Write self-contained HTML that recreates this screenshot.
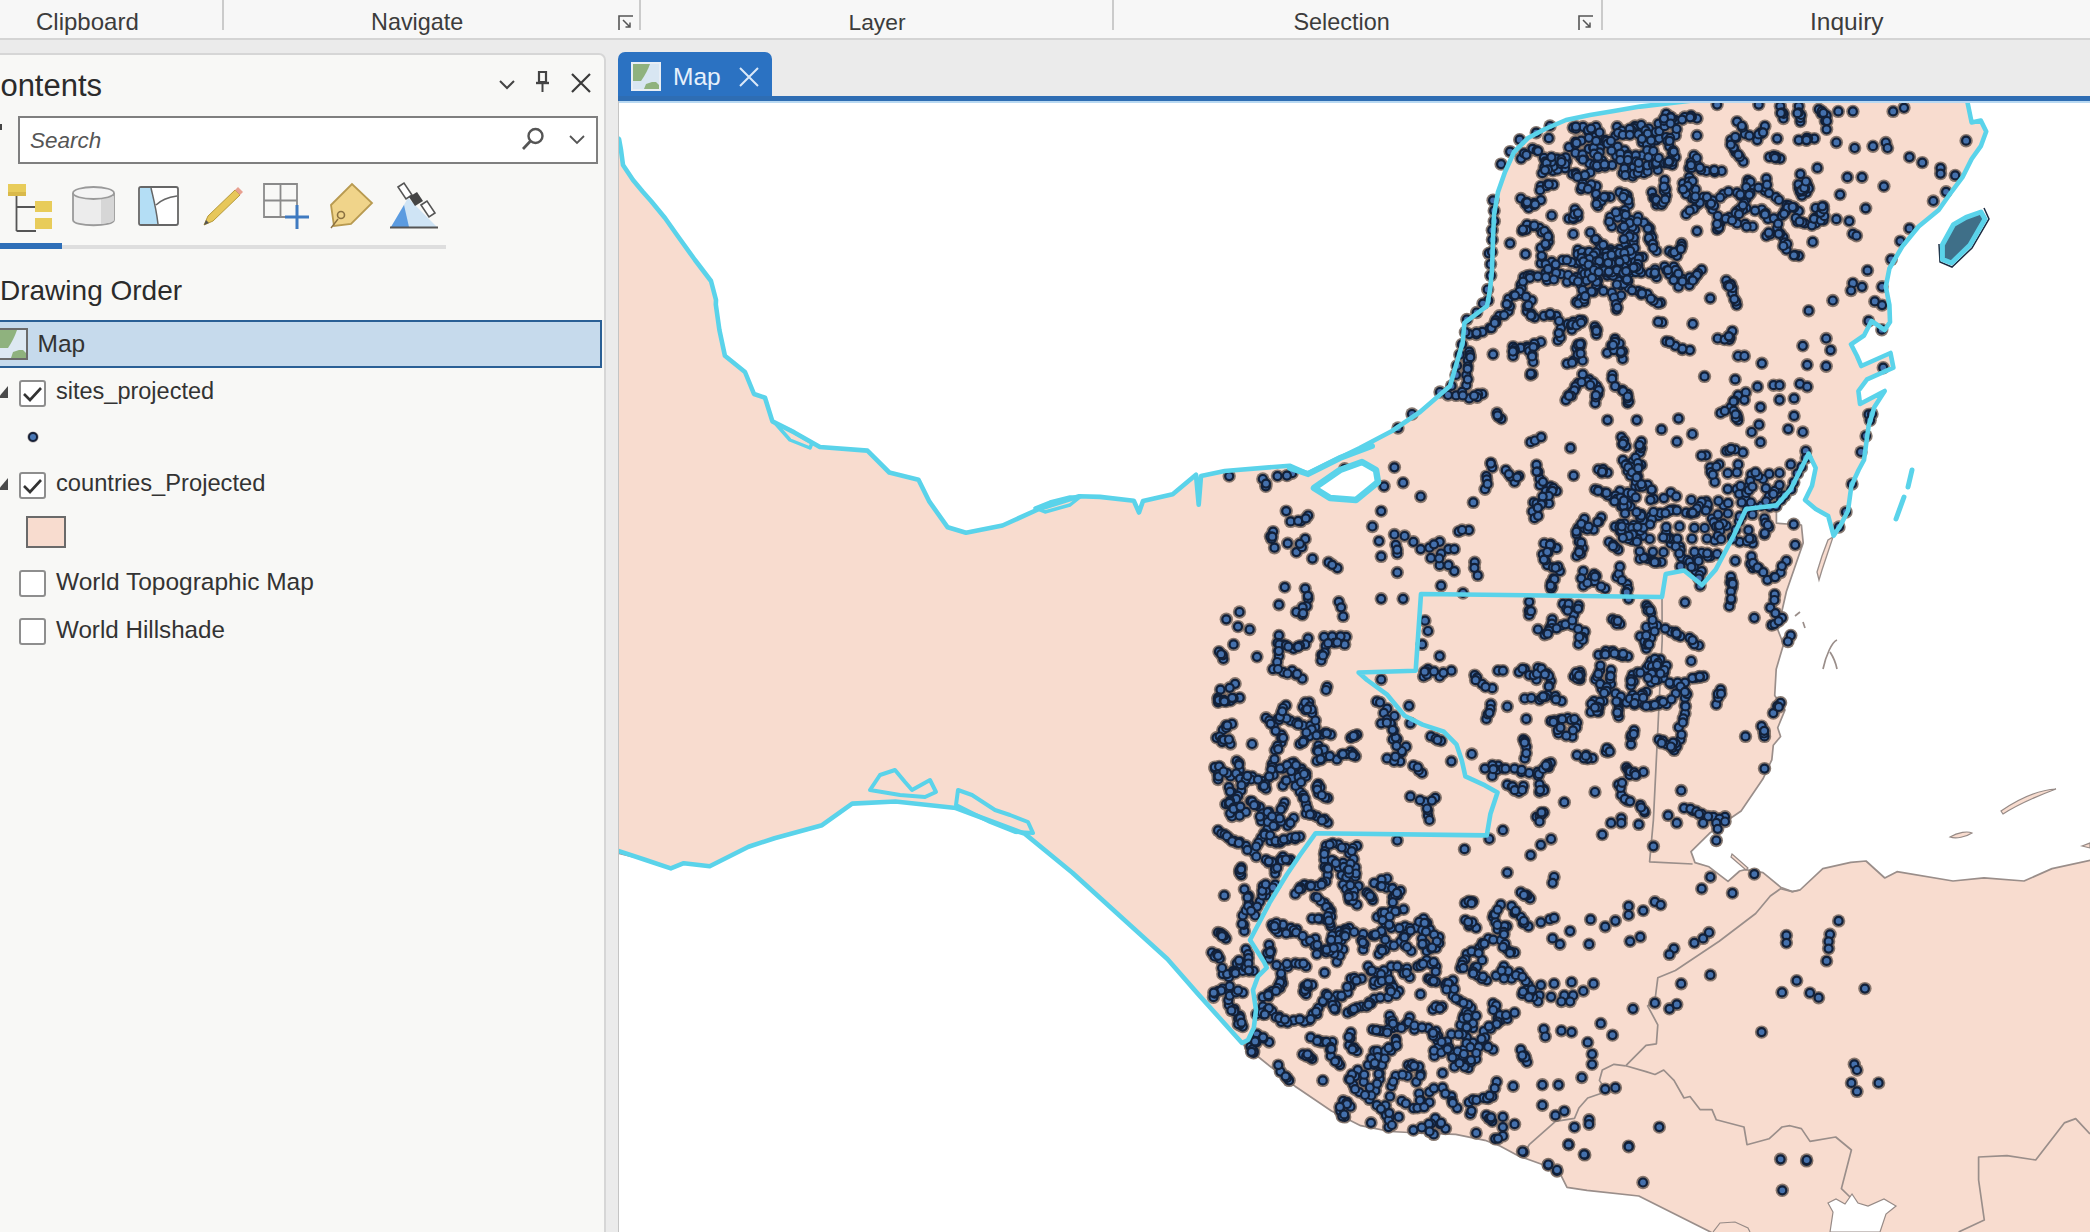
<!DOCTYPE html>
<html><head><meta charset="utf-8">
<style>
*{margin:0;padding:0;box-sizing:border-box}
html,body{width:2090px;height:1232px;overflow:hidden;background:#ebebeb;font-family:"Liberation Sans",sans-serif;color:#333}
#ribbon{position:absolute;left:0;top:0;width:2090px;height:40px;background:#f7f7f7;border-bottom:2px solid #d4d4d4}
.t{position:absolute;white-space:nowrap;line-height:1}
.rl{color:#3c3c3c}
.sep{position:absolute;top:0;width:2px;height:30px;background:#cbcbcb}
#panel{position:absolute;left:-10px;top:53px;width:616px;height:1200px;background:#f8f8f6;border:2px solid #d6d6d6;border-radius:0 7px 0 0}
#maparea{position:absolute;left:618px;top:101px;width:1472px;height:1131px;background:#fff;border-left:1px solid #c4c4c4}
.cb{position:absolute;left:19px;width:27px;height:27px;border:2px solid #8e8e8e;border-radius:3px;background:#fff}
</style></head><body>
<div id="ribbon">
  <div class="t rl" style="left:36px;top:10px;font-size:24px">Clipboard</div>
  <div class="sep" style="left:222px"></div>
  <div class="t rl" style="left:371px;top:10.5px;font-size:23.4px">Navigate</div>
  <svg style="position:absolute;left:618px;top:15px" width="17" height="16" viewBox="0 0 17 16"><path d="M1,15 V1 H15" fill="none" stroke="#555" stroke-width="1.6"/><path d="M5,5 L12,12 M7.5,12 H12 V7.5" fill="none" stroke="#555" stroke-width="1.5"/></svg>
  <div class="sep" style="left:639px"></div>
  <div class="t rl" style="left:848.5px;top:11px;font-size:22.8px">Layer</div>
  <div class="sep" style="left:1112px"></div>
  <div class="t rl" style="left:1293.5px;top:10.5px;font-size:23.4px">Selection</div>
  <svg style="position:absolute;left:1578px;top:15px" width="17" height="16" viewBox="0 0 17 16"><path d="M1,15 V1 H15" fill="none" stroke="#555" stroke-width="1.6"/><path d="M5,5 L12,12 M7.5,12 H12 V7.5" fill="none" stroke="#555" stroke-width="1.5"/></svg>
  <div class="sep" style="left:1601px"></div>
  <div class="t rl" style="left:1810px;top:10px;font-size:24.5px">Inquiry</div>
</div>
<div id="panel"></div>
<div class="t" style="left:-22px;top:70px;font-size:31px;color:#2b2b2b">Contents</div>
<!-- header icons -->
<svg style="position:absolute;left:496px;top:76px" width="22" height="16" viewBox="0 0 22 16"><path d="M4,5 L11,12 L18,5" fill="none" stroke="#444" stroke-width="2"/></svg>
<svg style="position:absolute;left:533px;top:70px" width="20" height="24" viewBox="0 0 20 24"><path d="M6,2 H13 V12 H6 Z" fill="none" stroke="#444" stroke-width="2.2"/><path d="M3,13 H16" stroke="#444" stroke-width="2.4"/><path d="M9.5,13 V22" stroke="#444" stroke-width="2"/></svg>
<svg style="position:absolute;left:569px;top:71px" width="24" height="24" viewBox="0 0 24 24"><path d="M3,3 L21,21 M21,3 L3,21" fill="none" stroke="#3a3a3a" stroke-width="2.2"/></svg>
<!-- search -->
<div style="position:absolute;left:18px;top:116px;width:580px;height:48px;border:2px solid #7f7f7f;background:#fff"></div>
<div class="t" style="left:30px;top:130px;font-size:22.5px;font-style:italic;color:#555">Search</div>
<svg style="position:absolute;left:520px;top:126px" width="28" height="28" viewBox="0 0 28 28"><circle cx="15.5" cy="10" r="7" fill="none" stroke="#555" stroke-width="2.4"/><path d="M10.5,15 L3,23" stroke="#555" stroke-width="2.8"/></svg>
<svg style="position:absolute;left:566px;top:130px" width="22" height="18" viewBox="0 0 22 18"><path d="M4,6 L11,13 L18,6" fill="none" stroke="#555" stroke-width="1.8"/></svg>
<div style="position:absolute;left:-4px;top:124px;width:6px;height:6px;background:#444"></div>
<!-- toolbar icons -->
<svg style="position:absolute;left:0px;top:178px" width="460" height="56" viewBox="0 178 460 56">
  <!-- tree icon -->
  <rect x="8" y="184" width="18" height="8" fill="#e8cc5a"/><rect x="8" y="192" width="18" height="4" fill="#d9b94a"/>
  <path d="M16.5,196 V231 M16.5,207 H36 M16.5,231 H36" fill="none" stroke="#555" stroke-width="1.8"/>
  <rect x="35" y="201" width="17" height="11" fill="#e8cc5a"/><rect x="35" y="218" width="17" height="11" fill="#e8cc5a"/>
  <!-- cylinder -->
  <path d="M73,193 V220 C73,227 114,227 114,220 V193" fill="#ececec" stroke="#9a9a9a" stroke-width="1.8"/>
  <path d="M101,199 V224 C108,223 114,222 114,220 V196 Z" fill="#d6d6d6"/>
  <ellipse cx="93.5" cy="193" rx="20.5" ry="6" fill="#f4f4f4" stroke="#9a9a9a" stroke-width="1.8"/>
  <!-- map square -->
  <rect x="139" y="187" width="39" height="38" rx="2" fill="#fff" stroke="#666" stroke-width="1.8"/>
  <path d="M140,188 H151 C153,197 156,207 158,224 H140 Z" fill="#b4def5"/>
  <path d="M151,188 C153,197 156,207 158,224 M156,205 C162,199 170,197 177,196" fill="none" stroke="#666" stroke-width="1.5"/>
  <!-- pencil -->
  <path d="M204,225 L208,216 L235,190 L240,195 L213,221 Z" fill="#e7c75a" stroke="#b59a3c" stroke-width="1"/>
  <path d="M235,190 L238,187 L243,192 L240,195 Z" fill="#e8a090"/>
  <path d="M204,225 L206,220 L209,223 Z" fill="#555"/>
  <!-- grid plus -->
  <path d="M264,184 H297 V217 H264 Z M264,200.5 H297 M280.5,184 V217" fill="none" stroke="#8a8a8a" stroke-width="1.8"/>
  <path d="M297,205 V229 M285,217 H309" fill="none" stroke="#3f7ac0" stroke-width="3"/>
  <!-- tag -->
  <path d="M331,205 L352,184 L372,203 L351,224 L334,226 Z" fill="#f0d48a" stroke="#b89a50" stroke-width="1.8"/>
  <circle cx="341" cy="215" r="3.5" fill="none" stroke="#8a7040" stroke-width="1.6"/>
  <path d="M338,219 L331,228" stroke="#8a7040" stroke-width="1.4"/>
  <!-- satellite -->
  <path d="M391,227 L408,198 L437,227 Z" fill="#cfe4f5"/>
  <path d="M391,227 L404,205 L409,227 Z" fill="#5b9be0"/>
  <path d="M390,227.5 H438" stroke="#555" stroke-width="1.8"/>
  <path d="M398,187 L404,183 L412,195 L406,199 Z" fill="#fff" stroke="#555" stroke-width="1.6"/>
  <path d="M409,197 L417,192 L423,201 L415,206 Z" fill="#444"/>
  <path d="M421,205 L427,201 L435,213 L429,217 Z" fill="#fff" stroke="#555" stroke-width="1.6"/>
</svg>
<div style="position:absolute;left:0;top:245px;width:446px;height:4px;background:#dedede"></div>
<div style="position:absolute;left:0;top:243px;width:62px;height:6px;background:#2e6fb8"></div>
<div class="t" style="left:0px;top:277px;font-size:28px;color:#2b2b2b">Drawing Order</div>
<!-- Map row -->
<div style="position:absolute;left:-4px;top:320px;width:606px;height:48px;background:#c6daec;border:2px solid #2a5f95"></div>
<svg style="position:absolute;left:-3px;top:328px" width="32" height="32" viewBox="0 0 32 32"><rect x="1" y="1" width="29" height="30" fill="#dde8f2" stroke="#6b6b6b" stroke-width="2"/><path d="M2,2 H20 C18,8 15,14 11,20 H2 Z" fill="#8fb27e"/><path d="M16,24 L22,22 L26,22 L29,25 V30 H14 Z" fill="#8fb27e"/></svg>
<div class="t" style="left:37.5px;top:331.5px;font-size:24.5px">Map</div>
<!-- sites -->
<svg style="position:absolute;left:0px;top:386px" width="9" height="12" viewBox="0 0 9 12"><path d="M8,0 V12 H-2 Z" fill="#4a4a4a"/></svg>
<div class="cb" style="top:380px"></div>
<svg style="position:absolute;left:19px;top:380px" width="27" height="27" viewBox="0 0 27 27"><path d="M5,14 L11,20 L22,8" fill="none" stroke="#333" stroke-width="2.6"/></svg>
<div class="t" style="left:56px;top:379.5px;font-size:23.5px">sites_projected</div>
<svg style="position:absolute;left:24px;top:428px" width="18" height="18" viewBox="0 0 18 18"><circle cx="9" cy="9" r="5.6" fill="#857670" fill-opacity="0.7"/><circle cx="9" cy="9" r="4" fill="#4a78b6" stroke="#15213a" stroke-width="2"/></svg>
<!-- countries -->
<svg style="position:absolute;left:0px;top:478px" width="9" height="12" viewBox="0 0 9 12"><path d="M8,0 V12 H-2 Z" fill="#4a4a4a"/></svg>
<div class="cb" style="top:472px"></div>
<svg style="position:absolute;left:19px;top:472px" width="27" height="27" viewBox="0 0 27 27"><path d="M5,14 L11,20 L22,8" fill="none" stroke="#333" stroke-width="2.6"/></svg>
<div class="t" style="left:56px;top:472px;font-size:23.7px">countries_Projected</div>
<div style="position:absolute;left:26px;top:516px;width:40px;height:32px;background:#f8dccf;border:2px solid #6a6a6a"></div>
<!-- topo -->
<div class="cb" style="top:570px"></div>
<div class="t" style="left:56px;top:570.3px;font-size:24.5px">World Topographic Map</div>
<div class="cb" style="top:618px"></div>
<div class="t" style="left:56px;top:618px;font-size:24.2px">World Hillshade</div>
<!-- tab -->
<div style="position:absolute;left:618px;top:52px;width:154px;height:46px;background:#2b72c2;border-radius:7px 7px 0 0"></div>
<div style="position:absolute;left:618px;top:96px;width:1472px;height:5px;background:#2e6db3"></div><div style="position:absolute;left:619px;top:101px;width:1471px;height:2px;background:#b9d9f2;z-index:5"></div>
<svg style="position:absolute;left:631px;top:62px" width="30" height="29" viewBox="0 0 30 29"><rect x="1" y="1" width="28" height="27" fill="#d8e6f2" stroke="#e8eef5" stroke-width="2"/><path d="M2,2 H19 C17,8 14,13 10,19 H2 Z" fill="#8fb27e"/><path d="M15,22 L21,20 L25,20 L28,23 V27 H13 Z" fill="#8fb27e"/></svg>
<div class="t" style="left:673px;top:65px;font-size:24.5px;color:#e6f0fb">Map</div>
<svg style="position:absolute;left:738px;top:66px" width="22" height="22" viewBox="0 0 22 22"><path d="M2,2 L20,20 M20,2 L2,20" fill="none" stroke="#dbe9f8" stroke-width="2"/></svg>
<div id="maparea"></div>
<svg id="map" width="1471" height="1131" viewBox="619 101 1471 1131" style="position:absolute;left:619px;top:101px">
<rect x="619" y="101" width="1471" height="1131" fill="#f8dccf"/>
<path d="M610.0,90.0 L612.0,135.0 L619.0,139.0 L621.0,150.0 L623.0,165.0 L633.0,180.0 L643.0,192.0 L651.0,201.0 L665.0,218.0 L677.0,235.0 L695.0,260.0 L711.0,281.0 L716.0,300.0 L715.8,304.5 L719.4,330.0 L724.9,355.7 L745.0,372.0 L754.0,394.0 L765.0,397.7 L772.4,421.4 L794.3,432.4 L819.9,447.0 L867.4,450.6 L889.3,472.5 L918.5,479.8 L929.4,501.7 L947.7,527.3 L966.0,532.8 L1002.5,525.5 L1039.0,509.0 L1079.2,496.3 L1100.0,496.9 L1133.8,500.8 L1139.0,512.5 L1143.0,501.0 L1172.7,494.3 L1196.0,474.8 L1198.7,504.7 L1201.0,476.0 L1224.7,471.0 L1289.6,465.7 L1307.8,473.5 L1335.0,460.0 L1359.7,448.0 L1392.0,431.0 L1420.0,412.0 L1450.0,386.0 L1462.7,342.6 L1464.4,322.8 L1487.0,306.0 L1490.0,290.0 L1492.0,270.0 L1493.0,240.0 L1494.0,215.0 L1498.0,192.0 L1505.0,172.0 L1514.0,152.0 L1528.0,138.0 L1545.0,129.0 L1566.0,120.0 L1590.0,115.0 L1614.0,111.0 L1640.0,106.6 L1697.0,100.0 L1697.0,90.0 Z" fill="#fff" stroke="#9a8e8a" stroke-width="1.7" stroke-linejoin="round"/>
<path d="M1966.0,90.0 L1971.6,122.4 L1980.8,120.6 L1986.2,131.5 L1980.8,146.2 L1971.6,159.0 L1962.5,177.2 L1951.5,191.8 L1938.7,210.0 L1918.6,226.5 L1902.2,246.6 L1889.4,268.5 L1885.8,286.8 L1889.4,305.0 L1890.0,322.0 L1884.7,330.0 L1871.5,321.0 L1864.0,335.5 L1851.0,344.3 L1857.0,356.0 L1861.3,366.0 L1890.5,353.0 L1893.4,367.7 L1867.0,379.4 L1858.4,391.0 L1860.0,404.0 L1884.7,391.0 L1874.4,407.0 L1868.6,426.0 L1864.0,460.0 L1858.6,470.0 L1851.4,485.7 L1848.0,510.7 L1840.7,525.0 L1833.6,535.7 L1828.2,516.0 L1815.7,509.0 L1805.0,500.0 L1812.0,485.7 L1815.7,467.9 L1808.6,453.6 L1790.7,489.3 L1776.4,505.4 L1776.4,523.2 L1801.4,525.0 L1803.2,542.9 L1796.6,562.0 L1786.4,591.5 L1777.7,629.5 L1783.5,644.4 L1776.2,669.2 L1774.7,695.5 L1785.0,710.0 L1777.7,727.7 L1780.6,736.5 L1773.3,745.2 L1771.8,759.8 L1763.0,778.8 L1741.1,811.0 L1728.0,820.0 L1709.5,833.3 L1691.0,851.6 L1695.0,862.6 L1709.0,866.8 L1728.0,881.4 L1739.7,871.0 L1745.5,869.7 L1763.0,872.6 L1780.6,887.2 L1792.3,891.6 L1800.0,890.0 L1822.8,868.6 L1850.7,862.4 L1866.0,861.0 L1884.8,878.0 L1897.0,871.7 L1953.0,881.0 L1984.0,877.9 L2024.0,881.0 L2052.0,868.6 L2095.0,859.3 L2100.0,859.3 L2100.0,90.0 Z" fill="#fff" stroke="#9a8e8a" stroke-width="1.7" stroke-linejoin="round"/>
<path d="M610.0,851.1 L645.0,859.8 L670.8,868.4 L683.8,863.2 L709.7,866.3 L748.5,846.8 L774.5,838.2 L822.0,825.2 L852.2,803.6 L895.4,801.5 L955.8,808.0 L1025.0,833.9 L1072.4,872.7 L1120.0,916.0 L1167.4,959.0 L1197.7,993.6 L1240.8,1041.1 L1240.8,1041.1 L1242.4,1043.8 L1258.5,1057.0 L1295.0,1086.2 L1331.5,1111.0 L1360.7,1125.7 L1390.0,1131.5 L1419.2,1133.0 L1455.7,1134.4 L1485.0,1140.3 L1500.0,1146.0 L1518.2,1155.8 L1558.4,1170.2 L1567.0,1187.4 L1587.0,1190.3 L1638.8,1196.0 L1673.2,1213.3 L1710.6,1232.0 L1720.0,1240.0 L1720.0,1245.0 L610.0,1245.0 Z" fill="#fff" stroke="#9a8e8a" stroke-width="1.7" stroke-linejoin="round"/>
<path d="M1662.0,597.0 L1662.2,640.0 L1653.4,820.0 L1649.6,861.8 L1692.6,864.0" fill="none" stroke="#9a8e8a" stroke-width="1.7" stroke-linejoin="round"/>
<path d="M1800.0,890.0 L1792.3,891.6 L1780.6,888.7 L1770.3,896.0 L1755.7,913.5 L1719.2,941.3 L1675.4,970.5 L1657.8,977.8 L1655.0,1000.0 L1647.6,1005.8 L1657.8,1024.8 L1656.4,1043.8 L1646.0,1045.3 L1628.6,1062.8 L1625.7,1065.8" fill="none" stroke="#9a8e8a" stroke-width="1.7" stroke-linejoin="round"/>
<path d="M1625.7,1065.8 L1614.0,1064.3 L1602.3,1070.0 L1599.4,1080.4 L1602.3,1084.8 L1600.8,1093.5 L1587.7,1098.0 L1578.9,1108.0 L1574.5,1118.4 L1555.5,1121.3 L1529.2,1144.7 L1523.5,1154.2" fill="none" stroke="#9a8e8a" stroke-width="1.7" stroke-linejoin="round"/>
<path d="M1625.7,1065.8 L1646.0,1071.6 L1655.0,1074.5 L1663.7,1070.0 L1674.0,1080.4 L1684.0,1098.0 L1690.0,1096.5 L1700.0,1109.6 L1712.0,1109.6 L1716.3,1119.8 L1744.0,1127.0 L1747.0,1144.7 L1769.0,1138.8 L1782.0,1127.0 L1790.0,1125.7 L1801.4,1128.6 L1810.0,1141.4 L1835.7,1137.0 L1851.4,1150.0 L1841.4,1188.6 L1850.0,1197.0" fill="none" stroke="#9a8e8a" stroke-width="1.7" stroke-linejoin="round"/>
<path d="M2090.0,1134.0 L2075.7,1118.6 L2064.3,1122.9 L2035.7,1160.0 L2007.0,1155.7 L1978.6,1157.0 L1978.6,1180.0 L1984.3,1220.0 L1958.6,1232.0" fill="none" stroke="#9a8e8a" stroke-width="1.7" stroke-linejoin="round"/>
<path d="M1830,1232 L1833,1212 L1828,1203 L1836,1199 L1845,1204 L1852,1194 L1858,1203 L1868,1206 L1884,1199 L1896,1206 L1886,1214 L1880,1232 Z" fill="#fff" stroke="#968a86" stroke-width="1.2"/>
<path d="M1713,1232 L1720,1223 L1735,1222 L1748,1228 L1750,1232" fill="#f8dccf" stroke="#968a86" stroke-width="1.2"/>
<path d="M2001,811 C2020,798 2040,790 2056,789 C2040,795 2020,803 2003,814 Z" fill="#f8dccf" stroke="#968a86" stroke-width="1.2"/>
<path d="M1950,837 C1958,832 1968,831 1972,833 C1966,837 1956,839 1950,837 Z" fill="#f8dccf" stroke="#968a86" stroke-width="1.2"/>
<path d="M2082,846 L2090,843 L2090,848 Z" fill="#f8dccf" stroke="#968a86" stroke-width="1.2"/>
<path d="M1795,616 L1800,612 M1805,628 L1803,622 M1837,640 C1832,642 1826,655 1823,669 M1830,652 C1834,658 1836,664 1837,669" fill="none" stroke="#9a8e8a" stroke-width="1.7"/>
<path d="M1833,537 L1828,552 L1822,570 L1819,580 L1817,572 L1822,556 L1828,540 Z" fill="#f8dccf" stroke="#9a8e8a" stroke-width="1.3"/>
<path d="M1732,854 L1748,868 L1746,870 L1731,857 Z" fill="#f8dccf" stroke="#968a86" stroke-width="1.2"/>
<path d="M1984,208 L1989,219 L1972,248 L1952,267 L1940,262 L1939,244" fill="none" stroke="#1a2a40" stroke-width="1.5"/>
<path d="M1955,238 L1968,230 L1960,252 Z" fill="#1e2f48"/>
</svg>
<svg width="1471" height="1131" viewBox="619 101 1471 1131" style="position:absolute;left:619px;top:101px"><g fill="#7a6a62" fill-opacity="0.9"><circle cx="1488.8" cy="253.4" r="6.7"/><circle cx="1732.3" cy="293.2" r="6.7"/><circle cx="1660.7" cy="302.7" r="6.7"/><circle cx="1710.3" cy="298.3" r="6.7"/><circle cx="1736.7" cy="304.8" r="6.7"/><circle cx="1488.2" cy="300.5" r="6.7"/><circle cx="1662.1" cy="322.4" r="6.7"/><circle cx="1692.8" cy="323.8" r="6.7"/><circle cx="1489.7" cy="328.2" r="6.7"/><circle cx="1482.4" cy="331.9" r="6.7"/><circle cx="1469.2" cy="334.1" r="6.7"/><circle cx="1469.2" cy="351.6" r="6.7"/><circle cx="1467.8" cy="360.4" r="6.7"/><circle cx="1666.5" cy="341.4" r="6.7"/><circle cx="1675.3" cy="345.8" r="6.7"/><circle cx="1689.9" cy="350.1" r="6.7"/><circle cx="1717.7" cy="338.5" r="6.7"/><circle cx="1729.3" cy="339.9" r="6.7"/><circle cx="1732.3" cy="331.1" r="6.7"/><circle cx="1530.6" cy="375.0" r="6.7"/><circle cx="1612.4" cy="375.0" r="6.7"/><circle cx="1589.1" cy="379.4" r="6.7"/><circle cx="1704.5" cy="376.4" r="6.7"/><circle cx="1735.2" cy="379.4" r="6.7"/><circle cx="1466.3" cy="375.0" r="6.7"/><circle cx="1738.1" cy="356.0" r="6.7"/><circle cx="1466.3" cy="385.2" r="6.7"/><circle cx="1456.1" cy="395.4" r="6.7"/><circle cx="1469.2" cy="398.4" r="6.7"/><circle cx="1482.4" cy="394.0" r="6.7"/><circle cx="1720.6" cy="413.0" r="6.7"/><circle cx="1730.8" cy="407.1" r="6.7"/><circle cx="1736.7" cy="414.4" r="6.7"/><circle cx="1738.1" cy="395.4" r="6.7"/><circle cx="1497.0" cy="413.0" r="6.7"/><circle cx="1501.4" cy="418.8" r="6.7"/><circle cx="1530.6" cy="442.2" r="6.7"/><circle cx="1706.0" cy="455.4" r="6.7"/><circle cx="1726.4" cy="451.0" r="6.7"/><circle cx="1735.2" cy="449.5" r="6.7"/><circle cx="1738.1" cy="420.3" r="6.7"/><circle cx="1736.0" cy="301.6" r="6.7"/><circle cx="1734.3" cy="299.1" r="6.7"/><circle cx="1476.4" cy="334.5" r="6.7"/><circle cx="1476.5" cy="332.8" r="6.7"/><circle cx="1470.0" cy="354.7" r="6.7"/><circle cx="1470.3" cy="357.2" r="6.7"/><circle cx="1467.7" cy="366.3" r="6.7"/><circle cx="1669.7" cy="341.9" r="6.7"/><circle cx="1669.8" cy="342.4" r="6.7"/><circle cx="1682.3" cy="349.5" r="6.7"/><circle cx="1682.4" cy="348.7" r="6.7"/><circle cx="1724.6" cy="339.6" r="6.7"/><circle cx="1730.4" cy="337.7" r="6.7"/><circle cx="1728.8" cy="336.3" r="6.7"/><circle cx="1728.9" cy="336.3" r="6.7"/><circle cx="1582.7" cy="374.3" r="6.7"/><circle cx="1532.3" cy="374.1" r="6.7"/><circle cx="1530.8" cy="373.6" r="6.7"/><circle cx="1612.2" cy="378.7" r="6.7"/><circle cx="1467.6" cy="368.8" r="6.7"/><circle cx="1467.8" cy="379.3" r="6.7"/><circle cx="1462.1" cy="391.9" r="6.7"/><circle cx="1462.8" cy="395.4" r="6.7"/><circle cx="1478.1" cy="394.2" r="6.7"/><circle cx="1477.2" cy="397.2" r="6.7"/><circle cx="1474.1" cy="395.7" r="6.7"/><circle cx="1724.8" cy="410.9" r="6.7"/><circle cx="1733.6" cy="410.6" r="6.7"/><circle cx="1737.8" cy="417.0" r="6.7"/><circle cx="1734.6" cy="400.6" r="6.7"/><circle cx="1733.5" cy="401.4" r="6.7"/><circle cx="1498.5" cy="416.8" r="6.7"/><circle cx="1497.5" cy="415.3" r="6.7"/><circle cx="1534.9" cy="440.5" r="6.7"/><circle cx="1731.1" cy="449.0" r="6.7"/><circle cx="1729.2" cy="450.7" r="6.7"/><circle cx="1731.1" cy="448.8" r="6.7"/><circle cx="1735.9" cy="418.1" r="6.7"/><circle cx="1735.6" cy="414.4" r="6.7"/><circle cx="1808.7" cy="310.7" r="6.7"/><circle cx="1868.6" cy="320.9" r="6.7"/><circle cx="1826.2" cy="338.5" r="6.7"/><circle cx="1830.6" cy="350.1" r="6.7"/><circle cx="1802.8" cy="345.8" r="6.7"/><circle cx="1807.2" cy="364.8" r="6.7"/><circle cx="1826.2" cy="366.2" r="6.7"/><circle cx="1744.4" cy="356.0" r="6.7"/><circle cx="1761.9" cy="363.3" r="6.7"/><circle cx="1757.5" cy="386.7" r="6.7"/><circle cx="1773.6" cy="385.2" r="6.7"/><circle cx="1779.5" cy="385.2" r="6.7"/><circle cx="1799.9" cy="383.8" r="6.7"/><circle cx="1807.2" cy="386.7" r="6.7"/><circle cx="1745.8" cy="392.5" r="6.7"/><circle cx="1744.4" cy="399.8" r="6.7"/><circle cx="1760.5" cy="407.1" r="6.7"/><circle cx="1779.5" cy="399.8" r="6.7"/><circle cx="1794.1" cy="398.4" r="6.7"/><circle cx="1794.1" cy="415.9" r="6.7"/><circle cx="1788.2" cy="429.1" r="6.7"/><circle cx="1802.8" cy="432.0" r="6.7"/><circle cx="1751.7" cy="432.0" r="6.7"/><circle cx="1759.0" cy="424.7" r="6.7"/><circle cx="1760.5" cy="442.2" r="6.7"/><circle cx="1742.9" cy="452.4" r="6.7"/><circle cx="1805.8" cy="451.0" r="6.7"/><circle cx="1883.2" cy="367.7" r="6.7"/><circle cx="1881.8" cy="329.7" r="6.7"/><circle cx="1868.6" cy="414.4" r="6.7"/><circle cx="1870.1" cy="420.3" r="6.7"/><circle cx="1229.2" cy="476.1" r="6.7"/><circle cx="1262.8" cy="479.0" r="6.7"/><circle cx="1265.8" cy="486.3" r="6.7"/><circle cx="1277.5" cy="476.1" r="6.7"/><circle cx="1292.1" cy="473.2" r="6.7"/><circle cx="1286.2" cy="511.1" r="6.7"/><circle cx="1290.6" cy="521.4" r="6.7"/><circle cx="1300.8" cy="521.4" r="6.7"/><circle cx="1308.1" cy="515.5" r="6.7"/><circle cx="1344.7" cy="468.8" r="6.7"/><circle cx="1354.9" cy="479.0" r="6.7"/><circle cx="1394.4" cy="467.3" r="6.7"/><circle cx="1403.1" cy="482.7" r="6.7"/><circle cx="1384.1" cy="486.3" r="6.7"/><circle cx="1420.7" cy="496.5" r="6.7"/><circle cx="1381.2" cy="511.1" r="6.7"/><circle cx="1473.3" cy="502.4" r="6.7"/><circle cx="1485.0" cy="489.2" r="6.7"/><circle cx="1486.4" cy="476.1" r="6.7"/><circle cx="1492.3" cy="467.3" r="6.7"/><circle cx="1490.8" cy="462.9" r="6.7"/><circle cx="1273.1" cy="531.6" r="6.7"/><circle cx="1271.6" cy="538.9" r="6.7"/><circle cx="1274.5" cy="547.7" r="6.7"/><circle cx="1287.7" cy="543.3" r="6.7"/><circle cx="1305.2" cy="538.9" r="6.7"/><circle cx="1296.4" cy="552.1" r="6.7"/><circle cx="1312.5" cy="558.6" r="6.7"/><circle cx="1328.6" cy="562.3" r="6.7"/><circle cx="1337.4" cy="568.1" r="6.7"/><circle cx="1372.4" cy="526.5" r="6.7"/><circle cx="1379.0" cy="541.1" r="6.7"/><circle cx="1381.2" cy="556.4" r="6.7"/><circle cx="1394.4" cy="534.5" r="6.7"/><circle cx="1404.6" cy="536.0" r="6.7"/><circle cx="1395.8" cy="544.8" r="6.7"/><circle cx="1397.3" cy="553.5" r="6.7"/><circle cx="1413.4" cy="541.8" r="6.7"/><circle cx="1420.7" cy="549.1" r="6.7"/><circle cx="1429.4" cy="547.7" r="6.7"/><circle cx="1430.9" cy="557.9" r="6.7"/><circle cx="1439.7" cy="541.8" r="6.7"/><circle cx="1441.1" cy="553.5" r="6.7"/><circle cx="1448.4" cy="549.1" r="6.7"/><circle cx="1454.3" cy="549.1" r="6.7"/><circle cx="1439.7" cy="565.2" r="6.7"/><circle cx="1448.4" cy="565.2" r="6.7"/><circle cx="1454.3" cy="571.1" r="6.7"/><circle cx="1458.7" cy="531.6" r="6.7"/><circle cx="1468.9" cy="530.1" r="6.7"/><circle cx="1474.7" cy="562.3" r="6.7"/><circle cx="1477.7" cy="575.4" r="6.7"/><circle cx="1397.3" cy="572.5" r="6.7"/><circle cx="1441.1" cy="585.7" r="6.7"/><circle cx="1463.0" cy="593.0" r="6.7"/><circle cx="1284.8" cy="587.1" r="6.7"/><circle cx="1305.2" cy="588.6" r="6.7"/><circle cx="1308.1" cy="598.8" r="6.7"/><circle cx="1306.7" cy="606.1" r="6.7"/><circle cx="1296.4" cy="612.0" r="6.7"/><circle cx="1302.3" cy="614.9" r="6.7"/><circle cx="1278.9" cy="604.7" r="6.7"/><circle cx="1338.8" cy="601.8" r="6.7"/><circle cx="1343.2" cy="616.4" r="6.7"/><circle cx="1381.2" cy="598.8" r="6.7"/><circle cx="1403.1" cy="598.8" r="6.7"/><circle cx="1239.5" cy="612.0" r="6.7"/><circle cx="1226.3" cy="619.3" r="6.7"/><circle cx="1238.0" cy="626.6" r="6.7"/><circle cx="1249.7" cy="629.5" r="6.7"/><circle cx="1278.9" cy="635.4" r="6.7"/><circle cx="1308.1" cy="638.3" r="6.7"/><circle cx="1324.2" cy="636.8" r="6.7"/><circle cx="1337.4" cy="638.3" r="6.7"/><circle cx="1346.1" cy="636.8" r="6.7"/><circle cx="1425.0" cy="620.7" r="6.7"/><circle cx="1428.0" cy="631.0" r="6.7"/><circle cx="1266.0" cy="483.6" r="6.7"/><circle cx="1286.9" cy="475.6" r="6.7"/><circle cx="1298.2" cy="520.9" r="6.7"/><circle cx="1305.8" cy="518.4" r="6.7"/><circle cx="1486.7" cy="479.3" r="6.7"/><circle cx="1487.5" cy="483.9" r="6.7"/><circle cx="1490.9" cy="463.6" r="6.7"/><circle cx="1270.4" cy="536.4" r="6.7"/><circle cx="1272.3" cy="536.7" r="6.7"/><circle cx="1301.9" cy="547.2" r="6.7"/><circle cx="1299.9" cy="543.8" r="6.7"/><circle cx="1332.2" cy="564.8" r="6.7"/><circle cx="1397.2" cy="549.7" r="6.7"/><circle cx="1434.0" cy="544.3" r="6.7"/><circle cx="1439.2" cy="558.3" r="6.7"/><circle cx="1462.1" cy="530.0" r="6.7"/><circle cx="1474.4" cy="567.8" r="6.7"/><circle cx="1307.9" cy="595.8" r="6.7"/><circle cx="1302.7" cy="607.3" r="6.7"/><circle cx="1303.1" cy="613.2" r="6.7"/><circle cx="1341.1" cy="607.3" r="6.7"/><circle cx="1332.2" cy="636.4" r="6.7"/><circle cx="1340.6" cy="636.3" r="6.7"/><circle cx="1505.8" cy="470.2" r="6.7"/><circle cx="1519.0" cy="476.1" r="6.7"/><circle cx="1514.6" cy="481.9" r="6.7"/><circle cx="1710.4" cy="467.3" r="6.7"/><circle cx="1719.2" cy="464.4" r="6.7"/><circle cx="1738.2" cy="464.4" r="6.7"/><circle cx="1714.8" cy="481.9" r="6.7"/><circle cx="1790.8" cy="464.4" r="6.7"/><circle cx="1751.4" cy="474.6" r="6.7"/><circle cx="1763.0" cy="479.0" r="6.7"/><circle cx="1736.7" cy="489.2" r="6.7"/><circle cx="1748.4" cy="486.3" r="6.7"/><circle cx="1533.6" cy="502.4" r="6.7"/><circle cx="1723.6" cy="505.3" r="6.7"/><circle cx="1745.5" cy="498.0" r="6.7"/><circle cx="1768.9" cy="496.5" r="6.7"/><circle cx="1777.7" cy="489.2" r="6.7"/><circle cx="1707.5" cy="508.2" r="6.7"/><circle cx="1711.9" cy="518.5" r="6.7"/><circle cx="1716.3" cy="524.3" r="6.7"/><circle cx="1719.2" cy="531.6" r="6.7"/><circle cx="1726.5" cy="525.8" r="6.7"/><circle cx="1714.8" cy="540.4" r="6.7"/><circle cx="1764.5" cy="518.5" r="6.7"/><circle cx="1768.9" cy="527.2" r="6.7"/><circle cx="1764.5" cy="534.5" r="6.7"/><circle cx="1748.4" cy="530.1" r="6.7"/><circle cx="1793.7" cy="524.3" r="6.7"/><circle cx="1795.2" cy="544.8" r="6.7"/><circle cx="1739.7" cy="541.8" r="6.7"/><circle cx="1752.8" cy="543.3" r="6.7"/><circle cx="1559.9" cy="571.1" r="6.7"/><circle cx="1710.4" cy="556.4" r="6.7"/><circle cx="1735.3" cy="560.8" r="6.7"/><circle cx="1751.4" cy="556.4" r="6.7"/><circle cx="1752.8" cy="568.1" r="6.7"/><circle cx="1758.7" cy="568.1" r="6.7"/><circle cx="1786.4" cy="560.8" r="6.7"/><circle cx="1780.6" cy="572.5" r="6.7"/><circle cx="1730.9" cy="576.9" r="6.7"/><circle cx="1767.4" cy="579.8" r="6.7"/><circle cx="1695.8" cy="571.1" r="6.7"/><circle cx="1701.7" cy="571.1" r="6.7"/><circle cx="1583.3" cy="571.1" r="6.7"/><circle cx="1592.1" cy="576.9" r="6.7"/><circle cx="1616.9" cy="576.9" r="6.7"/><circle cx="1551.1" cy="582.8" r="6.7"/><circle cx="1551.1" cy="588.6" r="6.7"/><circle cx="1583.3" cy="585.7" r="6.7"/><circle cx="1593.5" cy="581.3" r="6.7"/><circle cx="1605.2" cy="588.6" r="6.7"/><circle cx="1627.1" cy="584.2" r="6.7"/><circle cx="1732.4" cy="587.1" r="6.7"/><circle cx="1730.9" cy="591.5" r="6.7"/><circle cx="1774.7" cy="594.4" r="6.7"/><circle cx="1729.4" cy="606.1" r="6.7"/><circle cx="1770.3" cy="607.6" r="6.7"/><circle cx="1529.2" cy="601.8" r="6.7"/><circle cx="1628.6" cy="598.8" r="6.7"/><circle cx="1700.2" cy="585.7" r="6.7"/><circle cx="1529.2" cy="614.9" r="6.7"/><circle cx="1538.0" cy="629.5" r="6.7"/><circle cx="1754.3" cy="617.8" r="6.7"/><circle cx="1771.8" cy="625.1" r="6.7"/><circle cx="1782.0" cy="617.8" r="6.7"/><circle cx="1790.8" cy="635.4" r="6.7"/><circle cx="1510.7" cy="476.6" r="6.7"/><circle cx="1517.1" cy="477.3" r="6.7"/><circle cx="1508.9" cy="474.1" r="6.7"/><circle cx="1712.4" cy="474.5" r="6.7"/><circle cx="1710.7" cy="472.1" r="6.7"/><circle cx="1716.4" cy="466.6" r="6.7"/><circle cx="1712.8" cy="474.7" r="6.7"/><circle cx="1750.1" cy="480.8" r="6.7"/><circle cx="1758.2" cy="476.2" r="6.7"/><circle cx="1739.2" cy="493.8" r="6.7"/><circle cx="1746.2" cy="493.1" r="6.7"/><circle cx="1532.5" cy="511.5" r="6.7"/><circle cx="1534.5" cy="518.2" r="6.7"/><circle cx="1706.3" cy="501.4" r="6.7"/><circle cx="1748.8" cy="490.2" r="6.7"/><circle cx="1773.0" cy="493.4" r="6.7"/><circle cx="1774.8" cy="490.8" r="6.7"/><circle cx="1773.3" cy="494.0" r="6.7"/><circle cx="1705.2" cy="510.1" r="6.7"/><circle cx="1707.8" cy="504.3" r="6.7"/><circle cx="1714.7" cy="524.0" r="6.7"/><circle cx="1723.0" cy="523.3" r="6.7"/><circle cx="1713.7" cy="522.2" r="6.7"/><circle cx="1716.0" cy="526.6" r="6.7"/><circle cx="1718.5" cy="526.8" r="6.7"/><circle cx="1720.3" cy="530.5" r="6.7"/><circle cx="1717.8" cy="535.8" r="6.7"/><circle cx="1765.4" cy="522.7" r="6.7"/><circle cx="1767.8" cy="525.0" r="6.7"/><circle cx="1764.8" cy="533.1" r="6.7"/><circle cx="1751.8" cy="538.8" r="6.7"/><circle cx="1747.0" cy="541.4" r="6.7"/><circle cx="1749.4" cy="538.6" r="6.7"/><circle cx="1553.5" cy="578.4" r="6.7"/><circle cx="1708.6" cy="554.3" r="6.7"/><circle cx="1707.8" cy="556.6" r="6.7"/><circle cx="1750.5" cy="563.8" r="6.7"/><circle cx="1755.5" cy="566.9" r="6.7"/><circle cx="1753.1" cy="562.9" r="6.7"/><circle cx="1757.6" cy="567.4" r="6.7"/><circle cx="1781.9" cy="566.1" r="6.7"/><circle cx="1774.2" cy="577.0" r="6.7"/><circle cx="1775.1" cy="577.1" r="6.7"/><circle cx="1730.4" cy="582.4" r="6.7"/><circle cx="1763.2" cy="572.2" r="6.7"/><circle cx="1698.7" cy="577.6" r="6.7"/><circle cx="1699.4" cy="575.0" r="6.7"/><circle cx="1581.3" cy="578.3" r="6.7"/><circle cx="1594.0" cy="574.2" r="6.7"/><circle cx="1596.2" cy="575.9" r="6.7"/><circle cx="1594.6" cy="581.2" r="6.7"/><circle cx="1618.7" cy="574.0" r="6.7"/><circle cx="1621.9" cy="580.2" r="6.7"/><circle cx="1554.4" cy="579.2" r="6.7"/><circle cx="1552.1" cy="586.9" r="6.7"/><circle cx="1550.6" cy="585.7" r="6.7"/><circle cx="1587.4" cy="582.9" r="6.7"/><circle cx="1595.0" cy="576.7" r="6.7"/><circle cx="1601.1" cy="586.5" r="6.7"/><circle cx="1628.0" cy="588.8" r="6.7"/><circle cx="1732.2" cy="582.1" r="6.7"/><circle cx="1731.0" cy="600.1" r="6.7"/><circle cx="1732.7" cy="583.7" r="6.7"/><circle cx="1774.4" cy="600.0" r="6.7"/><circle cx="1731.1" cy="598.7" r="6.7"/><circle cx="1775.4" cy="613.1" r="6.7"/><circle cx="1528.9" cy="610.7" r="6.7"/><circle cx="1626.2" cy="591.9" r="6.7"/><circle cx="1626.7" cy="592.4" r="6.7"/><circle cx="1698.8" cy="578.5" r="6.7"/><circle cx="1531.0" cy="611.2" r="6.7"/><circle cx="1774.4" cy="624.1" r="6.7"/><circle cx="1778.6" cy="621.1" r="6.7"/><circle cx="1233.6" cy="644.4" r="6.7"/><circle cx="1219.0" cy="651.7" r="6.7"/><circle cx="1223.4" cy="659.0" r="6.7"/><circle cx="1257.0" cy="656.8" r="6.7"/><circle cx="1277.5" cy="642.9" r="6.7"/><circle cx="1283.3" cy="644.4" r="6.7"/><circle cx="1293.5" cy="648.8" r="6.7"/><circle cx="1305.2" cy="644.4" r="6.7"/><circle cx="1325.7" cy="645.8" r="6.7"/><circle cx="1334.4" cy="642.9" r="6.7"/><circle cx="1344.7" cy="644.4" r="6.7"/><circle cx="1278.9" cy="656.1" r="6.7"/><circle cx="1273.1" cy="669.2" r="6.7"/><circle cx="1283.3" cy="672.1" r="6.7"/><circle cx="1292.1" cy="670.7" r="6.7"/><circle cx="1302.3" cy="678.7" r="6.7"/><circle cx="1321.3" cy="660.5" r="6.7"/><circle cx="1327.1" cy="686.8" r="6.7"/><circle cx="1235.1" cy="683.8" r="6.7"/><circle cx="1220.5" cy="689.7" r="6.7"/><circle cx="1422.1" cy="644.4" r="6.7"/><circle cx="1439.7" cy="656.1" r="6.7"/><circle cx="1428.0" cy="669.2" r="6.7"/><circle cx="1423.6" cy="676.5" r="6.7"/><circle cx="1439.7" cy="676.5" r="6.7"/><circle cx="1451.4" cy="670.7" r="6.7"/><circle cx="1474.7" cy="675.1" r="6.7"/><circle cx="1482.0" cy="683.8" r="6.7"/><circle cx="1492.3" cy="688.2" r="6.7"/><circle cx="1490.8" cy="704.3" r="6.7"/><circle cx="1486.4" cy="718.9" r="6.7"/><circle cx="1498.1" cy="670.7" r="6.7"/><circle cx="1381.2" cy="679.5" r="6.7"/><circle cx="1376.8" cy="701.4" r="6.7"/><circle cx="1387.1" cy="708.7" r="6.7"/><circle cx="1394.4" cy="716.0" r="6.7"/><circle cx="1381.2" cy="723.3" r="6.7"/><circle cx="1391.4" cy="724.8" r="6.7"/><circle cx="1409.0" cy="705.8" r="6.7"/><circle cx="1410.4" cy="723.3" r="6.7"/><circle cx="1397.3" cy="739.4" r="6.7"/><circle cx="1392.9" cy="739.4" r="6.7"/><circle cx="1406.0" cy="746.7" r="6.7"/><circle cx="1401.7" cy="752.5" r="6.7"/><circle cx="1400.2" cy="761.3" r="6.7"/><circle cx="1387.1" cy="758.4" r="6.7"/><circle cx="1413.4" cy="765.7" r="6.7"/><circle cx="1422.1" cy="773.0" r="6.7"/><circle cx="1430.9" cy="736.4" r="6.7"/><circle cx="1441.1" cy="740.8" r="6.7"/><circle cx="1471.8" cy="754.0" r="6.7"/><circle cx="1451.4" cy="761.3" r="6.7"/><circle cx="1485.0" cy="768.6" r="6.7"/><circle cx="1492.3" cy="775.9" r="6.7"/><circle cx="1498.1" cy="765.7" r="6.7"/><circle cx="1410.4" cy="796.4" r="6.7"/><circle cx="1425.0" cy="802.2" r="6.7"/><circle cx="1435.3" cy="797.8" r="6.7"/><circle cx="1428.0" cy="815.4" r="6.7"/><circle cx="1222.8" cy="655.3" r="6.7"/><circle cx="1221.1" cy="654.2" r="6.7"/><circle cx="1278.3" cy="650.8" r="6.7"/><circle cx="1279.3" cy="644.4" r="6.7"/><circle cx="1278.8" cy="651.0" r="6.7"/><circle cx="1285.9" cy="645.1" r="6.7"/><circle cx="1300.0" cy="645.6" r="6.7"/><circle cx="1288.3" cy="646.7" r="6.7"/><circle cx="1297.3" cy="646.9" r="6.7"/><circle cx="1298.2" cy="646.9" r="6.7"/><circle cx="1324.7" cy="652.3" r="6.7"/><circle cx="1328.1" cy="643.2" r="6.7"/><circle cx="1337.3" cy="642.5" r="6.7"/><circle cx="1277.2" cy="662.0" r="6.7"/><circle cx="1278.0" cy="669.0" r="6.7"/><circle cx="1287.5" cy="673.5" r="6.7"/><circle cx="1296.3" cy="674.7" r="6.7"/><circle cx="1297.1" cy="673.9" r="6.7"/><circle cx="1321.5" cy="654.9" r="6.7"/><circle cx="1323.0" cy="655.4" r="6.7"/><circle cx="1229.7" cy="687.8" r="6.7"/><circle cx="1426.6" cy="671.3" r="6.7"/><circle cx="1426.9" cy="674.7" r="6.7"/><circle cx="1424.6" cy="671.7" r="6.7"/><circle cx="1434.0" cy="671.4" r="6.7"/><circle cx="1443.4" cy="672.8" r="6.7"/><circle cx="1477.0" cy="677.7" r="6.7"/><circle cx="1475.6" cy="680.2" r="6.7"/><circle cx="1485.5" cy="686.8" r="6.7"/><circle cx="1487.7" cy="714.3" r="6.7"/><circle cx="1490.5" cy="709.0" r="6.7"/><circle cx="1489.4" cy="712.8" r="6.7"/><circle cx="1380.0" cy="702.5" r="6.7"/><circle cx="1383.9" cy="712.9" r="6.7"/><circle cx="1390.6" cy="723.2" r="6.7"/><circle cx="1387.1" cy="719.3" r="6.7"/><circle cx="1386.8" cy="722.7" r="6.7"/><circle cx="1395.7" cy="737.6" r="6.7"/><circle cx="1393.8" cy="730.8" r="6.7"/><circle cx="1392.6" cy="729.8" r="6.7"/><circle cx="1401.9" cy="751.0" r="6.7"/><circle cx="1396.5" cy="745.8" r="6.7"/><circle cx="1394.1" cy="761.2" r="6.7"/><circle cx="1395.4" cy="756.7" r="6.7"/><circle cx="1418.8" cy="770.5" r="6.7"/><circle cx="1417.7" cy="767.3" r="6.7"/><circle cx="1435.6" cy="738.5" r="6.7"/><circle cx="1437.5" cy="740.0" r="6.7"/><circle cx="1492.4" cy="765.2" r="6.7"/><circle cx="1497.1" cy="770.0" r="6.7"/><circle cx="1493.3" cy="769.2" r="6.7"/><circle cx="1420.0" cy="800.2" r="6.7"/><circle cx="1427.9" cy="810.4" r="6.7"/><circle cx="1431.9" cy="800.6" r="6.7"/><circle cx="1427.1" cy="808.5" r="6.7"/><circle cx="1787.9" cy="641.5" r="6.7"/><circle cx="1502.9" cy="670.7" r="6.7"/><circle cx="1519.0" cy="672.1" r="6.7"/><circle cx="1524.8" cy="669.2" r="6.7"/><circle cx="1538.0" cy="667.8" r="6.7"/><circle cx="1536.5" cy="679.5" r="6.7"/><circle cx="1720.7" cy="689.7" r="6.7"/><circle cx="1716.3" cy="704.3" r="6.7"/><circle cx="1524.8" cy="698.5" r="6.7"/><circle cx="1539.5" cy="699.9" r="6.7"/><circle cx="1507.3" cy="706.5" r="6.7"/><circle cx="1526.3" cy="718.9" r="6.7"/><circle cx="1780.6" cy="702.8" r="6.7"/><circle cx="1773.3" cy="713.1" r="6.7"/><circle cx="1761.6" cy="726.2" r="6.7"/><circle cx="1745.5" cy="736.4" r="6.7"/><circle cx="1764.5" cy="736.4" r="6.7"/><circle cx="1764.5" cy="768.6" r="6.7"/><circle cx="1523.4" cy="739.4" r="6.7"/><circle cx="1526.3" cy="746.7" r="6.7"/><circle cx="1524.8" cy="758.4" r="6.7"/><circle cx="1529.2" cy="773.0" r="6.7"/><circle cx="1514.6" cy="768.6" r="6.7"/><circle cx="1502.9" cy="768.6" r="6.7"/><circle cx="1507.3" cy="784.7" r="6.7"/><circle cx="1519.0" cy="792.0" r="6.7"/><circle cx="1523.4" cy="786.1" r="6.7"/><circle cx="1538.0" cy="775.9" r="6.7"/><circle cx="1539.5" cy="792.0" r="6.7"/><circle cx="1543.8" cy="789.1" r="6.7"/><circle cx="1618.4" cy="784.7" r="6.7"/><circle cx="1621.3" cy="794.9" r="6.7"/><circle cx="1627.1" cy="800.7" r="6.7"/><circle cx="1640.3" cy="805.1" r="6.7"/><circle cx="1644.7" cy="812.4" r="6.7"/><circle cx="1595.0" cy="792.0" r="6.7"/><circle cx="1564.3" cy="802.2" r="6.7"/><circle cx="1543.8" cy="812.4" r="6.7"/><circle cx="1536.5" cy="816.8" r="6.7"/><circle cx="1681.2" cy="790.5" r="6.7"/><circle cx="1668.1" cy="815.4" r="6.7"/><circle cx="1684.1" cy="808.1" r="6.7"/><circle cx="1692.9" cy="811.0" r="6.7"/><circle cx="1701.7" cy="813.9" r="6.7"/><circle cx="1713.4" cy="816.8" r="6.7"/><circle cx="1725.0" cy="816.8" r="6.7"/><circle cx="1621.3" cy="818.3" r="6.7"/><circle cx="1522.5" cy="668.8" r="6.7"/><circle cx="1529.3" cy="675.0" r="6.7"/><circle cx="1533.7" cy="675.3" r="6.7"/><circle cx="1537.0" cy="673.7" r="6.7"/><circle cx="1718.2" cy="697.7" r="6.7"/><circle cx="1717.9" cy="693.9" r="6.7"/><circle cx="1721.0" cy="693.7" r="6.7"/><circle cx="1531.3" cy="698.0" r="6.7"/><circle cx="1777.2" cy="706.2" r="6.7"/><circle cx="1778.8" cy="706.9" r="6.7"/><circle cx="1764.0" cy="731.7" r="6.7"/><circle cx="1764.1" cy="733.5" r="6.7"/><circle cx="1764.2" cy="730.8" r="6.7"/><circle cx="1524.9" cy="740.8" r="6.7"/><circle cx="1524.6" cy="742.6" r="6.7"/><circle cx="1526.3" cy="753.1" r="6.7"/><circle cx="1537.6" cy="771.9" r="6.7"/><circle cx="1521.4" cy="772.2" r="6.7"/><circle cx="1521.6" cy="769.9" r="6.7"/><circle cx="1505.5" cy="768.7" r="6.7"/><circle cx="1511.8" cy="786.7" r="6.7"/><circle cx="1513.7" cy="788.0" r="6.7"/><circle cx="1512.5" cy="786.3" r="6.7"/><circle cx="1514.7" cy="790.2" r="6.7"/><circle cx="1522.3" cy="790.0" r="6.7"/><circle cx="1538.9" cy="774.2" r="6.7"/><circle cx="1543.9" cy="790.4" r="6.7"/><circle cx="1539.5" cy="784.3" r="6.7"/><circle cx="1540.1" cy="790.0" r="6.7"/><circle cx="1620.7" cy="787.9" r="6.7"/><circle cx="1622.1" cy="782.8" r="6.7"/><circle cx="1624.8" cy="798.9" r="6.7"/><circle cx="1630.0" cy="801.3" r="6.7"/><circle cx="1644.2" cy="810.8" r="6.7"/><circle cx="1641.1" cy="807.5" r="6.7"/><circle cx="1539.6" cy="816.3" r="6.7"/><circle cx="1541.8" cy="814.6" r="6.7"/><circle cx="1541.5" cy="812.4" r="6.7"/><circle cx="1690.4" cy="808.8" r="6.7"/><circle cx="1696.3" cy="811.3" r="6.7"/><circle cx="1699.1" cy="814.0" r="6.7"/><circle cx="1708.1" cy="816.5" r="6.7"/><circle cx="1719.5" cy="818.7" r="6.7"/><circle cx="1397.3" cy="840.5" r="6.7"/><circle cx="1464.5" cy="849.2" r="6.7"/><circle cx="1489.3" cy="839.0" r="6.7"/><circle cx="1429.4" cy="820.0" r="6.7"/><circle cx="1387.1" cy="878.5" r="6.7"/><circle cx="1381.6" cy="879.6" r="6.7"/><circle cx="1539.5" cy="821.5" r="6.7"/><circle cx="1611.1" cy="822.9" r="6.7"/><circle cx="1621.3" cy="822.9" r="6.7"/><circle cx="1638.8" cy="824.4" r="6.7"/><circle cx="1602.3" cy="834.6" r="6.7"/><circle cx="1551.1" cy="839.0" r="6.7"/><circle cx="1540.9" cy="844.8" r="6.7"/><circle cx="1530.7" cy="855.1" r="6.7"/><circle cx="1502.9" cy="830.2" r="6.7"/><circle cx="1653.4" cy="846.3" r="6.7"/><circle cx="1676.8" cy="822.9" r="6.7"/><circle cx="1703.1" cy="822.9" r="6.7"/><circle cx="1716.3" cy="822.9" r="6.7"/><circle cx="1725.0" cy="821.5" r="6.7"/><circle cx="1717.7" cy="828.8" r="6.7"/><circle cx="1716.3" cy="840.5" r="6.7"/><circle cx="1507.3" cy="872.6" r="6.7"/><circle cx="1554.1" cy="877.0" r="6.7"/><circle cx="1552.6" cy="882.8" r="6.7"/><circle cx="1710.4" cy="877.0" r="6.7"/><circle cx="1701.7" cy="888.7" r="6.7"/><circle cx="1732.4" cy="893.1" r="6.7"/><circle cx="1754.3" cy="874.1" r="6.7"/><circle cx="1540.9" cy="922.3" r="6.7"/><circle cx="1549.7" cy="919.4" r="6.7"/><circle cx="1554.1" cy="917.9" r="6.7"/><circle cx="1570.1" cy="931.1" r="6.7"/><circle cx="1552.6" cy="938.4" r="6.7"/><circle cx="1559.9" cy="944.2" r="6.7"/><circle cx="1590.6" cy="919.4" r="6.7"/><circle cx="1605.2" cy="926.7" r="6.7"/><circle cx="1615.4" cy="920.8" r="6.7"/><circle cx="1628.6" cy="906.2" r="6.7"/><circle cx="1628.6" cy="915.0" r="6.7"/><circle cx="1643.2" cy="910.6" r="6.7"/><circle cx="1654.9" cy="901.8" r="6.7"/><circle cx="1660.7" cy="904.8" r="6.7"/><circle cx="1589.1" cy="944.2" r="6.7"/><circle cx="1630.1" cy="941.3" r="6.7"/><circle cx="1640.3" cy="936.9" r="6.7"/><circle cx="1673.9" cy="948.6" r="6.7"/><circle cx="1669.5" cy="954.4" r="6.7"/><circle cx="1694.4" cy="942.8" r="6.7"/><circle cx="1703.1" cy="938.4" r="6.7"/><circle cx="1709.0" cy="932.5" r="6.7"/><circle cx="1786.4" cy="935.4" r="6.7"/><circle cx="1786.4" cy="942.8" r="6.7"/><circle cx="1540.9" cy="985.1" r="6.7"/><circle cx="1554.1" cy="983.7" r="6.7"/><circle cx="1571.6" cy="982.2" r="6.7"/><circle cx="1593.5" cy="983.7" r="6.7"/><circle cx="1583.3" cy="991.0" r="6.7"/><circle cx="1539.5" cy="995.4" r="6.7"/><circle cx="1551.1" cy="996.8" r="6.7"/><circle cx="1564.3" cy="995.4" r="6.7"/><circle cx="1573.1" cy="995.4" r="6.7"/><circle cx="1710.4" cy="974.9" r="6.7"/><circle cx="1681.2" cy="983.7" r="6.7"/><circle cx="1796.7" cy="980.7" r="6.7"/><circle cx="1782.0" cy="992.4" r="6.7"/><circle cx="1280.4" cy="1071.6" r="6.7"/><circle cx="1289.1" cy="1080.4" r="6.7"/><circle cx="1322.8" cy="1080.4" r="6.7"/><circle cx="1357.8" cy="1070.1" r="6.7"/><circle cx="1349.1" cy="1078.9" r="6.7"/><circle cx="1363.7" cy="1081.8" r="6.7"/><circle cx="1379.7" cy="1078.9" r="6.7"/><circle cx="1353.4" cy="1084.8" r="6.7"/><circle cx="1359.3" cy="1092.1" r="6.7"/><circle cx="1375.4" cy="1090.6" r="6.7"/><circle cx="1391.4" cy="1086.2" r="6.7"/><circle cx="1395.8" cy="1076.0" r="6.7"/><circle cx="1407.5" cy="1076.0" r="6.7"/><circle cx="1416.3" cy="1081.8" r="6.7"/><circle cx="1419.2" cy="1093.5" r="6.7"/><circle cx="1429.4" cy="1092.1" r="6.7"/><circle cx="1442.6" cy="1073.1" r="6.7"/><circle cx="1442.6" cy="1087.7" r="6.7"/><circle cx="1390.0" cy="1096.4" r="6.7"/><circle cx="1401.7" cy="1100.8" r="6.7"/><circle cx="1369.5" cy="1099.4" r="6.7"/><circle cx="1376.8" cy="1105.2" r="6.7"/><circle cx="1343.2" cy="1100.8" r="6.7"/><circle cx="1350.5" cy="1106.7" r="6.7"/><circle cx="1340.3" cy="1111.1" r="6.7"/><circle cx="1344.7" cy="1116.9" r="6.7"/><circle cx="1384.1" cy="1111.1" r="6.7"/><circle cx="1390.0" cy="1116.9" r="6.7"/><circle cx="1398.7" cy="1116.9" r="6.7"/><circle cx="1388.5" cy="1127.1" r="6.7"/><circle cx="1371.0" cy="1122.8" r="6.7"/><circle cx="1413.4" cy="1108.1" r="6.7"/><circle cx="1422.1" cy="1106.7" r="6.7"/><circle cx="1429.4" cy="1102.3" r="6.7"/><circle cx="1435.3" cy="1118.4" r="6.7"/><circle cx="1426.5" cy="1127.1" r="6.7"/><circle cx="1413.4" cy="1130.1" r="6.7"/><circle cx="1433.8" cy="1134.4" r="6.7"/><circle cx="1445.5" cy="1128.6" r="6.7"/><circle cx="1451.4" cy="1096.4" r="6.7"/><circle cx="1457.2" cy="1108.1" r="6.7"/><circle cx="1468.9" cy="1102.3" r="6.7"/><circle cx="1470.3" cy="1114.0" r="6.7"/><circle cx="1483.5" cy="1097.9" r="6.7"/><circle cx="1492.3" cy="1096.4" r="6.7"/><circle cx="1496.7" cy="1081.8" r="6.7"/><circle cx="1486.4" cy="1115.4" r="6.7"/><circle cx="1492.3" cy="1121.3" r="6.7"/><circle cx="1476.2" cy="1133.0" r="6.7"/><circle cx="1495.2" cy="1138.8" r="6.7"/><circle cx="1287.1" cy="1077.9" r="6.7"/><circle cx="1285.6" cy="1076.3" r="6.7"/><circle cx="1355.2" cy="1076.3" r="6.7"/><circle cx="1364.2" cy="1074.7" r="6.7"/><circle cx="1379.6" cy="1073.3" r="6.7"/><circle cx="1352.0" cy="1074.4" r="6.7"/><circle cx="1369.8" cy="1087.5" r="6.7"/><circle cx="1378.6" cy="1074.0" r="6.7"/><circle cx="1377.1" cy="1083.7" r="6.7"/><circle cx="1350.0" cy="1079.8" r="6.7"/><circle cx="1355.1" cy="1089.2" r="6.7"/><circle cx="1371.4" cy="1095.5" r="6.7"/><circle cx="1393.2" cy="1081.6" r="6.7"/><circle cx="1402.5" cy="1074.7" r="6.7"/><circle cx="1420.7" cy="1073.6" r="6.7"/><circle cx="1420.4" cy="1075.8" r="6.7"/><circle cx="1421.2" cy="1100.3" r="6.7"/><circle cx="1433.9" cy="1088.3" r="6.7"/><circle cx="1445.4" cy="1093.6" r="6.7"/><circle cx="1385.5" cy="1105.4" r="6.7"/><circle cx="1405.9" cy="1103.5" r="6.7"/><circle cx="1365.0" cy="1095.0" r="6.7"/><circle cx="1380.9" cy="1108.8" r="6.7"/><circle cx="1346.1" cy="1103.0" r="6.7"/><circle cx="1347.2" cy="1102.2" r="6.7"/><circle cx="1346.9" cy="1104.1" r="6.7"/><circle cx="1339.9" cy="1106.9" r="6.7"/><circle cx="1342.3" cy="1116.3" r="6.7"/><circle cx="1344.2" cy="1114.4" r="6.7"/><circle cx="1386.0" cy="1115.3" r="6.7"/><circle cx="1388.6" cy="1120.1" r="6.7"/><circle cx="1389.2" cy="1113.1" r="6.7"/><circle cx="1391.9" cy="1125.0" r="6.7"/><circle cx="1417.4" cy="1107.8" r="6.7"/><circle cx="1419.9" cy="1100.3" r="6.7"/><circle cx="1424.2" cy="1107.1" r="6.7"/><circle cx="1431.4" cy="1123.5" r="6.7"/><circle cx="1440.1" cy="1124.1" r="6.7"/><circle cx="1429.0" cy="1123.9" r="6.7"/><circle cx="1421.8" cy="1127.5" r="6.7"/><circle cx="1429.6" cy="1131.4" r="6.7"/><circle cx="1441.0" cy="1122.9" r="6.7"/><circle cx="1452.2" cy="1101.1" r="6.7"/><circle cx="1452.8" cy="1102.9" r="6.7"/><circle cx="1473.0" cy="1099.6" r="6.7"/><circle cx="1476.4" cy="1100.0" r="6.7"/><circle cx="1471.5" cy="1110.8" r="6.7"/><circle cx="1488.3" cy="1098.5" r="6.7"/><circle cx="1487.0" cy="1098.3" r="6.7"/><circle cx="1489.7" cy="1095.7" r="6.7"/><circle cx="1494.7" cy="1088.2" r="6.7"/><circle cx="1488.8" cy="1118.4" r="6.7"/><circle cx="1490.7" cy="1119.3" r="6.7"/><circle cx="1491.0" cy="1117.3" r="6.7"/><circle cx="1538.0" cy="1001.5" r="6.7"/><circle cx="1561.4" cy="1001.5" r="6.7"/><circle cx="1570.1" cy="1001.5" r="6.7"/><circle cx="1633.0" cy="1008.8" r="6.7"/><circle cx="1654.9" cy="1002.9" r="6.7"/><circle cx="1669.5" cy="1008.8" r="6.7"/><circle cx="1676.8" cy="1004.4" r="6.7"/><circle cx="1600.8" cy="1023.4" r="6.7"/><circle cx="1612.5" cy="1035.1" r="6.7"/><circle cx="1543.8" cy="1029.2" r="6.7"/><circle cx="1545.3" cy="1036.5" r="6.7"/><circle cx="1561.4" cy="1030.7" r="6.7"/><circle cx="1571.6" cy="1032.1" r="6.7"/><circle cx="1587.7" cy="1042.4" r="6.7"/><circle cx="1592.1" cy="1054.1" r="6.7"/><circle cx="1592.1" cy="1064.3" r="6.7"/><circle cx="1581.8" cy="1077.5" r="6.7"/><circle cx="1513.2" cy="1086.2" r="6.7"/><circle cx="1542.4" cy="1084.8" r="6.7"/><circle cx="1558.5" cy="1084.8" r="6.7"/><circle cx="1605.2" cy="1089.1" r="6.7"/><circle cx="1615.4" cy="1087.7" r="6.7"/><circle cx="1542.4" cy="1105.2" r="6.7"/><circle cx="1555.5" cy="1115.4" r="6.7"/><circle cx="1564.3" cy="1111.1" r="6.7"/><circle cx="1502.9" cy="1116.9" r="6.7"/><circle cx="1502.9" cy="1127.1" r="6.7"/><circle cx="1514.6" cy="1124.2" r="6.7"/><circle cx="1502.9" cy="1135.9" r="6.7"/><circle cx="1574.5" cy="1127.1" r="6.7"/><circle cx="1589.1" cy="1119.8" r="6.7"/><circle cx="1589.1" cy="1124.2" r="6.7"/><circle cx="1568.7" cy="1144.7" r="6.7"/><circle cx="1584.8" cy="1154.9" r="6.7"/><circle cx="1523.4" cy="1152.0" r="6.7"/><circle cx="1628.6" cy="1146.1" r="6.7"/><circle cx="1659.3" cy="1127.1" r="6.7"/><circle cx="1761.6" cy="1032.1" r="6.7"/><circle cx="1780.6" cy="1159.3" r="6.7"/><circle cx="1548.2" cy="1165.1" r="6.7"/><circle cx="1557.0" cy="1171.0" r="6.7"/><circle cx="1568.5" cy="1144.4" r="6.7"/><circle cx="1584.2" cy="1154.4" r="6.7"/><circle cx="1628.7" cy="1146.7" r="6.7"/><circle cx="1643.0" cy="1182.5" r="6.7"/><circle cx="1522.5" cy="1151.5" r="6.7"/><circle cx="1548.3" cy="1164.5" r="6.7"/><circle cx="1557.0" cy="1170.0" r="6.7"/><circle cx="1498.0" cy="1138.6" r="6.7"/><circle cx="1782.3" cy="1190.3" r="6.7"/><circle cx="1838.6" cy="920.9" r="6.7"/><circle cx="1830.0" cy="934.3" r="6.7"/><circle cx="1828.6" cy="941.4" r="6.7"/><circle cx="1828.6" cy="948.6" r="6.7"/><circle cx="1826.6" cy="960.9" r="6.7"/><circle cx="1864.9" cy="988.6" r="6.7"/><circle cx="1854.3" cy="1064.3" r="6.7"/><circle cx="1857.0" cy="1070.0" r="6.7"/><circle cx="1851.4" cy="1082.9" r="6.7"/><circle cx="1857.0" cy="1091.4" r="6.7"/><circle cx="1878.6" cy="1082.9" r="6.7"/><circle cx="1806.6" cy="1160.9" r="6.7"/><circle cx="1810.0" cy="992.9" r="6.7"/><circle cx="1818.6" cy="997.7" r="6.7"/><circle cx="1806.7" cy="1160.0" r="6.7"/><circle cx="1218.1" cy="697.7" r="6.7"/><circle cx="1218.1" cy="702.3" r="6.7"/><circle cx="1230.5" cy="700.8" r="6.7"/><circle cx="1239.7" cy="697.7" r="6.7"/><circle cx="1326.1" cy="690.0" r="6.7"/><circle cx="1232.0" cy="723.9" r="6.7"/><circle cx="1222.8" cy="730.1" r="6.7"/><circle cx="1216.6" cy="737.8" r="6.7"/><circle cx="1230.5" cy="744.0" r="6.7"/><circle cx="1252.1" cy="744.0" r="6.7"/><circle cx="1266.0" cy="717.8" r="6.7"/><circle cx="1273.7" cy="725.5" r="6.7"/><circle cx="1281.4" cy="713.1" r="6.7"/><circle cx="1286.0" cy="705.4" r="6.7"/><circle cx="1290.6" cy="720.9" r="6.7"/><circle cx="1281.4" cy="734.7" r="6.7"/><circle cx="1281.4" cy="742.5" r="6.7"/><circle cx="1275.2" cy="750.2" r="6.7"/><circle cx="1303.0" cy="707.0" r="6.7"/><circle cx="1309.2" cy="702.3" r="6.7"/><circle cx="1312.2" cy="713.1" r="6.7"/><circle cx="1303.0" cy="725.5" r="6.7"/><circle cx="1315.3" cy="727.0" r="6.7"/><circle cx="1309.2" cy="736.3" r="6.7"/><circle cx="1321.5" cy="734.7" r="6.7"/><circle cx="1330.8" cy="734.7" r="6.7"/><circle cx="1299.9" cy="744.0" r="6.7"/><circle cx="1318.4" cy="745.5" r="6.7"/><circle cx="1326.1" cy="756.3" r="6.7"/><circle cx="1316.9" cy="761.0" r="6.7"/><circle cx="1336.9" cy="759.4" r="6.7"/><circle cx="1350.8" cy="737.8" r="6.7"/><circle cx="1357.0" cy="734.7" r="6.7"/><circle cx="1350.8" cy="751.7" r="6.7"/><circle cx="1355.4" cy="756.3" r="6.7"/><circle cx="1215.1" cy="768.7" r="6.7"/><circle cx="1219.7" cy="767.1" r="6.7"/><circle cx="1236.7" cy="761.0" r="6.7"/><circle cx="1239.7" cy="770.2" r="6.7"/><circle cx="1218.1" cy="779.5" r="6.7"/><circle cx="1230.5" cy="776.4" r="6.7"/><circle cx="1228.9" cy="787.2" r="6.7"/><circle cx="1244.4" cy="782.6" r="6.7"/><circle cx="1241.3" cy="790.3" r="6.7"/><circle cx="1252.1" cy="776.4" r="6.7"/><circle cx="1262.9" cy="781.0" r="6.7"/><circle cx="1266.0" cy="788.7" r="6.7"/><circle cx="1272.1" cy="764.1" r="6.7"/><circle cx="1273.7" cy="774.9" r="6.7"/><circle cx="1282.9" cy="768.7" r="6.7"/><circle cx="1293.7" cy="762.5" r="6.7"/><circle cx="1301.4" cy="768.7" r="6.7"/><circle cx="1306.1" cy="773.3" r="6.7"/><circle cx="1282.9" cy="785.6" r="6.7"/><circle cx="1292.2" cy="777.9" r="6.7"/><circle cx="1303.0" cy="777.9" r="6.7"/><circle cx="1299.9" cy="791.8" r="6.7"/><circle cx="1318.4" cy="784.1" r="6.7"/><circle cx="1318.4" cy="793.4" r="6.7"/><circle cx="1327.7" cy="798.0" r="6.7"/><circle cx="1235.1" cy="796.4" r="6.7"/><circle cx="1225.9" cy="804.2" r="6.7"/><circle cx="1235.1" cy="801.1" r="6.7"/><circle cx="1232.0" cy="816.5" r="6.7"/><circle cx="1245.9" cy="811.9" r="6.7"/><circle cx="1250.5" cy="801.1" r="6.7"/><circle cx="1259.8" cy="807.2" r="6.7"/><circle cx="1261.3" cy="821.1" r="6.7"/><circle cx="1269.1" cy="811.9" r="6.7"/><circle cx="1276.8" cy="816.5" r="6.7"/><circle cx="1284.5" cy="802.6" r="6.7"/><circle cx="1287.6" cy="825.8" r="6.7"/><circle cx="1293.7" cy="818.0" r="6.7"/><circle cx="1306.1" cy="804.2" r="6.7"/><circle cx="1306.1" cy="813.4" r="6.7"/><circle cx="1316.9" cy="816.5" r="6.7"/><circle cx="1327.7" cy="822.7" r="6.7"/><circle cx="1275.2" cy="825.8" r="6.7"/><circle cx="1267.5" cy="828.8" r="6.7"/><circle cx="1218.1" cy="830.4" r="6.7"/><circle cx="1228.9" cy="838.1" r="6.7"/><circle cx="1236.7" cy="842.7" r="6.7"/><circle cx="1245.9" cy="845.8" r="6.7"/><circle cx="1253.6" cy="852.0" r="6.7"/><circle cx="1261.3" cy="838.1" r="6.7"/><circle cx="1270.6" cy="841.2" r="6.7"/><circle cx="1279.9" cy="842.7" r="6.7"/><circle cx="1287.6" cy="839.6" r="6.7"/><circle cx="1299.9" cy="836.6" r="6.7"/><circle cx="1266.0" cy="859.7" r="6.7"/><circle cx="1275.2" cy="862.8" r="6.7"/><circle cx="1282.9" cy="856.6" r="6.7"/><circle cx="1290.6" cy="859.7" r="6.7"/><circle cx="1275.2" cy="873.6" r="6.7"/><circle cx="1241.3" cy="867.4" r="6.7"/><circle cx="1241.3" cy="875.1" r="6.7"/><circle cx="1326.1" cy="845.8" r="6.7"/><circle cx="1338.5" cy="844.3" r="6.7"/><circle cx="1357.0" cy="845.8" r="6.7"/><circle cx="1349.3" cy="853.5" r="6.7"/><circle cx="1324.6" cy="859.7" r="6.7"/><circle cx="1333.8" cy="861.2" r="6.7"/><circle cx="1343.1" cy="862.8" r="6.7"/><circle cx="1355.4" cy="867.4" r="6.7"/><circle cx="1355.4" cy="876.7" r="6.7"/><circle cx="1327.7" cy="875.1" r="6.7"/><circle cx="1341.6" cy="875.1" r="6.7"/><circle cx="1219.4" cy="701.0" r="6.7"/><circle cx="1217.9" cy="698.8" r="6.7"/><circle cx="1226.0" cy="701.6" r="6.7"/><circle cx="1218.7" cy="700.1" r="6.7"/><circle cx="1223.7" cy="699.8" r="6.7"/><circle cx="1224.3" cy="701.3" r="6.7"/><circle cx="1233.7" cy="698.3" r="6.7"/><circle cx="1232.2" cy="697.8" r="6.7"/><circle cx="1226.1" cy="725.5" r="6.7"/><circle cx="1226.2" cy="728.0" r="6.7"/><circle cx="1219.7" cy="736.5" r="6.7"/><circle cx="1227.3" cy="725.4" r="6.7"/><circle cx="1221.8" cy="739.6" r="6.7"/><circle cx="1222.3" cy="742.1" r="6.7"/><circle cx="1223.7" cy="739.8" r="6.7"/><circle cx="1228.9" cy="739.5" r="6.7"/><circle cx="1269.3" cy="720.4" r="6.7"/><circle cx="1270.7" cy="723.6" r="6.7"/><circle cx="1277.5" cy="719.2" r="6.7"/><circle cx="1279.2" cy="719.8" r="6.7"/><circle cx="1286.6" cy="718.5" r="6.7"/><circle cx="1279.9" cy="717.1" r="6.7"/><circle cx="1283.1" cy="708.0" r="6.7"/><circle cx="1282.3" cy="711.3" r="6.7"/><circle cx="1297.5" cy="722.3" r="6.7"/><circle cx="1296.2" cy="723.1" r="6.7"/><circle cx="1275.7" cy="730.8" r="6.7"/><circle cx="1281.3" cy="738.0" r="6.7"/><circle cx="1283.1" cy="737.8" r="6.7"/><circle cx="1277.5" cy="745.8" r="6.7"/><circle cx="1274.5" cy="759.2" r="6.7"/><circle cx="1278.2" cy="749.1" r="6.7"/><circle cx="1307.1" cy="708.9" r="6.7"/><circle cx="1305.3" cy="702.5" r="6.7"/><circle cx="1309.5" cy="706.3" r="6.7"/><circle cx="1311.7" cy="709.5" r="6.7"/><circle cx="1305.5" cy="710.2" r="6.7"/><circle cx="1307.1" cy="709.2" r="6.7"/><circle cx="1310.4" cy="725.5" r="6.7"/><circle cx="1298.3" cy="724.4" r="6.7"/><circle cx="1315.4" cy="720.5" r="6.7"/><circle cx="1311.7" cy="729.4" r="6.7"/><circle cx="1306.4" cy="732.5" r="6.7"/><circle cx="1304.1" cy="740.3" r="6.7"/><circle cx="1326.7" cy="733.2" r="6.7"/><circle cx="1316.5" cy="735.3" r="6.7"/><circle cx="1324.9" cy="732.9" r="6.7"/><circle cx="1326.7" cy="733.3" r="6.7"/><circle cx="1302.7" cy="742.4" r="6.7"/><circle cx="1303.2" cy="741.7" r="6.7"/><circle cx="1320.4" cy="749.0" r="6.7"/><circle cx="1317.0" cy="750.3" r="6.7"/><circle cx="1323.7" cy="749.6" r="6.7"/><circle cx="1321.0" cy="759.8" r="6.7"/><circle cx="1318.1" cy="751.5" r="6.7"/><circle cx="1320.6" cy="759.1" r="6.7"/><circle cx="1346.6" cy="754.2" r="6.7"/><circle cx="1329.8" cy="756.2" r="6.7"/><circle cx="1354.5" cy="736.5" r="6.7"/><circle cx="1352.9" cy="736.5" r="6.7"/><circle cx="1354.9" cy="735.8" r="6.7"/><circle cx="1353.6" cy="736.0" r="6.7"/><circle cx="1341.8" cy="754.6" r="6.7"/><circle cx="1342.9" cy="754.1" r="6.7"/><circle cx="1353.2" cy="753.6" r="6.7"/><circle cx="1352.6" cy="755.3" r="6.7"/><circle cx="1218.0" cy="775.3" r="6.7"/><circle cx="1214.8" cy="767.1" r="6.7"/><circle cx="1219.1" cy="766.4" r="6.7"/><circle cx="1227.3" cy="773.1" r="6.7"/><circle cx="1239.1" cy="763.1" r="6.7"/><circle cx="1238.9" cy="765.0" r="6.7"/><circle cx="1240.5" cy="776.7" r="6.7"/><circle cx="1236.2" cy="773.5" r="6.7"/><circle cx="1218.3" cy="774.2" r="6.7"/><circle cx="1218.6" cy="776.4" r="6.7"/><circle cx="1240.1" cy="778.6" r="6.7"/><circle cx="1223.5" cy="771.5" r="6.7"/><circle cx="1232.1" cy="792.4" r="6.7"/><circle cx="1233.1" cy="796.1" r="6.7"/><circle cx="1251.1" cy="779.5" r="6.7"/><circle cx="1245.7" cy="779.6" r="6.7"/><circle cx="1238.1" cy="795.9" r="6.7"/><circle cx="1241.5" cy="785.2" r="6.7"/><circle cx="1247.4" cy="775.9" r="6.7"/><circle cx="1258.0" cy="779.6" r="6.7"/><circle cx="1268.9" cy="777.4" r="6.7"/><circle cx="1262.7" cy="786.4" r="6.7"/><circle cx="1265.4" cy="784.0" r="6.7"/><circle cx="1264.1" cy="785.9" r="6.7"/><circle cx="1272.1" cy="767.2" r="6.7"/><circle cx="1280.1" cy="768.3" r="6.7"/><circle cx="1271.3" cy="769.6" r="6.7"/><circle cx="1269.3" cy="776.4" r="6.7"/><circle cx="1291.6" cy="763.1" r="6.7"/><circle cx="1287.1" cy="765.2" r="6.7"/><circle cx="1295.0" cy="767.1" r="6.7"/><circle cx="1291.2" cy="771.1" r="6.7"/><circle cx="1301.4" cy="775.6" r="6.7"/><circle cx="1296.0" cy="765.1" r="6.7"/><circle cx="1302.6" cy="771.7" r="6.7"/><circle cx="1304.9" cy="774.9" r="6.7"/><circle cx="1285.7" cy="780.5" r="6.7"/><circle cx="1286.4" cy="780.6" r="6.7"/><circle cx="1295.6" cy="785.9" r="6.7"/><circle cx="1298.6" cy="776.9" r="6.7"/><circle cx="1306.1" cy="776.4" r="6.7"/><circle cx="1304.1" cy="774.0" r="6.7"/><circle cx="1301.0" cy="782.2" r="6.7"/><circle cx="1303.1" cy="795.0" r="6.7"/><circle cx="1320.4" cy="787.4" r="6.7"/><circle cx="1316.7" cy="787.3" r="6.7"/><circle cx="1317.3" cy="785.7" r="6.7"/><circle cx="1317.3" cy="789.6" r="6.7"/><circle cx="1325.2" cy="797.5" r="6.7"/><circle cx="1321.8" cy="795.2" r="6.7"/><circle cx="1230.1" cy="791.6" r="6.7"/><circle cx="1236.1" cy="798.9" r="6.7"/><circle cx="1230.0" cy="800.9" r="6.7"/><circle cx="1228.7" cy="804.2" r="6.7"/><circle cx="1229.5" cy="802.8" r="6.7"/><circle cx="1233.4" cy="807.6" r="6.7"/><circle cx="1230.2" cy="813.3" r="6.7"/><circle cx="1233.5" cy="808.9" r="6.7"/><circle cx="1239.6" cy="815.7" r="6.7"/><circle cx="1240.4" cy="806.6" r="6.7"/><circle cx="1252.1" cy="801.4" r="6.7"/><circle cx="1256.2" cy="805.3" r="6.7"/><circle cx="1262.4" cy="813.3" r="6.7"/><circle cx="1254.1" cy="805.2" r="6.7"/><circle cx="1267.2" cy="816.6" r="6.7"/><circle cx="1260.0" cy="816.6" r="6.7"/><circle cx="1267.6" cy="812.1" r="6.7"/><circle cx="1272.0" cy="821.2" r="6.7"/><circle cx="1270.1" cy="821.6" r="6.7"/><circle cx="1275.1" cy="822.3" r="6.7"/><circle cx="1282.7" cy="806.7" r="6.7"/><circle cx="1280.9" cy="809.3" r="6.7"/><circle cx="1281.1" cy="821.7" r="6.7"/><circle cx="1279.7" cy="818.4" r="6.7"/><circle cx="1289.7" cy="822.4" r="6.7"/><circle cx="1290.4" cy="823.1" r="6.7"/><circle cx="1303.2" cy="797.9" r="6.7"/><circle cx="1304.8" cy="798.4" r="6.7"/><circle cx="1307.5" cy="808.5" r="6.7"/><circle cx="1312.3" cy="814.6" r="6.7"/><circle cx="1310.0" cy="814.4" r="6.7"/><circle cx="1324.5" cy="819.2" r="6.7"/><circle cx="1321.7" cy="819.7" r="6.7"/><circle cx="1322.0" cy="820.5" r="6.7"/><circle cx="1267.8" cy="821.9" r="6.7"/><circle cx="1272.0" cy="816.4" r="6.7"/><circle cx="1264.3" cy="833.3" r="6.7"/><circle cx="1273.4" cy="825.9" r="6.7"/><circle cx="1221.3" cy="833.4" r="6.7"/><circle cx="1224.5" cy="834.4" r="6.7"/><circle cx="1234.1" cy="840.8" r="6.7"/><circle cx="1226.9" cy="836.2" r="6.7"/><circle cx="1232.2" cy="841.1" r="6.7"/><circle cx="1239.8" cy="842.2" r="6.7"/><circle cx="1238.8" cy="843.0" r="6.7"/><circle cx="1247.4" cy="849.9" r="6.7"/><circle cx="1258.5" cy="842.7" r="6.7"/><circle cx="1256.2" cy="846.5" r="6.7"/><circle cx="1265.1" cy="834.2" r="6.7"/><circle cx="1264.6" cy="834.7" r="6.7"/><circle cx="1276.2" cy="842.7" r="6.7"/><circle cx="1270.2" cy="835.4" r="6.7"/><circle cx="1275.5" cy="840.9" r="6.7"/><circle cx="1282.0" cy="841.0" r="6.7"/><circle cx="1283.9" cy="839.3" r="6.7"/><circle cx="1291.1" cy="837.5" r="6.7"/><circle cx="1295.1" cy="839.1" r="6.7"/><circle cx="1295.6" cy="836.9" r="6.7"/><circle cx="1268.8" cy="862.4" r="6.7"/><circle cx="1256.3" cy="856.5" r="6.7"/><circle cx="1272.2" cy="862.2" r="6.7"/><circle cx="1268.8" cy="861.3" r="6.7"/><circle cx="1280.3" cy="859.7" r="6.7"/><circle cx="1288.2" cy="860.1" r="6.7"/><circle cx="1281.8" cy="860.5" r="6.7"/><circle cx="1285.9" cy="859.3" r="6.7"/><circle cx="1274.9" cy="869.0" r="6.7"/><circle cx="1277.2" cy="867.8" r="6.7"/><circle cx="1239.5" cy="871.7" r="6.7"/><circle cx="1239.9" cy="873.0" r="6.7"/><circle cx="1239.6" cy="870.0" r="6.7"/><circle cx="1241.2" cy="869.3" r="6.7"/><circle cx="1332.7" cy="843.4" r="6.7"/><circle cx="1324.9" cy="851.1" r="6.7"/><circle cx="1345.5" cy="847.8" r="6.7"/><circle cx="1329.7" cy="844.6" r="6.7"/><circle cx="1353.0" cy="848.0" r="6.7"/><circle cx="1351.7" cy="851.1" r="6.7"/><circle cx="1341.8" cy="847.5" r="6.7"/><circle cx="1353.6" cy="859.0" r="6.7"/><circle cx="1324.3" cy="853.9" r="6.7"/><circle cx="1324.6" cy="866.8" r="6.7"/><circle cx="1338.5" cy="867.2" r="6.7"/><circle cx="1331.8" cy="860.1" r="6.7"/><circle cx="1344.0" cy="866.9" r="6.7"/><circle cx="1335.8" cy="863.1" r="6.7"/><circle cx="1350.5" cy="863.6" r="6.7"/><circle cx="1347.5" cy="870.3" r="6.7"/><circle cx="1355.9" cy="873.5" r="6.7"/><circle cx="1346.3" cy="877.3" r="6.7"/><circle cx="1326.5" cy="868.4" r="6.7"/><circle cx="1328.1" cy="868.5" r="6.7"/><circle cx="1349.0" cy="873.5" r="6.7"/><circle cx="1348.8" cy="869.7" r="6.7"/><circle cx="1224.3" cy="895.4" r="6.7"/><circle cx="1244.4" cy="889.3" r="6.7"/><circle cx="1262.9" cy="886.2" r="6.7"/><circle cx="1266.0" cy="895.4" r="6.7"/><circle cx="1249.0" cy="903.1" r="6.7"/><circle cx="1259.8" cy="901.6" r="6.7"/><circle cx="1242.8" cy="915.5" r="6.7"/><circle cx="1255.2" cy="915.5" r="6.7"/><circle cx="1275.2" cy="884.6" r="6.7"/><circle cx="1295.3" cy="893.9" r="6.7"/><circle cx="1304.5" cy="884.6" r="6.7"/><circle cx="1316.9" cy="886.2" r="6.7"/><circle cx="1326.1" cy="881.5" r="6.7"/><circle cx="1315.3" cy="897.0" r="6.7"/><circle cx="1324.6" cy="903.1" r="6.7"/><circle cx="1330.8" cy="910.9" r="6.7"/><circle cx="1343.1" cy="884.6" r="6.7"/><circle cx="1350.8" cy="892.3" r="6.7"/><circle cx="1358.5" cy="886.2" r="6.7"/><circle cx="1357.0" cy="904.7" r="6.7"/><circle cx="1349.3" cy="900.1" r="6.7"/><circle cx="1312.2" cy="918.6" r="6.7"/><circle cx="1326.1" cy="920.1" r="6.7"/><circle cx="1330.8" cy="926.3" r="6.7"/><circle cx="1332.3" cy="935.5" r="6.7"/><circle cx="1343.1" cy="932.5" r="6.7"/><circle cx="1349.3" cy="927.8" r="6.7"/><circle cx="1341.6" cy="940.2" r="6.7"/><circle cx="1343.1" cy="949.4" r="6.7"/><circle cx="1336.9" cy="961.8" r="6.7"/><circle cx="1363.2" cy="934.0" r="6.7"/><circle cx="1363.2" cy="949.4" r="6.7"/><circle cx="1244.4" cy="930.9" r="6.7"/><circle cx="1245.9" cy="949.4" r="6.7"/><circle cx="1218.1" cy="932.5" r="6.7"/><circle cx="1225.9" cy="938.6" r="6.7"/><circle cx="1212.0" cy="952.5" r="6.7"/><circle cx="1219.7" cy="958.7" r="6.7"/><circle cx="1269.1" cy="944.8" r="6.7"/><circle cx="1269.1" cy="958.7" r="6.7"/><circle cx="1272.1" cy="924.7" r="6.7"/><circle cx="1282.9" cy="924.7" r="6.7"/><circle cx="1278.3" cy="932.5" r="6.7"/><circle cx="1290.6" cy="932.5" r="6.7"/><circle cx="1296.8" cy="929.4" r="6.7"/><circle cx="1306.1" cy="941.7" r="6.7"/><circle cx="1315.3" cy="938.6" r="6.7"/><circle cx="1316.9" cy="954.1" r="6.7"/><circle cx="1326.1" cy="952.5" r="6.7"/><circle cx="1330.8" cy="947.9" r="6.7"/><circle cx="1236.7" cy="963.3" r="6.7"/><circle cx="1247.5" cy="960.2" r="6.7"/><circle cx="1242.8" cy="971.0" r="6.7"/><circle cx="1222.8" cy="974.1" r="6.7"/><circle cx="1228.9" cy="977.2" r="6.7"/><circle cx="1253.6" cy="971.0" r="6.7"/><circle cx="1281.4" cy="967.9" r="6.7"/><circle cx="1295.3" cy="963.3" r="6.7"/><circle cx="1306.1" cy="966.4" r="6.7"/><circle cx="1281.4" cy="978.7" r="6.7"/><circle cx="1279.9" cy="988.0" r="6.7"/><circle cx="1272.1" cy="991.1" r="6.7"/><circle cx="1262.9" cy="997.2" r="6.7"/><circle cx="1262.9" cy="1006.5" r="6.7"/><circle cx="1324.6" cy="972.6" r="6.7"/><circle cx="1304.5" cy="986.4" r="6.7"/><circle cx="1306.1" cy="994.2" r="6.7"/><circle cx="1312.2" cy="984.9" r="6.7"/><circle cx="1326.1" cy="994.2" r="6.7"/><circle cx="1336.9" cy="995.7" r="6.7"/><circle cx="1347.7" cy="992.6" r="6.7"/><circle cx="1350.8" cy="978.7" r="6.7"/><circle cx="1361.6" cy="978.7" r="6.7"/><circle cx="1361.6" cy="1006.5" r="6.7"/><circle cx="1347.7" cy="1012.7" r="6.7"/><circle cx="1335.4" cy="1009.6" r="6.7"/><circle cx="1318.4" cy="1008.0" r="6.7"/><circle cx="1333.8" cy="1001.9" r="6.7"/><circle cx="1218.1" cy="991.1" r="6.7"/><circle cx="1227.4" cy="989.5" r="6.7"/><circle cx="1213.5" cy="997.2" r="6.7"/><circle cx="1228.9" cy="1005.0" r="6.7"/><circle cx="1242.8" cy="992.6" r="6.7"/><circle cx="1239.7" cy="1015.8" r="6.7"/><circle cx="1242.8" cy="1026.6" r="6.7"/><circle cx="1238.2" cy="1018.8" r="6.7"/><circle cx="1256.7" cy="1014.2" r="6.7"/><circle cx="1258.3" cy="1035.8" r="6.7"/><circle cx="1269.1" cy="1042.0" r="6.7"/><circle cx="1250.5" cy="1046.6" r="6.7"/><circle cx="1253.6" cy="1052.8" r="6.7"/><circle cx="1272.1" cy="1011.1" r="6.7"/><circle cx="1281.4" cy="1021.9" r="6.7"/><circle cx="1293.7" cy="1020.4" r="6.7"/><circle cx="1309.2" cy="1020.4" r="6.7"/><circle cx="1316.9" cy="1014.2" r="6.7"/><circle cx="1350.8" cy="1032.7" r="6.7"/><circle cx="1310.7" cy="1037.4" r="6.7"/><circle cx="1323.0" cy="1042.0" r="6.7"/><circle cx="1332.3" cy="1042.0" r="6.7"/><circle cx="1349.3" cy="1045.1" r="6.7"/><circle cx="1357.0" cy="1051.2" r="6.7"/><circle cx="1303.0" cy="1054.3" r="6.7"/><circle cx="1312.2" cy="1059.0" r="6.7"/><circle cx="1330.8" cy="1055.9" r="6.7"/><circle cx="1340.0" cy="1065.1" r="6.7"/><circle cx="1278.3" cy="1065.1" r="6.7"/><circle cx="1256.7" cy="1034.3" r="6.7"/><circle cx="1248.6" cy="895.8" r="6.7"/><circle cx="1248.6" cy="897.8" r="6.7"/><circle cx="1263.5" cy="889.8" r="6.7"/><circle cx="1263.3" cy="891.9" r="6.7"/><circle cx="1268.8" cy="888.4" r="6.7"/><circle cx="1266.2" cy="890.5" r="6.7"/><circle cx="1247.6" cy="897.4" r="6.7"/><circle cx="1247.4" cy="909.1" r="6.7"/><circle cx="1262.3" cy="895.4" r="6.7"/><circle cx="1262.4" cy="890.8" r="6.7"/><circle cx="1245.8" cy="910.5" r="6.7"/><circle cx="1248.2" cy="906.1" r="6.7"/><circle cx="1257.1" cy="906.6" r="6.7"/><circle cx="1251.1" cy="910.8" r="6.7"/><circle cx="1265.7" cy="884.3" r="6.7"/><circle cx="1273.1" cy="887.5" r="6.7"/><circle cx="1300.5" cy="887.1" r="6.7"/><circle cx="1301.3" cy="889.0" r="6.7"/><circle cx="1299.0" cy="889.3" r="6.7"/><circle cx="1311.0" cy="885.5" r="6.7"/><circle cx="1309.4" cy="885.6" r="6.7"/><circle cx="1310.9" cy="885.8" r="6.7"/><circle cx="1322.7" cy="882.7" r="6.7"/><circle cx="1321.5" cy="884.7" r="6.7"/><circle cx="1320.7" cy="901.2" r="6.7"/><circle cx="1317.4" cy="897.5" r="6.7"/><circle cx="1328.2" cy="907.0" r="6.7"/><circle cx="1326.2" cy="906.9" r="6.7"/><circle cx="1329.6" cy="912.4" r="6.7"/><circle cx="1331.2" cy="916.7" r="6.7"/><circle cx="1351.3" cy="886.1" r="6.7"/><circle cx="1346.1" cy="889.0" r="6.7"/><circle cx="1350.1" cy="898.9" r="6.7"/><circle cx="1349.7" cy="893.2" r="6.7"/><circle cx="1354.2" cy="890.9" r="6.7"/><circle cx="1350.3" cy="885.2" r="6.7"/><circle cx="1352.8" cy="900.8" r="6.7"/><circle cx="1353.6" cy="896.1" r="6.7"/><circle cx="1348.3" cy="894.5" r="6.7"/><circle cx="1348.7" cy="896.9" r="6.7"/><circle cx="1320.1" cy="918.9" r="6.7"/><circle cx="1318.2" cy="918.6" r="6.7"/><circle cx="1330.0" cy="923.6" r="6.7"/><circle cx="1327.9" cy="916.2" r="6.7"/><circle cx="1339.3" cy="931.2" r="6.7"/><circle cx="1329.0" cy="920.7" r="6.7"/><circle cx="1331.3" cy="941.6" r="6.7"/><circle cx="1340.0" cy="934.7" r="6.7"/><circle cx="1344.9" cy="929.4" r="6.7"/><circle cx="1346.2" cy="929.7" r="6.7"/><circle cx="1346.1" cy="932.2" r="6.7"/><circle cx="1343.7" cy="935.4" r="6.7"/><circle cx="1338.0" cy="939.9" r="6.7"/><circle cx="1345.2" cy="936.2" r="6.7"/><circle cx="1338.3" cy="947.1" r="6.7"/><circle cx="1339.9" cy="955.6" r="6.7"/><circle cx="1333.1" cy="951.9" r="6.7"/><circle cx="1334.3" cy="953.7" r="6.7"/><circle cx="1354.2" cy="932.0" r="6.7"/><circle cx="1361.6" cy="940.1" r="6.7"/><circle cx="1364.4" cy="944.0" r="6.7"/><circle cx="1362.8" cy="942.3" r="6.7"/><circle cx="1243.8" cy="924.8" r="6.7"/><circle cx="1242.1" cy="923.9" r="6.7"/><circle cx="1248.1" cy="954.2" r="6.7"/><circle cx="1248.5" cy="958.1" r="6.7"/><circle cx="1220.5" cy="933.1" r="6.7"/><circle cx="1224.1" cy="935.8" r="6.7"/><circle cx="1221.9" cy="934.1" r="6.7"/><circle cx="1222.0" cy="936.2" r="6.7"/><circle cx="1216.0" cy="954.4" r="6.7"/><circle cx="1214.6" cy="956.5" r="6.7"/><circle cx="1217.1" cy="954.4" r="6.7"/><circle cx="1218.1" cy="955.8" r="6.7"/><circle cx="1269.9" cy="953.8" r="6.7"/><circle cx="1267.3" cy="953.2" r="6.7"/><circle cx="1271.0" cy="950.8" r="6.7"/><circle cx="1270.0" cy="952.2" r="6.7"/><circle cx="1273.2" cy="927.1" r="6.7"/><circle cx="1276.6" cy="928.9" r="6.7"/><circle cx="1290.8" cy="927.9" r="6.7"/><circle cx="1276.3" cy="923.0" r="6.7"/><circle cx="1275.4" cy="929.7" r="6.7"/><circle cx="1274.6" cy="926.2" r="6.7"/><circle cx="1293.2" cy="931.1" r="6.7"/><circle cx="1286.2" cy="933.3" r="6.7"/><circle cx="1293.7" cy="930.0" r="6.7"/><circle cx="1296.1" cy="932.3" r="6.7"/><circle cx="1302.7" cy="936.0" r="6.7"/><circle cx="1310.0" cy="940.6" r="6.7"/><circle cx="1315.3" cy="945.9" r="6.7"/><circle cx="1314.7" cy="945.5" r="6.7"/><circle cx="1317.3" cy="944.8" r="6.7"/><circle cx="1324.9" cy="949.6" r="6.7"/><circle cx="1329.9" cy="951.3" r="6.7"/><circle cx="1326.7" cy="949.7" r="6.7"/><circle cx="1333.8" cy="948.1" r="6.7"/><circle cx="1331.2" cy="939.8" r="6.7"/><circle cx="1240.3" cy="964.3" r="6.7"/><circle cx="1232.9" cy="971.0" r="6.7"/><circle cx="1239.1" cy="960.6" r="6.7"/><circle cx="1245.1" cy="967.3" r="6.7"/><circle cx="1249.2" cy="971.0" r="6.7"/><circle cx="1246.1" cy="967.1" r="6.7"/><circle cx="1227.1" cy="974.1" r="6.7"/><circle cx="1222.1" cy="968.0" r="6.7"/><circle cx="1233.7" cy="972.7" r="6.7"/><circle cx="1235.4" cy="973.1" r="6.7"/><circle cx="1248.4" cy="963.5" r="6.7"/><circle cx="1248.7" cy="970.3" r="6.7"/><circle cx="1281.1" cy="973.5" r="6.7"/><circle cx="1276.5" cy="965.1" r="6.7"/><circle cx="1287.8" cy="967.0" r="6.7"/><circle cx="1286.9" cy="963.8" r="6.7"/><circle cx="1299.1" cy="964.0" r="6.7"/><circle cx="1303.4" cy="963.6" r="6.7"/><circle cx="1278.7" cy="985.3" r="6.7"/><circle cx="1282.4" cy="983.2" r="6.7"/><circle cx="1280.1" cy="982.5" r="6.7"/><circle cx="1277.5" cy="988.0" r="6.7"/><circle cx="1268.4" cy="993.7" r="6.7"/><circle cx="1276.0" cy="990.9" r="6.7"/><circle cx="1268.5" cy="996.5" r="6.7"/><circle cx="1268.3" cy="995.2" r="6.7"/><circle cx="1267.0" cy="1009.9" r="6.7"/><circle cx="1268.9" cy="1008.2" r="6.7"/><circle cx="1303.7" cy="991.6" r="6.7"/><circle cx="1305.5" cy="987.6" r="6.7"/><circle cx="1307.8" cy="988.2" r="6.7"/><circle cx="1305.1" cy="989.9" r="6.7"/><circle cx="1307.5" cy="986.3" r="6.7"/><circle cx="1307.7" cy="984.1" r="6.7"/><circle cx="1331.4" cy="999.0" r="6.7"/><circle cx="1322.9" cy="1002.1" r="6.7"/><circle cx="1341.8" cy="996.4" r="6.7"/><circle cx="1341.4" cy="995.7" r="6.7"/><circle cx="1350.7" cy="985.8" r="6.7"/><circle cx="1349.8" cy="986.2" r="6.7"/><circle cx="1355.7" cy="980.6" r="6.7"/><circle cx="1347.2" cy="986.9" r="6.7"/><circle cx="1354.3" cy="977.8" r="6.7"/><circle cx="1356.5" cy="980.4" r="6.7"/><circle cx="1351.7" cy="1010.9" r="6.7"/><circle cx="1352.4" cy="1010.1" r="6.7"/><circle cx="1356.8" cy="1007.6" r="6.7"/><circle cx="1353.9" cy="1009.0" r="6.7"/><circle cx="1335.9" cy="1005.0" r="6.7"/><circle cx="1332.5" cy="1004.9" r="6.7"/><circle cx="1312.7" cy="1014.2" r="6.7"/><circle cx="1322.9" cy="1001.1" r="6.7"/><circle cx="1334.3" cy="1008.7" r="6.7"/><circle cx="1327.8" cy="995.6" r="6.7"/><circle cx="1222.8" cy="988.5" r="6.7"/><circle cx="1221.2" cy="990.5" r="6.7"/><circle cx="1228.3" cy="1000.2" r="6.7"/><circle cx="1229.7" cy="986.2" r="6.7"/><circle cx="1214.7" cy="993.7" r="6.7"/><circle cx="1213.7" cy="992.7" r="6.7"/><circle cx="1234.4" cy="1009.1" r="6.7"/><circle cx="1229.7" cy="995.7" r="6.7"/><circle cx="1236.0" cy="992.4" r="6.7"/><circle cx="1238.0" cy="990.5" r="6.7"/><circle cx="1234.3" cy="1011.4" r="6.7"/><circle cx="1231.4" cy="1010.4" r="6.7"/><circle cx="1239.8" cy="1025.0" r="6.7"/><circle cx="1238.2" cy="1024.0" r="6.7"/><circle cx="1240.1" cy="1018.2" r="6.7"/><circle cx="1241.5" cy="1022.7" r="6.7"/><circle cx="1263.7" cy="1014.6" r="6.7"/><circle cx="1261.8" cy="1012.5" r="6.7"/><circle cx="1256.2" cy="1041.1" r="6.7"/><circle cx="1256.4" cy="1042.5" r="6.7"/><circle cx="1263.5" cy="1038.6" r="6.7"/><circle cx="1262.5" cy="1038.0" r="6.7"/><circle cx="1253.8" cy="1051.1" r="6.7"/><circle cx="1253.4" cy="1040.7" r="6.7"/><circle cx="1252.0" cy="1049.5" r="6.7"/><circle cx="1251.5" cy="1051.8" r="6.7"/><circle cx="1279.1" cy="1016.5" r="6.7"/><circle cx="1264.8" cy="1014.4" r="6.7"/><circle cx="1275.9" cy="1016.9" r="6.7"/><circle cx="1279.2" cy="1018.1" r="6.7"/><circle cx="1287.5" cy="1022.6" r="6.7"/><circle cx="1284.9" cy="1019.6" r="6.7"/><circle cx="1304.2" cy="1021.6" r="6.7"/><circle cx="1299.7" cy="1019.4" r="6.7"/><circle cx="1316.1" cy="1011.7" r="6.7"/><circle cx="1310.6" cy="1019.0" r="6.7"/><circle cx="1350.2" cy="1038.0" r="6.7"/><circle cx="1350.4" cy="1038.1" r="6.7"/><circle cx="1320.1" cy="1041.7" r="6.7"/><circle cx="1317.7" cy="1040.1" r="6.7"/><circle cx="1317.1" cy="1040.9" r="6.7"/><circle cx="1326.4" cy="1041.9" r="6.7"/><circle cx="1330.1" cy="1049.5" r="6.7"/><circle cx="1330.7" cy="1046.8" r="6.7"/><circle cx="1348.7" cy="1036.8" r="6.7"/><circle cx="1353.5" cy="1047.3" r="6.7"/><circle cx="1354.3" cy="1048.2" r="6.7"/><circle cx="1352.4" cy="1049.3" r="6.7"/><circle cx="1310.2" cy="1057.5" r="6.7"/><circle cx="1309.2" cy="1056.3" r="6.7"/><circle cx="1306.2" cy="1056.1" r="6.7"/><circle cx="1307.5" cy="1054.3" r="6.7"/><circle cx="1337.2" cy="1060.5" r="6.7"/><circle cx="1331.3" cy="1048.9" r="6.7"/><circle cx="1338.2" cy="1062.8" r="6.7"/><circle cx="1335.1" cy="1061.3" r="6.7"/><circle cx="1263.1" cy="1037.3" r="6.7"/><circle cx="1255.1" cy="1041.4" r="6.7"/><circle cx="1374.3" cy="883.1" r="6.7"/><circle cx="1386.6" cy="887.7" r="6.7"/><circle cx="1400.5" cy="890.8" r="6.7"/><circle cx="1392.8" cy="897.0" r="6.7"/><circle cx="1372.7" cy="900.1" r="6.7"/><circle cx="1366.5" cy="892.3" r="6.7"/><circle cx="1391.2" cy="910.9" r="6.7"/><circle cx="1403.6" cy="909.3" r="6.7"/><circle cx="1377.3" cy="917.0" r="6.7"/><circle cx="1385.1" cy="923.2" r="6.7"/><circle cx="1391.2" cy="927.8" r="6.7"/><circle cx="1405.1" cy="926.3" r="6.7"/><circle cx="1406.7" cy="934.0" r="6.7"/><circle cx="1415.9" cy="927.8" r="6.7"/><circle cx="1423.6" cy="918.6" r="6.7"/><circle cx="1429.8" cy="929.4" r="6.7"/><circle cx="1439.1" cy="937.1" r="6.7"/><circle cx="1422.1" cy="938.6" r="6.7"/><circle cx="1372.7" cy="935.5" r="6.7"/><circle cx="1382.0" cy="934.0" r="6.7"/><circle cx="1389.7" cy="944.8" r="6.7"/><circle cx="1400.5" cy="941.7" r="6.7"/><circle cx="1378.9" cy="954.1" r="6.7"/><circle cx="1411.3" cy="951.0" r="6.7"/><circle cx="1426.7" cy="951.0" r="6.7"/><circle cx="1436.0" cy="947.9" r="6.7"/><circle cx="1426.7" cy="960.2" r="6.7"/><circle cx="1436.0" cy="966.4" r="6.7"/><circle cx="1417.5" cy="966.4" r="6.7"/><circle cx="1402.0" cy="969.5" r="6.7"/><circle cx="1409.7" cy="977.2" r="6.7"/><circle cx="1391.2" cy="966.4" r="6.7"/><circle cx="1368.1" cy="966.4" r="6.7"/><circle cx="1377.3" cy="972.6" r="6.7"/><circle cx="1385.1" cy="978.7" r="6.7"/><circle cx="1374.3" cy="984.9" r="6.7"/><circle cx="1391.2" cy="983.4" r="6.7"/><circle cx="1398.9" cy="991.1" r="6.7"/><circle cx="1388.1" cy="997.2" r="6.7"/><circle cx="1374.3" cy="998.8" r="6.7"/><circle cx="1366.5" cy="1006.5" r="6.7"/><circle cx="1428.3" cy="978.7" r="6.7"/><circle cx="1436.0" cy="981.8" r="6.7"/><circle cx="1445.2" cy="984.9" r="6.7"/><circle cx="1452.9" cy="980.3" r="6.7"/><circle cx="1420.5" cy="994.2" r="6.7"/><circle cx="1452.9" cy="995.7" r="6.7"/><circle cx="1459.1" cy="1000.3" r="6.7"/><circle cx="1432.9" cy="1009.6" r="6.7"/><circle cx="1442.1" cy="1006.5" r="6.7"/><circle cx="1465.3" cy="903.1" r="6.7"/><circle cx="1473.0" cy="901.6" r="6.7"/><circle cx="1465.3" cy="920.1" r="6.7"/><circle cx="1476.1" cy="927.8" r="6.7"/><circle cx="1493.0" cy="917.0" r="6.7"/><circle cx="1497.7" cy="929.4" r="6.7"/><circle cx="1506.9" cy="926.3" r="6.7"/><circle cx="1488.4" cy="938.6" r="6.7"/><circle cx="1500.8" cy="940.2" r="6.7"/><circle cx="1506.9" cy="949.4" r="6.7"/><circle cx="1514.6" cy="952.5" r="6.7"/><circle cx="1479.2" cy="947.9" r="6.7"/><circle cx="1466.8" cy="954.1" r="6.7"/><circle cx="1460.6" cy="967.9" r="6.7"/><circle cx="1473.0" cy="971.0" r="6.7"/><circle cx="1482.2" cy="960.2" r="6.7"/><circle cx="1486.9" cy="980.3" r="6.7"/><circle cx="1477.6" cy="975.6" r="6.7"/><circle cx="1496.1" cy="975.6" r="6.7"/><circle cx="1503.8" cy="966.4" r="6.7"/><circle cx="1511.6" cy="978.7" r="6.7"/><circle cx="1519.3" cy="972.6" r="6.7"/><circle cx="1500.8" cy="904.7" r="6.7"/><circle cx="1511.6" cy="906.2" r="6.7"/><circle cx="1520.8" cy="892.3" r="6.7"/><circle cx="1530.1" cy="898.5" r="6.7"/><circle cx="1520.8" cy="917.0" r="6.7"/><circle cx="1528.5" cy="926.3" r="6.7"/><circle cx="1528.5" cy="984.9" r="6.7"/><circle cx="1522.4" cy="994.2" r="6.7"/><circle cx="1533.2" cy="997.2" r="6.7"/><circle cx="1493.0" cy="1003.4" r="6.7"/><circle cx="1496.1" cy="1011.1" r="6.7"/><circle cx="1514.6" cy="1012.7" r="6.7"/><circle cx="1500.8" cy="1020.4" r="6.7"/><circle cx="1491.5" cy="1026.6" r="6.7"/><circle cx="1483.8" cy="1031.2" r="6.7"/><circle cx="1471.4" cy="1008.0" r="6.7"/><circle cx="1463.7" cy="1015.8" r="6.7"/><circle cx="1476.1" cy="1015.8" r="6.7"/><circle cx="1460.6" cy="1025.0" r="6.7"/><circle cx="1473.0" cy="1028.1" r="6.7"/><circle cx="1466.8" cy="1037.4" r="6.7"/><circle cx="1451.4" cy="1034.3" r="6.7"/><circle cx="1436.0" cy="1031.2" r="6.7"/><circle cx="1428.3" cy="1028.1" r="6.7"/><circle cx="1437.5" cy="1040.4" r="6.7"/><circle cx="1446.8" cy="1046.6" r="6.7"/><circle cx="1434.4" cy="1055.9" r="6.7"/><circle cx="1451.4" cy="1052.8" r="6.7"/><circle cx="1463.7" cy="1049.7" r="6.7"/><circle cx="1474.5" cy="1048.2" r="6.7"/><circle cx="1482.2" cy="1043.5" r="6.7"/><circle cx="1493.0" cy="1049.7" r="6.7"/><circle cx="1476.1" cy="1059.0" r="6.7"/><circle cx="1463.7" cy="1062.0" r="6.7"/><circle cx="1468.4" cy="1068.2" r="6.7"/><circle cx="1454.5" cy="1066.7" r="6.7"/><circle cx="1520.8" cy="1049.7" r="6.7"/><circle cx="1527.0" cy="1062.0" r="6.7"/><circle cx="1389.7" cy="1015.8" r="6.7"/><circle cx="1409.7" cy="1017.3" r="6.7"/><circle cx="1405.1" cy="1025.0" r="6.7"/><circle cx="1414.4" cy="1029.6" r="6.7"/><circle cx="1392.8" cy="1028.1" r="6.7"/><circle cx="1372.7" cy="1029.6" r="6.7"/><circle cx="1382.0" cy="1031.2" r="6.7"/><circle cx="1395.9" cy="1038.9" r="6.7"/><circle cx="1394.3" cy="1046.6" r="6.7"/><circle cx="1385.1" cy="1051.2" r="6.7"/><circle cx="1374.3" cy="1051.2" r="6.7"/><circle cx="1368.1" cy="1065.1" r="6.7"/><circle cx="1382.0" cy="1065.1" r="6.7"/><circle cx="1408.2" cy="1065.1" r="6.7"/><circle cx="1419.0" cy="1066.7" r="6.7"/><circle cx="1380.3" cy="886.1" r="6.7"/><circle cx="1381.6" cy="886.1" r="6.7"/><circle cx="1392.3" cy="888.0" r="6.7"/><circle cx="1392.4" cy="888.5" r="6.7"/><circle cx="1397.9" cy="895.1" r="6.7"/><circle cx="1395.0" cy="895.3" r="6.7"/><circle cx="1397.0" cy="892.7" r="6.7"/><circle cx="1396.9" cy="893.0" r="6.7"/><circle cx="1369.7" cy="895.0" r="6.7"/><circle cx="1371.6" cy="897.3" r="6.7"/><circle cx="1368.4" cy="893.6" r="6.7"/><circle cx="1370.1" cy="896.1" r="6.7"/><circle cx="1381.6" cy="914.3" r="6.7"/><circle cx="1392.8" cy="902.2" r="6.7"/><circle cx="1396.6" cy="911.2" r="6.7"/><circle cx="1395.3" cy="911.4" r="6.7"/><circle cx="1381.9" cy="912.7" r="6.7"/><circle cx="1384.5" cy="912.6" r="6.7"/><circle cx="1389.6" cy="916.5" r="6.7"/><circle cx="1382.6" cy="920.1" r="6.7"/><circle cx="1389.3" cy="924.8" r="6.7"/><circle cx="1389.2" cy="924.7" r="6.7"/><circle cx="1399.4" cy="928.2" r="6.7"/><circle cx="1409.8" cy="928.0" r="6.7"/><circle cx="1410.6" cy="930.6" r="6.7"/><circle cx="1403.5" cy="936.6" r="6.7"/><circle cx="1422.2" cy="930.0" r="6.7"/><circle cx="1419.2" cy="921.8" r="6.7"/><circle cx="1427.2" cy="923.0" r="6.7"/><circle cx="1425.9" cy="923.3" r="6.7"/><circle cx="1434.1" cy="934.6" r="6.7"/><circle cx="1424.6" cy="922.9" r="6.7"/><circle cx="1439.2" cy="943.1" r="6.7"/><circle cx="1436.8" cy="941.4" r="6.7"/><circle cx="1426.0" cy="931.6" r="6.7"/><circle cx="1425.5" cy="943.6" r="6.7"/><circle cx="1374.8" cy="935.7" r="6.7"/><circle cx="1380.5" cy="933.8" r="6.7"/><circle cx="1381.5" cy="931.1" r="6.7"/><circle cx="1375.5" cy="934.5" r="6.7"/><circle cx="1385.3" cy="939.7" r="6.7"/><circle cx="1384.8" cy="949.9" r="6.7"/><circle cx="1404.5" cy="937.2" r="6.7"/><circle cx="1393.9" cy="945.5" r="6.7"/><circle cx="1381.2" cy="949.1" r="6.7"/><circle cx="1382.2" cy="950.6" r="6.7"/><circle cx="1404.6" cy="945.1" r="6.7"/><circle cx="1407.1" cy="947.0" r="6.7"/><circle cx="1422.6" cy="944.8" r="6.7"/><circle cx="1422.5" cy="943.9" r="6.7"/><circle cx="1431.2" cy="948.6" r="6.7"/><circle cx="1432.1" cy="947.5" r="6.7"/><circle cx="1421.5" cy="963.9" r="6.7"/><circle cx="1433.2" cy="963.4" r="6.7"/><circle cx="1431.0" cy="964.1" r="6.7"/><circle cx="1433.6" cy="962.1" r="6.7"/><circle cx="1420.4" cy="965.9" r="6.7"/><circle cx="1423.1" cy="963.9" r="6.7"/><circle cx="1397.3" cy="966.4" r="6.7"/><circle cx="1407.1" cy="968.5" r="6.7"/><circle cx="1403.8" cy="973.5" r="6.7"/><circle cx="1406.6" cy="972.8" r="6.7"/><circle cx="1387.2" cy="973.3" r="6.7"/><circle cx="1384.0" cy="970.4" r="6.7"/><circle cx="1370.7" cy="971.0" r="6.7"/><circle cx="1371.8" cy="970.6" r="6.7"/><circle cx="1374.2" cy="981.1" r="6.7"/><circle cx="1381.1" cy="974.1" r="6.7"/><circle cx="1381.8" cy="981.2" r="6.7"/><circle cx="1389.1" cy="981.4" r="6.7"/><circle cx="1378.6" cy="983.2" r="6.7"/><circle cx="1381.8" cy="980.9" r="6.7"/><circle cx="1393.3" cy="987.1" r="6.7"/><circle cx="1389.3" cy="979.4" r="6.7"/><circle cx="1394.5" cy="993.4" r="6.7"/><circle cx="1396.1" cy="994.4" r="6.7"/><circle cx="1389.9" cy="989.1" r="6.7"/><circle cx="1390.9" cy="991.4" r="6.7"/><circle cx="1371.1" cy="1003.3" r="6.7"/><circle cx="1380.2" cy="997.6" r="6.7"/><circle cx="1369.3" cy="1002.3" r="6.7"/><circle cx="1368.6" cy="1004.6" r="6.7"/><circle cx="1429.9" cy="979.1" r="6.7"/><circle cx="1431.9" cy="981.5" r="6.7"/><circle cx="1435.7" cy="971.6" r="6.7"/><circle cx="1433.6" cy="980.8" r="6.7"/><circle cx="1449.1" cy="984.9" r="6.7"/><circle cx="1446.6" cy="983.0" r="6.7"/><circle cx="1449.4" cy="984.1" r="6.7"/><circle cx="1448.3" cy="983.3" r="6.7"/><circle cx="1446.6" cy="989.5" r="6.7"/><circle cx="1454.3" cy="989.0" r="6.7"/><circle cx="1468.2" cy="1004.6" r="6.7"/><circle cx="1455.8" cy="998.5" r="6.7"/><circle cx="1439.8" cy="1008.3" r="6.7"/><circle cx="1436.7" cy="1006.3" r="6.7"/><circle cx="1435.6" cy="1006.5" r="6.7"/><circle cx="1439.7" cy="1008.3" r="6.7"/><circle cx="1469.4" cy="901.4" r="6.7"/><circle cx="1471.3" cy="901.4" r="6.7"/><circle cx="1468.5" cy="901.3" r="6.7"/><circle cx="1471.5" cy="903.2" r="6.7"/><circle cx="1469.2" cy="925.9" r="6.7"/><circle cx="1469.8" cy="924.4" r="6.7"/><circle cx="1472.4" cy="922.3" r="6.7"/><circle cx="1468.2" cy="922.0" r="6.7"/><circle cx="1493.9" cy="914.5" r="6.7"/><circle cx="1495.4" cy="922.2" r="6.7"/><circle cx="1504.5" cy="926.1" r="6.7"/><circle cx="1497.3" cy="925.0" r="6.7"/><circle cx="1503.6" cy="931.9" r="6.7"/><circle cx="1504.0" cy="934.3" r="6.7"/><circle cx="1482.5" cy="943.0" r="6.7"/><circle cx="1482.1" cy="944.5" r="6.7"/><circle cx="1493.2" cy="939.7" r="6.7"/><circle cx="1505.1" cy="943.8" r="6.7"/><circle cx="1510.9" cy="951.9" r="6.7"/><circle cx="1503.1" cy="946.9" r="6.7"/><circle cx="1510.7" cy="951.8" r="6.7"/><circle cx="1510.0" cy="952.9" r="6.7"/><circle cx="1473.9" cy="951.5" r="6.7"/><circle cx="1484.4" cy="943.6" r="6.7"/><circle cx="1465.4" cy="959.3" r="6.7"/><circle cx="1471.6" cy="951.3" r="6.7"/><circle cx="1462.9" cy="961.5" r="6.7"/><circle cx="1462.0" cy="964.6" r="6.7"/><circle cx="1474.6" cy="967.4" r="6.7"/><circle cx="1463.5" cy="967.9" r="6.7"/><circle cx="1477.0" cy="966.8" r="6.7"/><circle cx="1478.6" cy="953.1" r="6.7"/><circle cx="1481.9" cy="979.0" r="6.7"/><circle cx="1483.0" cy="976.6" r="6.7"/><circle cx="1473.3" cy="971.5" r="6.7"/><circle cx="1473.2" cy="973.4" r="6.7"/><circle cx="1504.8" cy="976.3" r="6.7"/><circle cx="1502.5" cy="970.9" r="6.7"/><circle cx="1508.3" cy="971.1" r="6.7"/><circle cx="1501.6" cy="970.6" r="6.7"/><circle cx="1516.0" cy="975.2" r="6.7"/><circle cx="1504.0" cy="978.5" r="6.7"/><circle cx="1525.8" cy="981.2" r="6.7"/><circle cx="1522.4" cy="976.8" r="6.7"/><circle cx="1495.0" cy="914.4" r="6.7"/><circle cx="1497.6" cy="909.7" r="6.7"/><circle cx="1514.5" cy="912.9" r="6.7"/><circle cx="1515.5" cy="912.1" r="6.7"/><circle cx="1527.5" cy="895.7" r="6.7"/><circle cx="1525.8" cy="894.7" r="6.7"/><circle cx="1525.2" cy="895.4" r="6.7"/><circle cx="1523.9" cy="895.0" r="6.7"/><circle cx="1515.7" cy="910.9" r="6.7"/><circle cx="1523.0" cy="922.9" r="6.7"/><circle cx="1524.3" cy="923.3" r="6.7"/><circle cx="1523.7" cy="920.8" r="6.7"/><circle cx="1530.1" cy="993.7" r="6.7"/><circle cx="1526.3" cy="990.5" r="6.7"/><circle cx="1526.3" cy="989.9" r="6.7"/><circle cx="1523.1" cy="991.7" r="6.7"/><circle cx="1531.9" cy="989.4" r="6.7"/><circle cx="1529.0" cy="997.1" r="6.7"/><circle cx="1496.1" cy="1005.4" r="6.7"/><circle cx="1493.2" cy="1010.0" r="6.7"/><circle cx="1497.6" cy="1018.2" r="6.7"/><circle cx="1499.9" cy="1015.1" r="6.7"/><circle cx="1507.4" cy="1019.0" r="6.7"/><circle cx="1506.0" cy="1015.2" r="6.7"/><circle cx="1497.8" cy="1022.5" r="6.7"/><circle cx="1497.6" cy="1021.7" r="6.7"/><circle cx="1496.6" cy="1024.1" r="6.7"/><circle cx="1490.7" cy="1028.7" r="6.7"/><circle cx="1488.9" cy="1026.4" r="6.7"/><circle cx="1485.2" cy="1037.3" r="6.7"/><circle cx="1466.0" cy="1011.7" r="6.7"/><circle cx="1463.4" cy="1002.8" r="6.7"/><circle cx="1468.0" cy="1014.1" r="6.7"/><circle cx="1463.0" cy="1018.6" r="6.7"/><circle cx="1473.0" cy="1023.3" r="6.7"/><circle cx="1467.5" cy="1017.5" r="6.7"/><circle cx="1467.3" cy="1028.2" r="6.7"/><circle cx="1462.6" cy="1034.3" r="6.7"/><circle cx="1466.6" cy="1027.1" r="6.7"/><circle cx="1466.7" cy="1027.3" r="6.7"/><circle cx="1472.9" cy="1042.7" r="6.7"/><circle cx="1466.5" cy="1043.2" r="6.7"/><circle cx="1458.7" cy="1034.4" r="6.7"/><circle cx="1447.2" cy="1041.4" r="6.7"/><circle cx="1438.2" cy="1036.1" r="6.7"/><circle cx="1436.0" cy="1036.8" r="6.7"/><circle cx="1432.4" cy="1032.7" r="6.7"/><circle cx="1433.2" cy="1035.9" r="6.7"/><circle cx="1433.1" cy="1032.9" r="6.7"/><circle cx="1438.0" cy="1047.7" r="6.7"/><circle cx="1449.1" cy="1047.4" r="6.7"/><circle cx="1441.6" cy="1041.9" r="6.7"/><circle cx="1434.0" cy="1050.7" r="6.7"/><circle cx="1441.3" cy="1052.5" r="6.7"/><circle cx="1457.9" cy="1054.9" r="6.7"/><circle cx="1447.6" cy="1049.1" r="6.7"/><circle cx="1462.7" cy="1055.9" r="6.7"/><circle cx="1457.6" cy="1051.3" r="6.7"/><circle cx="1470.4" cy="1047.2" r="6.7"/><circle cx="1480.1" cy="1044.8" r="6.7"/><circle cx="1481.5" cy="1038.9" r="6.7"/><circle cx="1478.8" cy="1047.1" r="6.7"/><circle cx="1487.2" cy="1046.0" r="6.7"/><circle cx="1488.2" cy="1047.0" r="6.7"/><circle cx="1471.1" cy="1062.4" r="6.7"/><circle cx="1476.3" cy="1053.0" r="6.7"/><circle cx="1463.9" cy="1054.0" r="6.7"/><circle cx="1470.9" cy="1060.2" r="6.7"/><circle cx="1465.1" cy="1065.0" r="6.7"/><circle cx="1464.6" cy="1066.8" r="6.7"/><circle cx="1452.5" cy="1057.4" r="6.7"/><circle cx="1459.5" cy="1063.2" r="6.7"/><circle cx="1524.6" cy="1055.4" r="6.7"/><circle cx="1523.2" cy="1057.6" r="6.7"/><circle cx="1525.6" cy="1057.4" r="6.7"/><circle cx="1522.3" cy="1055.5" r="6.7"/><circle cx="1390.2" cy="1021.3" r="6.7"/><circle cx="1392.4" cy="1020.5" r="6.7"/><circle cx="1407.7" cy="1022.0" r="6.7"/><circle cx="1408.5" cy="1022.3" r="6.7"/><circle cx="1397.7" cy="1027.1" r="6.7"/><circle cx="1401.3" cy="1027.9" r="6.7"/><circle cx="1414.4" cy="1025.5" r="6.7"/><circle cx="1422.0" cy="1027.3" r="6.7"/><circle cx="1388.0" cy="1029.4" r="6.7"/><circle cx="1393.0" cy="1023.6" r="6.7"/><circle cx="1379.4" cy="1030.8" r="6.7"/><circle cx="1376.6" cy="1030.3" r="6.7"/><circle cx="1376.3" cy="1030.2" r="6.7"/><circle cx="1387.2" cy="1032.5" r="6.7"/><circle cx="1395.2" cy="1044.7" r="6.7"/><circle cx="1395.9" cy="1040.7" r="6.7"/><circle cx="1396.6" cy="1045.5" r="6.7"/><circle cx="1391.1" cy="1050.6" r="6.7"/><circle cx="1389.3" cy="1047.4" r="6.7"/><circle cx="1388.6" cy="1048.0" r="6.7"/><circle cx="1377.3" cy="1051.0" r="6.7"/><circle cx="1377.7" cy="1057.1" r="6.7"/><circle cx="1374.3" cy="1065.0" r="6.7"/><circle cx="1371.3" cy="1058.3" r="6.7"/><circle cx="1374.7" cy="1063.1" r="6.7"/><circle cx="1384.7" cy="1058.5" r="6.7"/><circle cx="1410.5" cy="1067.0" r="6.7"/><circle cx="1411.9" cy="1064.1" r="6.7"/><circle cx="1414.5" cy="1066.0" r="6.7"/><circle cx="1414.1" cy="1065.8" r="6.7"/><circle cx="1578.2" cy="383.1" r="6.7"/><circle cx="1572.0" cy="392.3" r="6.7"/><circle cx="1565.9" cy="400.1" r="6.7"/><circle cx="1587.5" cy="381.5" r="6.7"/><circle cx="1596.7" cy="386.2" r="6.7"/><circle cx="1598.3" cy="393.9" r="6.7"/><circle cx="1595.2" cy="403.1" r="6.7"/><circle cx="1615.2" cy="386.2" r="6.7"/><circle cx="1627.6" cy="393.9" r="6.7"/><circle cx="1627.6" cy="403.1" r="6.7"/><circle cx="1607.5" cy="420.1" r="6.7"/><circle cx="1636.8" cy="420.1" r="6.7"/><circle cx="1661.5" cy="429.4" r="6.7"/><circle cx="1678.5" cy="418.6" r="6.7"/><circle cx="1692.4" cy="434.0" r="6.7"/><circle cx="1676.9" cy="441.7" r="6.7"/><circle cx="1701.6" cy="455.6" r="6.7"/><circle cx="1541.2" cy="437.1" r="6.7"/><circle cx="1570.5" cy="447.9" r="6.7"/><circle cx="1536.5" cy="464.9" r="6.7"/><circle cx="1539.6" cy="478.7" r="6.7"/><circle cx="1573.6" cy="475.6" r="6.7"/><circle cx="1598.3" cy="469.5" r="6.7"/><circle cx="1607.5" cy="472.6" r="6.7"/><circle cx="1621.4" cy="437.1" r="6.7"/><circle cx="1626.0" cy="446.3" r="6.7"/><circle cx="1641.4" cy="441.7" r="6.7"/><circle cx="1639.9" cy="452.5" r="6.7"/><circle cx="1622.9" cy="460.2" r="6.7"/><circle cx="1632.2" cy="461.8" r="6.7"/><circle cx="1641.4" cy="464.9" r="6.7"/><circle cx="1627.6" cy="471.0" r="6.7"/><circle cx="1636.8" cy="471.0" r="6.7"/><circle cx="1636.8" cy="477.2" r="6.7"/><circle cx="1635.3" cy="486.4" r="6.7"/><circle cx="1647.6" cy="484.9" r="6.7"/><circle cx="1550.4" cy="486.4" r="6.7"/><circle cx="1556.6" cy="491.1" r="6.7"/><circle cx="1545.8" cy="491.1" r="6.7"/><circle cx="1548.9" cy="503.4" r="6.7"/><circle cx="1536.5" cy="503.4" r="6.7"/><circle cx="1538.1" cy="515.8" r="6.7"/><circle cx="1595.2" cy="489.5" r="6.7"/><circle cx="1604.4" cy="492.6" r="6.7"/><circle cx="1612.1" cy="497.2" r="6.7"/><circle cx="1619.9" cy="491.1" r="6.7"/><circle cx="1630.6" cy="497.2" r="6.7"/><circle cx="1621.4" cy="506.5" r="6.7"/><circle cx="1630.6" cy="506.5" r="6.7"/><circle cx="1641.4" cy="514.2" r="6.7"/><circle cx="1653.8" cy="498.8" r="6.7"/><circle cx="1670.8" cy="492.6" r="6.7"/><circle cx="1656.9" cy="515.8" r="6.7"/><circle cx="1666.1" cy="512.7" r="6.7"/><circle cx="1673.8" cy="509.6" r="6.7"/><circle cx="1686.2" cy="512.7" r="6.7"/><circle cx="1695.4" cy="512.7" r="6.7"/><circle cx="1701.6" cy="501.9" r="6.7"/><circle cx="1615.2" cy="526.6" r="6.7"/><circle cx="1624.5" cy="523.5" r="6.7"/><circle cx="1633.7" cy="525.0" r="6.7"/><circle cx="1643.0" cy="520.4" r="6.7"/><circle cx="1626.0" cy="532.7" r="6.7"/><circle cx="1643.0" cy="535.8" r="6.7"/><circle cx="1632.2" cy="540.4" r="6.7"/><circle cx="1609.1" cy="542.0" r="6.7"/><circle cx="1618.3" cy="549.7" r="6.7"/><circle cx="1584.4" cy="518.8" r="6.7"/><circle cx="1601.3" cy="517.3" r="6.7"/><circle cx="1578.2" cy="528.1" r="6.7"/><circle cx="1576.7" cy="534.3" r="6.7"/><circle cx="1593.6" cy="529.6" r="6.7"/><circle cx="1666.1" cy="532.7" r="6.7"/><circle cx="1670.8" cy="543.5" r="6.7"/><circle cx="1680.0" cy="546.6" r="6.7"/><circle cx="1681.6" cy="557.4" r="6.7"/><circle cx="1701.6" cy="552.8" r="6.7"/><circle cx="1544.3" cy="543.5" r="6.7"/><circle cx="1556.6" cy="548.2" r="6.7"/><circle cx="1542.7" cy="554.3" r="6.7"/><circle cx="1582.8" cy="548.2" r="6.7"/><circle cx="1576.7" cy="555.9" r="6.7"/><circle cx="1639.9" cy="559.0" r="6.7"/><circle cx="1647.6" cy="559.0" r="6.7"/><circle cx="1661.5" cy="562.0" r="6.7"/><circle cx="1547.3" cy="565.1" r="6.7"/><circle cx="1558.1" cy="566.7" r="6.7"/><circle cx="1619.9" cy="566.7" r="6.7"/><circle cx="1693.9" cy="566.7" r="6.7"/><circle cx="1575.9" cy="387.1" r="6.7"/><circle cx="1575.4" cy="386.3" r="6.7"/><circle cx="1568.4" cy="395.3" r="6.7"/><circle cx="1574.4" cy="390.3" r="6.7"/><circle cx="1571.5" cy="395.9" r="6.7"/><circle cx="1569.1" cy="395.9" r="6.7"/><circle cx="1581.5" cy="382.2" r="6.7"/><circle cx="1590.5" cy="384.8" r="6.7"/><circle cx="1593.2" cy="382.5" r="6.7"/><circle cx="1590.3" cy="385.0" r="6.7"/><circle cx="1598.8" cy="390.1" r="6.7"/><circle cx="1596.3" cy="396.9" r="6.7"/><circle cx="1595.9" cy="397.5" r="6.7"/><circle cx="1595.9" cy="395.2" r="6.7"/><circle cx="1622.2" cy="390.0" r="6.7"/><circle cx="1623.1" cy="391.1" r="6.7"/><circle cx="1627.9" cy="397.0" r="6.7"/><circle cx="1628.9" cy="401.4" r="6.7"/><circle cx="1627.5" cy="398.4" r="6.7"/><circle cx="1627.7" cy="396.5" r="6.7"/><circle cx="1537.8" cy="471.7" r="6.7"/><circle cx="1538.3" cy="472.1" r="6.7"/><circle cx="1540.0" cy="485.1" r="6.7"/><circle cx="1536.7" cy="471.6" r="6.7"/><circle cx="1603.1" cy="469.2" r="6.7"/><circle cx="1601.9" cy="472.7" r="6.7"/><circle cx="1602.8" cy="471.9" r="6.7"/><circle cx="1602.2" cy="471.7" r="6.7"/><circle cx="1624.1" cy="440.6" r="6.7"/><circle cx="1622.5" cy="444.3" r="6.7"/><circle cx="1622.6" cy="443.6" r="6.7"/><circle cx="1623.0" cy="443.6" r="6.7"/><circle cx="1641.2" cy="448.3" r="6.7"/><circle cx="1639.8" cy="446.4" r="6.7"/><circle cx="1635.6" cy="457.6" r="6.7"/><circle cx="1639.5" cy="445.1" r="6.7"/><circle cx="1626.4" cy="464.0" r="6.7"/><circle cx="1625.5" cy="464.7" r="6.7"/><circle cx="1631.1" cy="466.6" r="6.7"/><circle cx="1628.3" cy="467.4" r="6.7"/><circle cx="1638.9" cy="466.0" r="6.7"/><circle cx="1637.8" cy="463.0" r="6.7"/><circle cx="1632.4" cy="473.3" r="6.7"/><circle cx="1630.5" cy="475.7" r="6.7"/><circle cx="1635.9" cy="481.5" r="6.7"/><circle cx="1632.1" cy="472.3" r="6.7"/><circle cx="1638.2" cy="468.2" r="6.7"/><circle cx="1637.8" cy="476.6" r="6.7"/><circle cx="1636.6" cy="477.4" r="6.7"/><circle cx="1639.3" cy="486.8" r="6.7"/><circle cx="1642.5" cy="486.7" r="6.7"/><circle cx="1641.4" cy="484.2" r="6.7"/><circle cx="1542.9" cy="481.8" r="6.7"/><circle cx="1553.2" cy="487.8" r="6.7"/><circle cx="1550.6" cy="491.6" r="6.7"/><circle cx="1551.6" cy="490.5" r="6.7"/><circle cx="1552.4" cy="490.8" r="6.7"/><circle cx="1548.8" cy="495.9" r="6.7"/><circle cx="1542.0" cy="501.8" r="6.7"/><circle cx="1542.6" cy="503.0" r="6.7"/><circle cx="1542.7" cy="496.6" r="6.7"/><circle cx="1541.4" cy="504.3" r="6.7"/><circle cx="1537.9" cy="507.9" r="6.7"/><circle cx="1537.8" cy="507.8" r="6.7"/><circle cx="1598.3" cy="490.3" r="6.7"/><circle cx="1598.1" cy="490.9" r="6.7"/><circle cx="1607.9" cy="495.5" r="6.7"/><circle cx="1606.5" cy="492.9" r="6.7"/><circle cx="1615.5" cy="495.6" r="6.7"/><circle cx="1617.0" cy="498.7" r="6.7"/><circle cx="1620.5" cy="497.7" r="6.7"/><circle cx="1627.6" cy="492.8" r="6.7"/><circle cx="1631.8" cy="493.4" r="6.7"/><circle cx="1627.6" cy="502.5" r="6.7"/><circle cx="1614.5" cy="501.3" r="6.7"/><circle cx="1623.3" cy="504.8" r="6.7"/><circle cx="1627.4" cy="504.8" r="6.7"/><circle cx="1623.6" cy="506.1" r="6.7"/><circle cx="1650.6" cy="516.4" r="6.7"/><circle cx="1640.2" cy="517.8" r="6.7"/><circle cx="1651.6" cy="490.2" r="6.7"/><circle cx="1651.7" cy="489.6" r="6.7"/><circle cx="1659.0" cy="513.4" r="6.7"/><circle cx="1658.9" cy="515.9" r="6.7"/><circle cx="1671.2" cy="509.9" r="6.7"/><circle cx="1660.5" cy="513.2" r="6.7"/><circle cx="1669.0" cy="511.1" r="6.7"/><circle cx="1669.9" cy="510.5" r="6.7"/><circle cx="1692.6" cy="512.7" r="6.7"/><circle cx="1690.8" cy="513.7" r="6.7"/><circle cx="1692.6" cy="512.2" r="6.7"/><circle cx="1691.9" cy="513.5" r="6.7"/><circle cx="1699.1" cy="506.0" r="6.7"/><circle cx="1696.9" cy="508.4" r="6.7"/><circle cx="1620.6" cy="524.2" r="6.7"/><circle cx="1620.1" cy="531.5" r="6.7"/><circle cx="1627.2" cy="528.0" r="6.7"/><circle cx="1619.5" cy="526.9" r="6.7"/><circle cx="1640.4" cy="531.0" r="6.7"/><circle cx="1632.2" cy="527.9" r="6.7"/><circle cx="1651.9" cy="519.2" r="6.7"/><circle cx="1641.2" cy="515.7" r="6.7"/><circle cx="1628.1" cy="539.0" r="6.7"/><circle cx="1621.4" cy="530.6" r="6.7"/><circle cx="1637.4" cy="538.8" r="6.7"/><circle cx="1643.3" cy="527.8" r="6.7"/><circle cx="1632.7" cy="534.4" r="6.7"/><circle cx="1628.7" cy="535.9" r="6.7"/><circle cx="1614.1" cy="546.1" r="6.7"/><circle cx="1615.6" cy="547.3" r="6.7"/><circle cx="1613.1" cy="544.6" r="6.7"/><circle cx="1613.0" cy="546.2" r="6.7"/><circle cx="1583.2" cy="525.2" r="6.7"/><circle cx="1581.6" cy="525.6" r="6.7"/><circle cx="1598.9" cy="521.7" r="6.7"/><circle cx="1597.6" cy="522.1" r="6.7"/><circle cx="1584.5" cy="528.4" r="6.7"/><circle cx="1581.3" cy="523.8" r="6.7"/><circle cx="1578.8" cy="541.7" r="6.7"/><circle cx="1576.4" cy="531.6" r="6.7"/><circle cx="1587.4" cy="529.5" r="6.7"/><circle cx="1588.6" cy="526.6" r="6.7"/><circle cx="1669.9" cy="538.1" r="6.7"/><circle cx="1671.0" cy="538.9" r="6.7"/><circle cx="1668.7" cy="538.3" r="6.7"/><circle cx="1666.2" cy="537.8" r="6.7"/><circle cx="1680.6" cy="550.1" r="6.7"/><circle cx="1675.8" cy="546.5" r="6.7"/><circle cx="1687.4" cy="560.2" r="6.7"/><circle cx="1689.6" cy="562.0" r="6.7"/><circle cx="1697.4" cy="558.0" r="6.7"/><circle cx="1696.5" cy="558.7" r="6.7"/><circle cx="1550.2" cy="544.1" r="6.7"/><circle cx="1551.1" cy="546.0" r="6.7"/><circle cx="1550.9" cy="544.2" r="6.7"/><circle cx="1550.0" cy="544.7" r="6.7"/><circle cx="1548.4" cy="552.3" r="6.7"/><circle cx="1547.2" cy="552.0" r="6.7"/><circle cx="1581.2" cy="542.7" r="6.7"/><circle cx="1579.6" cy="550.2" r="6.7"/><circle cx="1580.9" cy="553.8" r="6.7"/><circle cx="1579.1" cy="552.2" r="6.7"/><circle cx="1644.7" cy="557.4" r="6.7"/><circle cx="1643.7" cy="557.6" r="6.7"/><circle cx="1652.8" cy="560.7" r="6.7"/><circle cx="1653.7" cy="561.3" r="6.7"/><circle cx="1656.5" cy="562.4" r="6.7"/><circle cx="1654.7" cy="562.2" r="6.7"/><circle cx="1545.7" cy="560.5" r="6.7"/><circle cx="1543.9" cy="559.6" r="6.7"/><circle cx="1552.9" cy="567.4" r="6.7"/><circle cx="1555.5" cy="567.8" r="6.7"/><circle cx="1697.6" cy="558.2" r="6.7"/><circle cx="1698.6" cy="561.0" r="6.7"/><circle cx="1563.1" cy="603.9" r="6.7"/><circle cx="1578.6" cy="605.4" r="6.7"/><circle cx="1573.9" cy="614.7" r="6.7"/><circle cx="1552.3" cy="619.3" r="6.7"/><circle cx="1561.6" cy="625.5" r="6.7"/><circle cx="1572.4" cy="625.5" r="6.7"/><circle cx="1549.3" cy="628.6" r="6.7"/><circle cx="1544.6" cy="634.7" r="6.7"/><circle cx="1584.7" cy="631.7" r="6.7"/><circle cx="1578.6" cy="644.0" r="6.7"/><circle cx="1612.5" cy="619.3" r="6.7"/><circle cx="1620.2" cy="623.9" r="6.7"/><circle cx="1646.4" cy="605.4" r="6.7"/><circle cx="1651.1" cy="613.1" r="6.7"/><circle cx="1646.4" cy="627.0" r="6.7"/><circle cx="1657.2" cy="625.5" r="6.7"/><circle cx="1640.3" cy="636.3" r="6.7"/><circle cx="1651.1" cy="637.8" r="6.7"/><circle cx="1646.4" cy="648.6" r="6.7"/><circle cx="1671.1" cy="631.7" r="6.7"/><circle cx="1680.4" cy="636.3" r="6.7"/><circle cx="1689.6" cy="637.8" r="6.7"/><circle cx="1698.9" cy="645.5" r="6.7"/><circle cx="1685.0" cy="602.3" r="6.7"/><circle cx="1691.2" cy="661.0" r="6.7"/><circle cx="1598.6" cy="654.8" r="6.7"/><circle cx="1611.0" cy="651.7" r="6.7"/><circle cx="1618.7" cy="654.8" r="6.7"/><circle cx="1627.9" cy="656.3" r="6.7"/><circle cx="1651.1" cy="661.0" r="6.7"/><circle cx="1660.3" cy="659.4" r="6.7"/><circle cx="1646.4" cy="668.7" r="6.7"/><circle cx="1658.8" cy="667.1" r="6.7"/><circle cx="1666.5" cy="665.6" r="6.7"/><circle cx="1655.7" cy="676.4" r="6.7"/><circle cx="1663.4" cy="677.9" r="6.7"/><circle cx="1651.1" cy="682.6" r="6.7"/><circle cx="1646.4" cy="691.8" r="6.7"/><circle cx="1671.1" cy="684.1" r="6.7"/><circle cx="1685.0" cy="682.6" r="6.7"/><circle cx="1695.8" cy="677.9" r="6.7"/><circle cx="1703.5" cy="676.4" r="6.7"/><circle cx="1675.8" cy="693.4" r="6.7"/><circle cx="1685.0" cy="698.0" r="6.7"/><circle cx="1666.5" cy="704.2" r="6.7"/><circle cx="1651.1" cy="705.7" r="6.7"/><circle cx="1660.3" cy="701.1" r="6.7"/><circle cx="1685.0" cy="713.4" r="6.7"/><circle cx="1678.8" cy="727.3" r="6.7"/><circle cx="1680.4" cy="739.6" r="6.7"/><circle cx="1658.8" cy="739.6" r="6.7"/><circle cx="1666.5" cy="744.3" r="6.7"/><circle cx="1674.2" cy="750.4" r="6.7"/><circle cx="1632.6" cy="674.9" r="6.7"/><circle cx="1631.0" cy="685.6" r="6.7"/><circle cx="1632.6" cy="694.9" r="6.7"/><circle cx="1640.3" cy="702.6" r="6.7"/><circle cx="1626.4" cy="702.6" r="6.7"/><circle cx="1618.7" cy="707.2" r="6.7"/><circle cx="1618.7" cy="716.5" r="6.7"/><circle cx="1600.2" cy="670.2" r="6.7"/><circle cx="1611.0" cy="670.2" r="6.7"/><circle cx="1595.5" cy="679.5" r="6.7"/><circle cx="1601.7" cy="688.7" r="6.7"/><circle cx="1611.0" cy="684.1" r="6.7"/><circle cx="1615.6" cy="693.4" r="6.7"/><circle cx="1594.0" cy="701.1" r="6.7"/><circle cx="1603.3" cy="701.1" r="6.7"/><circle cx="1590.9" cy="711.9" r="6.7"/><circle cx="1598.6" cy="711.9" r="6.7"/><circle cx="1573.9" cy="676.4" r="6.7"/><circle cx="1580.1" cy="671.8" r="6.7"/><circle cx="1580.1" cy="679.5" r="6.7"/><circle cx="1550.8" cy="681.0" r="6.7"/><circle cx="1541.5" cy="668.7" r="6.7"/><circle cx="1547.7" cy="694.9" r="6.7"/><circle cx="1561.6" cy="701.1" r="6.7"/><circle cx="1541.5" cy="698.0" r="6.7"/><circle cx="1550.8" cy="721.1" r="6.7"/><circle cx="1560.1" cy="719.6" r="6.7"/><circle cx="1567.8" cy="718.0" r="6.7"/><circle cx="1577.0" cy="722.7" r="6.7"/><circle cx="1558.5" cy="733.5" r="6.7"/><circle cx="1572.4" cy="736.6" r="6.7"/><circle cx="1634.1" cy="730.4" r="6.7"/><circle cx="1631.0" cy="744.3" r="6.7"/><circle cx="1577.0" cy="755.1" r="6.7"/><circle cx="1592.5" cy="758.2" r="6.7"/><circle cx="1607.9" cy="752.0" r="6.7"/><circle cx="1607.9" cy="748.9" r="6.7"/><circle cx="1550.8" cy="762.8" r="6.7"/><circle cx="1543.1" cy="769.0" r="6.7"/><circle cx="1626.4" cy="767.4" r="6.7"/><circle cx="1629.5" cy="775.1" r="6.7"/><circle cx="1643.4" cy="772.0" r="6.7"/><circle cx="1566.2" cy="608.6" r="6.7"/><circle cx="1568.4" cy="608.3" r="6.7"/><circle cx="1568.7" cy="603.9" r="6.7"/><circle cx="1577.3" cy="609.0" r="6.7"/><circle cx="1567.8" cy="610.6" r="6.7"/><circle cx="1578.1" cy="608.6" r="6.7"/><circle cx="1551.0" cy="626.1" r="6.7"/><circle cx="1551.8" cy="623.6" r="6.7"/><circle cx="1565.4" cy="624.3" r="6.7"/><circle cx="1552.0" cy="628.0" r="6.7"/><circle cx="1578.2" cy="628.9" r="6.7"/><circle cx="1572.3" cy="620.4" r="6.7"/><circle cx="1547.0" cy="632.5" r="6.7"/><circle cx="1556.6" cy="628.3" r="6.7"/><circle cx="1548.9" cy="630.6" r="6.7"/><circle cx="1547.7" cy="633.7" r="6.7"/><circle cx="1582.9" cy="637.0" r="6.7"/><circle cx="1581.0" cy="636.7" r="6.7"/><circle cx="1582.8" cy="639.9" r="6.7"/><circle cx="1579.3" cy="637.0" r="6.7"/><circle cx="1616.6" cy="624.0" r="6.7"/><circle cx="1617.1" cy="620.8" r="6.7"/><circle cx="1615.3" cy="620.7" r="6.7"/><circle cx="1617.7" cy="620.9" r="6.7"/><circle cx="1650.0" cy="609.8" r="6.7"/><circle cx="1648.0" cy="607.3" r="6.7"/><circle cx="1647.6" cy="610.5" r="6.7"/><circle cx="1650.1" cy="610.4" r="6.7"/><circle cx="1652.7" cy="625.0" r="6.7"/><circle cx="1653.0" cy="625.1" r="6.7"/><circle cx="1654.6" cy="631.3" r="6.7"/><circle cx="1652.5" cy="620.0" r="6.7"/><circle cx="1645.4" cy="644.7" r="6.7"/><circle cx="1644.4" cy="641.4" r="6.7"/><circle cx="1648.1" cy="644.7" r="6.7"/><circle cx="1646.2" cy="635.4" r="6.7"/><circle cx="1647.7" cy="643.4" r="6.7"/><circle cx="1649.1" cy="644.3" r="6.7"/><circle cx="1665.2" cy="628.6" r="6.7"/><circle cx="1675.4" cy="631.9" r="6.7"/><circle cx="1676.7" cy="634.9" r="6.7"/><circle cx="1676.5" cy="633.5" r="6.7"/><circle cx="1693.3" cy="642.3" r="6.7"/><circle cx="1692.8" cy="642.5" r="6.7"/><circle cx="1694.3" cy="644.3" r="6.7"/><circle cx="1692.5" cy="640.1" r="6.7"/><circle cx="1605.8" cy="651.2" r="6.7"/><circle cx="1604.3" cy="653.9" r="6.7"/><circle cx="1605.4" cy="654.4" r="6.7"/><circle cx="1612.9" cy="651.4" r="6.7"/><circle cx="1614.5" cy="653.4" r="6.7"/><circle cx="1622.4" cy="655.9" r="6.7"/><circle cx="1622.8" cy="656.1" r="6.7"/><circle cx="1623.1" cy="653.8" r="6.7"/><circle cx="1648.8" cy="665.4" r="6.7"/><circle cx="1656.3" cy="659.9" r="6.7"/><circle cx="1654.8" cy="658.9" r="6.7"/><circle cx="1658.1" cy="662.8" r="6.7"/><circle cx="1637.6" cy="672.5" r="6.7"/><circle cx="1651.8" cy="666.5" r="6.7"/><circle cx="1657.7" cy="671.9" r="6.7"/><circle cx="1657.0" cy="665.0" r="6.7"/><circle cx="1664.1" cy="672.6" r="6.7"/><circle cx="1664.4" cy="670.0" r="6.7"/><circle cx="1652.9" cy="672.3" r="6.7"/><circle cx="1651.8" cy="673.6" r="6.7"/><circle cx="1657.6" cy="679.9" r="6.7"/><circle cx="1660.4" cy="673.5" r="6.7"/><circle cx="1655.2" cy="680.2" r="6.7"/><circle cx="1648.1" cy="677.8" r="6.7"/><circle cx="1642.8" cy="693.6" r="6.7"/><circle cx="1641.3" cy="695.0" r="6.7"/><circle cx="1669.5" cy="682.7" r="6.7"/><circle cx="1677.6" cy="682.7" r="6.7"/><circle cx="1687.0" cy="694.1" r="6.7"/><circle cx="1685.0" cy="691.5" r="6.7"/><circle cx="1699.5" cy="676.5" r="6.7"/><circle cx="1692.4" cy="678.1" r="6.7"/><circle cx="1699.8" cy="677.4" r="6.7"/><circle cx="1699.7" cy="676.6" r="6.7"/><circle cx="1680.6" cy="687.4" r="6.7"/><circle cx="1680.5" cy="686.5" r="6.7"/><circle cx="1685.0" cy="705.6" r="6.7"/><circle cx="1684.9" cy="691.9" r="6.7"/><circle cx="1671.4" cy="699.3" r="6.7"/><circle cx="1658.6" cy="704.3" r="6.7"/><circle cx="1644.5" cy="705.0" r="6.7"/><circle cx="1646.3" cy="705.9" r="6.7"/><circle cx="1654.8" cy="704.8" r="6.7"/><circle cx="1663.2" cy="701.8" r="6.7"/><circle cx="1683.3" cy="718.3" r="6.7"/><circle cx="1685.5" cy="706.4" r="6.7"/><circle cx="1681.5" cy="734.7" r="6.7"/><circle cx="1682.8" cy="722.4" r="6.7"/><circle cx="1676.8" cy="746.3" r="6.7"/><circle cx="1675.8" cy="743.3" r="6.7"/><circle cx="1662.9" cy="740.6" r="6.7"/><circle cx="1661.6" cy="742.9" r="6.7"/><circle cx="1671.4" cy="746.5" r="6.7"/><circle cx="1673.1" cy="742.6" r="6.7"/><circle cx="1672.3" cy="748.1" r="6.7"/><circle cx="1670.9" cy="746.5" r="6.7"/><circle cx="1633.7" cy="681.3" r="6.7"/><circle cx="1640.3" cy="672.7" r="6.7"/><circle cx="1630.9" cy="679.1" r="6.7"/><circle cx="1631.2" cy="681.3" r="6.7"/><circle cx="1629.9" cy="698.7" r="6.7"/><circle cx="1635.9" cy="697.6" r="6.7"/><circle cx="1634.5" cy="704.6" r="6.7"/><circle cx="1643.2" cy="697.7" r="6.7"/><circle cx="1620.8" cy="696.6" r="6.7"/><circle cx="1634.5" cy="703.1" r="6.7"/><circle cx="1618.1" cy="713.2" r="6.7"/><circle cx="1617.8" cy="701.9" r="6.7"/><circle cx="1618.5" cy="710.2" r="6.7"/><circle cx="1617.3" cy="712.5" r="6.7"/><circle cx="1597.1" cy="676.7" r="6.7"/><circle cx="1600.4" cy="665.6" r="6.7"/><circle cx="1610.3" cy="675.7" r="6.7"/><circle cx="1610.1" cy="678.9" r="6.7"/><circle cx="1598.4" cy="673.9" r="6.7"/><circle cx="1601.0" cy="684.3" r="6.7"/><circle cx="1600.1" cy="683.9" r="6.7"/><circle cx="1605.1" cy="691.9" r="6.7"/><circle cx="1606.8" cy="687.2" r="6.7"/><circle cx="1610.5" cy="676.2" r="6.7"/><circle cx="1616.4" cy="701.5" r="6.7"/><circle cx="1606.6" cy="690.8" r="6.7"/><circle cx="1600.0" cy="701.6" r="6.7"/><circle cx="1597.4" cy="706.5" r="6.7"/><circle cx="1599.3" cy="707.6" r="6.7"/><circle cx="1604.2" cy="693.0" r="6.7"/><circle cx="1591.4" cy="703.8" r="6.7"/><circle cx="1597.1" cy="711.6" r="6.7"/><circle cx="1597.7" cy="707.4" r="6.7"/><circle cx="1594.9" cy="707.6" r="6.7"/><circle cx="1578.5" cy="679.1" r="6.7"/><circle cx="1576.8" cy="678.4" r="6.7"/><circle cx="1578.3" cy="676.2" r="6.7"/><circle cx="1576.1" cy="672.8" r="6.7"/><circle cx="1580.7" cy="674.6" r="6.7"/><circle cx="1578.9" cy="675.7" r="6.7"/><circle cx="1546.8" cy="673.3" r="6.7"/><circle cx="1549.3" cy="685.7" r="6.7"/><circle cx="1549.0" cy="675.9" r="6.7"/><circle cx="1544.9" cy="674.3" r="6.7"/><circle cx="1548.8" cy="686.4" r="6.7"/><circle cx="1554.6" cy="697.5" r="6.7"/><circle cx="1555.4" cy="696.1" r="6.7"/><circle cx="1556.0" cy="699.4" r="6.7"/><circle cx="1545.6" cy="697.0" r="6.7"/><circle cx="1543.2" cy="696.4" r="6.7"/><circle cx="1553.5" cy="721.6" r="6.7"/><circle cx="1554.6" cy="720.5" r="6.7"/><circle cx="1553.4" cy="722.0" r="6.7"/><circle cx="1559.5" cy="728.5" r="6.7"/><circle cx="1570.9" cy="720.0" r="6.7"/><circle cx="1562.2" cy="719.2" r="6.7"/><circle cx="1576.2" cy="727.6" r="6.7"/><circle cx="1574.4" cy="719.0" r="6.7"/><circle cx="1557.7" cy="730.2" r="6.7"/><circle cx="1560.4" cy="727.7" r="6.7"/><circle cx="1566.3" cy="735.7" r="6.7"/><circle cx="1573.0" cy="730.3" r="6.7"/><circle cx="1631.9" cy="735.6" r="6.7"/><circle cx="1631.1" cy="737.2" r="6.7"/><circle cx="1631.4" cy="735.1" r="6.7"/><circle cx="1633.7" cy="734.0" r="6.7"/><circle cx="1587.6" cy="758.8" r="6.7"/><circle cx="1583.9" cy="758.3" r="6.7"/><circle cx="1586.2" cy="755.1" r="6.7"/><circle cx="1585.8" cy="755.9" r="6.7"/><circle cx="1608.0" cy="751.3" r="6.7"/><circle cx="1605.9" cy="751.5" r="6.7"/><circle cx="1606.8" cy="748.4" r="6.7"/><circle cx="1609.7" cy="751.4" r="6.7"/><circle cx="1548.5" cy="767.4" r="6.7"/><circle cx="1547.0" cy="766.4" r="6.7"/><circle cx="1547.5" cy="763.9" r="6.7"/><circle cx="1545.9" cy="765.5" r="6.7"/><circle cx="1627.8" cy="769.3" r="6.7"/><circle cx="1628.6" cy="770.6" r="6.7"/><circle cx="1630.0" cy="771.5" r="6.7"/><circle cx="1634.2" cy="772.4" r="6.7"/><circle cx="1636.3" cy="775.0" r="6.7"/><circle cx="1635.4" cy="774.9" r="6.7"/><circle cx="1540.9" cy="186.2" r="6.7"/><circle cx="1553.3" cy="184.6" r="6.7"/><circle cx="1520.9" cy="198.5" r="6.7"/><circle cx="1540.9" cy="200.1" r="6.7"/><circle cx="1528.6" cy="207.8" r="6.7"/><circle cx="1551.7" cy="215.5" r="6.7"/><circle cx="1568.7" cy="218.6" r="6.7"/><circle cx="1577.9" cy="217.0" r="6.7"/><circle cx="1574.9" cy="209.3" r="6.7"/><circle cx="1522.4" cy="230.9" r="6.7"/><circle cx="1527.0" cy="224.7" r="6.7"/><circle cx="1539.4" cy="227.8" r="6.7"/><circle cx="1547.1" cy="234.0" r="6.7"/><circle cx="1548.6" cy="241.7" r="6.7"/><circle cx="1540.9" cy="247.9" r="6.7"/><circle cx="1573.3" cy="234.0" r="6.7"/><circle cx="1510.1" cy="243.3" r="6.7"/><circle cx="1525.5" cy="254.1" r="6.7"/><circle cx="1581.0" cy="189.3" r="6.7"/><circle cx="1582.6" cy="183.1" r="6.7"/><circle cx="1596.4" cy="186.2" r="6.7"/><circle cx="1598.0" cy="198.5" r="6.7"/><circle cx="1598.0" cy="206.2" r="6.7"/><circle cx="1610.3" cy="197.0" r="6.7"/><circle cx="1619.6" cy="192.3" r="6.7"/><circle cx="1627.3" cy="195.4" r="6.7"/><circle cx="1628.8" cy="204.7" r="6.7"/><circle cx="1621.1" cy="212.4" r="6.7"/><circle cx="1638.1" cy="217.0" r="6.7"/><circle cx="1610.3" cy="217.0" r="6.7"/><circle cx="1611.9" cy="226.3" r="6.7"/><circle cx="1625.8" cy="220.1" r="6.7"/><circle cx="1635.0" cy="229.4" r="6.7"/><circle cx="1647.4" cy="226.3" r="6.7"/><circle cx="1652.0" cy="192.3" r="6.7"/><circle cx="1656.6" cy="204.7" r="6.7"/><circle cx="1650.4" cy="234.0" r="6.7"/><circle cx="1625.8" cy="230.9" r="6.7"/><circle cx="1590.3" cy="232.5" r="6.7"/><circle cx="1598.0" cy="241.7" r="6.7"/><circle cx="1633.5" cy="241.7" r="6.7"/><circle cx="1650.4" cy="241.7" r="6.7"/><circle cx="1585.6" cy="252.5" r="6.7"/><circle cx="1598.0" cy="251.0" r="6.7"/><circle cx="1610.3" cy="249.4" r="6.7"/><circle cx="1621.1" cy="254.1" r="6.7"/><circle cx="1631.9" cy="252.5" r="6.7"/><circle cx="1642.7" cy="257.1" r="6.7"/><circle cx="1656.6" cy="251.0" r="6.7"/><circle cx="1540.9" cy="263.3" r="6.7"/><circle cx="1551.7" cy="261.8" r="6.7"/><circle cx="1562.5" cy="260.2" r="6.7"/><circle cx="1545.5" cy="272.6" r="6.7"/><circle cx="1561.0" cy="274.1" r="6.7"/><circle cx="1523.9" cy="277.2" r="6.7"/><circle cx="1531.7" cy="275.6" r="6.7"/><circle cx="1520.9" cy="284.9" r="6.7"/><circle cx="1547.1" cy="280.3" r="6.7"/><circle cx="1567.1" cy="281.8" r="6.7"/><circle cx="1576.4" cy="263.3" r="6.7"/><circle cx="1582.6" cy="272.6" r="6.7"/><circle cx="1591.8" cy="266.4" r="6.7"/><circle cx="1576.4" cy="277.2" r="6.7"/><circle cx="1585.6" cy="278.7" r="6.7"/><circle cx="1581.0" cy="284.9" r="6.7"/><circle cx="1598.0" cy="280.3" r="6.7"/><circle cx="1598.0" cy="286.4" r="6.7"/><circle cx="1607.2" cy="275.6" r="6.7"/><circle cx="1613.4" cy="269.5" r="6.7"/><circle cx="1622.7" cy="266.4" r="6.7"/><circle cx="1631.9" cy="269.5" r="6.7"/><circle cx="1641.2" cy="272.6" r="6.7"/><circle cx="1655.1" cy="269.5" r="6.7"/><circle cx="1656.6" cy="277.2" r="6.7"/><circle cx="1618.0" cy="280.3" r="6.7"/><circle cx="1628.8" cy="288.0" r="6.7"/><circle cx="1638.1" cy="291.1" r="6.7"/><circle cx="1647.4" cy="294.2" r="6.7"/><circle cx="1611.9" cy="292.6" r="6.7"/><circle cx="1618.0" cy="298.8" r="6.7"/><circle cx="1587.2" cy="292.6" r="6.7"/><circle cx="1576.4" cy="301.9" r="6.7"/><circle cx="1584.1" cy="301.9" r="6.7"/><circle cx="1616.5" cy="309.6" r="6.7"/><circle cx="1658.2" cy="303.4" r="6.7"/><circle cx="1520.9" cy="294.2" r="6.7"/><circle cx="1531.7" cy="300.3" r="6.7"/><circle cx="1508.5" cy="298.8" r="6.7"/><circle cx="1508.5" cy="311.1" r="6.7"/><circle cx="1499.3" cy="315.8" r="6.7"/><circle cx="1527.0" cy="311.1" r="6.7"/><circle cx="1534.7" cy="317.3" r="6.7"/><circle cx="1544.0" cy="315.8" r="6.7"/><circle cx="1556.3" cy="315.8" r="6.7"/><circle cx="1561.0" cy="328.1" r="6.7"/><circle cx="1571.8" cy="329.6" r="6.7"/><circle cx="1573.3" cy="321.9" r="6.7"/><circle cx="1582.6" cy="320.4" r="6.7"/><circle cx="1594.9" cy="326.6" r="6.7"/><circle cx="1596.4" cy="334.3" r="6.7"/><circle cx="1491.5" cy="328.1" r="6.7"/><circle cx="1615.0" cy="338.9" r="6.7"/><circle cx="1619.6" cy="343.5" r="6.7"/><circle cx="1607.2" cy="352.8" r="6.7"/><circle cx="1622.7" cy="359.0" r="6.7"/><circle cx="1581.0" cy="343.5" r="6.7"/><circle cx="1576.4" cy="348.2" r="6.7"/><circle cx="1557.9" cy="340.4" r="6.7"/><circle cx="1540.9" cy="342.0" r="6.7"/><circle cx="1527.0" cy="346.6" r="6.7"/><circle cx="1530.1" cy="351.2" r="6.7"/><circle cx="1513.1" cy="346.6" r="6.7"/><circle cx="1513.1" cy="355.9" r="6.7"/><circle cx="1533.2" cy="362.0" r="6.7"/><circle cx="1567.1" cy="363.6" r="6.7"/><circle cx="1582.6" cy="360.5" r="6.7"/><circle cx="1493.1" cy="354.3" r="6.7"/><circle cx="1658.2" cy="321.9" r="6.7"/><circle cx="1624.9" cy="246.1" r="6.7"/><circle cx="1577.9" cy="249.9" r="6.7"/><circle cx="1582.1" cy="252.7" r="6.7"/><circle cx="1590.5" cy="253.5" r="6.7"/><circle cx="1598.3" cy="250.8" r="6.7"/><circle cx="1602.1" cy="252.4" r="6.7"/><circle cx="1608.7" cy="251.6" r="6.7"/><circle cx="1616.4" cy="251.1" r="6.7"/><circle cx="1625.1" cy="252.3" r="6.7"/><circle cx="1631.8" cy="249.4" r="6.7"/><circle cx="1584.0" cy="260.4" r="6.7"/><circle cx="1591.3" cy="259.2" r="6.7"/><circle cx="1594.6" cy="256.1" r="6.7"/><circle cx="1604.9" cy="260.2" r="6.7"/><circle cx="1610.1" cy="257.0" r="6.7"/><circle cx="1617.2" cy="260.2" r="6.7"/><circle cx="1625.6" cy="256.6" r="6.7"/><circle cx="1629.7" cy="257.0" r="6.7"/><circle cx="1639.2" cy="257.2" r="6.7"/><circle cx="1588.3" cy="267.2" r="6.7"/><circle cx="1594.5" cy="264.9" r="6.7"/><circle cx="1603.2" cy="263.0" r="6.7"/><circle cx="1609.2" cy="267.8" r="6.7"/><circle cx="1619.3" cy="264.9" r="6.7"/><circle cx="1626.2" cy="267.4" r="6.7"/><circle cx="1633.0" cy="266.5" r="6.7"/><circle cx="1638.3" cy="265.4" r="6.7"/><circle cx="1585.6" cy="270.6" r="6.7"/><circle cx="1592.1" cy="273.5" r="6.7"/><circle cx="1596.6" cy="273.9" r="6.7"/><circle cx="1602.7" cy="271.6" r="6.7"/><circle cx="1611.0" cy="274.5" r="6.7"/><circle cx="1616.2" cy="273.9" r="6.7"/><circle cx="1625.1" cy="274.3" r="6.7"/><circle cx="1630.2" cy="273.0" r="6.7"/><circle cx="1547.4" cy="184.3" r="6.7"/><circle cx="1540.1" cy="190.2" r="6.7"/><circle cx="1546.8" cy="186.2" r="6.7"/><circle cx="1548.8" cy="184.3" r="6.7"/><circle cx="1525.7" cy="204.1" r="6.7"/><circle cx="1525.9" cy="202.2" r="6.7"/><circle cx="1534.2" cy="203.1" r="6.7"/><circle cx="1534.0" cy="205.2" r="6.7"/><circle cx="1535.1" cy="204.3" r="6.7"/><circle cx="1527.1" cy="202.3" r="6.7"/><circle cx="1573.8" cy="218.8" r="6.7"/><circle cx="1574.1" cy="216.3" r="6.7"/><circle cx="1572.9" cy="218.6" r="6.7"/><circle cx="1572.9" cy="217.8" r="6.7"/><circle cx="1574.3" cy="214.3" r="6.7"/><circle cx="1577.9" cy="213.1" r="6.7"/><circle cx="1526.4" cy="229.8" r="6.7"/><circle cx="1522.9" cy="229.9" r="6.7"/><circle cx="1523.0" cy="229.5" r="6.7"/><circle cx="1533.5" cy="226.1" r="6.7"/><circle cx="1541.8" cy="232.4" r="6.7"/><circle cx="1534.3" cy="225.5" r="6.7"/><circle cx="1548.4" cy="236.9" r="6.7"/><circle cx="1544.4" cy="230.8" r="6.7"/><circle cx="1548.0" cy="236.5" r="6.7"/><circle cx="1546.3" cy="245.6" r="6.7"/><circle cx="1545.4" cy="243.8" r="6.7"/><circle cx="1542.1" cy="257.1" r="6.7"/><circle cx="1582.7" cy="187.0" r="6.7"/><circle cx="1590.7" cy="187.5" r="6.7"/><circle cx="1582.0" cy="186.6" r="6.7"/><circle cx="1591.3" cy="184.3" r="6.7"/><circle cx="1596.1" cy="193.9" r="6.7"/><circle cx="1588.0" cy="188.9" r="6.7"/><circle cx="1599.2" cy="202.7" r="6.7"/><circle cx="1600.7" cy="199.4" r="6.7"/><circle cx="1601.5" cy="201.1" r="6.7"/><circle cx="1596.5" cy="204.0" r="6.7"/><circle cx="1605.8" cy="196.9" r="6.7"/><circle cx="1604.2" cy="196.8" r="6.7"/><circle cx="1624.6" cy="193.8" r="6.7"/><circle cx="1625.4" cy="199.1" r="6.7"/><circle cx="1627.9" cy="199.3" r="6.7"/><circle cx="1628.3" cy="200.4" r="6.7"/><circle cx="1624.9" cy="210.2" r="6.7"/><circle cx="1623.2" cy="197.0" r="6.7"/><circle cx="1623.6" cy="214.0" r="6.7"/><circle cx="1624.3" cy="217.5" r="6.7"/><circle cx="1643.9" cy="222.7" r="6.7"/><circle cx="1630.9" cy="220.1" r="6.7"/><circle cx="1617.8" cy="217.6" r="6.7"/><circle cx="1615.9" cy="212.4" r="6.7"/><circle cx="1609.3" cy="221.7" r="6.7"/><circle cx="1621.6" cy="228.7" r="6.7"/><circle cx="1625.7" cy="214.9" r="6.7"/><circle cx="1632.4" cy="227.0" r="6.7"/><circle cx="1629.7" cy="222.8" r="6.7"/><circle cx="1637.3" cy="221.5" r="6.7"/><circle cx="1649.7" cy="228.4" r="6.7"/><circle cx="1648.0" cy="228.6" r="6.7"/><circle cx="1653.5" cy="197.8" r="6.7"/><circle cx="1656.6" cy="201.6" r="6.7"/><circle cx="1654.9" cy="198.6" r="6.7"/><circle cx="1656.4" cy="199.8" r="6.7"/><circle cx="1652.0" cy="237.3" r="6.7"/><circle cx="1648.9" cy="239.0" r="6.7"/><circle cx="1623.9" cy="226.7" r="6.7"/><circle cx="1630.8" cy="234.6" r="6.7"/><circle cx="1595.2" cy="239.0" r="6.7"/><circle cx="1595.6" cy="239.1" r="6.7"/><circle cx="1605.8" cy="249.9" r="6.7"/><circle cx="1600.4" cy="247.5" r="6.7"/><circle cx="1633.9" cy="237.6" r="6.7"/><circle cx="1629.4" cy="236.5" r="6.7"/><circle cx="1653.2" cy="244.2" r="6.7"/><circle cx="1648.9" cy="238.0" r="6.7"/><circle cx="1586.5" cy="258.3" r="6.7"/><circle cx="1586.7" cy="257.4" r="6.7"/><circle cx="1598.8" cy="257.4" r="6.7"/><circle cx="1597.7" cy="253.6" r="6.7"/><circle cx="1611.8" cy="252.0" r="6.7"/><circle cx="1606.8" cy="254.9" r="6.7"/><circle cx="1627.4" cy="250.2" r="6.7"/><circle cx="1619.9" cy="258.0" r="6.7"/><circle cx="1634.6" cy="248.0" r="6.7"/><circle cx="1627.7" cy="254.2" r="6.7"/><circle cx="1635.4" cy="264.2" r="6.7"/><circle cx="1636.9" cy="256.5" r="6.7"/><circle cx="1652.7" cy="243.8" r="6.7"/><circle cx="1653.3" cy="247.8" r="6.7"/><circle cx="1545.7" cy="264.1" r="6.7"/><circle cx="1541.6" cy="255.8" r="6.7"/><circle cx="1554.9" cy="266.2" r="6.7"/><circle cx="1555.7" cy="264.3" r="6.7"/><circle cx="1571.6" cy="262.2" r="6.7"/><circle cx="1566.9" cy="260.2" r="6.7"/><circle cx="1548.0" cy="269.4" r="6.7"/><circle cx="1548.1" cy="268.9" r="6.7"/><circle cx="1568.2" cy="275.0" r="6.7"/><circle cx="1556.1" cy="273.0" r="6.7"/><circle cx="1527.5" cy="275.6" r="6.7"/><circle cx="1530.0" cy="275.3" r="6.7"/><circle cx="1537.8" cy="276.3" r="6.7"/><circle cx="1529.8" cy="277.8" r="6.7"/><circle cx="1521.6" cy="288.5" r="6.7"/><circle cx="1523.0" cy="281.6" r="6.7"/><circle cx="1545.9" cy="277.2" r="6.7"/><circle cx="1553.9" cy="279.5" r="6.7"/><circle cx="1573.9" cy="280.6" r="6.7"/><circle cx="1573.4" cy="279.3" r="6.7"/><circle cx="1579.8" cy="261.6" r="6.7"/><circle cx="1585.6" cy="266.1" r="6.7"/><circle cx="1585.5" cy="269.7" r="6.7"/><circle cx="1585.7" cy="269.8" r="6.7"/><circle cx="1591.1" cy="261.8" r="6.7"/><circle cx="1591.4" cy="259.0" r="6.7"/><circle cx="1581.2" cy="276.4" r="6.7"/><circle cx="1582.5" cy="271.0" r="6.7"/><circle cx="1583.7" cy="281.8" r="6.7"/><circle cx="1584.5" cy="273.7" r="6.7"/><circle cx="1586.7" cy="280.4" r="6.7"/><circle cx="1578.0" cy="281.5" r="6.7"/><circle cx="1595.9" cy="276.4" r="6.7"/><circle cx="1596.1" cy="285.3" r="6.7"/><circle cx="1593.4" cy="291.9" r="6.7"/><circle cx="1596.6" cy="281.9" r="6.7"/><circle cx="1610.4" cy="274.0" r="6.7"/><circle cx="1611.6" cy="273.8" r="6.7"/><circle cx="1606.2" cy="272.3" r="6.7"/><circle cx="1606.9" cy="265.0" r="6.7"/><circle cx="1628.5" cy="271.2" r="6.7"/><circle cx="1624.1" cy="264.3" r="6.7"/><circle cx="1629.7" cy="260.8" r="6.7"/><circle cx="1628.9" cy="260.6" r="6.7"/><circle cx="1635.7" cy="272.1" r="6.7"/><circle cx="1639.1" cy="269.8" r="6.7"/><circle cx="1654.6" cy="272.7" r="6.7"/><circle cx="1650.1" cy="272.9" r="6.7"/><circle cx="1654.4" cy="274.1" r="6.7"/><circle cx="1654.9" cy="272.7" r="6.7"/><circle cx="1625.7" cy="275.7" r="6.7"/><circle cx="1620.7" cy="285.3" r="6.7"/><circle cx="1623.7" cy="283.9" r="6.7"/><circle cx="1626.3" cy="279.7" r="6.7"/><circle cx="1641.7" cy="292.4" r="6.7"/><circle cx="1632.1" cy="290.3" r="6.7"/><circle cx="1641.3" cy="294.3" r="6.7"/><circle cx="1642.0" cy="293.4" r="6.7"/><circle cx="1603.3" cy="290.9" r="6.7"/><circle cx="1616.9" cy="284.5" r="6.7"/><circle cx="1621.2" cy="295.3" r="6.7"/><circle cx="1614.0" cy="297.5" r="6.7"/><circle cx="1591.6" cy="291.5" r="6.7"/><circle cx="1582.5" cy="290.0" r="6.7"/><circle cx="1581.0" cy="298.3" r="6.7"/><circle cx="1578.4" cy="303.3" r="6.7"/><circle cx="1584.2" cy="299.5" r="6.7"/><circle cx="1585.2" cy="296.2" r="6.7"/><circle cx="1616.0" cy="304.2" r="6.7"/><circle cx="1617.4" cy="307.6" r="6.7"/><circle cx="1653.6" cy="300.8" r="6.7"/><circle cx="1650.9" cy="298.7" r="6.7"/><circle cx="1519.5" cy="291.4" r="6.7"/><circle cx="1513.6" cy="295.5" r="6.7"/><circle cx="1526.0" cy="296.7" r="6.7"/><circle cx="1527.1" cy="306.4" r="6.7"/><circle cx="1509.9" cy="306.3" r="6.7"/><circle cx="1515.0" cy="295.3" r="6.7"/><circle cx="1507.4" cy="304.5" r="6.7"/><circle cx="1506.7" cy="304.1" r="6.7"/><circle cx="1504.1" cy="315.1" r="6.7"/><circle cx="1495.8" cy="320.1" r="6.7"/><circle cx="1531.4" cy="313.6" r="6.7"/><circle cx="1528.4" cy="305.2" r="6.7"/><circle cx="1531.6" cy="315.7" r="6.7"/><circle cx="1531.0" cy="315.5" r="6.7"/><circle cx="1550.9" cy="315.2" r="6.7"/><circle cx="1549.5" cy="315.0" r="6.7"/><circle cx="1559.1" cy="321.0" r="6.7"/><circle cx="1550.1" cy="313.8" r="6.7"/><circle cx="1559.5" cy="333.3" r="6.7"/><circle cx="1567.9" cy="323.9" r="6.7"/><circle cx="1570.8" cy="325.1" r="6.7"/><circle cx="1577.9" cy="323.9" r="6.7"/><circle cx="1579.6" cy="320.1" r="6.7"/><circle cx="1572.2" cy="324.4" r="6.7"/><circle cx="1576.4" cy="325.4" r="6.7"/><circle cx="1581.1" cy="322.6" r="6.7"/><circle cx="1595.8" cy="329.7" r="6.7"/><circle cx="1596.7" cy="330.9" r="6.7"/><circle cx="1596.9" cy="329.5" r="6.7"/><circle cx="1596.4" cy="330.9" r="6.7"/><circle cx="1496.0" cy="322.4" r="6.7"/><circle cx="1494.7" cy="322.9" r="6.7"/><circle cx="1615.1" cy="341.6" r="6.7"/><circle cx="1615.1" cy="342.0" r="6.7"/><circle cx="1622.9" cy="351.3" r="6.7"/><circle cx="1613.9" cy="350.1" r="6.7"/><circle cx="1611.5" cy="345.4" r="6.7"/><circle cx="1613.1" cy="345.0" r="6.7"/><circle cx="1620.8" cy="353.4" r="6.7"/><circle cx="1620.9" cy="351.8" r="6.7"/><circle cx="1580.4" cy="346.4" r="6.7"/><circle cx="1578.9" cy="346.3" r="6.7"/><circle cx="1577.9" cy="344.4" r="6.7"/><circle cx="1580.1" cy="344.2" r="6.7"/><circle cx="1560.6" cy="337.4" r="6.7"/><circle cx="1558.8" cy="333.1" r="6.7"/><circle cx="1535.2" cy="345.5" r="6.7"/><circle cx="1534.3" cy="343.7" r="6.7"/><circle cx="1520.6" cy="347.9" r="6.7"/><circle cx="1528.3" cy="348.2" r="6.7"/><circle cx="1529.2" cy="351.0" r="6.7"/><circle cx="1533.3" cy="347.1" r="6.7"/><circle cx="1514.6" cy="348.5" r="6.7"/><circle cx="1514.9" cy="350.7" r="6.7"/><circle cx="1513.3" cy="351.4" r="6.7"/><circle cx="1512.9" cy="351.5" r="6.7"/><circle cx="1532.4" cy="354.7" r="6.7"/><circle cx="1532.1" cy="356.4" r="6.7"/><circle cx="1573.5" cy="360.6" r="6.7"/><circle cx="1572.1" cy="362.7" r="6.7"/><circle cx="1577.6" cy="354.6" r="6.7"/><circle cx="1580.6" cy="353.4" r="6.7"/><circle cx="1623.8" cy="239.1" r="6.7"/><circle cx="1619.3" cy="249.2" r="6.7"/><circle cx="1577.6" cy="254.2" r="6.7"/><circle cx="1582.0" cy="252.0" r="6.7"/><circle cx="1586.8" cy="255.6" r="6.7"/><circle cx="1586.2" cy="261.9" r="6.7"/><circle cx="1586.2" cy="257.1" r="6.7"/><circle cx="1589.1" cy="251.8" r="6.7"/><circle cx="1603.8" cy="252.3" r="6.7"/><circle cx="1596.0" cy="252.3" r="6.7"/><circle cx="1609.3" cy="251.6" r="6.7"/><circle cx="1603.5" cy="257.5" r="6.7"/><circle cx="1603.2" cy="244.8" r="6.7"/><circle cx="1606.2" cy="252.6" r="6.7"/><circle cx="1611.8" cy="253.4" r="6.7"/><circle cx="1619.9" cy="253.3" r="6.7"/><circle cx="1632.0" cy="255.1" r="6.7"/><circle cx="1615.9" cy="251.9" r="6.7"/><circle cx="1628.1" cy="251.3" r="6.7"/><circle cx="1630.2" cy="250.9" r="6.7"/><circle cx="1585.2" cy="265.3" r="6.7"/><circle cx="1581.4" cy="257.8" r="6.7"/><circle cx="1588.6" cy="261.2" r="6.7"/><circle cx="1593.5" cy="255.4" r="6.7"/><circle cx="1603.8" cy="257.1" r="6.7"/><circle cx="1594.8" cy="262.3" r="6.7"/><circle cx="1601.2" cy="258.7" r="6.7"/><circle cx="1606.6" cy="256.7" r="6.7"/><circle cx="1611.6" cy="263.6" r="6.7"/><circle cx="1611.5" cy="254.9" r="6.7"/><circle cx="1608.2" cy="262.9" r="6.7"/><circle cx="1619.5" cy="262.7" r="6.7"/><circle cx="1621.2" cy="256.5" r="6.7"/><circle cx="1619.4" cy="252.8" r="6.7"/><circle cx="1624.3" cy="253.0" r="6.7"/><circle cx="1625.2" cy="259.2" r="6.7"/><circle cx="1634.9" cy="261.8" r="6.7"/><circle cx="1638.7" cy="258.5" r="6.7"/><circle cx="1589.4" cy="259.0" r="6.7"/><circle cx="1583.4" cy="261.3" r="6.7"/><circle cx="1595.2" cy="265.8" r="6.7"/><circle cx="1596.6" cy="261.2" r="6.7"/><circle cx="1603.0" cy="269.2" r="6.7"/><circle cx="1599.1" cy="261.2" r="6.7"/><circle cx="1604.2" cy="270.5" r="6.7"/><circle cx="1613.1" cy="275.8" r="6.7"/><circle cx="1619.5" cy="261.8" r="6.7"/><circle cx="1615.8" cy="269.6" r="6.7"/><circle cx="1621.3" cy="271.8" r="6.7"/><circle cx="1619.0" cy="269.6" r="6.7"/><circle cx="1637.8" cy="263.8" r="6.7"/><circle cx="1635.1" cy="267.0" r="6.7"/><circle cx="1636.5" cy="267.2" r="6.7"/><circle cx="1633.5" cy="267.9" r="6.7"/><circle cx="1588.7" cy="273.4" r="6.7"/><circle cx="1588.6" cy="264.7" r="6.7"/><circle cx="1595.7" cy="275.3" r="6.7"/><circle cx="1595.1" cy="271.5" r="6.7"/><circle cx="1592.0" cy="277.8" r="6.7"/><circle cx="1595.6" cy="267.9" r="6.7"/><circle cx="1593.9" cy="270.0" r="6.7"/><circle cx="1598.7" cy="272.1" r="6.7"/><circle cx="1612.2" cy="272.5" r="6.7"/><circle cx="1608.8" cy="271.6" r="6.7"/><circle cx="1617.1" cy="270.2" r="6.7"/><circle cx="1623.3" cy="272.8" r="6.7"/><circle cx="1628.2" cy="280.9" r="6.7"/><circle cx="1627.0" cy="279.4" r="6.7"/><circle cx="1633.6" cy="267.6" r="6.7"/><circle cx="1626.1" cy="271.1" r="6.7"/><circle cx="1583.0" cy="126.8" r="6.7"/><circle cx="1617.1" cy="126.8" r="6.7"/><circle cx="1635.0" cy="126.0" r="6.7"/><circle cx="1648.9" cy="128.5" r="6.7"/><circle cx="1581.3" cy="140.7" r="6.7"/><circle cx="1569.1" cy="147.2" r="6.7"/><circle cx="1595.2" cy="136.6" r="6.7"/><circle cx="1604.9" cy="139.9" r="6.7"/><circle cx="1610.6" cy="144.7" r="6.7"/><circle cx="1624.5" cy="150.4" r="6.7"/><circle cx="1642.3" cy="142.3" r="6.7"/><circle cx="1650.5" cy="144.7" r="6.7"/><circle cx="1580.5" cy="156.9" r="6.7"/><circle cx="1566.7" cy="161.0" r="6.7"/><circle cx="1548.8" cy="164.3" r="6.7"/><circle cx="1552.9" cy="170.8" r="6.7"/><circle cx="1565.1" cy="168.3" r="6.7"/><circle cx="1572.4" cy="174.0" r="6.7"/><circle cx="1590.3" cy="172.4" r="6.7"/><circle cx="1596.8" cy="153.7" r="6.7"/><circle cx="1604.9" cy="166.7" r="6.7"/><circle cx="1616.3" cy="156.1" r="6.7"/><circle cx="1631.8" cy="158.6" r="6.7"/><circle cx="1633.4" cy="167.5" r="6.7"/><circle cx="1622.8" cy="173.2" r="6.7"/><circle cx="1632.6" cy="176.5" r="6.7"/><circle cx="1644.0" cy="173.2" r="6.7"/><circle cx="1648.9" cy="163.4" r="6.7"/><circle cx="1657.8" cy="170.0" r="6.7"/><circle cx="1658.6" cy="123.6" r="6.7"/><circle cx="1596.0" cy="126.8" r="6.7"/><circle cx="1588.7" cy="148.8" r="6.7"/><circle cx="1600.0" cy="145.6" r="6.7"/><circle cx="1615.5" cy="135.8" r="6.7"/><circle cx="1626.9" cy="134.2" r="6.7"/><circle cx="1638.3" cy="134.2" r="6.7"/><circle cx="1656.2" cy="137.4" r="6.7"/><circle cx="1589.5" cy="163.4" r="6.7"/><circle cx="1597.6" cy="160.2" r="6.7"/><circle cx="1624.5" cy="162.6" r="6.7"/><circle cx="1612.2" cy="165.1" r="6.7"/><circle cx="1642.3" cy="155.3" r="6.7"/><circle cx="1556.9" cy="158.6" r="6.7"/><circle cx="1543.9" cy="157.8" r="6.7"/><circle cx="1542.3" cy="173.2" r="6.7"/><circle cx="1582.2" cy="176.5" r="6.7"/><circle cx="1652.9" cy="155.3" r="6.7"/><circle cx="1573.2" cy="127.7" r="6.7"/><circle cx="1548.8" cy="138.2" r="6.7"/><circle cx="1532.5" cy="148.8" r="6.7"/><circle cx="1521.1" cy="158.6" r="6.7"/><circle cx="1587.8" cy="130.6" r="6.7"/><circle cx="1588.7" cy="132.1" r="6.7"/><circle cx="1621.7" cy="130.7" r="6.7"/><circle cx="1618.0" cy="132.8" r="6.7"/><circle cx="1641.2" cy="125.0" r="6.7"/><circle cx="1633.4" cy="127.8" r="6.7"/><circle cx="1645.5" cy="130.4" r="6.7"/><circle cx="1645.8" cy="136.8" r="6.7"/><circle cx="1575.5" cy="144.5" r="6.7"/><circle cx="1575.4" cy="141.8" r="6.7"/><circle cx="1575.5" cy="152.9" r="6.7"/><circle cx="1576.5" cy="143.0" r="6.7"/><circle cx="1588.1" cy="130.2" r="6.7"/><circle cx="1588.9" cy="137.8" r="6.7"/><circle cx="1609.1" cy="141.3" r="6.7"/><circle cx="1606.5" cy="140.9" r="6.7"/><circle cx="1617.7" cy="146.7" r="6.7"/><circle cx="1607.5" cy="143.7" r="6.7"/><circle cx="1624.9" cy="156.1" r="6.7"/><circle cx="1628.0" cy="154.7" r="6.7"/><circle cx="1646.9" cy="144.5" r="6.7"/><circle cx="1647.7" cy="133.6" r="6.7"/><circle cx="1651.7" cy="150.3" r="6.7"/><circle cx="1647.2" cy="150.2" r="6.7"/><circle cx="1656.2" cy="140.3" r="6.7"/><circle cx="1659.1" cy="138.5" r="6.7"/><circle cx="1584.2" cy="158.6" r="6.7"/><circle cx="1582.5" cy="154.4" r="6.7"/><circle cx="1565.8" cy="157.4" r="6.7"/><circle cx="1561.4" cy="159.3" r="6.7"/><circle cx="1545.3" cy="161.3" r="6.7"/><circle cx="1544.3" cy="167.3" r="6.7"/><circle cx="1557.6" cy="169.7" r="6.7"/><circle cx="1553.5" cy="166.5" r="6.7"/><circle cx="1561.0" cy="164.1" r="6.7"/><circle cx="1565.3" cy="164.0" r="6.7"/><circle cx="1575.7" cy="173.2" r="6.7"/><circle cx="1575.9" cy="174.3" r="6.7"/><circle cx="1585.1" cy="175.8" r="6.7"/><circle cx="1594.3" cy="164.8" r="6.7"/><circle cx="1602.0" cy="160.4" r="6.7"/><circle cx="1600.0" cy="148.1" r="6.7"/><circle cx="1598.2" cy="167.5" r="6.7"/><circle cx="1599.0" cy="161.5" r="6.7"/><circle cx="1620.3" cy="153.7" r="6.7"/><circle cx="1611.5" cy="150.7" r="6.7"/><circle cx="1628.0" cy="156.0" r="6.7"/><circle cx="1635.8" cy="155.3" r="6.7"/><circle cx="1636.3" cy="161.3" r="6.7"/><circle cx="1626.7" cy="170.8" r="6.7"/><circle cx="1624.4" cy="168.3" r="6.7"/><circle cx="1625.3" cy="175.2" r="6.7"/><circle cx="1633.7" cy="173.9" r="6.7"/><circle cx="1637.7" cy="172.8" r="6.7"/><circle cx="1639.1" cy="168.2" r="6.7"/><circle cx="1647.6" cy="171.5" r="6.7"/><circle cx="1647.3" cy="165.5" r="6.7"/><circle cx="1653.0" cy="164.5" r="6.7"/><circle cx="1655.5" cy="164.3" r="6.7"/><circle cx="1656.2" cy="162.8" r="6.7"/><circle cx="1655.7" cy="132.0" r="6.7"/><circle cx="1659.3" cy="131.2" r="6.7"/><circle cx="1591.1" cy="128.6" r="6.7"/><circle cx="1599.5" cy="132.5" r="6.7"/><circle cx="1593.1" cy="147.8" r="6.7"/><circle cx="1593.7" cy="148.0" r="6.7"/><circle cx="1596.1" cy="140.9" r="6.7"/><circle cx="1599.7" cy="152.3" r="6.7"/><circle cx="1622.8" cy="134.8" r="6.7"/><circle cx="1610.9" cy="140.9" r="6.7"/><circle cx="1631.5" cy="129.9" r="6.7"/><circle cx="1629.7" cy="128.9" r="6.7"/><circle cx="1641.9" cy="138.8" r="6.7"/><circle cx="1629.8" cy="134.8" r="6.7"/><circle cx="1651.1" cy="140.5" r="6.7"/><circle cx="1582.9" cy="159.7" r="6.7"/><circle cx="1596.9" cy="165.6" r="6.7"/><circle cx="1594.1" cy="153.6" r="6.7"/><circle cx="1597.9" cy="156.7" r="6.7"/><circle cx="1627.8" cy="160.0" r="6.7"/><circle cx="1620.2" cy="160.0" r="6.7"/><circle cx="1604.9" cy="164.5" r="6.7"/><circle cx="1604.5" cy="164.4" r="6.7"/><circle cx="1638.7" cy="162.9" r="6.7"/><circle cx="1648.4" cy="157.1" r="6.7"/><circle cx="1561.4" cy="162.0" r="6.7"/><circle cx="1551.7" cy="162.0" r="6.7"/><circle cx="1546.6" cy="162.9" r="6.7"/><circle cx="1551.4" cy="157.1" r="6.7"/><circle cx="1548.0" cy="169.4" r="6.7"/><circle cx="1545.0" cy="170.1" r="6.7"/><circle cx="1584.9" cy="175.2" r="6.7"/><circle cx="1577.4" cy="176.9" r="6.7"/><circle cx="1653.3" cy="151.0" r="6.7"/><circle cx="1658.7" cy="158.0" r="6.7"/><circle cx="1576.0" cy="128.7" r="6.7"/><circle cx="1575.9" cy="126.7" r="6.7"/><circle cx="1536.6" cy="150.4" r="6.7"/><circle cx="1538.0" cy="151.1" r="6.7"/><circle cx="1524.0" cy="153.4" r="6.7"/><circle cx="1526.4" cy="154.8" r="6.7"/><circle cx="1666.2" cy="113.9" r="6.7"/><circle cx="1675.4" cy="120.1" r="6.7"/><circle cx="1684.7" cy="117.0" r="6.7"/><circle cx="1697.0" cy="118.5" r="6.7"/><circle cx="1664.6" cy="126.2" r="6.7"/><circle cx="1675.4" cy="135.5" r="6.7"/><circle cx="1666.2" cy="137.0" r="6.7"/><circle cx="1669.3" cy="146.3" r="6.7"/><circle cx="1697.0" cy="135.5" r="6.7"/><circle cx="1717.1" cy="104.6" r="6.7"/><circle cx="1758.7" cy="104.6" r="6.7"/><circle cx="1780.3" cy="106.2" r="6.7"/><circle cx="1798.8" cy="106.2" r="6.7"/><circle cx="1818.9" cy="109.3" r="6.7"/><circle cx="1826.6" cy="115.4" r="6.7"/><circle cx="1783.4" cy="118.5" r="6.7"/><circle cx="1800.4" cy="121.6" r="6.7"/><circle cx="1826.6" cy="129.3" r="6.7"/><circle cx="1737.1" cy="121.6" r="6.7"/><circle cx="1744.9" cy="133.9" r="6.7"/><circle cx="1731.0" cy="140.1" r="6.7"/><circle cx="1757.2" cy="140.1" r="6.7"/><circle cx="1764.9" cy="126.2" r="6.7"/><circle cx="1777.2" cy="138.6" r="6.7"/><circle cx="1798.8" cy="140.1" r="6.7"/><circle cx="1814.3" cy="138.6" r="6.7"/><circle cx="1735.6" cy="152.5" r="6.7"/><circle cx="1743.3" cy="161.7" r="6.7"/><circle cx="1769.5" cy="157.1" r="6.7"/><circle cx="1780.3" cy="158.6" r="6.7"/><circle cx="1817.4" cy="167.9" r="6.7"/><circle cx="1675.4" cy="157.1" r="6.7"/><circle cx="1672.3" cy="164.8" r="6.7"/><circle cx="1664.6" cy="163.3" r="6.7"/><circle cx="1693.9" cy="155.5" r="6.7"/><circle cx="1689.3" cy="167.9" r="6.7"/><circle cx="1697.0" cy="164.8" r="6.7"/><circle cx="1706.3" cy="171.0" r="6.7"/><circle cx="1721.7" cy="171.0" r="6.7"/><circle cx="1664.6" cy="180.2" r="6.7"/><circle cx="1683.1" cy="183.3" r="6.7"/><circle cx="1689.3" cy="177.1" r="6.7"/><circle cx="1695.5" cy="189.5" r="6.7"/><circle cx="1686.2" cy="194.1" r="6.7"/><circle cx="1703.2" cy="197.2" r="6.7"/><circle cx="1712.5" cy="200.3" r="6.7"/><circle cx="1723.3" cy="194.1" r="6.7"/><circle cx="1697.0" cy="204.9" r="6.7"/><circle cx="1712.5" cy="209.5" r="6.7"/><circle cx="1666.2" cy="195.6" r="6.7"/><circle cx="1661.5" cy="204.9" r="6.7"/><circle cx="1686.2" cy="214.2" r="6.7"/><circle cx="1697.0" cy="231.1" r="6.7"/><circle cx="1747.9" cy="180.2" r="6.7"/><circle cx="1751.0" cy="186.4" r="6.7"/><circle cx="1737.1" cy="192.6" r="6.7"/><circle cx="1746.4" cy="198.7" r="6.7"/><circle cx="1746.4" cy="208.0" r="6.7"/><circle cx="1737.1" cy="211.1" r="6.7"/><circle cx="1729.4" cy="217.2" r="6.7"/><circle cx="1720.2" cy="223.4" r="6.7"/><circle cx="1737.1" cy="223.4" r="6.7"/><circle cx="1752.6" cy="226.5" r="6.7"/><circle cx="1717.1" cy="229.6" r="6.7"/><circle cx="1766.4" cy="178.7" r="6.7"/><circle cx="1764.9" cy="191.0" r="6.7"/><circle cx="1775.7" cy="197.2" r="6.7"/><circle cx="1786.5" cy="204.9" r="6.7"/><circle cx="1761.8" cy="209.5" r="6.7"/><circle cx="1768.0" cy="218.8" r="6.7"/><circle cx="1781.9" cy="215.7" r="6.7"/><circle cx="1789.6" cy="208.0" r="6.7"/><circle cx="1798.8" cy="211.1" r="6.7"/><circle cx="1797.3" cy="221.9" r="6.7"/><circle cx="1805.0" cy="223.4" r="6.7"/><circle cx="1815.8" cy="223.4" r="6.7"/><circle cx="1823.5" cy="220.3" r="6.7"/><circle cx="1815.8" cy="208.0" r="6.7"/><circle cx="1823.5" cy="206.4" r="6.7"/><circle cx="1800.4" cy="174.1" r="6.7"/><circle cx="1798.8" cy="187.9" r="6.7"/><circle cx="1806.6" cy="192.6" r="6.7"/><circle cx="1801.9" cy="195.6" r="6.7"/><circle cx="1808.1" cy="186.4" r="6.7"/><circle cx="1766.4" cy="235.8" r="6.7"/><circle cx="1777.2" cy="228.0" r="6.7"/><circle cx="1783.4" cy="237.3" r="6.7"/><circle cx="1786.5" cy="249.6" r="6.7"/><circle cx="1798.8" cy="255.8" r="6.7"/><circle cx="1812.7" cy="241.9" r="6.7"/><circle cx="1681.6" cy="243.5" r="6.7"/><circle cx="1669.3" cy="251.2" r="6.7"/><circle cx="1677.0" cy="255.8" r="6.7"/><circle cx="1664.6" cy="266.6" r="6.7"/><circle cx="1673.9" cy="266.6" r="6.7"/><circle cx="1669.3" cy="274.3" r="6.7"/><circle cx="1683.1" cy="279.0" r="6.7"/><circle cx="1693.9" cy="279.0" r="6.7"/><circle cx="1701.7" cy="269.7" r="6.7"/><circle cx="1689.3" cy="285.1" r="6.7"/><circle cx="1678.5" cy="286.7" r="6.7"/><circle cx="1726.3" cy="280.5" r="6.7"/><circle cx="1732.5" cy="288.2" r="6.7"/><circle cx="1664.0" cy="121.0" r="6.7"/><circle cx="1670.6" cy="116.9" r="6.7"/><circle cx="1672.3" cy="119.0" r="6.7"/><circle cx="1670.8" cy="117.3" r="6.7"/><circle cx="1691.9" cy="116.9" r="6.7"/><circle cx="1682.1" cy="119.6" r="6.7"/><circle cx="1691.0" cy="115.7" r="6.7"/><circle cx="1690.2" cy="117.3" r="6.7"/><circle cx="1664.0" cy="118.6" r="6.7"/><circle cx="1670.5" cy="123.5" r="6.7"/><circle cx="1670.1" cy="137.8" r="6.7"/><circle cx="1676.6" cy="129.0" r="6.7"/><circle cx="1667.3" cy="141.0" r="6.7"/><circle cx="1669.5" cy="140.9" r="6.7"/><circle cx="1672.2" cy="153.0" r="6.7"/><circle cx="1672.9" cy="150.4" r="6.7"/><circle cx="1783.7" cy="114.0" r="6.7"/><circle cx="1782.7" cy="112.5" r="6.7"/><circle cx="1800.3" cy="118.1" r="6.7"/><circle cx="1801.0" cy="115.0" r="6.7"/><circle cx="1822.2" cy="113.1" r="6.7"/><circle cx="1821.6" cy="113.5" r="6.7"/><circle cx="1821.7" cy="111.1" r="6.7"/><circle cx="1823.4" cy="112.9" r="6.7"/><circle cx="1781.1" cy="112.5" r="6.7"/><circle cx="1780.8" cy="113.0" r="6.7"/><circle cx="1798.9" cy="112.4" r="6.7"/><circle cx="1797.5" cy="113.2" r="6.7"/><circle cx="1825.2" cy="120.9" r="6.7"/><circle cx="1826.9" cy="121.0" r="6.7"/><circle cx="1742.5" cy="127.7" r="6.7"/><circle cx="1741.8" cy="125.9" r="6.7"/><circle cx="1736.1" cy="137.9" r="6.7"/><circle cx="1749.4" cy="135.7" r="6.7"/><circle cx="1735.3" cy="137.0" r="6.7"/><circle cx="1734.0" cy="149.1" r="6.7"/><circle cx="1760.8" cy="132.3" r="6.7"/><circle cx="1761.5" cy="134.0" r="6.7"/><circle cx="1758.5" cy="134.4" r="6.7"/><circle cx="1763.0" cy="132.4" r="6.7"/><circle cx="1808.1" cy="138.4" r="6.7"/><circle cx="1806.7" cy="137.8" r="6.7"/><circle cx="1806.5" cy="140.3" r="6.7"/><circle cx="1806.5" cy="140.0" r="6.7"/><circle cx="1733.7" cy="147.5" r="6.7"/><circle cx="1730.8" cy="144.6" r="6.7"/><circle cx="1739.9" cy="157.1" r="6.7"/><circle cx="1738.3" cy="154.7" r="6.7"/><circle cx="1776.3" cy="156.5" r="6.7"/><circle cx="1773.7" cy="155.8" r="6.7"/><circle cx="1776.2" cy="158.3" r="6.7"/><circle cx="1774.9" cy="157.8" r="6.7"/><circle cx="1672.5" cy="162.0" r="6.7"/><circle cx="1673.7" cy="151.6" r="6.7"/><circle cx="1667.2" cy="163.0" r="6.7"/><circle cx="1668.1" cy="163.6" r="6.7"/><circle cx="1669.9" cy="160.6" r="6.7"/><circle cx="1668.8" cy="161.6" r="6.7"/><circle cx="1696.7" cy="158.0" r="6.7"/><circle cx="1690.8" cy="162.5" r="6.7"/><circle cx="1693.2" cy="167.2" r="6.7"/><circle cx="1691.6" cy="167.9" r="6.7"/><circle cx="1691.0" cy="165.2" r="6.7"/><circle cx="1701.1" cy="169.9" r="6.7"/><circle cx="1699.9" cy="167.6" r="6.7"/><circle cx="1714.8" cy="172.1" r="6.7"/><circle cx="1713.4" cy="170.7" r="6.7"/><circle cx="1714.3" cy="170.2" r="6.7"/><circle cx="1664.9" cy="187.3" r="6.7"/><circle cx="1663.9" cy="191.0" r="6.7"/><circle cx="1689.2" cy="186.0" r="6.7"/><circle cx="1683.4" cy="188.9" r="6.7"/><circle cx="1690.1" cy="181.5" r="6.7"/><circle cx="1688.8" cy="181.5" r="6.7"/><circle cx="1692.5" cy="181.1" r="6.7"/><circle cx="1687.7" cy="185.8" r="6.7"/><circle cx="1683.1" cy="189.3" r="6.7"/><circle cx="1692.2" cy="198.4" r="6.7"/><circle cx="1699.8" cy="202.7" r="6.7"/><circle cx="1709.7" cy="204.6" r="6.7"/><circle cx="1714.1" cy="205.6" r="6.7"/><circle cx="1707.0" cy="197.2" r="6.7"/><circle cx="1728.5" cy="191.6" r="6.7"/><circle cx="1720.1" cy="197.5" r="6.7"/><circle cx="1694.5" cy="198.8" r="6.7"/><circle cx="1695.4" cy="196.5" r="6.7"/><circle cx="1711.1" cy="203.6" r="6.7"/><circle cx="1717.8" cy="216.0" r="6.7"/><circle cx="1665.9" cy="189.4" r="6.7"/><circle cx="1663.9" cy="186.7" r="6.7"/><circle cx="1663.0" cy="202.7" r="6.7"/><circle cx="1665.2" cy="199.4" r="6.7"/><circle cx="1693.7" cy="209.0" r="6.7"/><circle cx="1689.7" cy="210.7" r="6.7"/><circle cx="1747.6" cy="182.6" r="6.7"/><circle cx="1750.5" cy="181.8" r="6.7"/><circle cx="1746.2" cy="187.2" r="6.7"/><circle cx="1750.5" cy="192.9" r="6.7"/><circle cx="1740.6" cy="195.9" r="6.7"/><circle cx="1740.3" cy="194.5" r="6.7"/><circle cx="1749.3" cy="194.8" r="6.7"/><circle cx="1744.4" cy="203.0" r="6.7"/><circle cx="1743.0" cy="209.8" r="6.7"/><circle cx="1755.1" cy="210.6" r="6.7"/><circle cx="1739.8" cy="209.0" r="6.7"/><circle cx="1742.9" cy="205.3" r="6.7"/><circle cx="1735.6" cy="212.9" r="6.7"/><circle cx="1725.8" cy="218.7" r="6.7"/><circle cx="1718.8" cy="224.6" r="6.7"/><circle cx="1718.8" cy="228.1" r="6.7"/><circle cx="1732.1" cy="220.4" r="6.7"/><circle cx="1739.0" cy="214.2" r="6.7"/><circle cx="1745.1" cy="223.9" r="6.7"/><circle cx="1746.6" cy="226.6" r="6.7"/><circle cx="1719.0" cy="227.6" r="6.7"/><circle cx="1717.1" cy="224.0" r="6.7"/><circle cx="1764.3" cy="187.5" r="6.7"/><circle cx="1765.7" cy="188.0" r="6.7"/><circle cx="1758.5" cy="187.7" r="6.7"/><circle cx="1767.0" cy="184.7" r="6.7"/><circle cx="1769.0" cy="193.1" r="6.7"/><circle cx="1778.9" cy="200.0" r="6.7"/><circle cx="1788.8" cy="205.3" r="6.7"/><circle cx="1794.0" cy="207.9" r="6.7"/><circle cx="1765.6" cy="213.1" r="6.7"/><circle cx="1764.2" cy="214.0" r="6.7"/><circle cx="1765.0" cy="214.4" r="6.7"/><circle cx="1773.8" cy="218.3" r="6.7"/><circle cx="1784.8" cy="211.2" r="6.7"/><circle cx="1785.8" cy="211.7" r="6.7"/><circle cx="1787.5" cy="207.7" r="6.7"/><circle cx="1784.1" cy="213.8" r="6.7"/><circle cx="1794.0" cy="207.3" r="6.7"/><circle cx="1792.6" cy="207.0" r="6.7"/><circle cx="1802.5" cy="222.4" r="6.7"/><circle cx="1795.8" cy="217.9" r="6.7"/><circle cx="1811.9" cy="225.3" r="6.7"/><circle cx="1799.6" cy="221.4" r="6.7"/><circle cx="1815.4" cy="217.3" r="6.7"/><circle cx="1814.0" cy="218.8" r="6.7"/><circle cx="1820.9" cy="220.4" r="6.7"/><circle cx="1824.3" cy="216.2" r="6.7"/><circle cx="1820.6" cy="212.8" r="6.7"/><circle cx="1821.7" cy="208.1" r="6.7"/><circle cx="1823.6" cy="209.4" r="6.7"/><circle cx="1822.3" cy="206.3" r="6.7"/><circle cx="1806.8" cy="183.1" r="6.7"/><circle cx="1798.5" cy="184.3" r="6.7"/><circle cx="1803.2" cy="191.5" r="6.7"/><circle cx="1803.1" cy="189.1" r="6.7"/><circle cx="1808.8" cy="188.4" r="6.7"/><circle cx="1805.2" cy="188.4" r="6.7"/><circle cx="1800.0" cy="191.8" r="6.7"/><circle cx="1801.3" cy="190.3" r="6.7"/><circle cx="1804.2" cy="188.0" r="6.7"/><circle cx="1805.9" cy="181.5" r="6.7"/><circle cx="1770.2" cy="234.4" r="6.7"/><circle cx="1768.8" cy="232.7" r="6.7"/><circle cx="1780.4" cy="233.6" r="6.7"/><circle cx="1778.1" cy="223.7" r="6.7"/><circle cx="1778.8" cy="233.8" r="6.7"/><circle cx="1784.6" cy="242.3" r="6.7"/><circle cx="1787.1" cy="244.0" r="6.7"/><circle cx="1783.4" cy="246.0" r="6.7"/><circle cx="1795.2" cy="255.1" r="6.7"/><circle cx="1793.9" cy="255.3" r="6.7"/><circle cx="1679.4" cy="249.8" r="6.7"/><circle cx="1679.6" cy="248.9" r="6.7"/><circle cx="1672.3" cy="253.2" r="6.7"/><circle cx="1674.3" cy="252.2" r="6.7"/><circle cx="1681.7" cy="246.2" r="6.7"/><circle cx="1680.8" cy="248.9" r="6.7"/><circle cx="1666.5" cy="270.3" r="6.7"/><circle cx="1667.9" cy="270.2" r="6.7"/><circle cx="1676.8" cy="271.1" r="6.7"/><circle cx="1675.7" cy="269.9" r="6.7"/><circle cx="1674.5" cy="278.0" r="6.7"/><circle cx="1674.4" cy="279.2" r="6.7"/><circle cx="1678.3" cy="273.7" r="6.7"/><circle cx="1688.3" cy="279.6" r="6.7"/><circle cx="1689.8" cy="277.3" r="6.7"/><circle cx="1695.6" cy="276.3" r="6.7"/><circle cx="1698.2" cy="273.0" r="6.7"/><circle cx="1696.9" cy="274.9" r="6.7"/><circle cx="1692.3" cy="280.0" r="6.7"/><circle cx="1692.8" cy="280.5" r="6.7"/><circle cx="1673.6" cy="280.1" r="6.7"/><circle cx="1682.4" cy="281.4" r="6.7"/><circle cx="1727.7" cy="285.3" r="6.7"/><circle cx="1730.9" cy="284.2" r="6.7"/><circle cx="1730.7" cy="284.9" r="6.7"/><circle cx="1729.3" cy="286.5" r="6.7"/><circle cx="1838.3" cy="111.4" r="6.7"/><circle cx="1852.9" cy="111.4" r="6.7"/><circle cx="1893.1" cy="111.4" r="6.7"/><circle cx="1904.0" cy="107.8" r="6.7"/><circle cx="1836.4" cy="142.5" r="6.7"/><circle cx="1854.7" cy="148.0" r="6.7"/><circle cx="1873.0" cy="146.2" r="6.7"/><circle cx="1885.8" cy="142.5" r="6.7"/><circle cx="1887.6" cy="148.0" r="6.7"/><circle cx="1909.5" cy="157.1" r="6.7"/><circle cx="1922.3" cy="162.6" r="6.7"/><circle cx="1940.6" cy="168.1" r="6.7"/><circle cx="1940.6" cy="173.6" r="6.7"/><circle cx="1847.4" cy="177.2" r="6.7"/><circle cx="1862.0" cy="177.2" r="6.7"/><circle cx="1883.9" cy="186.3" r="6.7"/><circle cx="1840.1" cy="194.6" r="6.7"/><circle cx="1865.7" cy="208.3" r="6.7"/><circle cx="1933.3" cy="201.0" r="6.7"/><circle cx="1836.4" cy="219.2" r="6.7"/><circle cx="1849.2" cy="221.1" r="6.7"/><circle cx="1852.9" cy="233.8" r="6.7"/><circle cx="1856.5" cy="235.7" r="6.7"/><circle cx="1867.5" cy="270.4" r="6.7"/><circle cx="1852.9" cy="283.2" r="6.7"/><circle cx="1862.0" cy="286.8" r="6.7"/><circle cx="1851.1" cy="290.5" r="6.7"/><circle cx="1832.8" cy="300.5" r="6.7"/><circle cx="1874.8" cy="301.4" r="6.7"/><circle cx="1966.1" cy="140.7" r="6.7"/><circle cx="1955.2" cy="175.4" r="6.7"/><circle cx="1946.1" cy="191.8" r="6.7"/><circle cx="1909.5" cy="228.4" r="6.7"/><circle cx="1900.4" cy="241.1" r="6.7"/><circle cx="1891.2" cy="259.4" r="6.7"/><circle cx="1882.1" cy="286.8" r="6.7"/><circle cx="1882.1" cy="305.1" r="6.7"/><circle cx="1731.9" cy="537.2" r="6.7"/><circle cx="1735.7" cy="529.8" r="6.7"/><circle cx="1739.0" cy="521.3" r="6.7"/><circle cx="1741.8" cy="516.2" r="6.7"/><circle cx="1747.2" cy="509.2" r="6.7"/><circle cx="1753.8" cy="507.2" r="6.7"/><circle cx="1761.5" cy="505.8" r="6.7"/><circle cx="1769.4" cy="506.8" r="6.7"/><circle cx="1776.0" cy="506.1" r="6.7"/><circle cx="1781.1" cy="499.8" r="6.7"/><circle cx="1784.9" cy="495.5" r="6.7"/><circle cx="1791.2" cy="489.5" r="6.7"/><circle cx="1793.8" cy="482.4" r="6.7"/><circle cx="1797.5" cy="473.3" r="6.7"/><circle cx="1801.5" cy="466.9" r="6.7"/><circle cx="1806.0" cy="458.0" r="6.7"/><circle cx="1872.0" cy="414.0" r="6.7"/><circle cx="1866.0" cy="436.0" r="6.7"/><circle cx="1861.0" cy="452.0" r="6.7"/><circle cx="1852.0" cy="484.0" r="6.7"/><circle cx="1846.0" cy="512.0" r="6.7"/><circle cx="1839.0" cy="527.0" r="6.7"/><circle cx="1440.0" cy="392.0" r="6.7"/><circle cx="1412.0" cy="414.0" r="6.7"/><circle cx="1398.0" cy="428.0" r="6.7"/><circle cx="1623.9" cy="500.4" r="6.7"/><circle cx="1635.7" cy="497.3" r="6.7"/><circle cx="1650.6" cy="499.8" r="6.7"/><circle cx="1663.9" cy="498.1" r="6.7"/><circle cx="1676.2" cy="496.3" r="6.7"/><circle cx="1691.3" cy="500.0" r="6.7"/><circle cx="1718.5" cy="501.0" r="6.7"/><circle cx="1625.1" cy="513.4" r="6.7"/><circle cx="1636.5" cy="512.2" r="6.7"/><circle cx="1653.5" cy="512.0" r="6.7"/><circle cx="1665.5" cy="513.1" r="6.7"/><circle cx="1676.9" cy="510.4" r="6.7"/><circle cx="1692.7" cy="512.6" r="6.7"/><circle cx="1706.0" cy="510.4" r="6.7"/><circle cx="1718.0" cy="514.6" r="6.7"/><circle cx="1621.8" cy="526.5" r="6.7"/><circle cx="1637.5" cy="526.8" r="6.7"/><circle cx="1650.1" cy="524.3" r="6.7"/><circle cx="1666.2" cy="527.2" r="6.7"/><circle cx="1679.5" cy="526.4" r="6.7"/><circle cx="1694.4" cy="527.8" r="6.7"/><circle cx="1704.7" cy="528.0" r="6.7"/><circle cx="1719.2" cy="525.5" r="6.7"/><circle cx="1622.9" cy="537.8" r="6.7"/><circle cx="1636.9" cy="541.7" r="6.7"/><circle cx="1649.8" cy="539.0" r="6.7"/><circle cx="1663.3" cy="537.4" r="6.7"/><circle cx="1677.3" cy="538.7" r="6.7"/><circle cx="1692.0" cy="538.7" r="6.7"/><circle cx="1707.1" cy="538.5" r="6.7"/><circle cx="1721.1" cy="539.2" r="6.7"/><circle cx="1733.0" cy="538.8" r="6.7"/><circle cx="1639.7" cy="551.3" r="6.7"/><circle cx="1652.9" cy="551.8" r="6.7"/><circle cx="1663.5" cy="552.2" r="6.7"/><circle cx="1679.3" cy="553.4" r="6.7"/><circle cx="1694.5" cy="551.9" r="6.7"/><circle cx="1707.2" cy="553.3" r="6.7"/><circle cx="1717.1" cy="554.0" r="6.7"/><circle cx="1680.5" cy="566.4" r="6.7"/><circle cx="1691.4" cy="566.9" r="6.7"/><circle cx="1727.8" cy="473.2" r="6.7"/><circle cx="1736.9" cy="472.4" r="6.7"/><circle cx="1755.5" cy="472.4" r="6.7"/><circle cx="1769.2" cy="473.9" r="6.7"/><circle cx="1779.5" cy="473.0" r="6.7"/><circle cx="1727.8" cy="489.1" r="6.7"/><circle cx="1740.6" cy="486.0" r="6.7"/><circle cx="1752.4" cy="486.6" r="6.7"/><circle cx="1765.9" cy="488.2" r="6.7"/><circle cx="1779.5" cy="485.1" r="6.7"/><circle cx="1728.1" cy="503.2" r="6.7"/><circle cx="1741.7" cy="502.4" r="6.7"/><circle cx="1750.8" cy="502.5" r="6.7"/><circle cx="1766.1" cy="501.3" r="6.7"/><circle cx="1727.9" cy="513.5" r="6.7"/><circle cx="1739.8" cy="516.4" r="6.7"/><circle cx="1752.5" cy="514.4" r="6.7"/><circle cx="1493.1" cy="200.3" r="6.7"/><circle cx="1494.2" cy="210.7" r="6.7"/><circle cx="1494.3" cy="221.2" r="6.7"/><circle cx="1492.3" cy="230.2" r="6.7"/><circle cx="1492.4" cy="239.8" r="6.7"/><circle cx="1491.9" cy="252.0" r="6.7"/><circle cx="1490.6" cy="264.2" r="6.7"/><circle cx="1490.8" cy="275.6" r="6.7"/><circle cx="1487.7" cy="289.5" r="6.7"/><circle cx="1483.0" cy="303.6" r="6.7"/><circle cx="1476.7" cy="312.5" r="6.7"/><circle cx="1466.9" cy="319.5" r="6.7"/><circle cx="1465.4" cy="332.2" r="6.7"/><circle cx="1462.0" cy="344.4" r="6.7"/><circle cx="1459.8" cy="354.7" r="6.7"/><circle cx="1457.0" cy="365.7" r="6.7"/><circle cx="1455.9" cy="374.9" r="6.7"/><circle cx="1451.5" cy="385.9" r="6.7"/><circle cx="1448.0" cy="395.0" r="6.7"/><circle cx="1501.1" cy="164.1" r="6.7"/><circle cx="1510.1" cy="151.6" r="6.7"/><circle cx="1519.7" cy="139.7" r="6.7"/><circle cx="1536.2" cy="132.7" r="6.7"/><circle cx="1550.0" cy="126.0" r="6.7"/></g><g fill="#4470ac" stroke="#122038" stroke-width="2.2"><circle cx="1488.8" cy="253.4" r="4"/><circle cx="1732.3" cy="293.2" r="4"/><circle cx="1660.7" cy="302.7" r="4"/><circle cx="1710.3" cy="298.3" r="4"/><circle cx="1736.7" cy="304.8" r="4"/><circle cx="1488.2" cy="300.5" r="4"/><circle cx="1662.1" cy="322.4" r="4"/><circle cx="1692.8" cy="323.8" r="4"/><circle cx="1489.7" cy="328.2" r="4"/><circle cx="1482.4" cy="331.9" r="4"/><circle cx="1469.2" cy="334.1" r="4"/><circle cx="1469.2" cy="351.6" r="4"/><circle cx="1467.8" cy="360.4" r="4"/><circle cx="1666.5" cy="341.4" r="4"/><circle cx="1675.3" cy="345.8" r="4"/><circle cx="1689.9" cy="350.1" r="4"/><circle cx="1717.7" cy="338.5" r="4"/><circle cx="1729.3" cy="339.9" r="4"/><circle cx="1732.3" cy="331.1" r="4"/><circle cx="1530.6" cy="375.0" r="4"/><circle cx="1612.4" cy="375.0" r="4"/><circle cx="1589.1" cy="379.4" r="4"/><circle cx="1704.5" cy="376.4" r="4"/><circle cx="1735.2" cy="379.4" r="4"/><circle cx="1466.3" cy="375.0" r="4"/><circle cx="1738.1" cy="356.0" r="4"/><circle cx="1466.3" cy="385.2" r="4"/><circle cx="1456.1" cy="395.4" r="4"/><circle cx="1469.2" cy="398.4" r="4"/><circle cx="1482.4" cy="394.0" r="4"/><circle cx="1720.6" cy="413.0" r="4"/><circle cx="1730.8" cy="407.1" r="4"/><circle cx="1736.7" cy="414.4" r="4"/><circle cx="1738.1" cy="395.4" r="4"/><circle cx="1497.0" cy="413.0" r="4"/><circle cx="1501.4" cy="418.8" r="4"/><circle cx="1530.6" cy="442.2" r="4"/><circle cx="1706.0" cy="455.4" r="4"/><circle cx="1726.4" cy="451.0" r="4"/><circle cx="1735.2" cy="449.5" r="4"/><circle cx="1738.1" cy="420.3" r="4"/><circle cx="1736.0" cy="301.6" r="4"/><circle cx="1734.3" cy="299.1" r="4"/><circle cx="1476.4" cy="334.5" r="4"/><circle cx="1476.5" cy="332.8" r="4"/><circle cx="1470.0" cy="354.7" r="4"/><circle cx="1470.3" cy="357.2" r="4"/><circle cx="1467.7" cy="366.3" r="4"/><circle cx="1669.7" cy="341.9" r="4"/><circle cx="1669.8" cy="342.4" r="4"/><circle cx="1682.3" cy="349.5" r="4"/><circle cx="1682.4" cy="348.7" r="4"/><circle cx="1724.6" cy="339.6" r="4"/><circle cx="1730.4" cy="337.7" r="4"/><circle cx="1728.8" cy="336.3" r="4"/><circle cx="1728.9" cy="336.3" r="4"/><circle cx="1582.7" cy="374.3" r="4"/><circle cx="1532.3" cy="374.1" r="4"/><circle cx="1530.8" cy="373.6" r="4"/><circle cx="1612.2" cy="378.7" r="4"/><circle cx="1467.6" cy="368.8" r="4"/><circle cx="1467.8" cy="379.3" r="4"/><circle cx="1462.1" cy="391.9" r="4"/><circle cx="1462.8" cy="395.4" r="4"/><circle cx="1478.1" cy="394.2" r="4"/><circle cx="1477.2" cy="397.2" r="4"/><circle cx="1474.1" cy="395.7" r="4"/><circle cx="1724.8" cy="410.9" r="4"/><circle cx="1733.6" cy="410.6" r="4"/><circle cx="1737.8" cy="417.0" r="4"/><circle cx="1734.6" cy="400.6" r="4"/><circle cx="1733.5" cy="401.4" r="4"/><circle cx="1498.5" cy="416.8" r="4"/><circle cx="1497.5" cy="415.3" r="4"/><circle cx="1534.9" cy="440.5" r="4"/><circle cx="1731.1" cy="449.0" r="4"/><circle cx="1729.2" cy="450.7" r="4"/><circle cx="1731.1" cy="448.8" r="4"/><circle cx="1735.9" cy="418.1" r="4"/><circle cx="1735.6" cy="414.4" r="4"/><circle cx="1808.7" cy="310.7" r="4"/><circle cx="1868.6" cy="320.9" r="4"/><circle cx="1826.2" cy="338.5" r="4"/><circle cx="1830.6" cy="350.1" r="4"/><circle cx="1802.8" cy="345.8" r="4"/><circle cx="1807.2" cy="364.8" r="4"/><circle cx="1826.2" cy="366.2" r="4"/><circle cx="1744.4" cy="356.0" r="4"/><circle cx="1761.9" cy="363.3" r="4"/><circle cx="1757.5" cy="386.7" r="4"/><circle cx="1773.6" cy="385.2" r="4"/><circle cx="1779.5" cy="385.2" r="4"/><circle cx="1799.9" cy="383.8" r="4"/><circle cx="1807.2" cy="386.7" r="4"/><circle cx="1745.8" cy="392.5" r="4"/><circle cx="1744.4" cy="399.8" r="4"/><circle cx="1760.5" cy="407.1" r="4"/><circle cx="1779.5" cy="399.8" r="4"/><circle cx="1794.1" cy="398.4" r="4"/><circle cx="1794.1" cy="415.9" r="4"/><circle cx="1788.2" cy="429.1" r="4"/><circle cx="1802.8" cy="432.0" r="4"/><circle cx="1751.7" cy="432.0" r="4"/><circle cx="1759.0" cy="424.7" r="4"/><circle cx="1760.5" cy="442.2" r="4"/><circle cx="1742.9" cy="452.4" r="4"/><circle cx="1805.8" cy="451.0" r="4"/><circle cx="1883.2" cy="367.7" r="4"/><circle cx="1881.8" cy="329.7" r="4"/><circle cx="1868.6" cy="414.4" r="4"/><circle cx="1870.1" cy="420.3" r="4"/><circle cx="1229.2" cy="476.1" r="4"/><circle cx="1262.8" cy="479.0" r="4"/><circle cx="1265.8" cy="486.3" r="4"/><circle cx="1277.5" cy="476.1" r="4"/><circle cx="1292.1" cy="473.2" r="4"/><circle cx="1286.2" cy="511.1" r="4"/><circle cx="1290.6" cy="521.4" r="4"/><circle cx="1300.8" cy="521.4" r="4"/><circle cx="1308.1" cy="515.5" r="4"/><circle cx="1344.7" cy="468.8" r="4"/><circle cx="1354.9" cy="479.0" r="4"/><circle cx="1394.4" cy="467.3" r="4"/><circle cx="1403.1" cy="482.7" r="4"/><circle cx="1384.1" cy="486.3" r="4"/><circle cx="1420.7" cy="496.5" r="4"/><circle cx="1381.2" cy="511.1" r="4"/><circle cx="1473.3" cy="502.4" r="4"/><circle cx="1485.0" cy="489.2" r="4"/><circle cx="1486.4" cy="476.1" r="4"/><circle cx="1492.3" cy="467.3" r="4"/><circle cx="1490.8" cy="462.9" r="4"/><circle cx="1273.1" cy="531.6" r="4"/><circle cx="1271.6" cy="538.9" r="4"/><circle cx="1274.5" cy="547.7" r="4"/><circle cx="1287.7" cy="543.3" r="4"/><circle cx="1305.2" cy="538.9" r="4"/><circle cx="1296.4" cy="552.1" r="4"/><circle cx="1312.5" cy="558.6" r="4"/><circle cx="1328.6" cy="562.3" r="4"/><circle cx="1337.4" cy="568.1" r="4"/><circle cx="1372.4" cy="526.5" r="4"/><circle cx="1379.0" cy="541.1" r="4"/><circle cx="1381.2" cy="556.4" r="4"/><circle cx="1394.4" cy="534.5" r="4"/><circle cx="1404.6" cy="536.0" r="4"/><circle cx="1395.8" cy="544.8" r="4"/><circle cx="1397.3" cy="553.5" r="4"/><circle cx="1413.4" cy="541.8" r="4"/><circle cx="1420.7" cy="549.1" r="4"/><circle cx="1429.4" cy="547.7" r="4"/><circle cx="1430.9" cy="557.9" r="4"/><circle cx="1439.7" cy="541.8" r="4"/><circle cx="1441.1" cy="553.5" r="4"/><circle cx="1448.4" cy="549.1" r="4"/><circle cx="1454.3" cy="549.1" r="4"/><circle cx="1439.7" cy="565.2" r="4"/><circle cx="1448.4" cy="565.2" r="4"/><circle cx="1454.3" cy="571.1" r="4"/><circle cx="1458.7" cy="531.6" r="4"/><circle cx="1468.9" cy="530.1" r="4"/><circle cx="1474.7" cy="562.3" r="4"/><circle cx="1477.7" cy="575.4" r="4"/><circle cx="1397.3" cy="572.5" r="4"/><circle cx="1441.1" cy="585.7" r="4"/><circle cx="1463.0" cy="593.0" r="4"/><circle cx="1284.8" cy="587.1" r="4"/><circle cx="1305.2" cy="588.6" r="4"/><circle cx="1308.1" cy="598.8" r="4"/><circle cx="1306.7" cy="606.1" r="4"/><circle cx="1296.4" cy="612.0" r="4"/><circle cx="1302.3" cy="614.9" r="4"/><circle cx="1278.9" cy="604.7" r="4"/><circle cx="1338.8" cy="601.8" r="4"/><circle cx="1343.2" cy="616.4" r="4"/><circle cx="1381.2" cy="598.8" r="4"/><circle cx="1403.1" cy="598.8" r="4"/><circle cx="1239.5" cy="612.0" r="4"/><circle cx="1226.3" cy="619.3" r="4"/><circle cx="1238.0" cy="626.6" r="4"/><circle cx="1249.7" cy="629.5" r="4"/><circle cx="1278.9" cy="635.4" r="4"/><circle cx="1308.1" cy="638.3" r="4"/><circle cx="1324.2" cy="636.8" r="4"/><circle cx="1337.4" cy="638.3" r="4"/><circle cx="1346.1" cy="636.8" r="4"/><circle cx="1425.0" cy="620.7" r="4"/><circle cx="1428.0" cy="631.0" r="4"/><circle cx="1266.0" cy="483.6" r="4"/><circle cx="1286.9" cy="475.6" r="4"/><circle cx="1298.2" cy="520.9" r="4"/><circle cx="1305.8" cy="518.4" r="4"/><circle cx="1486.7" cy="479.3" r="4"/><circle cx="1487.5" cy="483.9" r="4"/><circle cx="1490.9" cy="463.6" r="4"/><circle cx="1270.4" cy="536.4" r="4"/><circle cx="1272.3" cy="536.7" r="4"/><circle cx="1301.9" cy="547.2" r="4"/><circle cx="1299.9" cy="543.8" r="4"/><circle cx="1332.2" cy="564.8" r="4"/><circle cx="1397.2" cy="549.7" r="4"/><circle cx="1434.0" cy="544.3" r="4"/><circle cx="1439.2" cy="558.3" r="4"/><circle cx="1462.1" cy="530.0" r="4"/><circle cx="1474.4" cy="567.8" r="4"/><circle cx="1307.9" cy="595.8" r="4"/><circle cx="1302.7" cy="607.3" r="4"/><circle cx="1303.1" cy="613.2" r="4"/><circle cx="1341.1" cy="607.3" r="4"/><circle cx="1332.2" cy="636.4" r="4"/><circle cx="1340.6" cy="636.3" r="4"/><circle cx="1505.8" cy="470.2" r="4"/><circle cx="1519.0" cy="476.1" r="4"/><circle cx="1514.6" cy="481.9" r="4"/><circle cx="1710.4" cy="467.3" r="4"/><circle cx="1719.2" cy="464.4" r="4"/><circle cx="1738.2" cy="464.4" r="4"/><circle cx="1714.8" cy="481.9" r="4"/><circle cx="1790.8" cy="464.4" r="4"/><circle cx="1751.4" cy="474.6" r="4"/><circle cx="1763.0" cy="479.0" r="4"/><circle cx="1736.7" cy="489.2" r="4"/><circle cx="1748.4" cy="486.3" r="4"/><circle cx="1533.6" cy="502.4" r="4"/><circle cx="1723.6" cy="505.3" r="4"/><circle cx="1745.5" cy="498.0" r="4"/><circle cx="1768.9" cy="496.5" r="4"/><circle cx="1777.7" cy="489.2" r="4"/><circle cx="1707.5" cy="508.2" r="4"/><circle cx="1711.9" cy="518.5" r="4"/><circle cx="1716.3" cy="524.3" r="4"/><circle cx="1719.2" cy="531.6" r="4"/><circle cx="1726.5" cy="525.8" r="4"/><circle cx="1714.8" cy="540.4" r="4"/><circle cx="1764.5" cy="518.5" r="4"/><circle cx="1768.9" cy="527.2" r="4"/><circle cx="1764.5" cy="534.5" r="4"/><circle cx="1748.4" cy="530.1" r="4"/><circle cx="1793.7" cy="524.3" r="4"/><circle cx="1795.2" cy="544.8" r="4"/><circle cx="1739.7" cy="541.8" r="4"/><circle cx="1752.8" cy="543.3" r="4"/><circle cx="1559.9" cy="571.1" r="4"/><circle cx="1710.4" cy="556.4" r="4"/><circle cx="1735.3" cy="560.8" r="4"/><circle cx="1751.4" cy="556.4" r="4"/><circle cx="1752.8" cy="568.1" r="4"/><circle cx="1758.7" cy="568.1" r="4"/><circle cx="1786.4" cy="560.8" r="4"/><circle cx="1780.6" cy="572.5" r="4"/><circle cx="1730.9" cy="576.9" r="4"/><circle cx="1767.4" cy="579.8" r="4"/><circle cx="1695.8" cy="571.1" r="4"/><circle cx="1701.7" cy="571.1" r="4"/><circle cx="1583.3" cy="571.1" r="4"/><circle cx="1592.1" cy="576.9" r="4"/><circle cx="1616.9" cy="576.9" r="4"/><circle cx="1551.1" cy="582.8" r="4"/><circle cx="1551.1" cy="588.6" r="4"/><circle cx="1583.3" cy="585.7" r="4"/><circle cx="1593.5" cy="581.3" r="4"/><circle cx="1605.2" cy="588.6" r="4"/><circle cx="1627.1" cy="584.2" r="4"/><circle cx="1732.4" cy="587.1" r="4"/><circle cx="1730.9" cy="591.5" r="4"/><circle cx="1774.7" cy="594.4" r="4"/><circle cx="1729.4" cy="606.1" r="4"/><circle cx="1770.3" cy="607.6" r="4"/><circle cx="1529.2" cy="601.8" r="4"/><circle cx="1628.6" cy="598.8" r="4"/><circle cx="1700.2" cy="585.7" r="4"/><circle cx="1529.2" cy="614.9" r="4"/><circle cx="1538.0" cy="629.5" r="4"/><circle cx="1754.3" cy="617.8" r="4"/><circle cx="1771.8" cy="625.1" r="4"/><circle cx="1782.0" cy="617.8" r="4"/><circle cx="1790.8" cy="635.4" r="4"/><circle cx="1510.7" cy="476.6" r="4"/><circle cx="1517.1" cy="477.3" r="4"/><circle cx="1508.9" cy="474.1" r="4"/><circle cx="1712.4" cy="474.5" r="4"/><circle cx="1710.7" cy="472.1" r="4"/><circle cx="1716.4" cy="466.6" r="4"/><circle cx="1712.8" cy="474.7" r="4"/><circle cx="1750.1" cy="480.8" r="4"/><circle cx="1758.2" cy="476.2" r="4"/><circle cx="1739.2" cy="493.8" r="4"/><circle cx="1746.2" cy="493.1" r="4"/><circle cx="1532.5" cy="511.5" r="4"/><circle cx="1534.5" cy="518.2" r="4"/><circle cx="1706.3" cy="501.4" r="4"/><circle cx="1748.8" cy="490.2" r="4"/><circle cx="1773.0" cy="493.4" r="4"/><circle cx="1774.8" cy="490.8" r="4"/><circle cx="1773.3" cy="494.0" r="4"/><circle cx="1705.2" cy="510.1" r="4"/><circle cx="1707.8" cy="504.3" r="4"/><circle cx="1714.7" cy="524.0" r="4"/><circle cx="1723.0" cy="523.3" r="4"/><circle cx="1713.7" cy="522.2" r="4"/><circle cx="1716.0" cy="526.6" r="4"/><circle cx="1718.5" cy="526.8" r="4"/><circle cx="1720.3" cy="530.5" r="4"/><circle cx="1717.8" cy="535.8" r="4"/><circle cx="1765.4" cy="522.7" r="4"/><circle cx="1767.8" cy="525.0" r="4"/><circle cx="1764.8" cy="533.1" r="4"/><circle cx="1751.8" cy="538.8" r="4"/><circle cx="1747.0" cy="541.4" r="4"/><circle cx="1749.4" cy="538.6" r="4"/><circle cx="1553.5" cy="578.4" r="4"/><circle cx="1708.6" cy="554.3" r="4"/><circle cx="1707.8" cy="556.6" r="4"/><circle cx="1750.5" cy="563.8" r="4"/><circle cx="1755.5" cy="566.9" r="4"/><circle cx="1753.1" cy="562.9" r="4"/><circle cx="1757.6" cy="567.4" r="4"/><circle cx="1781.9" cy="566.1" r="4"/><circle cx="1774.2" cy="577.0" r="4"/><circle cx="1775.1" cy="577.1" r="4"/><circle cx="1730.4" cy="582.4" r="4"/><circle cx="1763.2" cy="572.2" r="4"/><circle cx="1698.7" cy="577.6" r="4"/><circle cx="1699.4" cy="575.0" r="4"/><circle cx="1581.3" cy="578.3" r="4"/><circle cx="1594.0" cy="574.2" r="4"/><circle cx="1596.2" cy="575.9" r="4"/><circle cx="1594.6" cy="581.2" r="4"/><circle cx="1618.7" cy="574.0" r="4"/><circle cx="1621.9" cy="580.2" r="4"/><circle cx="1554.4" cy="579.2" r="4"/><circle cx="1552.1" cy="586.9" r="4"/><circle cx="1550.6" cy="585.7" r="4"/><circle cx="1587.4" cy="582.9" r="4"/><circle cx="1595.0" cy="576.7" r="4"/><circle cx="1601.1" cy="586.5" r="4"/><circle cx="1628.0" cy="588.8" r="4"/><circle cx="1732.2" cy="582.1" r="4"/><circle cx="1731.0" cy="600.1" r="4"/><circle cx="1732.7" cy="583.7" r="4"/><circle cx="1774.4" cy="600.0" r="4"/><circle cx="1731.1" cy="598.7" r="4"/><circle cx="1775.4" cy="613.1" r="4"/><circle cx="1528.9" cy="610.7" r="4"/><circle cx="1626.2" cy="591.9" r="4"/><circle cx="1626.7" cy="592.4" r="4"/><circle cx="1698.8" cy="578.5" r="4"/><circle cx="1531.0" cy="611.2" r="4"/><circle cx="1774.4" cy="624.1" r="4"/><circle cx="1778.6" cy="621.1" r="4"/><circle cx="1233.6" cy="644.4" r="4"/><circle cx="1219.0" cy="651.7" r="4"/><circle cx="1223.4" cy="659.0" r="4"/><circle cx="1257.0" cy="656.8" r="4"/><circle cx="1277.5" cy="642.9" r="4"/><circle cx="1283.3" cy="644.4" r="4"/><circle cx="1293.5" cy="648.8" r="4"/><circle cx="1305.2" cy="644.4" r="4"/><circle cx="1325.7" cy="645.8" r="4"/><circle cx="1334.4" cy="642.9" r="4"/><circle cx="1344.7" cy="644.4" r="4"/><circle cx="1278.9" cy="656.1" r="4"/><circle cx="1273.1" cy="669.2" r="4"/><circle cx="1283.3" cy="672.1" r="4"/><circle cx="1292.1" cy="670.7" r="4"/><circle cx="1302.3" cy="678.7" r="4"/><circle cx="1321.3" cy="660.5" r="4"/><circle cx="1327.1" cy="686.8" r="4"/><circle cx="1235.1" cy="683.8" r="4"/><circle cx="1220.5" cy="689.7" r="4"/><circle cx="1422.1" cy="644.4" r="4"/><circle cx="1439.7" cy="656.1" r="4"/><circle cx="1428.0" cy="669.2" r="4"/><circle cx="1423.6" cy="676.5" r="4"/><circle cx="1439.7" cy="676.5" r="4"/><circle cx="1451.4" cy="670.7" r="4"/><circle cx="1474.7" cy="675.1" r="4"/><circle cx="1482.0" cy="683.8" r="4"/><circle cx="1492.3" cy="688.2" r="4"/><circle cx="1490.8" cy="704.3" r="4"/><circle cx="1486.4" cy="718.9" r="4"/><circle cx="1498.1" cy="670.7" r="4"/><circle cx="1381.2" cy="679.5" r="4"/><circle cx="1376.8" cy="701.4" r="4"/><circle cx="1387.1" cy="708.7" r="4"/><circle cx="1394.4" cy="716.0" r="4"/><circle cx="1381.2" cy="723.3" r="4"/><circle cx="1391.4" cy="724.8" r="4"/><circle cx="1409.0" cy="705.8" r="4"/><circle cx="1410.4" cy="723.3" r="4"/><circle cx="1397.3" cy="739.4" r="4"/><circle cx="1392.9" cy="739.4" r="4"/><circle cx="1406.0" cy="746.7" r="4"/><circle cx="1401.7" cy="752.5" r="4"/><circle cx="1400.2" cy="761.3" r="4"/><circle cx="1387.1" cy="758.4" r="4"/><circle cx="1413.4" cy="765.7" r="4"/><circle cx="1422.1" cy="773.0" r="4"/><circle cx="1430.9" cy="736.4" r="4"/><circle cx="1441.1" cy="740.8" r="4"/><circle cx="1471.8" cy="754.0" r="4"/><circle cx="1451.4" cy="761.3" r="4"/><circle cx="1485.0" cy="768.6" r="4"/><circle cx="1492.3" cy="775.9" r="4"/><circle cx="1498.1" cy="765.7" r="4"/><circle cx="1410.4" cy="796.4" r="4"/><circle cx="1425.0" cy="802.2" r="4"/><circle cx="1435.3" cy="797.8" r="4"/><circle cx="1428.0" cy="815.4" r="4"/><circle cx="1222.8" cy="655.3" r="4"/><circle cx="1221.1" cy="654.2" r="4"/><circle cx="1278.3" cy="650.8" r="4"/><circle cx="1279.3" cy="644.4" r="4"/><circle cx="1278.8" cy="651.0" r="4"/><circle cx="1285.9" cy="645.1" r="4"/><circle cx="1300.0" cy="645.6" r="4"/><circle cx="1288.3" cy="646.7" r="4"/><circle cx="1297.3" cy="646.9" r="4"/><circle cx="1298.2" cy="646.9" r="4"/><circle cx="1324.7" cy="652.3" r="4"/><circle cx="1328.1" cy="643.2" r="4"/><circle cx="1337.3" cy="642.5" r="4"/><circle cx="1277.2" cy="662.0" r="4"/><circle cx="1278.0" cy="669.0" r="4"/><circle cx="1287.5" cy="673.5" r="4"/><circle cx="1296.3" cy="674.7" r="4"/><circle cx="1297.1" cy="673.9" r="4"/><circle cx="1321.5" cy="654.9" r="4"/><circle cx="1323.0" cy="655.4" r="4"/><circle cx="1229.7" cy="687.8" r="4"/><circle cx="1426.6" cy="671.3" r="4"/><circle cx="1426.9" cy="674.7" r="4"/><circle cx="1424.6" cy="671.7" r="4"/><circle cx="1434.0" cy="671.4" r="4"/><circle cx="1443.4" cy="672.8" r="4"/><circle cx="1477.0" cy="677.7" r="4"/><circle cx="1475.6" cy="680.2" r="4"/><circle cx="1485.5" cy="686.8" r="4"/><circle cx="1487.7" cy="714.3" r="4"/><circle cx="1490.5" cy="709.0" r="4"/><circle cx="1489.4" cy="712.8" r="4"/><circle cx="1380.0" cy="702.5" r="4"/><circle cx="1383.9" cy="712.9" r="4"/><circle cx="1390.6" cy="723.2" r="4"/><circle cx="1387.1" cy="719.3" r="4"/><circle cx="1386.8" cy="722.7" r="4"/><circle cx="1395.7" cy="737.6" r="4"/><circle cx="1393.8" cy="730.8" r="4"/><circle cx="1392.6" cy="729.8" r="4"/><circle cx="1401.9" cy="751.0" r="4"/><circle cx="1396.5" cy="745.8" r="4"/><circle cx="1394.1" cy="761.2" r="4"/><circle cx="1395.4" cy="756.7" r="4"/><circle cx="1418.8" cy="770.5" r="4"/><circle cx="1417.7" cy="767.3" r="4"/><circle cx="1435.6" cy="738.5" r="4"/><circle cx="1437.5" cy="740.0" r="4"/><circle cx="1492.4" cy="765.2" r="4"/><circle cx="1497.1" cy="770.0" r="4"/><circle cx="1493.3" cy="769.2" r="4"/><circle cx="1420.0" cy="800.2" r="4"/><circle cx="1427.9" cy="810.4" r="4"/><circle cx="1431.9" cy="800.6" r="4"/><circle cx="1427.1" cy="808.5" r="4"/><circle cx="1787.9" cy="641.5" r="4"/><circle cx="1502.9" cy="670.7" r="4"/><circle cx="1519.0" cy="672.1" r="4"/><circle cx="1524.8" cy="669.2" r="4"/><circle cx="1538.0" cy="667.8" r="4"/><circle cx="1536.5" cy="679.5" r="4"/><circle cx="1720.7" cy="689.7" r="4"/><circle cx="1716.3" cy="704.3" r="4"/><circle cx="1524.8" cy="698.5" r="4"/><circle cx="1539.5" cy="699.9" r="4"/><circle cx="1507.3" cy="706.5" r="4"/><circle cx="1526.3" cy="718.9" r="4"/><circle cx="1780.6" cy="702.8" r="4"/><circle cx="1773.3" cy="713.1" r="4"/><circle cx="1761.6" cy="726.2" r="4"/><circle cx="1745.5" cy="736.4" r="4"/><circle cx="1764.5" cy="736.4" r="4"/><circle cx="1764.5" cy="768.6" r="4"/><circle cx="1523.4" cy="739.4" r="4"/><circle cx="1526.3" cy="746.7" r="4"/><circle cx="1524.8" cy="758.4" r="4"/><circle cx="1529.2" cy="773.0" r="4"/><circle cx="1514.6" cy="768.6" r="4"/><circle cx="1502.9" cy="768.6" r="4"/><circle cx="1507.3" cy="784.7" r="4"/><circle cx="1519.0" cy="792.0" r="4"/><circle cx="1523.4" cy="786.1" r="4"/><circle cx="1538.0" cy="775.9" r="4"/><circle cx="1539.5" cy="792.0" r="4"/><circle cx="1543.8" cy="789.1" r="4"/><circle cx="1618.4" cy="784.7" r="4"/><circle cx="1621.3" cy="794.9" r="4"/><circle cx="1627.1" cy="800.7" r="4"/><circle cx="1640.3" cy="805.1" r="4"/><circle cx="1644.7" cy="812.4" r="4"/><circle cx="1595.0" cy="792.0" r="4"/><circle cx="1564.3" cy="802.2" r="4"/><circle cx="1543.8" cy="812.4" r="4"/><circle cx="1536.5" cy="816.8" r="4"/><circle cx="1681.2" cy="790.5" r="4"/><circle cx="1668.1" cy="815.4" r="4"/><circle cx="1684.1" cy="808.1" r="4"/><circle cx="1692.9" cy="811.0" r="4"/><circle cx="1701.7" cy="813.9" r="4"/><circle cx="1713.4" cy="816.8" r="4"/><circle cx="1725.0" cy="816.8" r="4"/><circle cx="1621.3" cy="818.3" r="4"/><circle cx="1522.5" cy="668.8" r="4"/><circle cx="1529.3" cy="675.0" r="4"/><circle cx="1533.7" cy="675.3" r="4"/><circle cx="1537.0" cy="673.7" r="4"/><circle cx="1718.2" cy="697.7" r="4"/><circle cx="1717.9" cy="693.9" r="4"/><circle cx="1721.0" cy="693.7" r="4"/><circle cx="1531.3" cy="698.0" r="4"/><circle cx="1777.2" cy="706.2" r="4"/><circle cx="1778.8" cy="706.9" r="4"/><circle cx="1764.0" cy="731.7" r="4"/><circle cx="1764.1" cy="733.5" r="4"/><circle cx="1764.2" cy="730.8" r="4"/><circle cx="1524.9" cy="740.8" r="4"/><circle cx="1524.6" cy="742.6" r="4"/><circle cx="1526.3" cy="753.1" r="4"/><circle cx="1537.6" cy="771.9" r="4"/><circle cx="1521.4" cy="772.2" r="4"/><circle cx="1521.6" cy="769.9" r="4"/><circle cx="1505.5" cy="768.7" r="4"/><circle cx="1511.8" cy="786.7" r="4"/><circle cx="1513.7" cy="788.0" r="4"/><circle cx="1512.5" cy="786.3" r="4"/><circle cx="1514.7" cy="790.2" r="4"/><circle cx="1522.3" cy="790.0" r="4"/><circle cx="1538.9" cy="774.2" r="4"/><circle cx="1543.9" cy="790.4" r="4"/><circle cx="1539.5" cy="784.3" r="4"/><circle cx="1540.1" cy="790.0" r="4"/><circle cx="1620.7" cy="787.9" r="4"/><circle cx="1622.1" cy="782.8" r="4"/><circle cx="1624.8" cy="798.9" r="4"/><circle cx="1630.0" cy="801.3" r="4"/><circle cx="1644.2" cy="810.8" r="4"/><circle cx="1641.1" cy="807.5" r="4"/><circle cx="1539.6" cy="816.3" r="4"/><circle cx="1541.8" cy="814.6" r="4"/><circle cx="1541.5" cy="812.4" r="4"/><circle cx="1690.4" cy="808.8" r="4"/><circle cx="1696.3" cy="811.3" r="4"/><circle cx="1699.1" cy="814.0" r="4"/><circle cx="1708.1" cy="816.5" r="4"/><circle cx="1719.5" cy="818.7" r="4"/><circle cx="1397.3" cy="840.5" r="4"/><circle cx="1464.5" cy="849.2" r="4"/><circle cx="1489.3" cy="839.0" r="4"/><circle cx="1429.4" cy="820.0" r="4"/><circle cx="1387.1" cy="878.5" r="4"/><circle cx="1381.6" cy="879.6" r="4"/><circle cx="1539.5" cy="821.5" r="4"/><circle cx="1611.1" cy="822.9" r="4"/><circle cx="1621.3" cy="822.9" r="4"/><circle cx="1638.8" cy="824.4" r="4"/><circle cx="1602.3" cy="834.6" r="4"/><circle cx="1551.1" cy="839.0" r="4"/><circle cx="1540.9" cy="844.8" r="4"/><circle cx="1530.7" cy="855.1" r="4"/><circle cx="1502.9" cy="830.2" r="4"/><circle cx="1653.4" cy="846.3" r="4"/><circle cx="1676.8" cy="822.9" r="4"/><circle cx="1703.1" cy="822.9" r="4"/><circle cx="1716.3" cy="822.9" r="4"/><circle cx="1725.0" cy="821.5" r="4"/><circle cx="1717.7" cy="828.8" r="4"/><circle cx="1716.3" cy="840.5" r="4"/><circle cx="1507.3" cy="872.6" r="4"/><circle cx="1554.1" cy="877.0" r="4"/><circle cx="1552.6" cy="882.8" r="4"/><circle cx="1710.4" cy="877.0" r="4"/><circle cx="1701.7" cy="888.7" r="4"/><circle cx="1732.4" cy="893.1" r="4"/><circle cx="1754.3" cy="874.1" r="4"/><circle cx="1540.9" cy="922.3" r="4"/><circle cx="1549.7" cy="919.4" r="4"/><circle cx="1554.1" cy="917.9" r="4"/><circle cx="1570.1" cy="931.1" r="4"/><circle cx="1552.6" cy="938.4" r="4"/><circle cx="1559.9" cy="944.2" r="4"/><circle cx="1590.6" cy="919.4" r="4"/><circle cx="1605.2" cy="926.7" r="4"/><circle cx="1615.4" cy="920.8" r="4"/><circle cx="1628.6" cy="906.2" r="4"/><circle cx="1628.6" cy="915.0" r="4"/><circle cx="1643.2" cy="910.6" r="4"/><circle cx="1654.9" cy="901.8" r="4"/><circle cx="1660.7" cy="904.8" r="4"/><circle cx="1589.1" cy="944.2" r="4"/><circle cx="1630.1" cy="941.3" r="4"/><circle cx="1640.3" cy="936.9" r="4"/><circle cx="1673.9" cy="948.6" r="4"/><circle cx="1669.5" cy="954.4" r="4"/><circle cx="1694.4" cy="942.8" r="4"/><circle cx="1703.1" cy="938.4" r="4"/><circle cx="1709.0" cy="932.5" r="4"/><circle cx="1786.4" cy="935.4" r="4"/><circle cx="1786.4" cy="942.8" r="4"/><circle cx="1540.9" cy="985.1" r="4"/><circle cx="1554.1" cy="983.7" r="4"/><circle cx="1571.6" cy="982.2" r="4"/><circle cx="1593.5" cy="983.7" r="4"/><circle cx="1583.3" cy="991.0" r="4"/><circle cx="1539.5" cy="995.4" r="4"/><circle cx="1551.1" cy="996.8" r="4"/><circle cx="1564.3" cy="995.4" r="4"/><circle cx="1573.1" cy="995.4" r="4"/><circle cx="1710.4" cy="974.9" r="4"/><circle cx="1681.2" cy="983.7" r="4"/><circle cx="1796.7" cy="980.7" r="4"/><circle cx="1782.0" cy="992.4" r="4"/><circle cx="1280.4" cy="1071.6" r="4"/><circle cx="1289.1" cy="1080.4" r="4"/><circle cx="1322.8" cy="1080.4" r="4"/><circle cx="1357.8" cy="1070.1" r="4"/><circle cx="1349.1" cy="1078.9" r="4"/><circle cx="1363.7" cy="1081.8" r="4"/><circle cx="1379.7" cy="1078.9" r="4"/><circle cx="1353.4" cy="1084.8" r="4"/><circle cx="1359.3" cy="1092.1" r="4"/><circle cx="1375.4" cy="1090.6" r="4"/><circle cx="1391.4" cy="1086.2" r="4"/><circle cx="1395.8" cy="1076.0" r="4"/><circle cx="1407.5" cy="1076.0" r="4"/><circle cx="1416.3" cy="1081.8" r="4"/><circle cx="1419.2" cy="1093.5" r="4"/><circle cx="1429.4" cy="1092.1" r="4"/><circle cx="1442.6" cy="1073.1" r="4"/><circle cx="1442.6" cy="1087.7" r="4"/><circle cx="1390.0" cy="1096.4" r="4"/><circle cx="1401.7" cy="1100.8" r="4"/><circle cx="1369.5" cy="1099.4" r="4"/><circle cx="1376.8" cy="1105.2" r="4"/><circle cx="1343.2" cy="1100.8" r="4"/><circle cx="1350.5" cy="1106.7" r="4"/><circle cx="1340.3" cy="1111.1" r="4"/><circle cx="1344.7" cy="1116.9" r="4"/><circle cx="1384.1" cy="1111.1" r="4"/><circle cx="1390.0" cy="1116.9" r="4"/><circle cx="1398.7" cy="1116.9" r="4"/><circle cx="1388.5" cy="1127.1" r="4"/><circle cx="1371.0" cy="1122.8" r="4"/><circle cx="1413.4" cy="1108.1" r="4"/><circle cx="1422.1" cy="1106.7" r="4"/><circle cx="1429.4" cy="1102.3" r="4"/><circle cx="1435.3" cy="1118.4" r="4"/><circle cx="1426.5" cy="1127.1" r="4"/><circle cx="1413.4" cy="1130.1" r="4"/><circle cx="1433.8" cy="1134.4" r="4"/><circle cx="1445.5" cy="1128.6" r="4"/><circle cx="1451.4" cy="1096.4" r="4"/><circle cx="1457.2" cy="1108.1" r="4"/><circle cx="1468.9" cy="1102.3" r="4"/><circle cx="1470.3" cy="1114.0" r="4"/><circle cx="1483.5" cy="1097.9" r="4"/><circle cx="1492.3" cy="1096.4" r="4"/><circle cx="1496.7" cy="1081.8" r="4"/><circle cx="1486.4" cy="1115.4" r="4"/><circle cx="1492.3" cy="1121.3" r="4"/><circle cx="1476.2" cy="1133.0" r="4"/><circle cx="1495.2" cy="1138.8" r="4"/><circle cx="1287.1" cy="1077.9" r="4"/><circle cx="1285.6" cy="1076.3" r="4"/><circle cx="1355.2" cy="1076.3" r="4"/><circle cx="1364.2" cy="1074.7" r="4"/><circle cx="1379.6" cy="1073.3" r="4"/><circle cx="1352.0" cy="1074.4" r="4"/><circle cx="1369.8" cy="1087.5" r="4"/><circle cx="1378.6" cy="1074.0" r="4"/><circle cx="1377.1" cy="1083.7" r="4"/><circle cx="1350.0" cy="1079.8" r="4"/><circle cx="1355.1" cy="1089.2" r="4"/><circle cx="1371.4" cy="1095.5" r="4"/><circle cx="1393.2" cy="1081.6" r="4"/><circle cx="1402.5" cy="1074.7" r="4"/><circle cx="1420.7" cy="1073.6" r="4"/><circle cx="1420.4" cy="1075.8" r="4"/><circle cx="1421.2" cy="1100.3" r="4"/><circle cx="1433.9" cy="1088.3" r="4"/><circle cx="1445.4" cy="1093.6" r="4"/><circle cx="1385.5" cy="1105.4" r="4"/><circle cx="1405.9" cy="1103.5" r="4"/><circle cx="1365.0" cy="1095.0" r="4"/><circle cx="1380.9" cy="1108.8" r="4"/><circle cx="1346.1" cy="1103.0" r="4"/><circle cx="1347.2" cy="1102.2" r="4"/><circle cx="1346.9" cy="1104.1" r="4"/><circle cx="1339.9" cy="1106.9" r="4"/><circle cx="1342.3" cy="1116.3" r="4"/><circle cx="1344.2" cy="1114.4" r="4"/><circle cx="1386.0" cy="1115.3" r="4"/><circle cx="1388.6" cy="1120.1" r="4"/><circle cx="1389.2" cy="1113.1" r="4"/><circle cx="1391.9" cy="1125.0" r="4"/><circle cx="1417.4" cy="1107.8" r="4"/><circle cx="1419.9" cy="1100.3" r="4"/><circle cx="1424.2" cy="1107.1" r="4"/><circle cx="1431.4" cy="1123.5" r="4"/><circle cx="1440.1" cy="1124.1" r="4"/><circle cx="1429.0" cy="1123.9" r="4"/><circle cx="1421.8" cy="1127.5" r="4"/><circle cx="1429.6" cy="1131.4" r="4"/><circle cx="1441.0" cy="1122.9" r="4"/><circle cx="1452.2" cy="1101.1" r="4"/><circle cx="1452.8" cy="1102.9" r="4"/><circle cx="1473.0" cy="1099.6" r="4"/><circle cx="1476.4" cy="1100.0" r="4"/><circle cx="1471.5" cy="1110.8" r="4"/><circle cx="1488.3" cy="1098.5" r="4"/><circle cx="1487.0" cy="1098.3" r="4"/><circle cx="1489.7" cy="1095.7" r="4"/><circle cx="1494.7" cy="1088.2" r="4"/><circle cx="1488.8" cy="1118.4" r="4"/><circle cx="1490.7" cy="1119.3" r="4"/><circle cx="1491.0" cy="1117.3" r="4"/><circle cx="1538.0" cy="1001.5" r="4"/><circle cx="1561.4" cy="1001.5" r="4"/><circle cx="1570.1" cy="1001.5" r="4"/><circle cx="1633.0" cy="1008.8" r="4"/><circle cx="1654.9" cy="1002.9" r="4"/><circle cx="1669.5" cy="1008.8" r="4"/><circle cx="1676.8" cy="1004.4" r="4"/><circle cx="1600.8" cy="1023.4" r="4"/><circle cx="1612.5" cy="1035.1" r="4"/><circle cx="1543.8" cy="1029.2" r="4"/><circle cx="1545.3" cy="1036.5" r="4"/><circle cx="1561.4" cy="1030.7" r="4"/><circle cx="1571.6" cy="1032.1" r="4"/><circle cx="1587.7" cy="1042.4" r="4"/><circle cx="1592.1" cy="1054.1" r="4"/><circle cx="1592.1" cy="1064.3" r="4"/><circle cx="1581.8" cy="1077.5" r="4"/><circle cx="1513.2" cy="1086.2" r="4"/><circle cx="1542.4" cy="1084.8" r="4"/><circle cx="1558.5" cy="1084.8" r="4"/><circle cx="1605.2" cy="1089.1" r="4"/><circle cx="1615.4" cy="1087.7" r="4"/><circle cx="1542.4" cy="1105.2" r="4"/><circle cx="1555.5" cy="1115.4" r="4"/><circle cx="1564.3" cy="1111.1" r="4"/><circle cx="1502.9" cy="1116.9" r="4"/><circle cx="1502.9" cy="1127.1" r="4"/><circle cx="1514.6" cy="1124.2" r="4"/><circle cx="1502.9" cy="1135.9" r="4"/><circle cx="1574.5" cy="1127.1" r="4"/><circle cx="1589.1" cy="1119.8" r="4"/><circle cx="1589.1" cy="1124.2" r="4"/><circle cx="1568.7" cy="1144.7" r="4"/><circle cx="1584.8" cy="1154.9" r="4"/><circle cx="1523.4" cy="1152.0" r="4"/><circle cx="1628.6" cy="1146.1" r="4"/><circle cx="1659.3" cy="1127.1" r="4"/><circle cx="1761.6" cy="1032.1" r="4"/><circle cx="1780.6" cy="1159.3" r="4"/><circle cx="1548.2" cy="1165.1" r="4"/><circle cx="1557.0" cy="1171.0" r="4"/><circle cx="1568.5" cy="1144.4" r="4"/><circle cx="1584.2" cy="1154.4" r="4"/><circle cx="1628.7" cy="1146.7" r="4"/><circle cx="1643.0" cy="1182.5" r="4"/><circle cx="1522.5" cy="1151.5" r="4"/><circle cx="1548.3" cy="1164.5" r="4"/><circle cx="1557.0" cy="1170.0" r="4"/><circle cx="1498.0" cy="1138.6" r="4"/><circle cx="1782.3" cy="1190.3" r="4"/><circle cx="1838.6" cy="920.9" r="4"/><circle cx="1830.0" cy="934.3" r="4"/><circle cx="1828.6" cy="941.4" r="4"/><circle cx="1828.6" cy="948.6" r="4"/><circle cx="1826.6" cy="960.9" r="4"/><circle cx="1864.9" cy="988.6" r="4"/><circle cx="1854.3" cy="1064.3" r="4"/><circle cx="1857.0" cy="1070.0" r="4"/><circle cx="1851.4" cy="1082.9" r="4"/><circle cx="1857.0" cy="1091.4" r="4"/><circle cx="1878.6" cy="1082.9" r="4"/><circle cx="1806.6" cy="1160.9" r="4"/><circle cx="1810.0" cy="992.9" r="4"/><circle cx="1818.6" cy="997.7" r="4"/><circle cx="1806.7" cy="1160.0" r="4"/><circle cx="1218.1" cy="697.7" r="4"/><circle cx="1218.1" cy="702.3" r="4"/><circle cx="1230.5" cy="700.8" r="4"/><circle cx="1239.7" cy="697.7" r="4"/><circle cx="1326.1" cy="690.0" r="4"/><circle cx="1232.0" cy="723.9" r="4"/><circle cx="1222.8" cy="730.1" r="4"/><circle cx="1216.6" cy="737.8" r="4"/><circle cx="1230.5" cy="744.0" r="4"/><circle cx="1252.1" cy="744.0" r="4"/><circle cx="1266.0" cy="717.8" r="4"/><circle cx="1273.7" cy="725.5" r="4"/><circle cx="1281.4" cy="713.1" r="4"/><circle cx="1286.0" cy="705.4" r="4"/><circle cx="1290.6" cy="720.9" r="4"/><circle cx="1281.4" cy="734.7" r="4"/><circle cx="1281.4" cy="742.5" r="4"/><circle cx="1275.2" cy="750.2" r="4"/><circle cx="1303.0" cy="707.0" r="4"/><circle cx="1309.2" cy="702.3" r="4"/><circle cx="1312.2" cy="713.1" r="4"/><circle cx="1303.0" cy="725.5" r="4"/><circle cx="1315.3" cy="727.0" r="4"/><circle cx="1309.2" cy="736.3" r="4"/><circle cx="1321.5" cy="734.7" r="4"/><circle cx="1330.8" cy="734.7" r="4"/><circle cx="1299.9" cy="744.0" r="4"/><circle cx="1318.4" cy="745.5" r="4"/><circle cx="1326.1" cy="756.3" r="4"/><circle cx="1316.9" cy="761.0" r="4"/><circle cx="1336.9" cy="759.4" r="4"/><circle cx="1350.8" cy="737.8" r="4"/><circle cx="1357.0" cy="734.7" r="4"/><circle cx="1350.8" cy="751.7" r="4"/><circle cx="1355.4" cy="756.3" r="4"/><circle cx="1215.1" cy="768.7" r="4"/><circle cx="1219.7" cy="767.1" r="4"/><circle cx="1236.7" cy="761.0" r="4"/><circle cx="1239.7" cy="770.2" r="4"/><circle cx="1218.1" cy="779.5" r="4"/><circle cx="1230.5" cy="776.4" r="4"/><circle cx="1228.9" cy="787.2" r="4"/><circle cx="1244.4" cy="782.6" r="4"/><circle cx="1241.3" cy="790.3" r="4"/><circle cx="1252.1" cy="776.4" r="4"/><circle cx="1262.9" cy="781.0" r="4"/><circle cx="1266.0" cy="788.7" r="4"/><circle cx="1272.1" cy="764.1" r="4"/><circle cx="1273.7" cy="774.9" r="4"/><circle cx="1282.9" cy="768.7" r="4"/><circle cx="1293.7" cy="762.5" r="4"/><circle cx="1301.4" cy="768.7" r="4"/><circle cx="1306.1" cy="773.3" r="4"/><circle cx="1282.9" cy="785.6" r="4"/><circle cx="1292.2" cy="777.9" r="4"/><circle cx="1303.0" cy="777.9" r="4"/><circle cx="1299.9" cy="791.8" r="4"/><circle cx="1318.4" cy="784.1" r="4"/><circle cx="1318.4" cy="793.4" r="4"/><circle cx="1327.7" cy="798.0" r="4"/><circle cx="1235.1" cy="796.4" r="4"/><circle cx="1225.9" cy="804.2" r="4"/><circle cx="1235.1" cy="801.1" r="4"/><circle cx="1232.0" cy="816.5" r="4"/><circle cx="1245.9" cy="811.9" r="4"/><circle cx="1250.5" cy="801.1" r="4"/><circle cx="1259.8" cy="807.2" r="4"/><circle cx="1261.3" cy="821.1" r="4"/><circle cx="1269.1" cy="811.9" r="4"/><circle cx="1276.8" cy="816.5" r="4"/><circle cx="1284.5" cy="802.6" r="4"/><circle cx="1287.6" cy="825.8" r="4"/><circle cx="1293.7" cy="818.0" r="4"/><circle cx="1306.1" cy="804.2" r="4"/><circle cx="1306.1" cy="813.4" r="4"/><circle cx="1316.9" cy="816.5" r="4"/><circle cx="1327.7" cy="822.7" r="4"/><circle cx="1275.2" cy="825.8" r="4"/><circle cx="1267.5" cy="828.8" r="4"/><circle cx="1218.1" cy="830.4" r="4"/><circle cx="1228.9" cy="838.1" r="4"/><circle cx="1236.7" cy="842.7" r="4"/><circle cx="1245.9" cy="845.8" r="4"/><circle cx="1253.6" cy="852.0" r="4"/><circle cx="1261.3" cy="838.1" r="4"/><circle cx="1270.6" cy="841.2" r="4"/><circle cx="1279.9" cy="842.7" r="4"/><circle cx="1287.6" cy="839.6" r="4"/><circle cx="1299.9" cy="836.6" r="4"/><circle cx="1266.0" cy="859.7" r="4"/><circle cx="1275.2" cy="862.8" r="4"/><circle cx="1282.9" cy="856.6" r="4"/><circle cx="1290.6" cy="859.7" r="4"/><circle cx="1275.2" cy="873.6" r="4"/><circle cx="1241.3" cy="867.4" r="4"/><circle cx="1241.3" cy="875.1" r="4"/><circle cx="1326.1" cy="845.8" r="4"/><circle cx="1338.5" cy="844.3" r="4"/><circle cx="1357.0" cy="845.8" r="4"/><circle cx="1349.3" cy="853.5" r="4"/><circle cx="1324.6" cy="859.7" r="4"/><circle cx="1333.8" cy="861.2" r="4"/><circle cx="1343.1" cy="862.8" r="4"/><circle cx="1355.4" cy="867.4" r="4"/><circle cx="1355.4" cy="876.7" r="4"/><circle cx="1327.7" cy="875.1" r="4"/><circle cx="1341.6" cy="875.1" r="4"/><circle cx="1219.4" cy="701.0" r="4"/><circle cx="1217.9" cy="698.8" r="4"/><circle cx="1226.0" cy="701.6" r="4"/><circle cx="1218.7" cy="700.1" r="4"/><circle cx="1223.7" cy="699.8" r="4"/><circle cx="1224.3" cy="701.3" r="4"/><circle cx="1233.7" cy="698.3" r="4"/><circle cx="1232.2" cy="697.8" r="4"/><circle cx="1226.1" cy="725.5" r="4"/><circle cx="1226.2" cy="728.0" r="4"/><circle cx="1219.7" cy="736.5" r="4"/><circle cx="1227.3" cy="725.4" r="4"/><circle cx="1221.8" cy="739.6" r="4"/><circle cx="1222.3" cy="742.1" r="4"/><circle cx="1223.7" cy="739.8" r="4"/><circle cx="1228.9" cy="739.5" r="4"/><circle cx="1269.3" cy="720.4" r="4"/><circle cx="1270.7" cy="723.6" r="4"/><circle cx="1277.5" cy="719.2" r="4"/><circle cx="1279.2" cy="719.8" r="4"/><circle cx="1286.6" cy="718.5" r="4"/><circle cx="1279.9" cy="717.1" r="4"/><circle cx="1283.1" cy="708.0" r="4"/><circle cx="1282.3" cy="711.3" r="4"/><circle cx="1297.5" cy="722.3" r="4"/><circle cx="1296.2" cy="723.1" r="4"/><circle cx="1275.7" cy="730.8" r="4"/><circle cx="1281.3" cy="738.0" r="4"/><circle cx="1283.1" cy="737.8" r="4"/><circle cx="1277.5" cy="745.8" r="4"/><circle cx="1274.5" cy="759.2" r="4"/><circle cx="1278.2" cy="749.1" r="4"/><circle cx="1307.1" cy="708.9" r="4"/><circle cx="1305.3" cy="702.5" r="4"/><circle cx="1309.5" cy="706.3" r="4"/><circle cx="1311.7" cy="709.5" r="4"/><circle cx="1305.5" cy="710.2" r="4"/><circle cx="1307.1" cy="709.2" r="4"/><circle cx="1310.4" cy="725.5" r="4"/><circle cx="1298.3" cy="724.4" r="4"/><circle cx="1315.4" cy="720.5" r="4"/><circle cx="1311.7" cy="729.4" r="4"/><circle cx="1306.4" cy="732.5" r="4"/><circle cx="1304.1" cy="740.3" r="4"/><circle cx="1326.7" cy="733.2" r="4"/><circle cx="1316.5" cy="735.3" r="4"/><circle cx="1324.9" cy="732.9" r="4"/><circle cx="1326.7" cy="733.3" r="4"/><circle cx="1302.7" cy="742.4" r="4"/><circle cx="1303.2" cy="741.7" r="4"/><circle cx="1320.4" cy="749.0" r="4"/><circle cx="1317.0" cy="750.3" r="4"/><circle cx="1323.7" cy="749.6" r="4"/><circle cx="1321.0" cy="759.8" r="4"/><circle cx="1318.1" cy="751.5" r="4"/><circle cx="1320.6" cy="759.1" r="4"/><circle cx="1346.6" cy="754.2" r="4"/><circle cx="1329.8" cy="756.2" r="4"/><circle cx="1354.5" cy="736.5" r="4"/><circle cx="1352.9" cy="736.5" r="4"/><circle cx="1354.9" cy="735.8" r="4"/><circle cx="1353.6" cy="736.0" r="4"/><circle cx="1341.8" cy="754.6" r="4"/><circle cx="1342.9" cy="754.1" r="4"/><circle cx="1353.2" cy="753.6" r="4"/><circle cx="1352.6" cy="755.3" r="4"/><circle cx="1218.0" cy="775.3" r="4"/><circle cx="1214.8" cy="767.1" r="4"/><circle cx="1219.1" cy="766.4" r="4"/><circle cx="1227.3" cy="773.1" r="4"/><circle cx="1239.1" cy="763.1" r="4"/><circle cx="1238.9" cy="765.0" r="4"/><circle cx="1240.5" cy="776.7" r="4"/><circle cx="1236.2" cy="773.5" r="4"/><circle cx="1218.3" cy="774.2" r="4"/><circle cx="1218.6" cy="776.4" r="4"/><circle cx="1240.1" cy="778.6" r="4"/><circle cx="1223.5" cy="771.5" r="4"/><circle cx="1232.1" cy="792.4" r="4"/><circle cx="1233.1" cy="796.1" r="4"/><circle cx="1251.1" cy="779.5" r="4"/><circle cx="1245.7" cy="779.6" r="4"/><circle cx="1238.1" cy="795.9" r="4"/><circle cx="1241.5" cy="785.2" r="4"/><circle cx="1247.4" cy="775.9" r="4"/><circle cx="1258.0" cy="779.6" r="4"/><circle cx="1268.9" cy="777.4" r="4"/><circle cx="1262.7" cy="786.4" r="4"/><circle cx="1265.4" cy="784.0" r="4"/><circle cx="1264.1" cy="785.9" r="4"/><circle cx="1272.1" cy="767.2" r="4"/><circle cx="1280.1" cy="768.3" r="4"/><circle cx="1271.3" cy="769.6" r="4"/><circle cx="1269.3" cy="776.4" r="4"/><circle cx="1291.6" cy="763.1" r="4"/><circle cx="1287.1" cy="765.2" r="4"/><circle cx="1295.0" cy="767.1" r="4"/><circle cx="1291.2" cy="771.1" r="4"/><circle cx="1301.4" cy="775.6" r="4"/><circle cx="1296.0" cy="765.1" r="4"/><circle cx="1302.6" cy="771.7" r="4"/><circle cx="1304.9" cy="774.9" r="4"/><circle cx="1285.7" cy="780.5" r="4"/><circle cx="1286.4" cy="780.6" r="4"/><circle cx="1295.6" cy="785.9" r="4"/><circle cx="1298.6" cy="776.9" r="4"/><circle cx="1306.1" cy="776.4" r="4"/><circle cx="1304.1" cy="774.0" r="4"/><circle cx="1301.0" cy="782.2" r="4"/><circle cx="1303.1" cy="795.0" r="4"/><circle cx="1320.4" cy="787.4" r="4"/><circle cx="1316.7" cy="787.3" r="4"/><circle cx="1317.3" cy="785.7" r="4"/><circle cx="1317.3" cy="789.6" r="4"/><circle cx="1325.2" cy="797.5" r="4"/><circle cx="1321.8" cy="795.2" r="4"/><circle cx="1230.1" cy="791.6" r="4"/><circle cx="1236.1" cy="798.9" r="4"/><circle cx="1230.0" cy="800.9" r="4"/><circle cx="1228.7" cy="804.2" r="4"/><circle cx="1229.5" cy="802.8" r="4"/><circle cx="1233.4" cy="807.6" r="4"/><circle cx="1230.2" cy="813.3" r="4"/><circle cx="1233.5" cy="808.9" r="4"/><circle cx="1239.6" cy="815.7" r="4"/><circle cx="1240.4" cy="806.6" r="4"/><circle cx="1252.1" cy="801.4" r="4"/><circle cx="1256.2" cy="805.3" r="4"/><circle cx="1262.4" cy="813.3" r="4"/><circle cx="1254.1" cy="805.2" r="4"/><circle cx="1267.2" cy="816.6" r="4"/><circle cx="1260.0" cy="816.6" r="4"/><circle cx="1267.6" cy="812.1" r="4"/><circle cx="1272.0" cy="821.2" r="4"/><circle cx="1270.1" cy="821.6" r="4"/><circle cx="1275.1" cy="822.3" r="4"/><circle cx="1282.7" cy="806.7" r="4"/><circle cx="1280.9" cy="809.3" r="4"/><circle cx="1281.1" cy="821.7" r="4"/><circle cx="1279.7" cy="818.4" r="4"/><circle cx="1289.7" cy="822.4" r="4"/><circle cx="1290.4" cy="823.1" r="4"/><circle cx="1303.2" cy="797.9" r="4"/><circle cx="1304.8" cy="798.4" r="4"/><circle cx="1307.5" cy="808.5" r="4"/><circle cx="1312.3" cy="814.6" r="4"/><circle cx="1310.0" cy="814.4" r="4"/><circle cx="1324.5" cy="819.2" r="4"/><circle cx="1321.7" cy="819.7" r="4"/><circle cx="1322.0" cy="820.5" r="4"/><circle cx="1267.8" cy="821.9" r="4"/><circle cx="1272.0" cy="816.4" r="4"/><circle cx="1264.3" cy="833.3" r="4"/><circle cx="1273.4" cy="825.9" r="4"/><circle cx="1221.3" cy="833.4" r="4"/><circle cx="1224.5" cy="834.4" r="4"/><circle cx="1234.1" cy="840.8" r="4"/><circle cx="1226.9" cy="836.2" r="4"/><circle cx="1232.2" cy="841.1" r="4"/><circle cx="1239.8" cy="842.2" r="4"/><circle cx="1238.8" cy="843.0" r="4"/><circle cx="1247.4" cy="849.9" r="4"/><circle cx="1258.5" cy="842.7" r="4"/><circle cx="1256.2" cy="846.5" r="4"/><circle cx="1265.1" cy="834.2" r="4"/><circle cx="1264.6" cy="834.7" r="4"/><circle cx="1276.2" cy="842.7" r="4"/><circle cx="1270.2" cy="835.4" r="4"/><circle cx="1275.5" cy="840.9" r="4"/><circle cx="1282.0" cy="841.0" r="4"/><circle cx="1283.9" cy="839.3" r="4"/><circle cx="1291.1" cy="837.5" r="4"/><circle cx="1295.1" cy="839.1" r="4"/><circle cx="1295.6" cy="836.9" r="4"/><circle cx="1268.8" cy="862.4" r="4"/><circle cx="1256.3" cy="856.5" r="4"/><circle cx="1272.2" cy="862.2" r="4"/><circle cx="1268.8" cy="861.3" r="4"/><circle cx="1280.3" cy="859.7" r="4"/><circle cx="1288.2" cy="860.1" r="4"/><circle cx="1281.8" cy="860.5" r="4"/><circle cx="1285.9" cy="859.3" r="4"/><circle cx="1274.9" cy="869.0" r="4"/><circle cx="1277.2" cy="867.8" r="4"/><circle cx="1239.5" cy="871.7" r="4"/><circle cx="1239.9" cy="873.0" r="4"/><circle cx="1239.6" cy="870.0" r="4"/><circle cx="1241.2" cy="869.3" r="4"/><circle cx="1332.7" cy="843.4" r="4"/><circle cx="1324.9" cy="851.1" r="4"/><circle cx="1345.5" cy="847.8" r="4"/><circle cx="1329.7" cy="844.6" r="4"/><circle cx="1353.0" cy="848.0" r="4"/><circle cx="1351.7" cy="851.1" r="4"/><circle cx="1341.8" cy="847.5" r="4"/><circle cx="1353.6" cy="859.0" r="4"/><circle cx="1324.3" cy="853.9" r="4"/><circle cx="1324.6" cy="866.8" r="4"/><circle cx="1338.5" cy="867.2" r="4"/><circle cx="1331.8" cy="860.1" r="4"/><circle cx="1344.0" cy="866.9" r="4"/><circle cx="1335.8" cy="863.1" r="4"/><circle cx="1350.5" cy="863.6" r="4"/><circle cx="1347.5" cy="870.3" r="4"/><circle cx="1355.9" cy="873.5" r="4"/><circle cx="1346.3" cy="877.3" r="4"/><circle cx="1326.5" cy="868.4" r="4"/><circle cx="1328.1" cy="868.5" r="4"/><circle cx="1349.0" cy="873.5" r="4"/><circle cx="1348.8" cy="869.7" r="4"/><circle cx="1224.3" cy="895.4" r="4"/><circle cx="1244.4" cy="889.3" r="4"/><circle cx="1262.9" cy="886.2" r="4"/><circle cx="1266.0" cy="895.4" r="4"/><circle cx="1249.0" cy="903.1" r="4"/><circle cx="1259.8" cy="901.6" r="4"/><circle cx="1242.8" cy="915.5" r="4"/><circle cx="1255.2" cy="915.5" r="4"/><circle cx="1275.2" cy="884.6" r="4"/><circle cx="1295.3" cy="893.9" r="4"/><circle cx="1304.5" cy="884.6" r="4"/><circle cx="1316.9" cy="886.2" r="4"/><circle cx="1326.1" cy="881.5" r="4"/><circle cx="1315.3" cy="897.0" r="4"/><circle cx="1324.6" cy="903.1" r="4"/><circle cx="1330.8" cy="910.9" r="4"/><circle cx="1343.1" cy="884.6" r="4"/><circle cx="1350.8" cy="892.3" r="4"/><circle cx="1358.5" cy="886.2" r="4"/><circle cx="1357.0" cy="904.7" r="4"/><circle cx="1349.3" cy="900.1" r="4"/><circle cx="1312.2" cy="918.6" r="4"/><circle cx="1326.1" cy="920.1" r="4"/><circle cx="1330.8" cy="926.3" r="4"/><circle cx="1332.3" cy="935.5" r="4"/><circle cx="1343.1" cy="932.5" r="4"/><circle cx="1349.3" cy="927.8" r="4"/><circle cx="1341.6" cy="940.2" r="4"/><circle cx="1343.1" cy="949.4" r="4"/><circle cx="1336.9" cy="961.8" r="4"/><circle cx="1363.2" cy="934.0" r="4"/><circle cx="1363.2" cy="949.4" r="4"/><circle cx="1244.4" cy="930.9" r="4"/><circle cx="1245.9" cy="949.4" r="4"/><circle cx="1218.1" cy="932.5" r="4"/><circle cx="1225.9" cy="938.6" r="4"/><circle cx="1212.0" cy="952.5" r="4"/><circle cx="1219.7" cy="958.7" r="4"/><circle cx="1269.1" cy="944.8" r="4"/><circle cx="1269.1" cy="958.7" r="4"/><circle cx="1272.1" cy="924.7" r="4"/><circle cx="1282.9" cy="924.7" r="4"/><circle cx="1278.3" cy="932.5" r="4"/><circle cx="1290.6" cy="932.5" r="4"/><circle cx="1296.8" cy="929.4" r="4"/><circle cx="1306.1" cy="941.7" r="4"/><circle cx="1315.3" cy="938.6" r="4"/><circle cx="1316.9" cy="954.1" r="4"/><circle cx="1326.1" cy="952.5" r="4"/><circle cx="1330.8" cy="947.9" r="4"/><circle cx="1236.7" cy="963.3" r="4"/><circle cx="1247.5" cy="960.2" r="4"/><circle cx="1242.8" cy="971.0" r="4"/><circle cx="1222.8" cy="974.1" r="4"/><circle cx="1228.9" cy="977.2" r="4"/><circle cx="1253.6" cy="971.0" r="4"/><circle cx="1281.4" cy="967.9" r="4"/><circle cx="1295.3" cy="963.3" r="4"/><circle cx="1306.1" cy="966.4" r="4"/><circle cx="1281.4" cy="978.7" r="4"/><circle cx="1279.9" cy="988.0" r="4"/><circle cx="1272.1" cy="991.1" r="4"/><circle cx="1262.9" cy="997.2" r="4"/><circle cx="1262.9" cy="1006.5" r="4"/><circle cx="1324.6" cy="972.6" r="4"/><circle cx="1304.5" cy="986.4" r="4"/><circle cx="1306.1" cy="994.2" r="4"/><circle cx="1312.2" cy="984.9" r="4"/><circle cx="1326.1" cy="994.2" r="4"/><circle cx="1336.9" cy="995.7" r="4"/><circle cx="1347.7" cy="992.6" r="4"/><circle cx="1350.8" cy="978.7" r="4"/><circle cx="1361.6" cy="978.7" r="4"/><circle cx="1361.6" cy="1006.5" r="4"/><circle cx="1347.7" cy="1012.7" r="4"/><circle cx="1335.4" cy="1009.6" r="4"/><circle cx="1318.4" cy="1008.0" r="4"/><circle cx="1333.8" cy="1001.9" r="4"/><circle cx="1218.1" cy="991.1" r="4"/><circle cx="1227.4" cy="989.5" r="4"/><circle cx="1213.5" cy="997.2" r="4"/><circle cx="1228.9" cy="1005.0" r="4"/><circle cx="1242.8" cy="992.6" r="4"/><circle cx="1239.7" cy="1015.8" r="4"/><circle cx="1242.8" cy="1026.6" r="4"/><circle cx="1238.2" cy="1018.8" r="4"/><circle cx="1256.7" cy="1014.2" r="4"/><circle cx="1258.3" cy="1035.8" r="4"/><circle cx="1269.1" cy="1042.0" r="4"/><circle cx="1250.5" cy="1046.6" r="4"/><circle cx="1253.6" cy="1052.8" r="4"/><circle cx="1272.1" cy="1011.1" r="4"/><circle cx="1281.4" cy="1021.9" r="4"/><circle cx="1293.7" cy="1020.4" r="4"/><circle cx="1309.2" cy="1020.4" r="4"/><circle cx="1316.9" cy="1014.2" r="4"/><circle cx="1350.8" cy="1032.7" r="4"/><circle cx="1310.7" cy="1037.4" r="4"/><circle cx="1323.0" cy="1042.0" r="4"/><circle cx="1332.3" cy="1042.0" r="4"/><circle cx="1349.3" cy="1045.1" r="4"/><circle cx="1357.0" cy="1051.2" r="4"/><circle cx="1303.0" cy="1054.3" r="4"/><circle cx="1312.2" cy="1059.0" r="4"/><circle cx="1330.8" cy="1055.9" r="4"/><circle cx="1340.0" cy="1065.1" r="4"/><circle cx="1278.3" cy="1065.1" r="4"/><circle cx="1256.7" cy="1034.3" r="4"/><circle cx="1248.6" cy="895.8" r="4"/><circle cx="1248.6" cy="897.8" r="4"/><circle cx="1263.5" cy="889.8" r="4"/><circle cx="1263.3" cy="891.9" r="4"/><circle cx="1268.8" cy="888.4" r="4"/><circle cx="1266.2" cy="890.5" r="4"/><circle cx="1247.6" cy="897.4" r="4"/><circle cx="1247.4" cy="909.1" r="4"/><circle cx="1262.3" cy="895.4" r="4"/><circle cx="1262.4" cy="890.8" r="4"/><circle cx="1245.8" cy="910.5" r="4"/><circle cx="1248.2" cy="906.1" r="4"/><circle cx="1257.1" cy="906.6" r="4"/><circle cx="1251.1" cy="910.8" r="4"/><circle cx="1265.7" cy="884.3" r="4"/><circle cx="1273.1" cy="887.5" r="4"/><circle cx="1300.5" cy="887.1" r="4"/><circle cx="1301.3" cy="889.0" r="4"/><circle cx="1299.0" cy="889.3" r="4"/><circle cx="1311.0" cy="885.5" r="4"/><circle cx="1309.4" cy="885.6" r="4"/><circle cx="1310.9" cy="885.8" r="4"/><circle cx="1322.7" cy="882.7" r="4"/><circle cx="1321.5" cy="884.7" r="4"/><circle cx="1320.7" cy="901.2" r="4"/><circle cx="1317.4" cy="897.5" r="4"/><circle cx="1328.2" cy="907.0" r="4"/><circle cx="1326.2" cy="906.9" r="4"/><circle cx="1329.6" cy="912.4" r="4"/><circle cx="1331.2" cy="916.7" r="4"/><circle cx="1351.3" cy="886.1" r="4"/><circle cx="1346.1" cy="889.0" r="4"/><circle cx="1350.1" cy="898.9" r="4"/><circle cx="1349.7" cy="893.2" r="4"/><circle cx="1354.2" cy="890.9" r="4"/><circle cx="1350.3" cy="885.2" r="4"/><circle cx="1352.8" cy="900.8" r="4"/><circle cx="1353.6" cy="896.1" r="4"/><circle cx="1348.3" cy="894.5" r="4"/><circle cx="1348.7" cy="896.9" r="4"/><circle cx="1320.1" cy="918.9" r="4"/><circle cx="1318.2" cy="918.6" r="4"/><circle cx="1330.0" cy="923.6" r="4"/><circle cx="1327.9" cy="916.2" r="4"/><circle cx="1339.3" cy="931.2" r="4"/><circle cx="1329.0" cy="920.7" r="4"/><circle cx="1331.3" cy="941.6" r="4"/><circle cx="1340.0" cy="934.7" r="4"/><circle cx="1344.9" cy="929.4" r="4"/><circle cx="1346.2" cy="929.7" r="4"/><circle cx="1346.1" cy="932.2" r="4"/><circle cx="1343.7" cy="935.4" r="4"/><circle cx="1338.0" cy="939.9" r="4"/><circle cx="1345.2" cy="936.2" r="4"/><circle cx="1338.3" cy="947.1" r="4"/><circle cx="1339.9" cy="955.6" r="4"/><circle cx="1333.1" cy="951.9" r="4"/><circle cx="1334.3" cy="953.7" r="4"/><circle cx="1354.2" cy="932.0" r="4"/><circle cx="1361.6" cy="940.1" r="4"/><circle cx="1364.4" cy="944.0" r="4"/><circle cx="1362.8" cy="942.3" r="4"/><circle cx="1243.8" cy="924.8" r="4"/><circle cx="1242.1" cy="923.9" r="4"/><circle cx="1248.1" cy="954.2" r="4"/><circle cx="1248.5" cy="958.1" r="4"/><circle cx="1220.5" cy="933.1" r="4"/><circle cx="1224.1" cy="935.8" r="4"/><circle cx="1221.9" cy="934.1" r="4"/><circle cx="1222.0" cy="936.2" r="4"/><circle cx="1216.0" cy="954.4" r="4"/><circle cx="1214.6" cy="956.5" r="4"/><circle cx="1217.1" cy="954.4" r="4"/><circle cx="1218.1" cy="955.8" r="4"/><circle cx="1269.9" cy="953.8" r="4"/><circle cx="1267.3" cy="953.2" r="4"/><circle cx="1271.0" cy="950.8" r="4"/><circle cx="1270.0" cy="952.2" r="4"/><circle cx="1273.2" cy="927.1" r="4"/><circle cx="1276.6" cy="928.9" r="4"/><circle cx="1290.8" cy="927.9" r="4"/><circle cx="1276.3" cy="923.0" r="4"/><circle cx="1275.4" cy="929.7" r="4"/><circle cx="1274.6" cy="926.2" r="4"/><circle cx="1293.2" cy="931.1" r="4"/><circle cx="1286.2" cy="933.3" r="4"/><circle cx="1293.7" cy="930.0" r="4"/><circle cx="1296.1" cy="932.3" r="4"/><circle cx="1302.7" cy="936.0" r="4"/><circle cx="1310.0" cy="940.6" r="4"/><circle cx="1315.3" cy="945.9" r="4"/><circle cx="1314.7" cy="945.5" r="4"/><circle cx="1317.3" cy="944.8" r="4"/><circle cx="1324.9" cy="949.6" r="4"/><circle cx="1329.9" cy="951.3" r="4"/><circle cx="1326.7" cy="949.7" r="4"/><circle cx="1333.8" cy="948.1" r="4"/><circle cx="1331.2" cy="939.8" r="4"/><circle cx="1240.3" cy="964.3" r="4"/><circle cx="1232.9" cy="971.0" r="4"/><circle cx="1239.1" cy="960.6" r="4"/><circle cx="1245.1" cy="967.3" r="4"/><circle cx="1249.2" cy="971.0" r="4"/><circle cx="1246.1" cy="967.1" r="4"/><circle cx="1227.1" cy="974.1" r="4"/><circle cx="1222.1" cy="968.0" r="4"/><circle cx="1233.7" cy="972.7" r="4"/><circle cx="1235.4" cy="973.1" r="4"/><circle cx="1248.4" cy="963.5" r="4"/><circle cx="1248.7" cy="970.3" r="4"/><circle cx="1281.1" cy="973.5" r="4"/><circle cx="1276.5" cy="965.1" r="4"/><circle cx="1287.8" cy="967.0" r="4"/><circle cx="1286.9" cy="963.8" r="4"/><circle cx="1299.1" cy="964.0" r="4"/><circle cx="1303.4" cy="963.6" r="4"/><circle cx="1278.7" cy="985.3" r="4"/><circle cx="1282.4" cy="983.2" r="4"/><circle cx="1280.1" cy="982.5" r="4"/><circle cx="1277.5" cy="988.0" r="4"/><circle cx="1268.4" cy="993.7" r="4"/><circle cx="1276.0" cy="990.9" r="4"/><circle cx="1268.5" cy="996.5" r="4"/><circle cx="1268.3" cy="995.2" r="4"/><circle cx="1267.0" cy="1009.9" r="4"/><circle cx="1268.9" cy="1008.2" r="4"/><circle cx="1303.7" cy="991.6" r="4"/><circle cx="1305.5" cy="987.6" r="4"/><circle cx="1307.8" cy="988.2" r="4"/><circle cx="1305.1" cy="989.9" r="4"/><circle cx="1307.5" cy="986.3" r="4"/><circle cx="1307.7" cy="984.1" r="4"/><circle cx="1331.4" cy="999.0" r="4"/><circle cx="1322.9" cy="1002.1" r="4"/><circle cx="1341.8" cy="996.4" r="4"/><circle cx="1341.4" cy="995.7" r="4"/><circle cx="1350.7" cy="985.8" r="4"/><circle cx="1349.8" cy="986.2" r="4"/><circle cx="1355.7" cy="980.6" r="4"/><circle cx="1347.2" cy="986.9" r="4"/><circle cx="1354.3" cy="977.8" r="4"/><circle cx="1356.5" cy="980.4" r="4"/><circle cx="1351.7" cy="1010.9" r="4"/><circle cx="1352.4" cy="1010.1" r="4"/><circle cx="1356.8" cy="1007.6" r="4"/><circle cx="1353.9" cy="1009.0" r="4"/><circle cx="1335.9" cy="1005.0" r="4"/><circle cx="1332.5" cy="1004.9" r="4"/><circle cx="1312.7" cy="1014.2" r="4"/><circle cx="1322.9" cy="1001.1" r="4"/><circle cx="1334.3" cy="1008.7" r="4"/><circle cx="1327.8" cy="995.6" r="4"/><circle cx="1222.8" cy="988.5" r="4"/><circle cx="1221.2" cy="990.5" r="4"/><circle cx="1228.3" cy="1000.2" r="4"/><circle cx="1229.7" cy="986.2" r="4"/><circle cx="1214.7" cy="993.7" r="4"/><circle cx="1213.7" cy="992.7" r="4"/><circle cx="1234.4" cy="1009.1" r="4"/><circle cx="1229.7" cy="995.7" r="4"/><circle cx="1236.0" cy="992.4" r="4"/><circle cx="1238.0" cy="990.5" r="4"/><circle cx="1234.3" cy="1011.4" r="4"/><circle cx="1231.4" cy="1010.4" r="4"/><circle cx="1239.8" cy="1025.0" r="4"/><circle cx="1238.2" cy="1024.0" r="4"/><circle cx="1240.1" cy="1018.2" r="4"/><circle cx="1241.5" cy="1022.7" r="4"/><circle cx="1263.7" cy="1014.6" r="4"/><circle cx="1261.8" cy="1012.5" r="4"/><circle cx="1256.2" cy="1041.1" r="4"/><circle cx="1256.4" cy="1042.5" r="4"/><circle cx="1263.5" cy="1038.6" r="4"/><circle cx="1262.5" cy="1038.0" r="4"/><circle cx="1253.8" cy="1051.1" r="4"/><circle cx="1253.4" cy="1040.7" r="4"/><circle cx="1252.0" cy="1049.5" r="4"/><circle cx="1251.5" cy="1051.8" r="4"/><circle cx="1279.1" cy="1016.5" r="4"/><circle cx="1264.8" cy="1014.4" r="4"/><circle cx="1275.9" cy="1016.9" r="4"/><circle cx="1279.2" cy="1018.1" r="4"/><circle cx="1287.5" cy="1022.6" r="4"/><circle cx="1284.9" cy="1019.6" r="4"/><circle cx="1304.2" cy="1021.6" r="4"/><circle cx="1299.7" cy="1019.4" r="4"/><circle cx="1316.1" cy="1011.7" r="4"/><circle cx="1310.6" cy="1019.0" r="4"/><circle cx="1350.2" cy="1038.0" r="4"/><circle cx="1350.4" cy="1038.1" r="4"/><circle cx="1320.1" cy="1041.7" r="4"/><circle cx="1317.7" cy="1040.1" r="4"/><circle cx="1317.1" cy="1040.9" r="4"/><circle cx="1326.4" cy="1041.9" r="4"/><circle cx="1330.1" cy="1049.5" r="4"/><circle cx="1330.7" cy="1046.8" r="4"/><circle cx="1348.7" cy="1036.8" r="4"/><circle cx="1353.5" cy="1047.3" r="4"/><circle cx="1354.3" cy="1048.2" r="4"/><circle cx="1352.4" cy="1049.3" r="4"/><circle cx="1310.2" cy="1057.5" r="4"/><circle cx="1309.2" cy="1056.3" r="4"/><circle cx="1306.2" cy="1056.1" r="4"/><circle cx="1307.5" cy="1054.3" r="4"/><circle cx="1337.2" cy="1060.5" r="4"/><circle cx="1331.3" cy="1048.9" r="4"/><circle cx="1338.2" cy="1062.8" r="4"/><circle cx="1335.1" cy="1061.3" r="4"/><circle cx="1263.1" cy="1037.3" r="4"/><circle cx="1255.1" cy="1041.4" r="4"/><circle cx="1374.3" cy="883.1" r="4"/><circle cx="1386.6" cy="887.7" r="4"/><circle cx="1400.5" cy="890.8" r="4"/><circle cx="1392.8" cy="897.0" r="4"/><circle cx="1372.7" cy="900.1" r="4"/><circle cx="1366.5" cy="892.3" r="4"/><circle cx="1391.2" cy="910.9" r="4"/><circle cx="1403.6" cy="909.3" r="4"/><circle cx="1377.3" cy="917.0" r="4"/><circle cx="1385.1" cy="923.2" r="4"/><circle cx="1391.2" cy="927.8" r="4"/><circle cx="1405.1" cy="926.3" r="4"/><circle cx="1406.7" cy="934.0" r="4"/><circle cx="1415.9" cy="927.8" r="4"/><circle cx="1423.6" cy="918.6" r="4"/><circle cx="1429.8" cy="929.4" r="4"/><circle cx="1439.1" cy="937.1" r="4"/><circle cx="1422.1" cy="938.6" r="4"/><circle cx="1372.7" cy="935.5" r="4"/><circle cx="1382.0" cy="934.0" r="4"/><circle cx="1389.7" cy="944.8" r="4"/><circle cx="1400.5" cy="941.7" r="4"/><circle cx="1378.9" cy="954.1" r="4"/><circle cx="1411.3" cy="951.0" r="4"/><circle cx="1426.7" cy="951.0" r="4"/><circle cx="1436.0" cy="947.9" r="4"/><circle cx="1426.7" cy="960.2" r="4"/><circle cx="1436.0" cy="966.4" r="4"/><circle cx="1417.5" cy="966.4" r="4"/><circle cx="1402.0" cy="969.5" r="4"/><circle cx="1409.7" cy="977.2" r="4"/><circle cx="1391.2" cy="966.4" r="4"/><circle cx="1368.1" cy="966.4" r="4"/><circle cx="1377.3" cy="972.6" r="4"/><circle cx="1385.1" cy="978.7" r="4"/><circle cx="1374.3" cy="984.9" r="4"/><circle cx="1391.2" cy="983.4" r="4"/><circle cx="1398.9" cy="991.1" r="4"/><circle cx="1388.1" cy="997.2" r="4"/><circle cx="1374.3" cy="998.8" r="4"/><circle cx="1366.5" cy="1006.5" r="4"/><circle cx="1428.3" cy="978.7" r="4"/><circle cx="1436.0" cy="981.8" r="4"/><circle cx="1445.2" cy="984.9" r="4"/><circle cx="1452.9" cy="980.3" r="4"/><circle cx="1420.5" cy="994.2" r="4"/><circle cx="1452.9" cy="995.7" r="4"/><circle cx="1459.1" cy="1000.3" r="4"/><circle cx="1432.9" cy="1009.6" r="4"/><circle cx="1442.1" cy="1006.5" r="4"/><circle cx="1465.3" cy="903.1" r="4"/><circle cx="1473.0" cy="901.6" r="4"/><circle cx="1465.3" cy="920.1" r="4"/><circle cx="1476.1" cy="927.8" r="4"/><circle cx="1493.0" cy="917.0" r="4"/><circle cx="1497.7" cy="929.4" r="4"/><circle cx="1506.9" cy="926.3" r="4"/><circle cx="1488.4" cy="938.6" r="4"/><circle cx="1500.8" cy="940.2" r="4"/><circle cx="1506.9" cy="949.4" r="4"/><circle cx="1514.6" cy="952.5" r="4"/><circle cx="1479.2" cy="947.9" r="4"/><circle cx="1466.8" cy="954.1" r="4"/><circle cx="1460.6" cy="967.9" r="4"/><circle cx="1473.0" cy="971.0" r="4"/><circle cx="1482.2" cy="960.2" r="4"/><circle cx="1486.9" cy="980.3" r="4"/><circle cx="1477.6" cy="975.6" r="4"/><circle cx="1496.1" cy="975.6" r="4"/><circle cx="1503.8" cy="966.4" r="4"/><circle cx="1511.6" cy="978.7" r="4"/><circle cx="1519.3" cy="972.6" r="4"/><circle cx="1500.8" cy="904.7" r="4"/><circle cx="1511.6" cy="906.2" r="4"/><circle cx="1520.8" cy="892.3" r="4"/><circle cx="1530.1" cy="898.5" r="4"/><circle cx="1520.8" cy="917.0" r="4"/><circle cx="1528.5" cy="926.3" r="4"/><circle cx="1528.5" cy="984.9" r="4"/><circle cx="1522.4" cy="994.2" r="4"/><circle cx="1533.2" cy="997.2" r="4"/><circle cx="1493.0" cy="1003.4" r="4"/><circle cx="1496.1" cy="1011.1" r="4"/><circle cx="1514.6" cy="1012.7" r="4"/><circle cx="1500.8" cy="1020.4" r="4"/><circle cx="1491.5" cy="1026.6" r="4"/><circle cx="1483.8" cy="1031.2" r="4"/><circle cx="1471.4" cy="1008.0" r="4"/><circle cx="1463.7" cy="1015.8" r="4"/><circle cx="1476.1" cy="1015.8" r="4"/><circle cx="1460.6" cy="1025.0" r="4"/><circle cx="1473.0" cy="1028.1" r="4"/><circle cx="1466.8" cy="1037.4" r="4"/><circle cx="1451.4" cy="1034.3" r="4"/><circle cx="1436.0" cy="1031.2" r="4"/><circle cx="1428.3" cy="1028.1" r="4"/><circle cx="1437.5" cy="1040.4" r="4"/><circle cx="1446.8" cy="1046.6" r="4"/><circle cx="1434.4" cy="1055.9" r="4"/><circle cx="1451.4" cy="1052.8" r="4"/><circle cx="1463.7" cy="1049.7" r="4"/><circle cx="1474.5" cy="1048.2" r="4"/><circle cx="1482.2" cy="1043.5" r="4"/><circle cx="1493.0" cy="1049.7" r="4"/><circle cx="1476.1" cy="1059.0" r="4"/><circle cx="1463.7" cy="1062.0" r="4"/><circle cx="1468.4" cy="1068.2" r="4"/><circle cx="1454.5" cy="1066.7" r="4"/><circle cx="1520.8" cy="1049.7" r="4"/><circle cx="1527.0" cy="1062.0" r="4"/><circle cx="1389.7" cy="1015.8" r="4"/><circle cx="1409.7" cy="1017.3" r="4"/><circle cx="1405.1" cy="1025.0" r="4"/><circle cx="1414.4" cy="1029.6" r="4"/><circle cx="1392.8" cy="1028.1" r="4"/><circle cx="1372.7" cy="1029.6" r="4"/><circle cx="1382.0" cy="1031.2" r="4"/><circle cx="1395.9" cy="1038.9" r="4"/><circle cx="1394.3" cy="1046.6" r="4"/><circle cx="1385.1" cy="1051.2" r="4"/><circle cx="1374.3" cy="1051.2" r="4"/><circle cx="1368.1" cy="1065.1" r="4"/><circle cx="1382.0" cy="1065.1" r="4"/><circle cx="1408.2" cy="1065.1" r="4"/><circle cx="1419.0" cy="1066.7" r="4"/><circle cx="1380.3" cy="886.1" r="4"/><circle cx="1381.6" cy="886.1" r="4"/><circle cx="1392.3" cy="888.0" r="4"/><circle cx="1392.4" cy="888.5" r="4"/><circle cx="1397.9" cy="895.1" r="4"/><circle cx="1395.0" cy="895.3" r="4"/><circle cx="1397.0" cy="892.7" r="4"/><circle cx="1396.9" cy="893.0" r="4"/><circle cx="1369.7" cy="895.0" r="4"/><circle cx="1371.6" cy="897.3" r="4"/><circle cx="1368.4" cy="893.6" r="4"/><circle cx="1370.1" cy="896.1" r="4"/><circle cx="1381.6" cy="914.3" r="4"/><circle cx="1392.8" cy="902.2" r="4"/><circle cx="1396.6" cy="911.2" r="4"/><circle cx="1395.3" cy="911.4" r="4"/><circle cx="1381.9" cy="912.7" r="4"/><circle cx="1384.5" cy="912.6" r="4"/><circle cx="1389.6" cy="916.5" r="4"/><circle cx="1382.6" cy="920.1" r="4"/><circle cx="1389.3" cy="924.8" r="4"/><circle cx="1389.2" cy="924.7" r="4"/><circle cx="1399.4" cy="928.2" r="4"/><circle cx="1409.8" cy="928.0" r="4"/><circle cx="1410.6" cy="930.6" r="4"/><circle cx="1403.5" cy="936.6" r="4"/><circle cx="1422.2" cy="930.0" r="4"/><circle cx="1419.2" cy="921.8" r="4"/><circle cx="1427.2" cy="923.0" r="4"/><circle cx="1425.9" cy="923.3" r="4"/><circle cx="1434.1" cy="934.6" r="4"/><circle cx="1424.6" cy="922.9" r="4"/><circle cx="1439.2" cy="943.1" r="4"/><circle cx="1436.8" cy="941.4" r="4"/><circle cx="1426.0" cy="931.6" r="4"/><circle cx="1425.5" cy="943.6" r="4"/><circle cx="1374.8" cy="935.7" r="4"/><circle cx="1380.5" cy="933.8" r="4"/><circle cx="1381.5" cy="931.1" r="4"/><circle cx="1375.5" cy="934.5" r="4"/><circle cx="1385.3" cy="939.7" r="4"/><circle cx="1384.8" cy="949.9" r="4"/><circle cx="1404.5" cy="937.2" r="4"/><circle cx="1393.9" cy="945.5" r="4"/><circle cx="1381.2" cy="949.1" r="4"/><circle cx="1382.2" cy="950.6" r="4"/><circle cx="1404.6" cy="945.1" r="4"/><circle cx="1407.1" cy="947.0" r="4"/><circle cx="1422.6" cy="944.8" r="4"/><circle cx="1422.5" cy="943.9" r="4"/><circle cx="1431.2" cy="948.6" r="4"/><circle cx="1432.1" cy="947.5" r="4"/><circle cx="1421.5" cy="963.9" r="4"/><circle cx="1433.2" cy="963.4" r="4"/><circle cx="1431.0" cy="964.1" r="4"/><circle cx="1433.6" cy="962.1" r="4"/><circle cx="1420.4" cy="965.9" r="4"/><circle cx="1423.1" cy="963.9" r="4"/><circle cx="1397.3" cy="966.4" r="4"/><circle cx="1407.1" cy="968.5" r="4"/><circle cx="1403.8" cy="973.5" r="4"/><circle cx="1406.6" cy="972.8" r="4"/><circle cx="1387.2" cy="973.3" r="4"/><circle cx="1384.0" cy="970.4" r="4"/><circle cx="1370.7" cy="971.0" r="4"/><circle cx="1371.8" cy="970.6" r="4"/><circle cx="1374.2" cy="981.1" r="4"/><circle cx="1381.1" cy="974.1" r="4"/><circle cx="1381.8" cy="981.2" r="4"/><circle cx="1389.1" cy="981.4" r="4"/><circle cx="1378.6" cy="983.2" r="4"/><circle cx="1381.8" cy="980.9" r="4"/><circle cx="1393.3" cy="987.1" r="4"/><circle cx="1389.3" cy="979.4" r="4"/><circle cx="1394.5" cy="993.4" r="4"/><circle cx="1396.1" cy="994.4" r="4"/><circle cx="1389.9" cy="989.1" r="4"/><circle cx="1390.9" cy="991.4" r="4"/><circle cx="1371.1" cy="1003.3" r="4"/><circle cx="1380.2" cy="997.6" r="4"/><circle cx="1369.3" cy="1002.3" r="4"/><circle cx="1368.6" cy="1004.6" r="4"/><circle cx="1429.9" cy="979.1" r="4"/><circle cx="1431.9" cy="981.5" r="4"/><circle cx="1435.7" cy="971.6" r="4"/><circle cx="1433.6" cy="980.8" r="4"/><circle cx="1449.1" cy="984.9" r="4"/><circle cx="1446.6" cy="983.0" r="4"/><circle cx="1449.4" cy="984.1" r="4"/><circle cx="1448.3" cy="983.3" r="4"/><circle cx="1446.6" cy="989.5" r="4"/><circle cx="1454.3" cy="989.0" r="4"/><circle cx="1468.2" cy="1004.6" r="4"/><circle cx="1455.8" cy="998.5" r="4"/><circle cx="1439.8" cy="1008.3" r="4"/><circle cx="1436.7" cy="1006.3" r="4"/><circle cx="1435.6" cy="1006.5" r="4"/><circle cx="1439.7" cy="1008.3" r="4"/><circle cx="1469.4" cy="901.4" r="4"/><circle cx="1471.3" cy="901.4" r="4"/><circle cx="1468.5" cy="901.3" r="4"/><circle cx="1471.5" cy="903.2" r="4"/><circle cx="1469.2" cy="925.9" r="4"/><circle cx="1469.8" cy="924.4" r="4"/><circle cx="1472.4" cy="922.3" r="4"/><circle cx="1468.2" cy="922.0" r="4"/><circle cx="1493.9" cy="914.5" r="4"/><circle cx="1495.4" cy="922.2" r="4"/><circle cx="1504.5" cy="926.1" r="4"/><circle cx="1497.3" cy="925.0" r="4"/><circle cx="1503.6" cy="931.9" r="4"/><circle cx="1504.0" cy="934.3" r="4"/><circle cx="1482.5" cy="943.0" r="4"/><circle cx="1482.1" cy="944.5" r="4"/><circle cx="1493.2" cy="939.7" r="4"/><circle cx="1505.1" cy="943.8" r="4"/><circle cx="1510.9" cy="951.9" r="4"/><circle cx="1503.1" cy="946.9" r="4"/><circle cx="1510.7" cy="951.8" r="4"/><circle cx="1510.0" cy="952.9" r="4"/><circle cx="1473.9" cy="951.5" r="4"/><circle cx="1484.4" cy="943.6" r="4"/><circle cx="1465.4" cy="959.3" r="4"/><circle cx="1471.6" cy="951.3" r="4"/><circle cx="1462.9" cy="961.5" r="4"/><circle cx="1462.0" cy="964.6" r="4"/><circle cx="1474.6" cy="967.4" r="4"/><circle cx="1463.5" cy="967.9" r="4"/><circle cx="1477.0" cy="966.8" r="4"/><circle cx="1478.6" cy="953.1" r="4"/><circle cx="1481.9" cy="979.0" r="4"/><circle cx="1483.0" cy="976.6" r="4"/><circle cx="1473.3" cy="971.5" r="4"/><circle cx="1473.2" cy="973.4" r="4"/><circle cx="1504.8" cy="976.3" r="4"/><circle cx="1502.5" cy="970.9" r="4"/><circle cx="1508.3" cy="971.1" r="4"/><circle cx="1501.6" cy="970.6" r="4"/><circle cx="1516.0" cy="975.2" r="4"/><circle cx="1504.0" cy="978.5" r="4"/><circle cx="1525.8" cy="981.2" r="4"/><circle cx="1522.4" cy="976.8" r="4"/><circle cx="1495.0" cy="914.4" r="4"/><circle cx="1497.6" cy="909.7" r="4"/><circle cx="1514.5" cy="912.9" r="4"/><circle cx="1515.5" cy="912.1" r="4"/><circle cx="1527.5" cy="895.7" r="4"/><circle cx="1525.8" cy="894.7" r="4"/><circle cx="1525.2" cy="895.4" r="4"/><circle cx="1523.9" cy="895.0" r="4"/><circle cx="1515.7" cy="910.9" r="4"/><circle cx="1523.0" cy="922.9" r="4"/><circle cx="1524.3" cy="923.3" r="4"/><circle cx="1523.7" cy="920.8" r="4"/><circle cx="1530.1" cy="993.7" r="4"/><circle cx="1526.3" cy="990.5" r="4"/><circle cx="1526.3" cy="989.9" r="4"/><circle cx="1523.1" cy="991.7" r="4"/><circle cx="1531.9" cy="989.4" r="4"/><circle cx="1529.0" cy="997.1" r="4"/><circle cx="1496.1" cy="1005.4" r="4"/><circle cx="1493.2" cy="1010.0" r="4"/><circle cx="1497.6" cy="1018.2" r="4"/><circle cx="1499.9" cy="1015.1" r="4"/><circle cx="1507.4" cy="1019.0" r="4"/><circle cx="1506.0" cy="1015.2" r="4"/><circle cx="1497.8" cy="1022.5" r="4"/><circle cx="1497.6" cy="1021.7" r="4"/><circle cx="1496.6" cy="1024.1" r="4"/><circle cx="1490.7" cy="1028.7" r="4"/><circle cx="1488.9" cy="1026.4" r="4"/><circle cx="1485.2" cy="1037.3" r="4"/><circle cx="1466.0" cy="1011.7" r="4"/><circle cx="1463.4" cy="1002.8" r="4"/><circle cx="1468.0" cy="1014.1" r="4"/><circle cx="1463.0" cy="1018.6" r="4"/><circle cx="1473.0" cy="1023.3" r="4"/><circle cx="1467.5" cy="1017.5" r="4"/><circle cx="1467.3" cy="1028.2" r="4"/><circle cx="1462.6" cy="1034.3" r="4"/><circle cx="1466.6" cy="1027.1" r="4"/><circle cx="1466.7" cy="1027.3" r="4"/><circle cx="1472.9" cy="1042.7" r="4"/><circle cx="1466.5" cy="1043.2" r="4"/><circle cx="1458.7" cy="1034.4" r="4"/><circle cx="1447.2" cy="1041.4" r="4"/><circle cx="1438.2" cy="1036.1" r="4"/><circle cx="1436.0" cy="1036.8" r="4"/><circle cx="1432.4" cy="1032.7" r="4"/><circle cx="1433.2" cy="1035.9" r="4"/><circle cx="1433.1" cy="1032.9" r="4"/><circle cx="1438.0" cy="1047.7" r="4"/><circle cx="1449.1" cy="1047.4" r="4"/><circle cx="1441.6" cy="1041.9" r="4"/><circle cx="1434.0" cy="1050.7" r="4"/><circle cx="1441.3" cy="1052.5" r="4"/><circle cx="1457.9" cy="1054.9" r="4"/><circle cx="1447.6" cy="1049.1" r="4"/><circle cx="1462.7" cy="1055.9" r="4"/><circle cx="1457.6" cy="1051.3" r="4"/><circle cx="1470.4" cy="1047.2" r="4"/><circle cx="1480.1" cy="1044.8" r="4"/><circle cx="1481.5" cy="1038.9" r="4"/><circle cx="1478.8" cy="1047.1" r="4"/><circle cx="1487.2" cy="1046.0" r="4"/><circle cx="1488.2" cy="1047.0" r="4"/><circle cx="1471.1" cy="1062.4" r="4"/><circle cx="1476.3" cy="1053.0" r="4"/><circle cx="1463.9" cy="1054.0" r="4"/><circle cx="1470.9" cy="1060.2" r="4"/><circle cx="1465.1" cy="1065.0" r="4"/><circle cx="1464.6" cy="1066.8" r="4"/><circle cx="1452.5" cy="1057.4" r="4"/><circle cx="1459.5" cy="1063.2" r="4"/><circle cx="1524.6" cy="1055.4" r="4"/><circle cx="1523.2" cy="1057.6" r="4"/><circle cx="1525.6" cy="1057.4" r="4"/><circle cx="1522.3" cy="1055.5" r="4"/><circle cx="1390.2" cy="1021.3" r="4"/><circle cx="1392.4" cy="1020.5" r="4"/><circle cx="1407.7" cy="1022.0" r="4"/><circle cx="1408.5" cy="1022.3" r="4"/><circle cx="1397.7" cy="1027.1" r="4"/><circle cx="1401.3" cy="1027.9" r="4"/><circle cx="1414.4" cy="1025.5" r="4"/><circle cx="1422.0" cy="1027.3" r="4"/><circle cx="1388.0" cy="1029.4" r="4"/><circle cx="1393.0" cy="1023.6" r="4"/><circle cx="1379.4" cy="1030.8" r="4"/><circle cx="1376.6" cy="1030.3" r="4"/><circle cx="1376.3" cy="1030.2" r="4"/><circle cx="1387.2" cy="1032.5" r="4"/><circle cx="1395.2" cy="1044.7" r="4"/><circle cx="1395.9" cy="1040.7" r="4"/><circle cx="1396.6" cy="1045.5" r="4"/><circle cx="1391.1" cy="1050.6" r="4"/><circle cx="1389.3" cy="1047.4" r="4"/><circle cx="1388.6" cy="1048.0" r="4"/><circle cx="1377.3" cy="1051.0" r="4"/><circle cx="1377.7" cy="1057.1" r="4"/><circle cx="1374.3" cy="1065.0" r="4"/><circle cx="1371.3" cy="1058.3" r="4"/><circle cx="1374.7" cy="1063.1" r="4"/><circle cx="1384.7" cy="1058.5" r="4"/><circle cx="1410.5" cy="1067.0" r="4"/><circle cx="1411.9" cy="1064.1" r="4"/><circle cx="1414.5" cy="1066.0" r="4"/><circle cx="1414.1" cy="1065.8" r="4"/><circle cx="1578.2" cy="383.1" r="4"/><circle cx="1572.0" cy="392.3" r="4"/><circle cx="1565.9" cy="400.1" r="4"/><circle cx="1587.5" cy="381.5" r="4"/><circle cx="1596.7" cy="386.2" r="4"/><circle cx="1598.3" cy="393.9" r="4"/><circle cx="1595.2" cy="403.1" r="4"/><circle cx="1615.2" cy="386.2" r="4"/><circle cx="1627.6" cy="393.9" r="4"/><circle cx="1627.6" cy="403.1" r="4"/><circle cx="1607.5" cy="420.1" r="4"/><circle cx="1636.8" cy="420.1" r="4"/><circle cx="1661.5" cy="429.4" r="4"/><circle cx="1678.5" cy="418.6" r="4"/><circle cx="1692.4" cy="434.0" r="4"/><circle cx="1676.9" cy="441.7" r="4"/><circle cx="1701.6" cy="455.6" r="4"/><circle cx="1541.2" cy="437.1" r="4"/><circle cx="1570.5" cy="447.9" r="4"/><circle cx="1536.5" cy="464.9" r="4"/><circle cx="1539.6" cy="478.7" r="4"/><circle cx="1573.6" cy="475.6" r="4"/><circle cx="1598.3" cy="469.5" r="4"/><circle cx="1607.5" cy="472.6" r="4"/><circle cx="1621.4" cy="437.1" r="4"/><circle cx="1626.0" cy="446.3" r="4"/><circle cx="1641.4" cy="441.7" r="4"/><circle cx="1639.9" cy="452.5" r="4"/><circle cx="1622.9" cy="460.2" r="4"/><circle cx="1632.2" cy="461.8" r="4"/><circle cx="1641.4" cy="464.9" r="4"/><circle cx="1627.6" cy="471.0" r="4"/><circle cx="1636.8" cy="471.0" r="4"/><circle cx="1636.8" cy="477.2" r="4"/><circle cx="1635.3" cy="486.4" r="4"/><circle cx="1647.6" cy="484.9" r="4"/><circle cx="1550.4" cy="486.4" r="4"/><circle cx="1556.6" cy="491.1" r="4"/><circle cx="1545.8" cy="491.1" r="4"/><circle cx="1548.9" cy="503.4" r="4"/><circle cx="1536.5" cy="503.4" r="4"/><circle cx="1538.1" cy="515.8" r="4"/><circle cx="1595.2" cy="489.5" r="4"/><circle cx="1604.4" cy="492.6" r="4"/><circle cx="1612.1" cy="497.2" r="4"/><circle cx="1619.9" cy="491.1" r="4"/><circle cx="1630.6" cy="497.2" r="4"/><circle cx="1621.4" cy="506.5" r="4"/><circle cx="1630.6" cy="506.5" r="4"/><circle cx="1641.4" cy="514.2" r="4"/><circle cx="1653.8" cy="498.8" r="4"/><circle cx="1670.8" cy="492.6" r="4"/><circle cx="1656.9" cy="515.8" r="4"/><circle cx="1666.1" cy="512.7" r="4"/><circle cx="1673.8" cy="509.6" r="4"/><circle cx="1686.2" cy="512.7" r="4"/><circle cx="1695.4" cy="512.7" r="4"/><circle cx="1701.6" cy="501.9" r="4"/><circle cx="1615.2" cy="526.6" r="4"/><circle cx="1624.5" cy="523.5" r="4"/><circle cx="1633.7" cy="525.0" r="4"/><circle cx="1643.0" cy="520.4" r="4"/><circle cx="1626.0" cy="532.7" r="4"/><circle cx="1643.0" cy="535.8" r="4"/><circle cx="1632.2" cy="540.4" r="4"/><circle cx="1609.1" cy="542.0" r="4"/><circle cx="1618.3" cy="549.7" r="4"/><circle cx="1584.4" cy="518.8" r="4"/><circle cx="1601.3" cy="517.3" r="4"/><circle cx="1578.2" cy="528.1" r="4"/><circle cx="1576.7" cy="534.3" r="4"/><circle cx="1593.6" cy="529.6" r="4"/><circle cx="1666.1" cy="532.7" r="4"/><circle cx="1670.8" cy="543.5" r="4"/><circle cx="1680.0" cy="546.6" r="4"/><circle cx="1681.6" cy="557.4" r="4"/><circle cx="1701.6" cy="552.8" r="4"/><circle cx="1544.3" cy="543.5" r="4"/><circle cx="1556.6" cy="548.2" r="4"/><circle cx="1542.7" cy="554.3" r="4"/><circle cx="1582.8" cy="548.2" r="4"/><circle cx="1576.7" cy="555.9" r="4"/><circle cx="1639.9" cy="559.0" r="4"/><circle cx="1647.6" cy="559.0" r="4"/><circle cx="1661.5" cy="562.0" r="4"/><circle cx="1547.3" cy="565.1" r="4"/><circle cx="1558.1" cy="566.7" r="4"/><circle cx="1619.9" cy="566.7" r="4"/><circle cx="1693.9" cy="566.7" r="4"/><circle cx="1575.9" cy="387.1" r="4"/><circle cx="1575.4" cy="386.3" r="4"/><circle cx="1568.4" cy="395.3" r="4"/><circle cx="1574.4" cy="390.3" r="4"/><circle cx="1571.5" cy="395.9" r="4"/><circle cx="1569.1" cy="395.9" r="4"/><circle cx="1581.5" cy="382.2" r="4"/><circle cx="1590.5" cy="384.8" r="4"/><circle cx="1593.2" cy="382.5" r="4"/><circle cx="1590.3" cy="385.0" r="4"/><circle cx="1598.8" cy="390.1" r="4"/><circle cx="1596.3" cy="396.9" r="4"/><circle cx="1595.9" cy="397.5" r="4"/><circle cx="1595.9" cy="395.2" r="4"/><circle cx="1622.2" cy="390.0" r="4"/><circle cx="1623.1" cy="391.1" r="4"/><circle cx="1627.9" cy="397.0" r="4"/><circle cx="1628.9" cy="401.4" r="4"/><circle cx="1627.5" cy="398.4" r="4"/><circle cx="1627.7" cy="396.5" r="4"/><circle cx="1537.8" cy="471.7" r="4"/><circle cx="1538.3" cy="472.1" r="4"/><circle cx="1540.0" cy="485.1" r="4"/><circle cx="1536.7" cy="471.6" r="4"/><circle cx="1603.1" cy="469.2" r="4"/><circle cx="1601.9" cy="472.7" r="4"/><circle cx="1602.8" cy="471.9" r="4"/><circle cx="1602.2" cy="471.7" r="4"/><circle cx="1624.1" cy="440.6" r="4"/><circle cx="1622.5" cy="444.3" r="4"/><circle cx="1622.6" cy="443.6" r="4"/><circle cx="1623.0" cy="443.6" r="4"/><circle cx="1641.2" cy="448.3" r="4"/><circle cx="1639.8" cy="446.4" r="4"/><circle cx="1635.6" cy="457.6" r="4"/><circle cx="1639.5" cy="445.1" r="4"/><circle cx="1626.4" cy="464.0" r="4"/><circle cx="1625.5" cy="464.7" r="4"/><circle cx="1631.1" cy="466.6" r="4"/><circle cx="1628.3" cy="467.4" r="4"/><circle cx="1638.9" cy="466.0" r="4"/><circle cx="1637.8" cy="463.0" r="4"/><circle cx="1632.4" cy="473.3" r="4"/><circle cx="1630.5" cy="475.7" r="4"/><circle cx="1635.9" cy="481.5" r="4"/><circle cx="1632.1" cy="472.3" r="4"/><circle cx="1638.2" cy="468.2" r="4"/><circle cx="1637.8" cy="476.6" r="4"/><circle cx="1636.6" cy="477.4" r="4"/><circle cx="1639.3" cy="486.8" r="4"/><circle cx="1642.5" cy="486.7" r="4"/><circle cx="1641.4" cy="484.2" r="4"/><circle cx="1542.9" cy="481.8" r="4"/><circle cx="1553.2" cy="487.8" r="4"/><circle cx="1550.6" cy="491.6" r="4"/><circle cx="1551.6" cy="490.5" r="4"/><circle cx="1552.4" cy="490.8" r="4"/><circle cx="1548.8" cy="495.9" r="4"/><circle cx="1542.0" cy="501.8" r="4"/><circle cx="1542.6" cy="503.0" r="4"/><circle cx="1542.7" cy="496.6" r="4"/><circle cx="1541.4" cy="504.3" r="4"/><circle cx="1537.9" cy="507.9" r="4"/><circle cx="1537.8" cy="507.8" r="4"/><circle cx="1598.3" cy="490.3" r="4"/><circle cx="1598.1" cy="490.9" r="4"/><circle cx="1607.9" cy="495.5" r="4"/><circle cx="1606.5" cy="492.9" r="4"/><circle cx="1615.5" cy="495.6" r="4"/><circle cx="1617.0" cy="498.7" r="4"/><circle cx="1620.5" cy="497.7" r="4"/><circle cx="1627.6" cy="492.8" r="4"/><circle cx="1631.8" cy="493.4" r="4"/><circle cx="1627.6" cy="502.5" r="4"/><circle cx="1614.5" cy="501.3" r="4"/><circle cx="1623.3" cy="504.8" r="4"/><circle cx="1627.4" cy="504.8" r="4"/><circle cx="1623.6" cy="506.1" r="4"/><circle cx="1650.6" cy="516.4" r="4"/><circle cx="1640.2" cy="517.8" r="4"/><circle cx="1651.6" cy="490.2" r="4"/><circle cx="1651.7" cy="489.6" r="4"/><circle cx="1659.0" cy="513.4" r="4"/><circle cx="1658.9" cy="515.9" r="4"/><circle cx="1671.2" cy="509.9" r="4"/><circle cx="1660.5" cy="513.2" r="4"/><circle cx="1669.0" cy="511.1" r="4"/><circle cx="1669.9" cy="510.5" r="4"/><circle cx="1692.6" cy="512.7" r="4"/><circle cx="1690.8" cy="513.7" r="4"/><circle cx="1692.6" cy="512.2" r="4"/><circle cx="1691.9" cy="513.5" r="4"/><circle cx="1699.1" cy="506.0" r="4"/><circle cx="1696.9" cy="508.4" r="4"/><circle cx="1620.6" cy="524.2" r="4"/><circle cx="1620.1" cy="531.5" r="4"/><circle cx="1627.2" cy="528.0" r="4"/><circle cx="1619.5" cy="526.9" r="4"/><circle cx="1640.4" cy="531.0" r="4"/><circle cx="1632.2" cy="527.9" r="4"/><circle cx="1651.9" cy="519.2" r="4"/><circle cx="1641.2" cy="515.7" r="4"/><circle cx="1628.1" cy="539.0" r="4"/><circle cx="1621.4" cy="530.6" r="4"/><circle cx="1637.4" cy="538.8" r="4"/><circle cx="1643.3" cy="527.8" r="4"/><circle cx="1632.7" cy="534.4" r="4"/><circle cx="1628.7" cy="535.9" r="4"/><circle cx="1614.1" cy="546.1" r="4"/><circle cx="1615.6" cy="547.3" r="4"/><circle cx="1613.1" cy="544.6" r="4"/><circle cx="1613.0" cy="546.2" r="4"/><circle cx="1583.2" cy="525.2" r="4"/><circle cx="1581.6" cy="525.6" r="4"/><circle cx="1598.9" cy="521.7" r="4"/><circle cx="1597.6" cy="522.1" r="4"/><circle cx="1584.5" cy="528.4" r="4"/><circle cx="1581.3" cy="523.8" r="4"/><circle cx="1578.8" cy="541.7" r="4"/><circle cx="1576.4" cy="531.6" r="4"/><circle cx="1587.4" cy="529.5" r="4"/><circle cx="1588.6" cy="526.6" r="4"/><circle cx="1669.9" cy="538.1" r="4"/><circle cx="1671.0" cy="538.9" r="4"/><circle cx="1668.7" cy="538.3" r="4"/><circle cx="1666.2" cy="537.8" r="4"/><circle cx="1680.6" cy="550.1" r="4"/><circle cx="1675.8" cy="546.5" r="4"/><circle cx="1687.4" cy="560.2" r="4"/><circle cx="1689.6" cy="562.0" r="4"/><circle cx="1697.4" cy="558.0" r="4"/><circle cx="1696.5" cy="558.7" r="4"/><circle cx="1550.2" cy="544.1" r="4"/><circle cx="1551.1" cy="546.0" r="4"/><circle cx="1550.9" cy="544.2" r="4"/><circle cx="1550.0" cy="544.7" r="4"/><circle cx="1548.4" cy="552.3" r="4"/><circle cx="1547.2" cy="552.0" r="4"/><circle cx="1581.2" cy="542.7" r="4"/><circle cx="1579.6" cy="550.2" r="4"/><circle cx="1580.9" cy="553.8" r="4"/><circle cx="1579.1" cy="552.2" r="4"/><circle cx="1644.7" cy="557.4" r="4"/><circle cx="1643.7" cy="557.6" r="4"/><circle cx="1652.8" cy="560.7" r="4"/><circle cx="1653.7" cy="561.3" r="4"/><circle cx="1656.5" cy="562.4" r="4"/><circle cx="1654.7" cy="562.2" r="4"/><circle cx="1545.7" cy="560.5" r="4"/><circle cx="1543.9" cy="559.6" r="4"/><circle cx="1552.9" cy="567.4" r="4"/><circle cx="1555.5" cy="567.8" r="4"/><circle cx="1697.6" cy="558.2" r="4"/><circle cx="1698.6" cy="561.0" r="4"/><circle cx="1563.1" cy="603.9" r="4"/><circle cx="1578.6" cy="605.4" r="4"/><circle cx="1573.9" cy="614.7" r="4"/><circle cx="1552.3" cy="619.3" r="4"/><circle cx="1561.6" cy="625.5" r="4"/><circle cx="1572.4" cy="625.5" r="4"/><circle cx="1549.3" cy="628.6" r="4"/><circle cx="1544.6" cy="634.7" r="4"/><circle cx="1584.7" cy="631.7" r="4"/><circle cx="1578.6" cy="644.0" r="4"/><circle cx="1612.5" cy="619.3" r="4"/><circle cx="1620.2" cy="623.9" r="4"/><circle cx="1646.4" cy="605.4" r="4"/><circle cx="1651.1" cy="613.1" r="4"/><circle cx="1646.4" cy="627.0" r="4"/><circle cx="1657.2" cy="625.5" r="4"/><circle cx="1640.3" cy="636.3" r="4"/><circle cx="1651.1" cy="637.8" r="4"/><circle cx="1646.4" cy="648.6" r="4"/><circle cx="1671.1" cy="631.7" r="4"/><circle cx="1680.4" cy="636.3" r="4"/><circle cx="1689.6" cy="637.8" r="4"/><circle cx="1698.9" cy="645.5" r="4"/><circle cx="1685.0" cy="602.3" r="4"/><circle cx="1691.2" cy="661.0" r="4"/><circle cx="1598.6" cy="654.8" r="4"/><circle cx="1611.0" cy="651.7" r="4"/><circle cx="1618.7" cy="654.8" r="4"/><circle cx="1627.9" cy="656.3" r="4"/><circle cx="1651.1" cy="661.0" r="4"/><circle cx="1660.3" cy="659.4" r="4"/><circle cx="1646.4" cy="668.7" r="4"/><circle cx="1658.8" cy="667.1" r="4"/><circle cx="1666.5" cy="665.6" r="4"/><circle cx="1655.7" cy="676.4" r="4"/><circle cx="1663.4" cy="677.9" r="4"/><circle cx="1651.1" cy="682.6" r="4"/><circle cx="1646.4" cy="691.8" r="4"/><circle cx="1671.1" cy="684.1" r="4"/><circle cx="1685.0" cy="682.6" r="4"/><circle cx="1695.8" cy="677.9" r="4"/><circle cx="1703.5" cy="676.4" r="4"/><circle cx="1675.8" cy="693.4" r="4"/><circle cx="1685.0" cy="698.0" r="4"/><circle cx="1666.5" cy="704.2" r="4"/><circle cx="1651.1" cy="705.7" r="4"/><circle cx="1660.3" cy="701.1" r="4"/><circle cx="1685.0" cy="713.4" r="4"/><circle cx="1678.8" cy="727.3" r="4"/><circle cx="1680.4" cy="739.6" r="4"/><circle cx="1658.8" cy="739.6" r="4"/><circle cx="1666.5" cy="744.3" r="4"/><circle cx="1674.2" cy="750.4" r="4"/><circle cx="1632.6" cy="674.9" r="4"/><circle cx="1631.0" cy="685.6" r="4"/><circle cx="1632.6" cy="694.9" r="4"/><circle cx="1640.3" cy="702.6" r="4"/><circle cx="1626.4" cy="702.6" r="4"/><circle cx="1618.7" cy="707.2" r="4"/><circle cx="1618.7" cy="716.5" r="4"/><circle cx="1600.2" cy="670.2" r="4"/><circle cx="1611.0" cy="670.2" r="4"/><circle cx="1595.5" cy="679.5" r="4"/><circle cx="1601.7" cy="688.7" r="4"/><circle cx="1611.0" cy="684.1" r="4"/><circle cx="1615.6" cy="693.4" r="4"/><circle cx="1594.0" cy="701.1" r="4"/><circle cx="1603.3" cy="701.1" r="4"/><circle cx="1590.9" cy="711.9" r="4"/><circle cx="1598.6" cy="711.9" r="4"/><circle cx="1573.9" cy="676.4" r="4"/><circle cx="1580.1" cy="671.8" r="4"/><circle cx="1580.1" cy="679.5" r="4"/><circle cx="1550.8" cy="681.0" r="4"/><circle cx="1541.5" cy="668.7" r="4"/><circle cx="1547.7" cy="694.9" r="4"/><circle cx="1561.6" cy="701.1" r="4"/><circle cx="1541.5" cy="698.0" r="4"/><circle cx="1550.8" cy="721.1" r="4"/><circle cx="1560.1" cy="719.6" r="4"/><circle cx="1567.8" cy="718.0" r="4"/><circle cx="1577.0" cy="722.7" r="4"/><circle cx="1558.5" cy="733.5" r="4"/><circle cx="1572.4" cy="736.6" r="4"/><circle cx="1634.1" cy="730.4" r="4"/><circle cx="1631.0" cy="744.3" r="4"/><circle cx="1577.0" cy="755.1" r="4"/><circle cx="1592.5" cy="758.2" r="4"/><circle cx="1607.9" cy="752.0" r="4"/><circle cx="1607.9" cy="748.9" r="4"/><circle cx="1550.8" cy="762.8" r="4"/><circle cx="1543.1" cy="769.0" r="4"/><circle cx="1626.4" cy="767.4" r="4"/><circle cx="1629.5" cy="775.1" r="4"/><circle cx="1643.4" cy="772.0" r="4"/><circle cx="1566.2" cy="608.6" r="4"/><circle cx="1568.4" cy="608.3" r="4"/><circle cx="1568.7" cy="603.9" r="4"/><circle cx="1577.3" cy="609.0" r="4"/><circle cx="1567.8" cy="610.6" r="4"/><circle cx="1578.1" cy="608.6" r="4"/><circle cx="1551.0" cy="626.1" r="4"/><circle cx="1551.8" cy="623.6" r="4"/><circle cx="1565.4" cy="624.3" r="4"/><circle cx="1552.0" cy="628.0" r="4"/><circle cx="1578.2" cy="628.9" r="4"/><circle cx="1572.3" cy="620.4" r="4"/><circle cx="1547.0" cy="632.5" r="4"/><circle cx="1556.6" cy="628.3" r="4"/><circle cx="1548.9" cy="630.6" r="4"/><circle cx="1547.7" cy="633.7" r="4"/><circle cx="1582.9" cy="637.0" r="4"/><circle cx="1581.0" cy="636.7" r="4"/><circle cx="1582.8" cy="639.9" r="4"/><circle cx="1579.3" cy="637.0" r="4"/><circle cx="1616.6" cy="624.0" r="4"/><circle cx="1617.1" cy="620.8" r="4"/><circle cx="1615.3" cy="620.7" r="4"/><circle cx="1617.7" cy="620.9" r="4"/><circle cx="1650.0" cy="609.8" r="4"/><circle cx="1648.0" cy="607.3" r="4"/><circle cx="1647.6" cy="610.5" r="4"/><circle cx="1650.1" cy="610.4" r="4"/><circle cx="1652.7" cy="625.0" r="4"/><circle cx="1653.0" cy="625.1" r="4"/><circle cx="1654.6" cy="631.3" r="4"/><circle cx="1652.5" cy="620.0" r="4"/><circle cx="1645.4" cy="644.7" r="4"/><circle cx="1644.4" cy="641.4" r="4"/><circle cx="1648.1" cy="644.7" r="4"/><circle cx="1646.2" cy="635.4" r="4"/><circle cx="1647.7" cy="643.4" r="4"/><circle cx="1649.1" cy="644.3" r="4"/><circle cx="1665.2" cy="628.6" r="4"/><circle cx="1675.4" cy="631.9" r="4"/><circle cx="1676.7" cy="634.9" r="4"/><circle cx="1676.5" cy="633.5" r="4"/><circle cx="1693.3" cy="642.3" r="4"/><circle cx="1692.8" cy="642.5" r="4"/><circle cx="1694.3" cy="644.3" r="4"/><circle cx="1692.5" cy="640.1" r="4"/><circle cx="1605.8" cy="651.2" r="4"/><circle cx="1604.3" cy="653.9" r="4"/><circle cx="1605.4" cy="654.4" r="4"/><circle cx="1612.9" cy="651.4" r="4"/><circle cx="1614.5" cy="653.4" r="4"/><circle cx="1622.4" cy="655.9" r="4"/><circle cx="1622.8" cy="656.1" r="4"/><circle cx="1623.1" cy="653.8" r="4"/><circle cx="1648.8" cy="665.4" r="4"/><circle cx="1656.3" cy="659.9" r="4"/><circle cx="1654.8" cy="658.9" r="4"/><circle cx="1658.1" cy="662.8" r="4"/><circle cx="1637.6" cy="672.5" r="4"/><circle cx="1651.8" cy="666.5" r="4"/><circle cx="1657.7" cy="671.9" r="4"/><circle cx="1657.0" cy="665.0" r="4"/><circle cx="1664.1" cy="672.6" r="4"/><circle cx="1664.4" cy="670.0" r="4"/><circle cx="1652.9" cy="672.3" r="4"/><circle cx="1651.8" cy="673.6" r="4"/><circle cx="1657.6" cy="679.9" r="4"/><circle cx="1660.4" cy="673.5" r="4"/><circle cx="1655.2" cy="680.2" r="4"/><circle cx="1648.1" cy="677.8" r="4"/><circle cx="1642.8" cy="693.6" r="4"/><circle cx="1641.3" cy="695.0" r="4"/><circle cx="1669.5" cy="682.7" r="4"/><circle cx="1677.6" cy="682.7" r="4"/><circle cx="1687.0" cy="694.1" r="4"/><circle cx="1685.0" cy="691.5" r="4"/><circle cx="1699.5" cy="676.5" r="4"/><circle cx="1692.4" cy="678.1" r="4"/><circle cx="1699.8" cy="677.4" r="4"/><circle cx="1699.7" cy="676.6" r="4"/><circle cx="1680.6" cy="687.4" r="4"/><circle cx="1680.5" cy="686.5" r="4"/><circle cx="1685.0" cy="705.6" r="4"/><circle cx="1684.9" cy="691.9" r="4"/><circle cx="1671.4" cy="699.3" r="4"/><circle cx="1658.6" cy="704.3" r="4"/><circle cx="1644.5" cy="705.0" r="4"/><circle cx="1646.3" cy="705.9" r="4"/><circle cx="1654.8" cy="704.8" r="4"/><circle cx="1663.2" cy="701.8" r="4"/><circle cx="1683.3" cy="718.3" r="4"/><circle cx="1685.5" cy="706.4" r="4"/><circle cx="1681.5" cy="734.7" r="4"/><circle cx="1682.8" cy="722.4" r="4"/><circle cx="1676.8" cy="746.3" r="4"/><circle cx="1675.8" cy="743.3" r="4"/><circle cx="1662.9" cy="740.6" r="4"/><circle cx="1661.6" cy="742.9" r="4"/><circle cx="1671.4" cy="746.5" r="4"/><circle cx="1673.1" cy="742.6" r="4"/><circle cx="1672.3" cy="748.1" r="4"/><circle cx="1670.9" cy="746.5" r="4"/><circle cx="1633.7" cy="681.3" r="4"/><circle cx="1640.3" cy="672.7" r="4"/><circle cx="1630.9" cy="679.1" r="4"/><circle cx="1631.2" cy="681.3" r="4"/><circle cx="1629.9" cy="698.7" r="4"/><circle cx="1635.9" cy="697.6" r="4"/><circle cx="1634.5" cy="704.6" r="4"/><circle cx="1643.2" cy="697.7" r="4"/><circle cx="1620.8" cy="696.6" r="4"/><circle cx="1634.5" cy="703.1" r="4"/><circle cx="1618.1" cy="713.2" r="4"/><circle cx="1617.8" cy="701.9" r="4"/><circle cx="1618.5" cy="710.2" r="4"/><circle cx="1617.3" cy="712.5" r="4"/><circle cx="1597.1" cy="676.7" r="4"/><circle cx="1600.4" cy="665.6" r="4"/><circle cx="1610.3" cy="675.7" r="4"/><circle cx="1610.1" cy="678.9" r="4"/><circle cx="1598.4" cy="673.9" r="4"/><circle cx="1601.0" cy="684.3" r="4"/><circle cx="1600.1" cy="683.9" r="4"/><circle cx="1605.1" cy="691.9" r="4"/><circle cx="1606.8" cy="687.2" r="4"/><circle cx="1610.5" cy="676.2" r="4"/><circle cx="1616.4" cy="701.5" r="4"/><circle cx="1606.6" cy="690.8" r="4"/><circle cx="1600.0" cy="701.6" r="4"/><circle cx="1597.4" cy="706.5" r="4"/><circle cx="1599.3" cy="707.6" r="4"/><circle cx="1604.2" cy="693.0" r="4"/><circle cx="1591.4" cy="703.8" r="4"/><circle cx="1597.1" cy="711.6" r="4"/><circle cx="1597.7" cy="707.4" r="4"/><circle cx="1594.9" cy="707.6" r="4"/><circle cx="1578.5" cy="679.1" r="4"/><circle cx="1576.8" cy="678.4" r="4"/><circle cx="1578.3" cy="676.2" r="4"/><circle cx="1576.1" cy="672.8" r="4"/><circle cx="1580.7" cy="674.6" r="4"/><circle cx="1578.9" cy="675.7" r="4"/><circle cx="1546.8" cy="673.3" r="4"/><circle cx="1549.3" cy="685.7" r="4"/><circle cx="1549.0" cy="675.9" r="4"/><circle cx="1544.9" cy="674.3" r="4"/><circle cx="1548.8" cy="686.4" r="4"/><circle cx="1554.6" cy="697.5" r="4"/><circle cx="1555.4" cy="696.1" r="4"/><circle cx="1556.0" cy="699.4" r="4"/><circle cx="1545.6" cy="697.0" r="4"/><circle cx="1543.2" cy="696.4" r="4"/><circle cx="1553.5" cy="721.6" r="4"/><circle cx="1554.6" cy="720.5" r="4"/><circle cx="1553.4" cy="722.0" r="4"/><circle cx="1559.5" cy="728.5" r="4"/><circle cx="1570.9" cy="720.0" r="4"/><circle cx="1562.2" cy="719.2" r="4"/><circle cx="1576.2" cy="727.6" r="4"/><circle cx="1574.4" cy="719.0" r="4"/><circle cx="1557.7" cy="730.2" r="4"/><circle cx="1560.4" cy="727.7" r="4"/><circle cx="1566.3" cy="735.7" r="4"/><circle cx="1573.0" cy="730.3" r="4"/><circle cx="1631.9" cy="735.6" r="4"/><circle cx="1631.1" cy="737.2" r="4"/><circle cx="1631.4" cy="735.1" r="4"/><circle cx="1633.7" cy="734.0" r="4"/><circle cx="1587.6" cy="758.8" r="4"/><circle cx="1583.9" cy="758.3" r="4"/><circle cx="1586.2" cy="755.1" r="4"/><circle cx="1585.8" cy="755.9" r="4"/><circle cx="1608.0" cy="751.3" r="4"/><circle cx="1605.9" cy="751.5" r="4"/><circle cx="1606.8" cy="748.4" r="4"/><circle cx="1609.7" cy="751.4" r="4"/><circle cx="1548.5" cy="767.4" r="4"/><circle cx="1547.0" cy="766.4" r="4"/><circle cx="1547.5" cy="763.9" r="4"/><circle cx="1545.9" cy="765.5" r="4"/><circle cx="1627.8" cy="769.3" r="4"/><circle cx="1628.6" cy="770.6" r="4"/><circle cx="1630.0" cy="771.5" r="4"/><circle cx="1634.2" cy="772.4" r="4"/><circle cx="1636.3" cy="775.0" r="4"/><circle cx="1635.4" cy="774.9" r="4"/><circle cx="1540.9" cy="186.2" r="4"/><circle cx="1553.3" cy="184.6" r="4"/><circle cx="1520.9" cy="198.5" r="4"/><circle cx="1540.9" cy="200.1" r="4"/><circle cx="1528.6" cy="207.8" r="4"/><circle cx="1551.7" cy="215.5" r="4"/><circle cx="1568.7" cy="218.6" r="4"/><circle cx="1577.9" cy="217.0" r="4"/><circle cx="1574.9" cy="209.3" r="4"/><circle cx="1522.4" cy="230.9" r="4"/><circle cx="1527.0" cy="224.7" r="4"/><circle cx="1539.4" cy="227.8" r="4"/><circle cx="1547.1" cy="234.0" r="4"/><circle cx="1548.6" cy="241.7" r="4"/><circle cx="1540.9" cy="247.9" r="4"/><circle cx="1573.3" cy="234.0" r="4"/><circle cx="1510.1" cy="243.3" r="4"/><circle cx="1525.5" cy="254.1" r="4"/><circle cx="1581.0" cy="189.3" r="4"/><circle cx="1582.6" cy="183.1" r="4"/><circle cx="1596.4" cy="186.2" r="4"/><circle cx="1598.0" cy="198.5" r="4"/><circle cx="1598.0" cy="206.2" r="4"/><circle cx="1610.3" cy="197.0" r="4"/><circle cx="1619.6" cy="192.3" r="4"/><circle cx="1627.3" cy="195.4" r="4"/><circle cx="1628.8" cy="204.7" r="4"/><circle cx="1621.1" cy="212.4" r="4"/><circle cx="1638.1" cy="217.0" r="4"/><circle cx="1610.3" cy="217.0" r="4"/><circle cx="1611.9" cy="226.3" r="4"/><circle cx="1625.8" cy="220.1" r="4"/><circle cx="1635.0" cy="229.4" r="4"/><circle cx="1647.4" cy="226.3" r="4"/><circle cx="1652.0" cy="192.3" r="4"/><circle cx="1656.6" cy="204.7" r="4"/><circle cx="1650.4" cy="234.0" r="4"/><circle cx="1625.8" cy="230.9" r="4"/><circle cx="1590.3" cy="232.5" r="4"/><circle cx="1598.0" cy="241.7" r="4"/><circle cx="1633.5" cy="241.7" r="4"/><circle cx="1650.4" cy="241.7" r="4"/><circle cx="1585.6" cy="252.5" r="4"/><circle cx="1598.0" cy="251.0" r="4"/><circle cx="1610.3" cy="249.4" r="4"/><circle cx="1621.1" cy="254.1" r="4"/><circle cx="1631.9" cy="252.5" r="4"/><circle cx="1642.7" cy="257.1" r="4"/><circle cx="1656.6" cy="251.0" r="4"/><circle cx="1540.9" cy="263.3" r="4"/><circle cx="1551.7" cy="261.8" r="4"/><circle cx="1562.5" cy="260.2" r="4"/><circle cx="1545.5" cy="272.6" r="4"/><circle cx="1561.0" cy="274.1" r="4"/><circle cx="1523.9" cy="277.2" r="4"/><circle cx="1531.7" cy="275.6" r="4"/><circle cx="1520.9" cy="284.9" r="4"/><circle cx="1547.1" cy="280.3" r="4"/><circle cx="1567.1" cy="281.8" r="4"/><circle cx="1576.4" cy="263.3" r="4"/><circle cx="1582.6" cy="272.6" r="4"/><circle cx="1591.8" cy="266.4" r="4"/><circle cx="1576.4" cy="277.2" r="4"/><circle cx="1585.6" cy="278.7" r="4"/><circle cx="1581.0" cy="284.9" r="4"/><circle cx="1598.0" cy="280.3" r="4"/><circle cx="1598.0" cy="286.4" r="4"/><circle cx="1607.2" cy="275.6" r="4"/><circle cx="1613.4" cy="269.5" r="4"/><circle cx="1622.7" cy="266.4" r="4"/><circle cx="1631.9" cy="269.5" r="4"/><circle cx="1641.2" cy="272.6" r="4"/><circle cx="1655.1" cy="269.5" r="4"/><circle cx="1656.6" cy="277.2" r="4"/><circle cx="1618.0" cy="280.3" r="4"/><circle cx="1628.8" cy="288.0" r="4"/><circle cx="1638.1" cy="291.1" r="4"/><circle cx="1647.4" cy="294.2" r="4"/><circle cx="1611.9" cy="292.6" r="4"/><circle cx="1618.0" cy="298.8" r="4"/><circle cx="1587.2" cy="292.6" r="4"/><circle cx="1576.4" cy="301.9" r="4"/><circle cx="1584.1" cy="301.9" r="4"/><circle cx="1616.5" cy="309.6" r="4"/><circle cx="1658.2" cy="303.4" r="4"/><circle cx="1520.9" cy="294.2" r="4"/><circle cx="1531.7" cy="300.3" r="4"/><circle cx="1508.5" cy="298.8" r="4"/><circle cx="1508.5" cy="311.1" r="4"/><circle cx="1499.3" cy="315.8" r="4"/><circle cx="1527.0" cy="311.1" r="4"/><circle cx="1534.7" cy="317.3" r="4"/><circle cx="1544.0" cy="315.8" r="4"/><circle cx="1556.3" cy="315.8" r="4"/><circle cx="1561.0" cy="328.1" r="4"/><circle cx="1571.8" cy="329.6" r="4"/><circle cx="1573.3" cy="321.9" r="4"/><circle cx="1582.6" cy="320.4" r="4"/><circle cx="1594.9" cy="326.6" r="4"/><circle cx="1596.4" cy="334.3" r="4"/><circle cx="1491.5" cy="328.1" r="4"/><circle cx="1615.0" cy="338.9" r="4"/><circle cx="1619.6" cy="343.5" r="4"/><circle cx="1607.2" cy="352.8" r="4"/><circle cx="1622.7" cy="359.0" r="4"/><circle cx="1581.0" cy="343.5" r="4"/><circle cx="1576.4" cy="348.2" r="4"/><circle cx="1557.9" cy="340.4" r="4"/><circle cx="1540.9" cy="342.0" r="4"/><circle cx="1527.0" cy="346.6" r="4"/><circle cx="1530.1" cy="351.2" r="4"/><circle cx="1513.1" cy="346.6" r="4"/><circle cx="1513.1" cy="355.9" r="4"/><circle cx="1533.2" cy="362.0" r="4"/><circle cx="1567.1" cy="363.6" r="4"/><circle cx="1582.6" cy="360.5" r="4"/><circle cx="1493.1" cy="354.3" r="4"/><circle cx="1658.2" cy="321.9" r="4"/><circle cx="1624.9" cy="246.1" r="4"/><circle cx="1577.9" cy="249.9" r="4"/><circle cx="1582.1" cy="252.7" r="4"/><circle cx="1590.5" cy="253.5" r="4"/><circle cx="1598.3" cy="250.8" r="4"/><circle cx="1602.1" cy="252.4" r="4"/><circle cx="1608.7" cy="251.6" r="4"/><circle cx="1616.4" cy="251.1" r="4"/><circle cx="1625.1" cy="252.3" r="4"/><circle cx="1631.8" cy="249.4" r="4"/><circle cx="1584.0" cy="260.4" r="4"/><circle cx="1591.3" cy="259.2" r="4"/><circle cx="1594.6" cy="256.1" r="4"/><circle cx="1604.9" cy="260.2" r="4"/><circle cx="1610.1" cy="257.0" r="4"/><circle cx="1617.2" cy="260.2" r="4"/><circle cx="1625.6" cy="256.6" r="4"/><circle cx="1629.7" cy="257.0" r="4"/><circle cx="1639.2" cy="257.2" r="4"/><circle cx="1588.3" cy="267.2" r="4"/><circle cx="1594.5" cy="264.9" r="4"/><circle cx="1603.2" cy="263.0" r="4"/><circle cx="1609.2" cy="267.8" r="4"/><circle cx="1619.3" cy="264.9" r="4"/><circle cx="1626.2" cy="267.4" r="4"/><circle cx="1633.0" cy="266.5" r="4"/><circle cx="1638.3" cy="265.4" r="4"/><circle cx="1585.6" cy="270.6" r="4"/><circle cx="1592.1" cy="273.5" r="4"/><circle cx="1596.6" cy="273.9" r="4"/><circle cx="1602.7" cy="271.6" r="4"/><circle cx="1611.0" cy="274.5" r="4"/><circle cx="1616.2" cy="273.9" r="4"/><circle cx="1625.1" cy="274.3" r="4"/><circle cx="1630.2" cy="273.0" r="4"/><circle cx="1547.4" cy="184.3" r="4"/><circle cx="1540.1" cy="190.2" r="4"/><circle cx="1546.8" cy="186.2" r="4"/><circle cx="1548.8" cy="184.3" r="4"/><circle cx="1525.7" cy="204.1" r="4"/><circle cx="1525.9" cy="202.2" r="4"/><circle cx="1534.2" cy="203.1" r="4"/><circle cx="1534.0" cy="205.2" r="4"/><circle cx="1535.1" cy="204.3" r="4"/><circle cx="1527.1" cy="202.3" r="4"/><circle cx="1573.8" cy="218.8" r="4"/><circle cx="1574.1" cy="216.3" r="4"/><circle cx="1572.9" cy="218.6" r="4"/><circle cx="1572.9" cy="217.8" r="4"/><circle cx="1574.3" cy="214.3" r="4"/><circle cx="1577.9" cy="213.1" r="4"/><circle cx="1526.4" cy="229.8" r="4"/><circle cx="1522.9" cy="229.9" r="4"/><circle cx="1523.0" cy="229.5" r="4"/><circle cx="1533.5" cy="226.1" r="4"/><circle cx="1541.8" cy="232.4" r="4"/><circle cx="1534.3" cy="225.5" r="4"/><circle cx="1548.4" cy="236.9" r="4"/><circle cx="1544.4" cy="230.8" r="4"/><circle cx="1548.0" cy="236.5" r="4"/><circle cx="1546.3" cy="245.6" r="4"/><circle cx="1545.4" cy="243.8" r="4"/><circle cx="1542.1" cy="257.1" r="4"/><circle cx="1582.7" cy="187.0" r="4"/><circle cx="1590.7" cy="187.5" r="4"/><circle cx="1582.0" cy="186.6" r="4"/><circle cx="1591.3" cy="184.3" r="4"/><circle cx="1596.1" cy="193.9" r="4"/><circle cx="1588.0" cy="188.9" r="4"/><circle cx="1599.2" cy="202.7" r="4"/><circle cx="1600.7" cy="199.4" r="4"/><circle cx="1601.5" cy="201.1" r="4"/><circle cx="1596.5" cy="204.0" r="4"/><circle cx="1605.8" cy="196.9" r="4"/><circle cx="1604.2" cy="196.8" r="4"/><circle cx="1624.6" cy="193.8" r="4"/><circle cx="1625.4" cy="199.1" r="4"/><circle cx="1627.9" cy="199.3" r="4"/><circle cx="1628.3" cy="200.4" r="4"/><circle cx="1624.9" cy="210.2" r="4"/><circle cx="1623.2" cy="197.0" r="4"/><circle cx="1623.6" cy="214.0" r="4"/><circle cx="1624.3" cy="217.5" r="4"/><circle cx="1643.9" cy="222.7" r="4"/><circle cx="1630.9" cy="220.1" r="4"/><circle cx="1617.8" cy="217.6" r="4"/><circle cx="1615.9" cy="212.4" r="4"/><circle cx="1609.3" cy="221.7" r="4"/><circle cx="1621.6" cy="228.7" r="4"/><circle cx="1625.7" cy="214.9" r="4"/><circle cx="1632.4" cy="227.0" r="4"/><circle cx="1629.7" cy="222.8" r="4"/><circle cx="1637.3" cy="221.5" r="4"/><circle cx="1649.7" cy="228.4" r="4"/><circle cx="1648.0" cy="228.6" r="4"/><circle cx="1653.5" cy="197.8" r="4"/><circle cx="1656.6" cy="201.6" r="4"/><circle cx="1654.9" cy="198.6" r="4"/><circle cx="1656.4" cy="199.8" r="4"/><circle cx="1652.0" cy="237.3" r="4"/><circle cx="1648.9" cy="239.0" r="4"/><circle cx="1623.9" cy="226.7" r="4"/><circle cx="1630.8" cy="234.6" r="4"/><circle cx="1595.2" cy="239.0" r="4"/><circle cx="1595.6" cy="239.1" r="4"/><circle cx="1605.8" cy="249.9" r="4"/><circle cx="1600.4" cy="247.5" r="4"/><circle cx="1633.9" cy="237.6" r="4"/><circle cx="1629.4" cy="236.5" r="4"/><circle cx="1653.2" cy="244.2" r="4"/><circle cx="1648.9" cy="238.0" r="4"/><circle cx="1586.5" cy="258.3" r="4"/><circle cx="1586.7" cy="257.4" r="4"/><circle cx="1598.8" cy="257.4" r="4"/><circle cx="1597.7" cy="253.6" r="4"/><circle cx="1611.8" cy="252.0" r="4"/><circle cx="1606.8" cy="254.9" r="4"/><circle cx="1627.4" cy="250.2" r="4"/><circle cx="1619.9" cy="258.0" r="4"/><circle cx="1634.6" cy="248.0" r="4"/><circle cx="1627.7" cy="254.2" r="4"/><circle cx="1635.4" cy="264.2" r="4"/><circle cx="1636.9" cy="256.5" r="4"/><circle cx="1652.7" cy="243.8" r="4"/><circle cx="1653.3" cy="247.8" r="4"/><circle cx="1545.7" cy="264.1" r="4"/><circle cx="1541.6" cy="255.8" r="4"/><circle cx="1554.9" cy="266.2" r="4"/><circle cx="1555.7" cy="264.3" r="4"/><circle cx="1571.6" cy="262.2" r="4"/><circle cx="1566.9" cy="260.2" r="4"/><circle cx="1548.0" cy="269.4" r="4"/><circle cx="1548.1" cy="268.9" r="4"/><circle cx="1568.2" cy="275.0" r="4"/><circle cx="1556.1" cy="273.0" r="4"/><circle cx="1527.5" cy="275.6" r="4"/><circle cx="1530.0" cy="275.3" r="4"/><circle cx="1537.8" cy="276.3" r="4"/><circle cx="1529.8" cy="277.8" r="4"/><circle cx="1521.6" cy="288.5" r="4"/><circle cx="1523.0" cy="281.6" r="4"/><circle cx="1545.9" cy="277.2" r="4"/><circle cx="1553.9" cy="279.5" r="4"/><circle cx="1573.9" cy="280.6" r="4"/><circle cx="1573.4" cy="279.3" r="4"/><circle cx="1579.8" cy="261.6" r="4"/><circle cx="1585.6" cy="266.1" r="4"/><circle cx="1585.5" cy="269.7" r="4"/><circle cx="1585.7" cy="269.8" r="4"/><circle cx="1591.1" cy="261.8" r="4"/><circle cx="1591.4" cy="259.0" r="4"/><circle cx="1581.2" cy="276.4" r="4"/><circle cx="1582.5" cy="271.0" r="4"/><circle cx="1583.7" cy="281.8" r="4"/><circle cx="1584.5" cy="273.7" r="4"/><circle cx="1586.7" cy="280.4" r="4"/><circle cx="1578.0" cy="281.5" r="4"/><circle cx="1595.9" cy="276.4" r="4"/><circle cx="1596.1" cy="285.3" r="4"/><circle cx="1593.4" cy="291.9" r="4"/><circle cx="1596.6" cy="281.9" r="4"/><circle cx="1610.4" cy="274.0" r="4"/><circle cx="1611.6" cy="273.8" r="4"/><circle cx="1606.2" cy="272.3" r="4"/><circle cx="1606.9" cy="265.0" r="4"/><circle cx="1628.5" cy="271.2" r="4"/><circle cx="1624.1" cy="264.3" r="4"/><circle cx="1629.7" cy="260.8" r="4"/><circle cx="1628.9" cy="260.6" r="4"/><circle cx="1635.7" cy="272.1" r="4"/><circle cx="1639.1" cy="269.8" r="4"/><circle cx="1654.6" cy="272.7" r="4"/><circle cx="1650.1" cy="272.9" r="4"/><circle cx="1654.4" cy="274.1" r="4"/><circle cx="1654.9" cy="272.7" r="4"/><circle cx="1625.7" cy="275.7" r="4"/><circle cx="1620.7" cy="285.3" r="4"/><circle cx="1623.7" cy="283.9" r="4"/><circle cx="1626.3" cy="279.7" r="4"/><circle cx="1641.7" cy="292.4" r="4"/><circle cx="1632.1" cy="290.3" r="4"/><circle cx="1641.3" cy="294.3" r="4"/><circle cx="1642.0" cy="293.4" r="4"/><circle cx="1603.3" cy="290.9" r="4"/><circle cx="1616.9" cy="284.5" r="4"/><circle cx="1621.2" cy="295.3" r="4"/><circle cx="1614.0" cy="297.5" r="4"/><circle cx="1591.6" cy="291.5" r="4"/><circle cx="1582.5" cy="290.0" r="4"/><circle cx="1581.0" cy="298.3" r="4"/><circle cx="1578.4" cy="303.3" r="4"/><circle cx="1584.2" cy="299.5" r="4"/><circle cx="1585.2" cy="296.2" r="4"/><circle cx="1616.0" cy="304.2" r="4"/><circle cx="1617.4" cy="307.6" r="4"/><circle cx="1653.6" cy="300.8" r="4"/><circle cx="1650.9" cy="298.7" r="4"/><circle cx="1519.5" cy="291.4" r="4"/><circle cx="1513.6" cy="295.5" r="4"/><circle cx="1526.0" cy="296.7" r="4"/><circle cx="1527.1" cy="306.4" r="4"/><circle cx="1509.9" cy="306.3" r="4"/><circle cx="1515.0" cy="295.3" r="4"/><circle cx="1507.4" cy="304.5" r="4"/><circle cx="1506.7" cy="304.1" r="4"/><circle cx="1504.1" cy="315.1" r="4"/><circle cx="1495.8" cy="320.1" r="4"/><circle cx="1531.4" cy="313.6" r="4"/><circle cx="1528.4" cy="305.2" r="4"/><circle cx="1531.6" cy="315.7" r="4"/><circle cx="1531.0" cy="315.5" r="4"/><circle cx="1550.9" cy="315.2" r="4"/><circle cx="1549.5" cy="315.0" r="4"/><circle cx="1559.1" cy="321.0" r="4"/><circle cx="1550.1" cy="313.8" r="4"/><circle cx="1559.5" cy="333.3" r="4"/><circle cx="1567.9" cy="323.9" r="4"/><circle cx="1570.8" cy="325.1" r="4"/><circle cx="1577.9" cy="323.9" r="4"/><circle cx="1579.6" cy="320.1" r="4"/><circle cx="1572.2" cy="324.4" r="4"/><circle cx="1576.4" cy="325.4" r="4"/><circle cx="1581.1" cy="322.6" r="4"/><circle cx="1595.8" cy="329.7" r="4"/><circle cx="1596.7" cy="330.9" r="4"/><circle cx="1596.9" cy="329.5" r="4"/><circle cx="1596.4" cy="330.9" r="4"/><circle cx="1496.0" cy="322.4" r="4"/><circle cx="1494.7" cy="322.9" r="4"/><circle cx="1615.1" cy="341.6" r="4"/><circle cx="1615.1" cy="342.0" r="4"/><circle cx="1622.9" cy="351.3" r="4"/><circle cx="1613.9" cy="350.1" r="4"/><circle cx="1611.5" cy="345.4" r="4"/><circle cx="1613.1" cy="345.0" r="4"/><circle cx="1620.8" cy="353.4" r="4"/><circle cx="1620.9" cy="351.8" r="4"/><circle cx="1580.4" cy="346.4" r="4"/><circle cx="1578.9" cy="346.3" r="4"/><circle cx="1577.9" cy="344.4" r="4"/><circle cx="1580.1" cy="344.2" r="4"/><circle cx="1560.6" cy="337.4" r="4"/><circle cx="1558.8" cy="333.1" r="4"/><circle cx="1535.2" cy="345.5" r="4"/><circle cx="1534.3" cy="343.7" r="4"/><circle cx="1520.6" cy="347.9" r="4"/><circle cx="1528.3" cy="348.2" r="4"/><circle cx="1529.2" cy="351.0" r="4"/><circle cx="1533.3" cy="347.1" r="4"/><circle cx="1514.6" cy="348.5" r="4"/><circle cx="1514.9" cy="350.7" r="4"/><circle cx="1513.3" cy="351.4" r="4"/><circle cx="1512.9" cy="351.5" r="4"/><circle cx="1532.4" cy="354.7" r="4"/><circle cx="1532.1" cy="356.4" r="4"/><circle cx="1573.5" cy="360.6" r="4"/><circle cx="1572.1" cy="362.7" r="4"/><circle cx="1577.6" cy="354.6" r="4"/><circle cx="1580.6" cy="353.4" r="4"/><circle cx="1623.8" cy="239.1" r="4"/><circle cx="1619.3" cy="249.2" r="4"/><circle cx="1577.6" cy="254.2" r="4"/><circle cx="1582.0" cy="252.0" r="4"/><circle cx="1586.8" cy="255.6" r="4"/><circle cx="1586.2" cy="261.9" r="4"/><circle cx="1586.2" cy="257.1" r="4"/><circle cx="1589.1" cy="251.8" r="4"/><circle cx="1603.8" cy="252.3" r="4"/><circle cx="1596.0" cy="252.3" r="4"/><circle cx="1609.3" cy="251.6" r="4"/><circle cx="1603.5" cy="257.5" r="4"/><circle cx="1603.2" cy="244.8" r="4"/><circle cx="1606.2" cy="252.6" r="4"/><circle cx="1611.8" cy="253.4" r="4"/><circle cx="1619.9" cy="253.3" r="4"/><circle cx="1632.0" cy="255.1" r="4"/><circle cx="1615.9" cy="251.9" r="4"/><circle cx="1628.1" cy="251.3" r="4"/><circle cx="1630.2" cy="250.9" r="4"/><circle cx="1585.2" cy="265.3" r="4"/><circle cx="1581.4" cy="257.8" r="4"/><circle cx="1588.6" cy="261.2" r="4"/><circle cx="1593.5" cy="255.4" r="4"/><circle cx="1603.8" cy="257.1" r="4"/><circle cx="1594.8" cy="262.3" r="4"/><circle cx="1601.2" cy="258.7" r="4"/><circle cx="1606.6" cy="256.7" r="4"/><circle cx="1611.6" cy="263.6" r="4"/><circle cx="1611.5" cy="254.9" r="4"/><circle cx="1608.2" cy="262.9" r="4"/><circle cx="1619.5" cy="262.7" r="4"/><circle cx="1621.2" cy="256.5" r="4"/><circle cx="1619.4" cy="252.8" r="4"/><circle cx="1624.3" cy="253.0" r="4"/><circle cx="1625.2" cy="259.2" r="4"/><circle cx="1634.9" cy="261.8" r="4"/><circle cx="1638.7" cy="258.5" r="4"/><circle cx="1589.4" cy="259.0" r="4"/><circle cx="1583.4" cy="261.3" r="4"/><circle cx="1595.2" cy="265.8" r="4"/><circle cx="1596.6" cy="261.2" r="4"/><circle cx="1603.0" cy="269.2" r="4"/><circle cx="1599.1" cy="261.2" r="4"/><circle cx="1604.2" cy="270.5" r="4"/><circle cx="1613.1" cy="275.8" r="4"/><circle cx="1619.5" cy="261.8" r="4"/><circle cx="1615.8" cy="269.6" r="4"/><circle cx="1621.3" cy="271.8" r="4"/><circle cx="1619.0" cy="269.6" r="4"/><circle cx="1637.8" cy="263.8" r="4"/><circle cx="1635.1" cy="267.0" r="4"/><circle cx="1636.5" cy="267.2" r="4"/><circle cx="1633.5" cy="267.9" r="4"/><circle cx="1588.7" cy="273.4" r="4"/><circle cx="1588.6" cy="264.7" r="4"/><circle cx="1595.7" cy="275.3" r="4"/><circle cx="1595.1" cy="271.5" r="4"/><circle cx="1592.0" cy="277.8" r="4"/><circle cx="1595.6" cy="267.9" r="4"/><circle cx="1593.9" cy="270.0" r="4"/><circle cx="1598.7" cy="272.1" r="4"/><circle cx="1612.2" cy="272.5" r="4"/><circle cx="1608.8" cy="271.6" r="4"/><circle cx="1617.1" cy="270.2" r="4"/><circle cx="1623.3" cy="272.8" r="4"/><circle cx="1628.2" cy="280.9" r="4"/><circle cx="1627.0" cy="279.4" r="4"/><circle cx="1633.6" cy="267.6" r="4"/><circle cx="1626.1" cy="271.1" r="4"/><circle cx="1583.0" cy="126.8" r="4"/><circle cx="1617.1" cy="126.8" r="4"/><circle cx="1635.0" cy="126.0" r="4"/><circle cx="1648.9" cy="128.5" r="4"/><circle cx="1581.3" cy="140.7" r="4"/><circle cx="1569.1" cy="147.2" r="4"/><circle cx="1595.2" cy="136.6" r="4"/><circle cx="1604.9" cy="139.9" r="4"/><circle cx="1610.6" cy="144.7" r="4"/><circle cx="1624.5" cy="150.4" r="4"/><circle cx="1642.3" cy="142.3" r="4"/><circle cx="1650.5" cy="144.7" r="4"/><circle cx="1580.5" cy="156.9" r="4"/><circle cx="1566.7" cy="161.0" r="4"/><circle cx="1548.8" cy="164.3" r="4"/><circle cx="1552.9" cy="170.8" r="4"/><circle cx="1565.1" cy="168.3" r="4"/><circle cx="1572.4" cy="174.0" r="4"/><circle cx="1590.3" cy="172.4" r="4"/><circle cx="1596.8" cy="153.7" r="4"/><circle cx="1604.9" cy="166.7" r="4"/><circle cx="1616.3" cy="156.1" r="4"/><circle cx="1631.8" cy="158.6" r="4"/><circle cx="1633.4" cy="167.5" r="4"/><circle cx="1622.8" cy="173.2" r="4"/><circle cx="1632.6" cy="176.5" r="4"/><circle cx="1644.0" cy="173.2" r="4"/><circle cx="1648.9" cy="163.4" r="4"/><circle cx="1657.8" cy="170.0" r="4"/><circle cx="1658.6" cy="123.6" r="4"/><circle cx="1596.0" cy="126.8" r="4"/><circle cx="1588.7" cy="148.8" r="4"/><circle cx="1600.0" cy="145.6" r="4"/><circle cx="1615.5" cy="135.8" r="4"/><circle cx="1626.9" cy="134.2" r="4"/><circle cx="1638.3" cy="134.2" r="4"/><circle cx="1656.2" cy="137.4" r="4"/><circle cx="1589.5" cy="163.4" r="4"/><circle cx="1597.6" cy="160.2" r="4"/><circle cx="1624.5" cy="162.6" r="4"/><circle cx="1612.2" cy="165.1" r="4"/><circle cx="1642.3" cy="155.3" r="4"/><circle cx="1556.9" cy="158.6" r="4"/><circle cx="1543.9" cy="157.8" r="4"/><circle cx="1542.3" cy="173.2" r="4"/><circle cx="1582.2" cy="176.5" r="4"/><circle cx="1652.9" cy="155.3" r="4"/><circle cx="1573.2" cy="127.7" r="4"/><circle cx="1548.8" cy="138.2" r="4"/><circle cx="1532.5" cy="148.8" r="4"/><circle cx="1521.1" cy="158.6" r="4"/><circle cx="1587.8" cy="130.6" r="4"/><circle cx="1588.7" cy="132.1" r="4"/><circle cx="1621.7" cy="130.7" r="4"/><circle cx="1618.0" cy="132.8" r="4"/><circle cx="1641.2" cy="125.0" r="4"/><circle cx="1633.4" cy="127.8" r="4"/><circle cx="1645.5" cy="130.4" r="4"/><circle cx="1645.8" cy="136.8" r="4"/><circle cx="1575.5" cy="144.5" r="4"/><circle cx="1575.4" cy="141.8" r="4"/><circle cx="1575.5" cy="152.9" r="4"/><circle cx="1576.5" cy="143.0" r="4"/><circle cx="1588.1" cy="130.2" r="4"/><circle cx="1588.9" cy="137.8" r="4"/><circle cx="1609.1" cy="141.3" r="4"/><circle cx="1606.5" cy="140.9" r="4"/><circle cx="1617.7" cy="146.7" r="4"/><circle cx="1607.5" cy="143.7" r="4"/><circle cx="1624.9" cy="156.1" r="4"/><circle cx="1628.0" cy="154.7" r="4"/><circle cx="1646.9" cy="144.5" r="4"/><circle cx="1647.7" cy="133.6" r="4"/><circle cx="1651.7" cy="150.3" r="4"/><circle cx="1647.2" cy="150.2" r="4"/><circle cx="1656.2" cy="140.3" r="4"/><circle cx="1659.1" cy="138.5" r="4"/><circle cx="1584.2" cy="158.6" r="4"/><circle cx="1582.5" cy="154.4" r="4"/><circle cx="1565.8" cy="157.4" r="4"/><circle cx="1561.4" cy="159.3" r="4"/><circle cx="1545.3" cy="161.3" r="4"/><circle cx="1544.3" cy="167.3" r="4"/><circle cx="1557.6" cy="169.7" r="4"/><circle cx="1553.5" cy="166.5" r="4"/><circle cx="1561.0" cy="164.1" r="4"/><circle cx="1565.3" cy="164.0" r="4"/><circle cx="1575.7" cy="173.2" r="4"/><circle cx="1575.9" cy="174.3" r="4"/><circle cx="1585.1" cy="175.8" r="4"/><circle cx="1594.3" cy="164.8" r="4"/><circle cx="1602.0" cy="160.4" r="4"/><circle cx="1600.0" cy="148.1" r="4"/><circle cx="1598.2" cy="167.5" r="4"/><circle cx="1599.0" cy="161.5" r="4"/><circle cx="1620.3" cy="153.7" r="4"/><circle cx="1611.5" cy="150.7" r="4"/><circle cx="1628.0" cy="156.0" r="4"/><circle cx="1635.8" cy="155.3" r="4"/><circle cx="1636.3" cy="161.3" r="4"/><circle cx="1626.7" cy="170.8" r="4"/><circle cx="1624.4" cy="168.3" r="4"/><circle cx="1625.3" cy="175.2" r="4"/><circle cx="1633.7" cy="173.9" r="4"/><circle cx="1637.7" cy="172.8" r="4"/><circle cx="1639.1" cy="168.2" r="4"/><circle cx="1647.6" cy="171.5" r="4"/><circle cx="1647.3" cy="165.5" r="4"/><circle cx="1653.0" cy="164.5" r="4"/><circle cx="1655.5" cy="164.3" r="4"/><circle cx="1656.2" cy="162.8" r="4"/><circle cx="1655.7" cy="132.0" r="4"/><circle cx="1659.3" cy="131.2" r="4"/><circle cx="1591.1" cy="128.6" r="4"/><circle cx="1599.5" cy="132.5" r="4"/><circle cx="1593.1" cy="147.8" r="4"/><circle cx="1593.7" cy="148.0" r="4"/><circle cx="1596.1" cy="140.9" r="4"/><circle cx="1599.7" cy="152.3" r="4"/><circle cx="1622.8" cy="134.8" r="4"/><circle cx="1610.9" cy="140.9" r="4"/><circle cx="1631.5" cy="129.9" r="4"/><circle cx="1629.7" cy="128.9" r="4"/><circle cx="1641.9" cy="138.8" r="4"/><circle cx="1629.8" cy="134.8" r="4"/><circle cx="1651.1" cy="140.5" r="4"/><circle cx="1582.9" cy="159.7" r="4"/><circle cx="1596.9" cy="165.6" r="4"/><circle cx="1594.1" cy="153.6" r="4"/><circle cx="1597.9" cy="156.7" r="4"/><circle cx="1627.8" cy="160.0" r="4"/><circle cx="1620.2" cy="160.0" r="4"/><circle cx="1604.9" cy="164.5" r="4"/><circle cx="1604.5" cy="164.4" r="4"/><circle cx="1638.7" cy="162.9" r="4"/><circle cx="1648.4" cy="157.1" r="4"/><circle cx="1561.4" cy="162.0" r="4"/><circle cx="1551.7" cy="162.0" r="4"/><circle cx="1546.6" cy="162.9" r="4"/><circle cx="1551.4" cy="157.1" r="4"/><circle cx="1548.0" cy="169.4" r="4"/><circle cx="1545.0" cy="170.1" r="4"/><circle cx="1584.9" cy="175.2" r="4"/><circle cx="1577.4" cy="176.9" r="4"/><circle cx="1653.3" cy="151.0" r="4"/><circle cx="1658.7" cy="158.0" r="4"/><circle cx="1576.0" cy="128.7" r="4"/><circle cx="1575.9" cy="126.7" r="4"/><circle cx="1536.6" cy="150.4" r="4"/><circle cx="1538.0" cy="151.1" r="4"/><circle cx="1524.0" cy="153.4" r="4"/><circle cx="1526.4" cy="154.8" r="4"/><circle cx="1666.2" cy="113.9" r="4"/><circle cx="1675.4" cy="120.1" r="4"/><circle cx="1684.7" cy="117.0" r="4"/><circle cx="1697.0" cy="118.5" r="4"/><circle cx="1664.6" cy="126.2" r="4"/><circle cx="1675.4" cy="135.5" r="4"/><circle cx="1666.2" cy="137.0" r="4"/><circle cx="1669.3" cy="146.3" r="4"/><circle cx="1697.0" cy="135.5" r="4"/><circle cx="1717.1" cy="104.6" r="4"/><circle cx="1758.7" cy="104.6" r="4"/><circle cx="1780.3" cy="106.2" r="4"/><circle cx="1798.8" cy="106.2" r="4"/><circle cx="1818.9" cy="109.3" r="4"/><circle cx="1826.6" cy="115.4" r="4"/><circle cx="1783.4" cy="118.5" r="4"/><circle cx="1800.4" cy="121.6" r="4"/><circle cx="1826.6" cy="129.3" r="4"/><circle cx="1737.1" cy="121.6" r="4"/><circle cx="1744.9" cy="133.9" r="4"/><circle cx="1731.0" cy="140.1" r="4"/><circle cx="1757.2" cy="140.1" r="4"/><circle cx="1764.9" cy="126.2" r="4"/><circle cx="1777.2" cy="138.6" r="4"/><circle cx="1798.8" cy="140.1" r="4"/><circle cx="1814.3" cy="138.6" r="4"/><circle cx="1735.6" cy="152.5" r="4"/><circle cx="1743.3" cy="161.7" r="4"/><circle cx="1769.5" cy="157.1" r="4"/><circle cx="1780.3" cy="158.6" r="4"/><circle cx="1817.4" cy="167.9" r="4"/><circle cx="1675.4" cy="157.1" r="4"/><circle cx="1672.3" cy="164.8" r="4"/><circle cx="1664.6" cy="163.3" r="4"/><circle cx="1693.9" cy="155.5" r="4"/><circle cx="1689.3" cy="167.9" r="4"/><circle cx="1697.0" cy="164.8" r="4"/><circle cx="1706.3" cy="171.0" r="4"/><circle cx="1721.7" cy="171.0" r="4"/><circle cx="1664.6" cy="180.2" r="4"/><circle cx="1683.1" cy="183.3" r="4"/><circle cx="1689.3" cy="177.1" r="4"/><circle cx="1695.5" cy="189.5" r="4"/><circle cx="1686.2" cy="194.1" r="4"/><circle cx="1703.2" cy="197.2" r="4"/><circle cx="1712.5" cy="200.3" r="4"/><circle cx="1723.3" cy="194.1" r="4"/><circle cx="1697.0" cy="204.9" r="4"/><circle cx="1712.5" cy="209.5" r="4"/><circle cx="1666.2" cy="195.6" r="4"/><circle cx="1661.5" cy="204.9" r="4"/><circle cx="1686.2" cy="214.2" r="4"/><circle cx="1697.0" cy="231.1" r="4"/><circle cx="1747.9" cy="180.2" r="4"/><circle cx="1751.0" cy="186.4" r="4"/><circle cx="1737.1" cy="192.6" r="4"/><circle cx="1746.4" cy="198.7" r="4"/><circle cx="1746.4" cy="208.0" r="4"/><circle cx="1737.1" cy="211.1" r="4"/><circle cx="1729.4" cy="217.2" r="4"/><circle cx="1720.2" cy="223.4" r="4"/><circle cx="1737.1" cy="223.4" r="4"/><circle cx="1752.6" cy="226.5" r="4"/><circle cx="1717.1" cy="229.6" r="4"/><circle cx="1766.4" cy="178.7" r="4"/><circle cx="1764.9" cy="191.0" r="4"/><circle cx="1775.7" cy="197.2" r="4"/><circle cx="1786.5" cy="204.9" r="4"/><circle cx="1761.8" cy="209.5" r="4"/><circle cx="1768.0" cy="218.8" r="4"/><circle cx="1781.9" cy="215.7" r="4"/><circle cx="1789.6" cy="208.0" r="4"/><circle cx="1798.8" cy="211.1" r="4"/><circle cx="1797.3" cy="221.9" r="4"/><circle cx="1805.0" cy="223.4" r="4"/><circle cx="1815.8" cy="223.4" r="4"/><circle cx="1823.5" cy="220.3" r="4"/><circle cx="1815.8" cy="208.0" r="4"/><circle cx="1823.5" cy="206.4" r="4"/><circle cx="1800.4" cy="174.1" r="4"/><circle cx="1798.8" cy="187.9" r="4"/><circle cx="1806.6" cy="192.6" r="4"/><circle cx="1801.9" cy="195.6" r="4"/><circle cx="1808.1" cy="186.4" r="4"/><circle cx="1766.4" cy="235.8" r="4"/><circle cx="1777.2" cy="228.0" r="4"/><circle cx="1783.4" cy="237.3" r="4"/><circle cx="1786.5" cy="249.6" r="4"/><circle cx="1798.8" cy="255.8" r="4"/><circle cx="1812.7" cy="241.9" r="4"/><circle cx="1681.6" cy="243.5" r="4"/><circle cx="1669.3" cy="251.2" r="4"/><circle cx="1677.0" cy="255.8" r="4"/><circle cx="1664.6" cy="266.6" r="4"/><circle cx="1673.9" cy="266.6" r="4"/><circle cx="1669.3" cy="274.3" r="4"/><circle cx="1683.1" cy="279.0" r="4"/><circle cx="1693.9" cy="279.0" r="4"/><circle cx="1701.7" cy="269.7" r="4"/><circle cx="1689.3" cy="285.1" r="4"/><circle cx="1678.5" cy="286.7" r="4"/><circle cx="1726.3" cy="280.5" r="4"/><circle cx="1732.5" cy="288.2" r="4"/><circle cx="1664.0" cy="121.0" r="4"/><circle cx="1670.6" cy="116.9" r="4"/><circle cx="1672.3" cy="119.0" r="4"/><circle cx="1670.8" cy="117.3" r="4"/><circle cx="1691.9" cy="116.9" r="4"/><circle cx="1682.1" cy="119.6" r="4"/><circle cx="1691.0" cy="115.7" r="4"/><circle cx="1690.2" cy="117.3" r="4"/><circle cx="1664.0" cy="118.6" r="4"/><circle cx="1670.5" cy="123.5" r="4"/><circle cx="1670.1" cy="137.8" r="4"/><circle cx="1676.6" cy="129.0" r="4"/><circle cx="1667.3" cy="141.0" r="4"/><circle cx="1669.5" cy="140.9" r="4"/><circle cx="1672.2" cy="153.0" r="4"/><circle cx="1672.9" cy="150.4" r="4"/><circle cx="1783.7" cy="114.0" r="4"/><circle cx="1782.7" cy="112.5" r="4"/><circle cx="1800.3" cy="118.1" r="4"/><circle cx="1801.0" cy="115.0" r="4"/><circle cx="1822.2" cy="113.1" r="4"/><circle cx="1821.6" cy="113.5" r="4"/><circle cx="1821.7" cy="111.1" r="4"/><circle cx="1823.4" cy="112.9" r="4"/><circle cx="1781.1" cy="112.5" r="4"/><circle cx="1780.8" cy="113.0" r="4"/><circle cx="1798.9" cy="112.4" r="4"/><circle cx="1797.5" cy="113.2" r="4"/><circle cx="1825.2" cy="120.9" r="4"/><circle cx="1826.9" cy="121.0" r="4"/><circle cx="1742.5" cy="127.7" r="4"/><circle cx="1741.8" cy="125.9" r="4"/><circle cx="1736.1" cy="137.9" r="4"/><circle cx="1749.4" cy="135.7" r="4"/><circle cx="1735.3" cy="137.0" r="4"/><circle cx="1734.0" cy="149.1" r="4"/><circle cx="1760.8" cy="132.3" r="4"/><circle cx="1761.5" cy="134.0" r="4"/><circle cx="1758.5" cy="134.4" r="4"/><circle cx="1763.0" cy="132.4" r="4"/><circle cx="1808.1" cy="138.4" r="4"/><circle cx="1806.7" cy="137.8" r="4"/><circle cx="1806.5" cy="140.3" r="4"/><circle cx="1806.5" cy="140.0" r="4"/><circle cx="1733.7" cy="147.5" r="4"/><circle cx="1730.8" cy="144.6" r="4"/><circle cx="1739.9" cy="157.1" r="4"/><circle cx="1738.3" cy="154.7" r="4"/><circle cx="1776.3" cy="156.5" r="4"/><circle cx="1773.7" cy="155.8" r="4"/><circle cx="1776.2" cy="158.3" r="4"/><circle cx="1774.9" cy="157.8" r="4"/><circle cx="1672.5" cy="162.0" r="4"/><circle cx="1673.7" cy="151.6" r="4"/><circle cx="1667.2" cy="163.0" r="4"/><circle cx="1668.1" cy="163.6" r="4"/><circle cx="1669.9" cy="160.6" r="4"/><circle cx="1668.8" cy="161.6" r="4"/><circle cx="1696.7" cy="158.0" r="4"/><circle cx="1690.8" cy="162.5" r="4"/><circle cx="1693.2" cy="167.2" r="4"/><circle cx="1691.6" cy="167.9" r="4"/><circle cx="1691.0" cy="165.2" r="4"/><circle cx="1701.1" cy="169.9" r="4"/><circle cx="1699.9" cy="167.6" r="4"/><circle cx="1714.8" cy="172.1" r="4"/><circle cx="1713.4" cy="170.7" r="4"/><circle cx="1714.3" cy="170.2" r="4"/><circle cx="1664.9" cy="187.3" r="4"/><circle cx="1663.9" cy="191.0" r="4"/><circle cx="1689.2" cy="186.0" r="4"/><circle cx="1683.4" cy="188.9" r="4"/><circle cx="1690.1" cy="181.5" r="4"/><circle cx="1688.8" cy="181.5" r="4"/><circle cx="1692.5" cy="181.1" r="4"/><circle cx="1687.7" cy="185.8" r="4"/><circle cx="1683.1" cy="189.3" r="4"/><circle cx="1692.2" cy="198.4" r="4"/><circle cx="1699.8" cy="202.7" r="4"/><circle cx="1709.7" cy="204.6" r="4"/><circle cx="1714.1" cy="205.6" r="4"/><circle cx="1707.0" cy="197.2" r="4"/><circle cx="1728.5" cy="191.6" r="4"/><circle cx="1720.1" cy="197.5" r="4"/><circle cx="1694.5" cy="198.8" r="4"/><circle cx="1695.4" cy="196.5" r="4"/><circle cx="1711.1" cy="203.6" r="4"/><circle cx="1717.8" cy="216.0" r="4"/><circle cx="1665.9" cy="189.4" r="4"/><circle cx="1663.9" cy="186.7" r="4"/><circle cx="1663.0" cy="202.7" r="4"/><circle cx="1665.2" cy="199.4" r="4"/><circle cx="1693.7" cy="209.0" r="4"/><circle cx="1689.7" cy="210.7" r="4"/><circle cx="1747.6" cy="182.6" r="4"/><circle cx="1750.5" cy="181.8" r="4"/><circle cx="1746.2" cy="187.2" r="4"/><circle cx="1750.5" cy="192.9" r="4"/><circle cx="1740.6" cy="195.9" r="4"/><circle cx="1740.3" cy="194.5" r="4"/><circle cx="1749.3" cy="194.8" r="4"/><circle cx="1744.4" cy="203.0" r="4"/><circle cx="1743.0" cy="209.8" r="4"/><circle cx="1755.1" cy="210.6" r="4"/><circle cx="1739.8" cy="209.0" r="4"/><circle cx="1742.9" cy="205.3" r="4"/><circle cx="1735.6" cy="212.9" r="4"/><circle cx="1725.8" cy="218.7" r="4"/><circle cx="1718.8" cy="224.6" r="4"/><circle cx="1718.8" cy="228.1" r="4"/><circle cx="1732.1" cy="220.4" r="4"/><circle cx="1739.0" cy="214.2" r="4"/><circle cx="1745.1" cy="223.9" r="4"/><circle cx="1746.6" cy="226.6" r="4"/><circle cx="1719.0" cy="227.6" r="4"/><circle cx="1717.1" cy="224.0" r="4"/><circle cx="1764.3" cy="187.5" r="4"/><circle cx="1765.7" cy="188.0" r="4"/><circle cx="1758.5" cy="187.7" r="4"/><circle cx="1767.0" cy="184.7" r="4"/><circle cx="1769.0" cy="193.1" r="4"/><circle cx="1778.9" cy="200.0" r="4"/><circle cx="1788.8" cy="205.3" r="4"/><circle cx="1794.0" cy="207.9" r="4"/><circle cx="1765.6" cy="213.1" r="4"/><circle cx="1764.2" cy="214.0" r="4"/><circle cx="1765.0" cy="214.4" r="4"/><circle cx="1773.8" cy="218.3" r="4"/><circle cx="1784.8" cy="211.2" r="4"/><circle cx="1785.8" cy="211.7" r="4"/><circle cx="1787.5" cy="207.7" r="4"/><circle cx="1784.1" cy="213.8" r="4"/><circle cx="1794.0" cy="207.3" r="4"/><circle cx="1792.6" cy="207.0" r="4"/><circle cx="1802.5" cy="222.4" r="4"/><circle cx="1795.8" cy="217.9" r="4"/><circle cx="1811.9" cy="225.3" r="4"/><circle cx="1799.6" cy="221.4" r="4"/><circle cx="1815.4" cy="217.3" r="4"/><circle cx="1814.0" cy="218.8" r="4"/><circle cx="1820.9" cy="220.4" r="4"/><circle cx="1824.3" cy="216.2" r="4"/><circle cx="1820.6" cy="212.8" r="4"/><circle cx="1821.7" cy="208.1" r="4"/><circle cx="1823.6" cy="209.4" r="4"/><circle cx="1822.3" cy="206.3" r="4"/><circle cx="1806.8" cy="183.1" r="4"/><circle cx="1798.5" cy="184.3" r="4"/><circle cx="1803.2" cy="191.5" r="4"/><circle cx="1803.1" cy="189.1" r="4"/><circle cx="1808.8" cy="188.4" r="4"/><circle cx="1805.2" cy="188.4" r="4"/><circle cx="1800.0" cy="191.8" r="4"/><circle cx="1801.3" cy="190.3" r="4"/><circle cx="1804.2" cy="188.0" r="4"/><circle cx="1805.9" cy="181.5" r="4"/><circle cx="1770.2" cy="234.4" r="4"/><circle cx="1768.8" cy="232.7" r="4"/><circle cx="1780.4" cy="233.6" r="4"/><circle cx="1778.1" cy="223.7" r="4"/><circle cx="1778.8" cy="233.8" r="4"/><circle cx="1784.6" cy="242.3" r="4"/><circle cx="1787.1" cy="244.0" r="4"/><circle cx="1783.4" cy="246.0" r="4"/><circle cx="1795.2" cy="255.1" r="4"/><circle cx="1793.9" cy="255.3" r="4"/><circle cx="1679.4" cy="249.8" r="4"/><circle cx="1679.6" cy="248.9" r="4"/><circle cx="1672.3" cy="253.2" r="4"/><circle cx="1674.3" cy="252.2" r="4"/><circle cx="1681.7" cy="246.2" r="4"/><circle cx="1680.8" cy="248.9" r="4"/><circle cx="1666.5" cy="270.3" r="4"/><circle cx="1667.9" cy="270.2" r="4"/><circle cx="1676.8" cy="271.1" r="4"/><circle cx="1675.7" cy="269.9" r="4"/><circle cx="1674.5" cy="278.0" r="4"/><circle cx="1674.4" cy="279.2" r="4"/><circle cx="1678.3" cy="273.7" r="4"/><circle cx="1688.3" cy="279.6" r="4"/><circle cx="1689.8" cy="277.3" r="4"/><circle cx="1695.6" cy="276.3" r="4"/><circle cx="1698.2" cy="273.0" r="4"/><circle cx="1696.9" cy="274.9" r="4"/><circle cx="1692.3" cy="280.0" r="4"/><circle cx="1692.8" cy="280.5" r="4"/><circle cx="1673.6" cy="280.1" r="4"/><circle cx="1682.4" cy="281.4" r="4"/><circle cx="1727.7" cy="285.3" r="4"/><circle cx="1730.9" cy="284.2" r="4"/><circle cx="1730.7" cy="284.9" r="4"/><circle cx="1729.3" cy="286.5" r="4"/><circle cx="1838.3" cy="111.4" r="4"/><circle cx="1852.9" cy="111.4" r="4"/><circle cx="1893.1" cy="111.4" r="4"/><circle cx="1904.0" cy="107.8" r="4"/><circle cx="1836.4" cy="142.5" r="4"/><circle cx="1854.7" cy="148.0" r="4"/><circle cx="1873.0" cy="146.2" r="4"/><circle cx="1885.8" cy="142.5" r="4"/><circle cx="1887.6" cy="148.0" r="4"/><circle cx="1909.5" cy="157.1" r="4"/><circle cx="1922.3" cy="162.6" r="4"/><circle cx="1940.6" cy="168.1" r="4"/><circle cx="1940.6" cy="173.6" r="4"/><circle cx="1847.4" cy="177.2" r="4"/><circle cx="1862.0" cy="177.2" r="4"/><circle cx="1883.9" cy="186.3" r="4"/><circle cx="1840.1" cy="194.6" r="4"/><circle cx="1865.7" cy="208.3" r="4"/><circle cx="1933.3" cy="201.0" r="4"/><circle cx="1836.4" cy="219.2" r="4"/><circle cx="1849.2" cy="221.1" r="4"/><circle cx="1852.9" cy="233.8" r="4"/><circle cx="1856.5" cy="235.7" r="4"/><circle cx="1867.5" cy="270.4" r="4"/><circle cx="1852.9" cy="283.2" r="4"/><circle cx="1862.0" cy="286.8" r="4"/><circle cx="1851.1" cy="290.5" r="4"/><circle cx="1832.8" cy="300.5" r="4"/><circle cx="1874.8" cy="301.4" r="4"/><circle cx="1966.1" cy="140.7" r="4"/><circle cx="1955.2" cy="175.4" r="4"/><circle cx="1946.1" cy="191.8" r="4"/><circle cx="1909.5" cy="228.4" r="4"/><circle cx="1900.4" cy="241.1" r="4"/><circle cx="1891.2" cy="259.4" r="4"/><circle cx="1882.1" cy="286.8" r="4"/><circle cx="1882.1" cy="305.1" r="4"/><circle cx="1731.9" cy="537.2" r="4"/><circle cx="1735.7" cy="529.8" r="4"/><circle cx="1739.0" cy="521.3" r="4"/><circle cx="1741.8" cy="516.2" r="4"/><circle cx="1747.2" cy="509.2" r="4"/><circle cx="1753.8" cy="507.2" r="4"/><circle cx="1761.5" cy="505.8" r="4"/><circle cx="1769.4" cy="506.8" r="4"/><circle cx="1776.0" cy="506.1" r="4"/><circle cx="1781.1" cy="499.8" r="4"/><circle cx="1784.9" cy="495.5" r="4"/><circle cx="1791.2" cy="489.5" r="4"/><circle cx="1793.8" cy="482.4" r="4"/><circle cx="1797.5" cy="473.3" r="4"/><circle cx="1801.5" cy="466.9" r="4"/><circle cx="1806.0" cy="458.0" r="4"/><circle cx="1872.0" cy="414.0" r="4"/><circle cx="1866.0" cy="436.0" r="4"/><circle cx="1861.0" cy="452.0" r="4"/><circle cx="1852.0" cy="484.0" r="4"/><circle cx="1846.0" cy="512.0" r="4"/><circle cx="1839.0" cy="527.0" r="4"/><circle cx="1440.0" cy="392.0" r="4"/><circle cx="1412.0" cy="414.0" r="4"/><circle cx="1398.0" cy="428.0" r="4"/><circle cx="1623.9" cy="500.4" r="4"/><circle cx="1635.7" cy="497.3" r="4"/><circle cx="1650.6" cy="499.8" r="4"/><circle cx="1663.9" cy="498.1" r="4"/><circle cx="1676.2" cy="496.3" r="4"/><circle cx="1691.3" cy="500.0" r="4"/><circle cx="1718.5" cy="501.0" r="4"/><circle cx="1625.1" cy="513.4" r="4"/><circle cx="1636.5" cy="512.2" r="4"/><circle cx="1653.5" cy="512.0" r="4"/><circle cx="1665.5" cy="513.1" r="4"/><circle cx="1676.9" cy="510.4" r="4"/><circle cx="1692.7" cy="512.6" r="4"/><circle cx="1706.0" cy="510.4" r="4"/><circle cx="1718.0" cy="514.6" r="4"/><circle cx="1621.8" cy="526.5" r="4"/><circle cx="1637.5" cy="526.8" r="4"/><circle cx="1650.1" cy="524.3" r="4"/><circle cx="1666.2" cy="527.2" r="4"/><circle cx="1679.5" cy="526.4" r="4"/><circle cx="1694.4" cy="527.8" r="4"/><circle cx="1704.7" cy="528.0" r="4"/><circle cx="1719.2" cy="525.5" r="4"/><circle cx="1622.9" cy="537.8" r="4"/><circle cx="1636.9" cy="541.7" r="4"/><circle cx="1649.8" cy="539.0" r="4"/><circle cx="1663.3" cy="537.4" r="4"/><circle cx="1677.3" cy="538.7" r="4"/><circle cx="1692.0" cy="538.7" r="4"/><circle cx="1707.1" cy="538.5" r="4"/><circle cx="1721.1" cy="539.2" r="4"/><circle cx="1733.0" cy="538.8" r="4"/><circle cx="1639.7" cy="551.3" r="4"/><circle cx="1652.9" cy="551.8" r="4"/><circle cx="1663.5" cy="552.2" r="4"/><circle cx="1679.3" cy="553.4" r="4"/><circle cx="1694.5" cy="551.9" r="4"/><circle cx="1707.2" cy="553.3" r="4"/><circle cx="1717.1" cy="554.0" r="4"/><circle cx="1680.5" cy="566.4" r="4"/><circle cx="1691.4" cy="566.9" r="4"/><circle cx="1727.8" cy="473.2" r="4"/><circle cx="1736.9" cy="472.4" r="4"/><circle cx="1755.5" cy="472.4" r="4"/><circle cx="1769.2" cy="473.9" r="4"/><circle cx="1779.5" cy="473.0" r="4"/><circle cx="1727.8" cy="489.1" r="4"/><circle cx="1740.6" cy="486.0" r="4"/><circle cx="1752.4" cy="486.6" r="4"/><circle cx="1765.9" cy="488.2" r="4"/><circle cx="1779.5" cy="485.1" r="4"/><circle cx="1728.1" cy="503.2" r="4"/><circle cx="1741.7" cy="502.4" r="4"/><circle cx="1750.8" cy="502.5" r="4"/><circle cx="1766.1" cy="501.3" r="4"/><circle cx="1727.9" cy="513.5" r="4"/><circle cx="1739.8" cy="516.4" r="4"/><circle cx="1752.5" cy="514.4" r="4"/><circle cx="1493.1" cy="200.3" r="4"/><circle cx="1494.2" cy="210.7" r="4"/><circle cx="1494.3" cy="221.2" r="4"/><circle cx="1492.3" cy="230.2" r="4"/><circle cx="1492.4" cy="239.8" r="4"/><circle cx="1491.9" cy="252.0" r="4"/><circle cx="1490.6" cy="264.2" r="4"/><circle cx="1490.8" cy="275.6" r="4"/><circle cx="1487.7" cy="289.5" r="4"/><circle cx="1483.0" cy="303.6" r="4"/><circle cx="1476.7" cy="312.5" r="4"/><circle cx="1466.9" cy="319.5" r="4"/><circle cx="1465.4" cy="332.2" r="4"/><circle cx="1462.0" cy="344.4" r="4"/><circle cx="1459.8" cy="354.7" r="4"/><circle cx="1457.0" cy="365.7" r="4"/><circle cx="1455.9" cy="374.9" r="4"/><circle cx="1451.5" cy="385.9" r="4"/><circle cx="1448.0" cy="395.0" r="4"/><circle cx="1501.1" cy="164.1" r="4"/><circle cx="1510.1" cy="151.6" r="4"/><circle cx="1519.7" cy="139.7" r="4"/><circle cx="1536.2" cy="132.7" r="4"/><circle cx="1550.0" cy="126.0" r="4"/></g></svg>
<svg width="1471" height="1131" viewBox="619 101 1471 1131" style="position:absolute;left:619px;top:101px">
<path d="M612.0,135.0 L619.0,139.0 L621.0,150.0 L623.0,165.0 L633.0,180.0 L643.0,192.0 L651.0,201.0 L665.0,218.0 L677.0,235.0 L695.0,260.0 L711.0,281.0 L716.0,300.0 L715.8,304.5 L719.4,330.0 L724.9,355.7 L745.0,372.0 L754.0,394.0 L765.0,397.7 L772.4,421.4 L794.3,432.4 L819.9,447.0 L867.4,450.6 L889.3,472.5 L918.5,479.8 L929.4,501.7 L947.7,527.3 L966.0,532.8 L1002.5,525.5 L1039.0,509.0 L1079.2,496.3 L1100.0,496.9 L1133.8,500.8 L1139.0,512.5 L1143.0,501.0 L1172.7,494.3 L1196.0,474.8 L1198.7,504.7 L1201.0,476.0 L1224.7,471.0 L1289.6,465.7 L1307.8,473.5 L1335.0,460.0 L1359.7,448.0 L1392.0,431.0 L1420.0,412.0 L1450.0,386.0 L1462.7,342.6 L1464.4,322.8 L1487.0,306.0 L1490.0,290.0 L1492.0,270.0 L1493.0,240.0 L1494.0,215.0 L1498.0,192.0 L1505.0,172.0 L1514.0,152.0 L1528.0,138.0 L1545.0,129.0 L1566.0,120.0 L1590.0,115.0 L1614.0,111.0 L1640.0,106.6 L1697.0,100.0" fill="none" stroke="#5ad3ea" stroke-width="4.6" stroke-linejoin="round" stroke-linecap="round"/>
<path d="M1966.0,95.0 L1971.6,122.4 L1980.8,120.6 L1986.2,131.5 L1980.8,146.2 L1971.6,159.0 L1962.5,177.2 L1951.5,191.8 L1938.7,210.0 L1918.6,226.5 L1902.2,246.6 L1889.4,268.5 L1885.8,286.8 L1889.4,305.0 L1890.0,322.0 L1884.7,330.0 L1871.5,321.0 L1864.0,335.5 L1851.0,344.3 L1857.0,356.0 L1861.3,366.0 L1890.5,353.0 L1893.4,367.7 L1867.0,379.4 L1858.4,391.0 L1860.0,404.0 L1884.7,391.0 L1874.4,407.0 L1868.6,426.0 L1864.0,460.0 L1858.6,470.0 L1851.4,485.7 L1848.0,510.7 L1840.7,525.0 L1833.6,535.7 L1828.2,516.0 L1815.7,509.0 L1805.0,500.0 L1812.0,485.7 L1815.7,467.9 L1808.6,453.6 L1790.7,489.3 L1776.4,505.4 L1746.0,509.0 L1733.6,535.7 L1715.7,569.6 L1702.0,585.0 L1684.0,570.5 L1665.7,574.0 L1662.0,597.0 L1421.0,594.0 L1415.7,670.7 L1358.6,672.5 L1367.0,680.0 L1386.8,694.3 L1404.6,715.7 L1422.5,724.6 L1444.0,731.8 L1456.4,744.3 L1461.8,760.4 L1465.4,776.4 L1485.0,785.4 L1497.5,792.5 L1490.4,814.0 L1486.8,835.4 L1315.7,833.2 L1300.0,855.0 L1287.0,874.3 L1270.0,902.0 L1250.0,940.0 L1264.0,962.0 L1266.8,967.7 L1258.0,976.4 L1253.0,990.0 L1256.0,1010.0 L1253.8,1028.0 L1248.0,1040.0 L1242.0,1043.0 L1197.7,993.6 L1167.4,959.0 L1120.0,916.0 L1072.4,872.7 L1025.0,833.9 L955.8,808.0 L895.4,801.5 L852.2,803.6 L822.0,825.2 L774.5,838.2 L748.5,846.8 L709.7,866.3 L683.8,863.2 L670.8,868.4 L645.0,859.8 L619.0,851.1" fill="none" stroke="#5ad3ea" stroke-width="4.6" stroke-linejoin="round" stroke-linecap="round"/>
<path d="M1981,212 L1985,219 L1970,245 L1951.5,263 L1942.4,259.4 L1942.4,244.8 L1953.4,224.7 L1966,217.4 Z" fill="#3f6f88" stroke="#5ad3ea" stroke-width="5" stroke-linejoin="round"/>
<path d="M1912,470 L1908,487 M1904,497 L1896,519" stroke="#5ad3ea" stroke-width="5" stroke-linecap="round" fill="none"/>
<path d="M1314,488 L1340,470 L1362,462 L1376,470 L1378,482 L1356,500 L1330,498 Z" fill="#fff" stroke="#5ad3ea" stroke-width="6.5" stroke-linejoin="round"/>
<path d="M1290,468 L1308,474 L1340,458 L1372,446" fill="none" stroke="#5ad3ea" stroke-width="6" stroke-linecap="round"/>
<path d="M870,790 L880,775 L895,770 L905,782 L912,790 L930,780 L936,792 L925,797 L900,795 Z" fill="none" stroke="#5ad3ea" stroke-width="4" stroke-linejoin="round"/>
<path d="M956,805 L958,790 L972,795 L995,810 L1010,815 L1028,822 L1033,833 L1015,832 L990,822 Z" fill="none" stroke="#5ad3ea" stroke-width="4" stroke-linejoin="round"/>
<path d="M1035,508 L1050,502 L1070,497 L1080,497 L1070,505 L1045,512 Z" fill="none" stroke="#5ad3ea" stroke-width="3.5" stroke-linejoin="round"/>
<path d="M775,423 L790,430 L812,443 L810,448 L790,440 Z" fill="none" stroke="#5ad3ea" stroke-width="3.5" stroke-linejoin="round"/>
</svg>
</body></html>
